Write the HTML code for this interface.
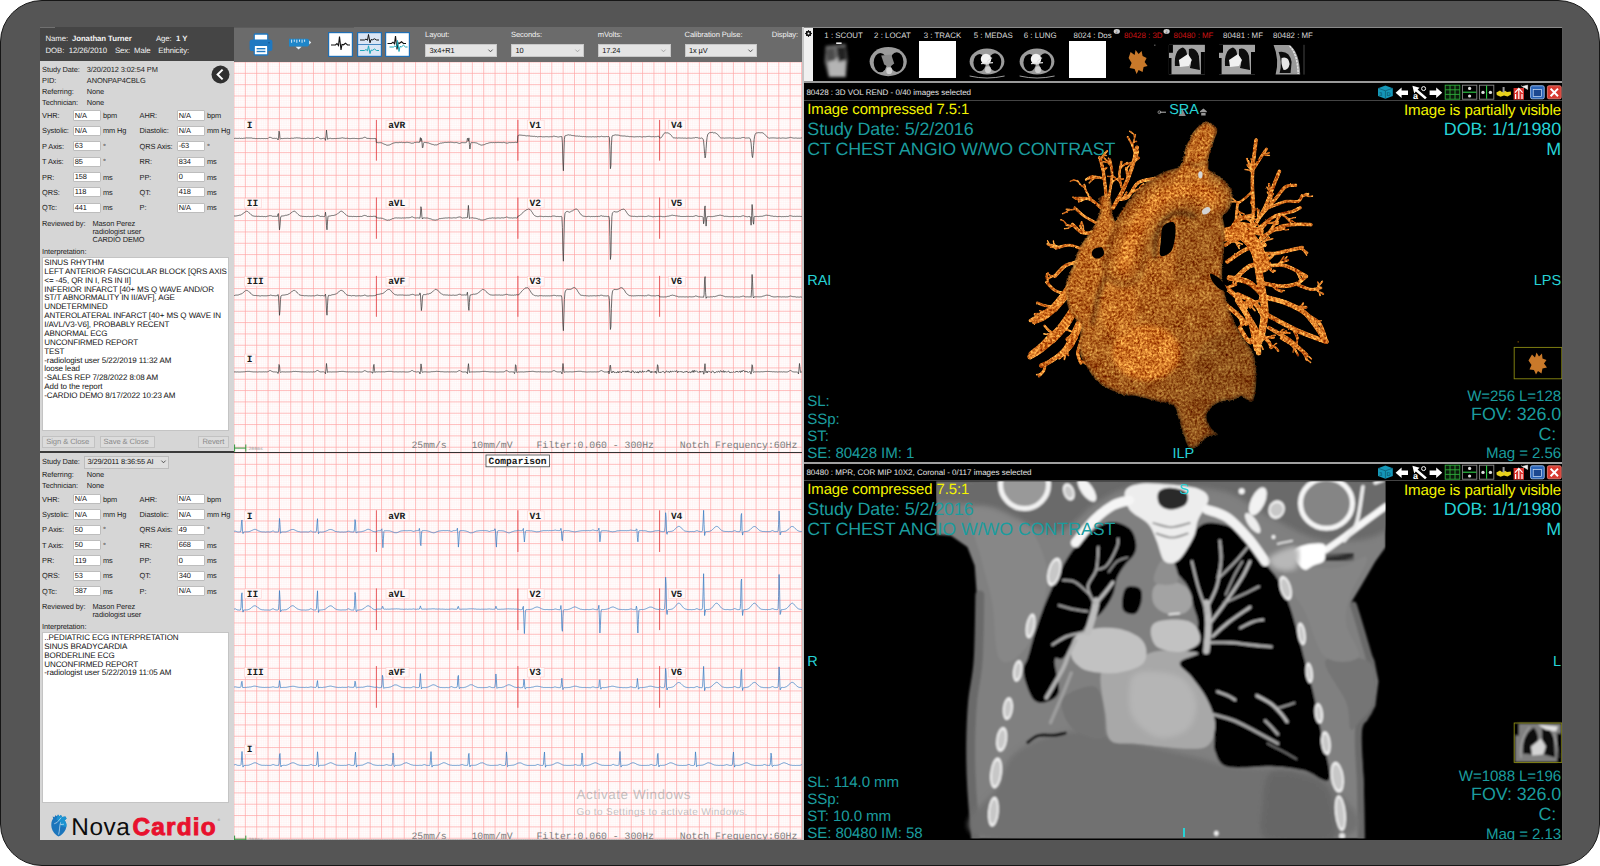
<!DOCTYPE html>
<html lang="en"><head><meta charset="utf-8"><title>NovaCardio ECG viewer</title><style>
html,body{margin:0;padding:0;background:#fff;text-rendering:geometricPrecision;}
body{width:1600px;height:866px;position:relative;overflow:hidden;font-family:"Liberation Sans",sans-serif;}
#frame{position:absolute;left:0;top:0;width:1600px;height:866px;box-sizing:border-box;background:#555;border:1px solid #161616;border-radius:42px;}
.a{position:absolute;}
.t{position:absolute;white-space:pre;line-height:1;font-family:"Liberation Sans",sans-serif;letter-spacing:-0.09px;}
.m{position:absolute;white-space:pre;line-height:1;font-family:"Liberation Mono",monospace;}
svg{display:block;overflow:visible}
svg.c{overflow:hidden}
</style></head><body>
<div id="frame"></div>
<!-- left -->
<div class="a" style="left:40.00px;top:27.00px;width:193.50px;height:34.30px;background:#454545"></div>
<div class="a" style="left:40.00px;top:26.60px;width:14.50px;height:1.00px;background:#707070"></div>
<span class="t" style="left:45.50px;top:35.20px;font-size:7.8px;color:#f4f4f4;">Name:</span>
<span class="t" style="left:72.00px;top:35.20px;font-size:7.8px;color:#f4f4f4;font-weight:bold;letter-spacing:-0.08px;">Jonathan Turner</span>
<span class="t" style="left:156.00px;top:35.20px;font-size:7.8px;color:#f4f4f4;">Age:</span>
<span class="t" style="left:176.00px;top:35.20px;font-size:7.8px;color:#f4f4f4;font-weight:bold;">1 Y</span>
<span class="t" style="left:45.50px;top:47.40px;font-size:7.8px;color:#f4f4f4;">DOB:</span>
<span class="t" style="left:68.80px;top:47.40px;font-size:7.8px;color:#f4f4f4;">12/26/2010</span>
<span class="t" style="left:114.90px;top:47.40px;font-size:7.8px;color:#f4f4f4;">Sex:</span>
<span class="t" style="left:134.00px;top:47.40px;font-size:7.8px;color:#f4f4f4;">Male</span>
<span class="t" style="left:158.30px;top:47.40px;font-size:7.8px;color:#f4f4f4;">Ethnicity:</span>
<div class="a" style="left:40.00px;top:61.30px;width:193.50px;height:778.70px;background:#d6d6d6"></div>
<span class="t" style="left:42.10px;top:65.74px;font-size:7.4px;color:#222;">Study Date:</span>
<span class="t" style="left:86.80px;top:65.74px;font-size:7.4px;color:#222;">3/20/2012 3:02:54 PM</span>
<span class="t" style="left:42.10px;top:76.64px;font-size:7.4px;color:#222;">PID:</span>
<span class="t" style="left:86.80px;top:76.64px;font-size:7.4px;color:#222;">ANONPAP4CBLG</span>
<span class="t" style="left:42.10px;top:87.74px;font-size:7.4px;color:#222;">Referring:</span>
<span class="t" style="left:86.80px;top:87.74px;font-size:7.4px;color:#222;">None</span>
<span class="t" style="left:42.10px;top:98.64px;font-size:7.4px;color:#222;">Technician:</span>
<span class="t" style="left:86.80px;top:98.64px;font-size:7.4px;color:#222;">None</span>
<svg class="a" style="left:211px;top:64.5px" width="19" height="19" viewBox="0 0 19 19"><circle cx="9.5" cy="9.5" r="9" fill="#303030"/><path d="M11.6 4.6 L6.6 9.5 L11.6 14.4" fill="none" stroke="#fff" stroke-width="2"/></svg>
<span class="t" style="left:42.10px;top:112.04px;font-size:7.4px;color:#222;">VHR:</span>
<div class="a" style="left:72.80px;top:110.40px;width:28.60px;height:10.20px;background:#fff;border:1px solid #bdbdbd;box-sizing:border-box;border-radius:1px"></div>
<span class="t" style="left:74.80px;top:111.54px;font-size:7.4px;color:#111;">N/A</span>
<span class="t" style="left:103.00px;top:112.04px;font-size:7.4px;color:#222;">bpm</span>
<span class="t" style="left:139.60px;top:112.04px;font-size:7.4px;color:#222;">AHR:</span>
<div class="a" style="left:176.70px;top:110.40px;width:28.40px;height:10.20px;background:#fff;border:1px solid #bdbdbd;box-sizing:border-box;border-radius:1px"></div>
<span class="t" style="left:178.70px;top:111.54px;font-size:7.4px;color:#111;">N/A</span>
<span class="t" style="left:207.00px;top:112.04px;font-size:7.4px;color:#222;">bpm</span>
<span class="t" style="left:42.10px;top:127.41px;font-size:7.4px;color:#222;">Systolic:</span>
<div class="a" style="left:72.80px;top:125.77px;width:28.60px;height:10.20px;background:#fff;border:1px solid #bdbdbd;box-sizing:border-box;border-radius:1px"></div>
<span class="t" style="left:74.80px;top:126.91px;font-size:7.4px;color:#111;">N/A</span>
<span class="t" style="left:103.00px;top:127.41px;font-size:7.4px;color:#222;">mm Hg</span>
<span class="t" style="left:139.60px;top:127.41px;font-size:7.4px;color:#222;">Diastolic:</span>
<div class="a" style="left:176.70px;top:125.77px;width:28.40px;height:10.20px;background:#fff;border:1px solid #bdbdbd;box-sizing:border-box;border-radius:1px"></div>
<span class="t" style="left:178.70px;top:126.91px;font-size:7.4px;color:#111;">N/A</span>
<span class="t" style="left:207.00px;top:127.41px;font-size:7.4px;color:#222;">mm Hg</span>
<span class="t" style="left:42.10px;top:142.78px;font-size:7.4px;color:#222;">P Axis:</span>
<div class="a" style="left:72.80px;top:141.14px;width:28.60px;height:10.20px;background:#fff;border:1px solid #bdbdbd;box-sizing:border-box;border-radius:1px"></div>
<span class="t" style="left:74.80px;top:142.28px;font-size:7.4px;color:#111;">63</span>
<span class="t" style="left:103.00px;top:142.78px;font-size:7.4px;color:#222;">°</span>
<span class="t" style="left:139.60px;top:142.78px;font-size:7.4px;color:#222;">QRS Axis:</span>
<div class="a" style="left:176.70px;top:141.14px;width:28.40px;height:10.20px;background:#fff;border:1px solid #bdbdbd;box-sizing:border-box;border-radius:1px"></div>
<span class="t" style="left:178.70px;top:142.28px;font-size:7.4px;color:#111;">-63</span>
<span class="t" style="left:207.00px;top:142.78px;font-size:7.4px;color:#222;">°</span>
<span class="t" style="left:42.10px;top:158.15px;font-size:7.4px;color:#222;">T Axis:</span>
<div class="a" style="left:72.80px;top:156.51px;width:28.60px;height:10.20px;background:#fff;border:1px solid #bdbdbd;box-sizing:border-box;border-radius:1px"></div>
<span class="t" style="left:74.80px;top:157.65px;font-size:7.4px;color:#111;">85</span>
<span class="t" style="left:103.00px;top:158.15px;font-size:7.4px;color:#222;">°</span>
<span class="t" style="left:139.60px;top:158.15px;font-size:7.4px;color:#222;">RR:</span>
<div class="a" style="left:176.70px;top:156.51px;width:28.40px;height:10.20px;background:#fff;border:1px solid #bdbdbd;box-sizing:border-box;border-radius:1px"></div>
<span class="t" style="left:178.70px;top:157.65px;font-size:7.4px;color:#111;">834</span>
<span class="t" style="left:207.00px;top:158.15px;font-size:7.4px;color:#222;">ms</span>
<span class="t" style="left:42.10px;top:173.52px;font-size:7.4px;color:#222;">PR:</span>
<div class="a" style="left:72.80px;top:171.88px;width:28.60px;height:10.20px;background:#fff;border:1px solid #bdbdbd;box-sizing:border-box;border-radius:1px"></div>
<span class="t" style="left:74.80px;top:173.02px;font-size:7.4px;color:#111;">158</span>
<span class="t" style="left:103.00px;top:173.52px;font-size:7.4px;color:#222;">ms</span>
<span class="t" style="left:139.60px;top:173.52px;font-size:7.4px;color:#222;">PP:</span>
<div class="a" style="left:176.70px;top:171.88px;width:28.40px;height:10.20px;background:#fff;border:1px solid #bdbdbd;box-sizing:border-box;border-radius:1px"></div>
<span class="t" style="left:178.70px;top:173.02px;font-size:7.4px;color:#111;">0</span>
<span class="t" style="left:207.00px;top:173.52px;font-size:7.4px;color:#222;">ms</span>
<span class="t" style="left:42.10px;top:188.89px;font-size:7.4px;color:#222;">QRS:</span>
<div class="a" style="left:72.80px;top:187.25px;width:28.60px;height:10.20px;background:#fff;border:1px solid #bdbdbd;box-sizing:border-box;border-radius:1px"></div>
<span class="t" style="left:74.80px;top:188.39px;font-size:7.4px;color:#111;">118</span>
<span class="t" style="left:103.00px;top:188.89px;font-size:7.4px;color:#222;">ms</span>
<span class="t" style="left:139.60px;top:188.89px;font-size:7.4px;color:#222;">QT:</span>
<div class="a" style="left:176.70px;top:187.25px;width:28.40px;height:10.20px;background:#fff;border:1px solid #bdbdbd;box-sizing:border-box;border-radius:1px"></div>
<span class="t" style="left:178.70px;top:188.39px;font-size:7.4px;color:#111;">418</span>
<span class="t" style="left:207.00px;top:188.89px;font-size:7.4px;color:#222;">ms</span>
<span class="t" style="left:42.10px;top:204.26px;font-size:7.4px;color:#222;">QTc:</span>
<div class="a" style="left:72.80px;top:202.62px;width:28.60px;height:10.20px;background:#fff;border:1px solid #bdbdbd;box-sizing:border-box;border-radius:1px"></div>
<span class="t" style="left:74.80px;top:203.76px;font-size:7.4px;color:#111;">441</span>
<span class="t" style="left:103.00px;top:204.26px;font-size:7.4px;color:#222;">ms</span>
<span class="t" style="left:139.60px;top:204.26px;font-size:7.4px;color:#222;">P:</span>
<div class="a" style="left:176.70px;top:202.62px;width:28.40px;height:10.20px;background:#fff;border:1px solid #bdbdbd;box-sizing:border-box;border-radius:1px"></div>
<span class="t" style="left:178.70px;top:203.76px;font-size:7.4px;color:#111;">N/A</span>
<span class="t" style="left:207.00px;top:204.26px;font-size:7.4px;color:#222;">ms</span>
<span class="t" style="left:42.10px;top:220.04px;font-size:7.4px;color:#222;">Reviewed by:</span>
<span class="t" style="left:92.50px;top:220.04px;font-size:7.4px;color:#222;">Mason Perez</span>
<span class="t" style="left:92.50px;top:227.94px;font-size:7.4px;color:#222;">radiologist user</span>
<span class="t" style="left:92.50px;top:235.84px;font-size:7.4px;color:#222;">CARDIO DEMO</span>
<span class="t" style="left:42.10px;top:247.74px;font-size:7.4px;color:#222;">Interpretation:</span>
<div class="a" style="left:42.40px;top:257.20px;width:186.80px;height:173.40px;background:#fff;border:1px solid #c4c4c4;box-sizing:border-box"></div>
<span class="t" style="left:44.30px;top:258.93px;font-size:8.0px;color:#111;">SINUS RHYTHM</span>
<span class="t" style="left:44.30px;top:267.81px;font-size:8.0px;color:#111;">LEFT ANTERIOR FASCICULAR BLOCK [QRS AXIS</span>
<span class="t" style="left:44.30px;top:276.69px;font-size:8.0px;color:#111;">&lt;= -45, QR IN I, RS IN II]</span>
<span class="t" style="left:44.30px;top:285.57px;font-size:8.0px;color:#111;">INFERIOR INFARCT [40+ MS Q WAVE AND/OR</span>
<span class="t" style="left:44.30px;top:294.45px;font-size:8.0px;color:#111;">ST/T ABNORMALITY IN II/AVF], AGE</span>
<span class="t" style="left:44.30px;top:303.33px;font-size:8.0px;color:#111;">UNDETERMINED</span>
<span class="t" style="left:44.30px;top:312.21px;font-size:8.0px;color:#111;">ANTEROLATERAL INFARCT [40+ MS Q WAVE IN</span>
<span class="t" style="left:44.30px;top:321.09px;font-size:8.0px;color:#111;">I/AVL/V3-V6], PROBABLY RECENT</span>
<span class="t" style="left:44.30px;top:329.97px;font-size:8.0px;color:#111;">ABNORMAL ECG</span>
<span class="t" style="left:44.30px;top:338.85px;font-size:8.0px;color:#111;">UNCONFIRMED REPORT</span>
<span class="t" style="left:44.30px;top:347.73px;font-size:8.0px;color:#111;">TEST</span>
<span class="t" style="left:44.30px;top:356.61px;font-size:8.0px;color:#111;">-radiologist user 5/22/2019 11:32 AM</span>
<span class="t" style="left:44.30px;top:365.49px;font-size:8.0px;color:#111;">loose lead</span>
<span class="t" style="left:44.30px;top:374.37px;font-size:8.0px;color:#111;">-SALES REP 7/28/2022 8:08 AM</span>
<span class="t" style="left:44.30px;top:383.25px;font-size:8.0px;color:#111;">Add to the report</span>
<span class="t" style="left:44.30px;top:392.13px;font-size:8.0px;color:#111;">-CARDIO DEMO 8/17/2022 10:23 AM</span>
<div class="a" style="left:42.40px;top:435.80px;width:52.80px;height:11.80px;background:#dcdcdc;border:1px solid #c2c2c2;box-sizing:border-box;"></div>
<span class="t" style="left:46.30px;top:437.87px;font-size:7.6px;color:#8a8a8a;">Sign &amp; Close</span>
<div class="a" style="left:99.50px;top:435.80px;width:55.60px;height:11.80px;background:#dcdcdc;border:1px solid #c2c2c2;box-sizing:border-box;"></div>
<span class="t" style="left:103.60px;top:437.87px;font-size:7.6px;color:#8a8a8a;">Save &amp; Close</span>
<div class="a" style="left:198.40px;top:435.80px;width:30.80px;height:11.80px;background:#dcdcdc;border:1px solid #c2c2c2;box-sizing:border-box;"></div>
<span class="t" style="left:202.40px;top:437.87px;font-size:7.6px;color:#8a8a8a;">Revert</span>
<div class="a" style="left:40.00px;top:451.30px;width:193.50px;height:1.80px;background:#3a3a3a"></div>
<span class="t" style="left:42.10px;top:457.74px;font-size:7.4px;color:#222;">Study Date:</span>
<div class="a" style="left:83.50px;top:455.80px;width:85.80px;height:12.90px;background:#dedede;border:1px solid #bcbcbc;box-sizing:border-box"></div>
<span class="t" style="left:87.60px;top:457.74px;font-size:7.4px;color:#111;">3/29/2011 8:36:55 AI</span>
<svg class="a" style="left:160.8px;top:460px" width="5" height="4" viewBox="0 0 5 4"><path d="M0.4 0.6 L2.5 2.8 L4.6 0.6" fill="none" stroke="#333" stroke-width="0.8"/></svg>
<span class="t" style="left:42.10px;top:470.94px;font-size:7.4px;color:#222;">Referring:</span>
<span class="t" style="left:86.80px;top:470.94px;font-size:7.4px;color:#222;">None</span>
<span class="t" style="left:42.10px;top:482.14px;font-size:7.4px;color:#222;">Technician:</span>
<span class="t" style="left:86.80px;top:482.14px;font-size:7.4px;color:#222;">None</span>
<span class="t" style="left:42.10px;top:495.64px;font-size:7.4px;color:#222;">VHR:</span>
<div class="a" style="left:72.80px;top:494.00px;width:28.60px;height:10.20px;background:#fff;border:1px solid #bdbdbd;box-sizing:border-box;border-radius:1px"></div>
<span class="t" style="left:74.80px;top:495.14px;font-size:7.4px;color:#111;">N/A</span>
<span class="t" style="left:103.00px;top:495.64px;font-size:7.4px;color:#222;">bpm</span>
<span class="t" style="left:139.60px;top:495.64px;font-size:7.4px;color:#222;">AHR:</span>
<div class="a" style="left:176.70px;top:494.00px;width:28.40px;height:10.20px;background:#fff;border:1px solid #bdbdbd;box-sizing:border-box;border-radius:1px"></div>
<span class="t" style="left:178.70px;top:495.14px;font-size:7.4px;color:#111;">N/A</span>
<span class="t" style="left:207.00px;top:495.64px;font-size:7.4px;color:#222;">bpm</span>
<span class="t" style="left:42.10px;top:511.01px;font-size:7.4px;color:#222;">Systolic:</span>
<div class="a" style="left:72.80px;top:509.37px;width:28.60px;height:10.20px;background:#fff;border:1px solid #bdbdbd;box-sizing:border-box;border-radius:1px"></div>
<span class="t" style="left:74.80px;top:510.51px;font-size:7.4px;color:#111;">N/A</span>
<span class="t" style="left:103.00px;top:511.01px;font-size:7.4px;color:#222;">mm Hg</span>
<span class="t" style="left:139.60px;top:511.01px;font-size:7.4px;color:#222;">Diastolic:</span>
<div class="a" style="left:176.70px;top:509.37px;width:28.40px;height:10.20px;background:#fff;border:1px solid #bdbdbd;box-sizing:border-box;border-radius:1px"></div>
<span class="t" style="left:178.70px;top:510.51px;font-size:7.4px;color:#111;">N/A</span>
<span class="t" style="left:207.00px;top:511.01px;font-size:7.4px;color:#222;">mm Hg</span>
<span class="t" style="left:42.10px;top:526.38px;font-size:7.4px;color:#222;">P Axis:</span>
<div class="a" style="left:72.80px;top:524.74px;width:28.60px;height:10.20px;background:#fff;border:1px solid #bdbdbd;box-sizing:border-box;border-radius:1px"></div>
<span class="t" style="left:74.80px;top:525.88px;font-size:7.4px;color:#111;">50</span>
<span class="t" style="left:103.00px;top:526.38px;font-size:7.4px;color:#222;">°</span>
<span class="t" style="left:139.60px;top:526.38px;font-size:7.4px;color:#222;">QRS Axis:</span>
<div class="a" style="left:176.70px;top:524.74px;width:28.40px;height:10.20px;background:#fff;border:1px solid #bdbdbd;box-sizing:border-box;border-radius:1px"></div>
<span class="t" style="left:178.70px;top:525.88px;font-size:7.4px;color:#111;">49</span>
<span class="t" style="left:207.00px;top:526.38px;font-size:7.4px;color:#222;">°</span>
<span class="t" style="left:42.10px;top:541.75px;font-size:7.4px;color:#222;">T Axis:</span>
<div class="a" style="left:72.80px;top:540.11px;width:28.60px;height:10.20px;background:#fff;border:1px solid #bdbdbd;box-sizing:border-box;border-radius:1px"></div>
<span class="t" style="left:74.80px;top:541.25px;font-size:7.4px;color:#111;">50</span>
<span class="t" style="left:103.00px;top:541.75px;font-size:7.4px;color:#222;">°</span>
<span class="t" style="left:139.60px;top:541.75px;font-size:7.4px;color:#222;">RR:</span>
<div class="a" style="left:176.70px;top:540.11px;width:28.40px;height:10.20px;background:#fff;border:1px solid #bdbdbd;box-sizing:border-box;border-radius:1px"></div>
<span class="t" style="left:178.70px;top:541.25px;font-size:7.4px;color:#111;">668</span>
<span class="t" style="left:207.00px;top:541.75px;font-size:7.4px;color:#222;">ms</span>
<span class="t" style="left:42.10px;top:557.12px;font-size:7.4px;color:#222;">PR:</span>
<div class="a" style="left:72.80px;top:555.48px;width:28.60px;height:10.20px;background:#fff;border:1px solid #bdbdbd;box-sizing:border-box;border-radius:1px"></div>
<span class="t" style="left:74.80px;top:556.62px;font-size:7.4px;color:#111;">119</span>
<span class="t" style="left:103.00px;top:557.12px;font-size:7.4px;color:#222;">ms</span>
<span class="t" style="left:139.60px;top:557.12px;font-size:7.4px;color:#222;">PP:</span>
<div class="a" style="left:176.70px;top:555.48px;width:28.40px;height:10.20px;background:#fff;border:1px solid #bdbdbd;box-sizing:border-box;border-radius:1px"></div>
<span class="t" style="left:178.70px;top:556.62px;font-size:7.4px;color:#111;">0</span>
<span class="t" style="left:207.00px;top:557.12px;font-size:7.4px;color:#222;">ms</span>
<span class="t" style="left:42.10px;top:572.49px;font-size:7.4px;color:#222;">QRS:</span>
<div class="a" style="left:72.80px;top:570.85px;width:28.60px;height:10.20px;background:#fff;border:1px solid #bdbdbd;box-sizing:border-box;border-radius:1px"></div>
<span class="t" style="left:74.80px;top:571.99px;font-size:7.4px;color:#111;">53</span>
<span class="t" style="left:103.00px;top:572.49px;font-size:7.4px;color:#222;">ms</span>
<span class="t" style="left:139.60px;top:572.49px;font-size:7.4px;color:#222;">QT:</span>
<div class="a" style="left:176.70px;top:570.85px;width:28.40px;height:10.20px;background:#fff;border:1px solid #bdbdbd;box-sizing:border-box;border-radius:1px"></div>
<span class="t" style="left:178.70px;top:571.99px;font-size:7.4px;color:#111;">340</span>
<span class="t" style="left:207.00px;top:572.49px;font-size:7.4px;color:#222;">ms</span>
<span class="t" style="left:42.10px;top:587.86px;font-size:7.4px;color:#222;">QTc:</span>
<div class="a" style="left:72.80px;top:586.22px;width:28.60px;height:10.20px;background:#fff;border:1px solid #bdbdbd;box-sizing:border-box;border-radius:1px"></div>
<span class="t" style="left:74.80px;top:587.36px;font-size:7.4px;color:#111;">387</span>
<span class="t" style="left:103.00px;top:587.86px;font-size:7.4px;color:#222;">ms</span>
<span class="t" style="left:139.60px;top:587.86px;font-size:7.4px;color:#222;">P:</span>
<div class="a" style="left:176.70px;top:586.22px;width:28.40px;height:10.20px;background:#fff;border:1px solid #bdbdbd;box-sizing:border-box;border-radius:1px"></div>
<span class="t" style="left:178.70px;top:587.36px;font-size:7.4px;color:#111;">N/A</span>
<span class="t" style="left:207.00px;top:587.86px;font-size:7.4px;color:#222;">ms</span>
<span class="t" style="left:42.10px;top:602.54px;font-size:7.4px;color:#222;">Reviewed by:</span>
<span class="t" style="left:92.50px;top:602.54px;font-size:7.4px;color:#222;">Mason Perez</span>
<span class="t" style="left:92.50px;top:610.84px;font-size:7.4px;color:#222;">radiologist user</span>
<span class="t" style="left:42.10px;top:622.54px;font-size:7.4px;color:#222;">Interpretation:</span>
<div class="a" style="left:42.40px;top:632.20px;width:186.80px;height:171.10px;background:#fff;border:1px solid #c4c4c4;box-sizing:border-box"></div>
<span class="t" style="left:44.30px;top:633.93px;font-size:8.0px;color:#111;">..PEDIATRIC ECG INTERPRETATION</span>
<span class="t" style="left:44.30px;top:642.81px;font-size:8.0px;color:#111;">SINUS BRADYCARDIA</span>
<span class="t" style="left:44.30px;top:651.69px;font-size:8.0px;color:#111;">BORDERLINE ECG</span>
<span class="t" style="left:44.30px;top:660.57px;font-size:8.0px;color:#111;">UNCONFIRMED REPORT</span>
<span class="t" style="left:44.30px;top:669.45px;font-size:8.0px;color:#111;">-radiologist user 5/22/2019 11:05 AM</span>
<svg class="a" style="left:50px;top:813px" width="18" height="25" viewBox="0 0 18 25"><path d="M5.2 2.2 L7 3.2 L8 1.6 L9.4 3.2 L11 2 L12 4 L15.4 3.6 L16.6 5.4 L14.6 7.6 C16.8 9.6 17 13.6 15.6 16.6 C14.2 19.8 11.4 22.6 8.4 23.6 C5.4 22 2.4 18.6 1.6 14.8 C0.8 11 1.6 7.4 3.2 5.6 L2.6 3.6 L4.6 4.2 Z" fill="#1b75bc"/><path d="M8 1.6 L9.4 3.2 L11 2 L12 4 L15.4 3.6 L16.6 5.4 L14.6 7.6 C16.6 9.6 16.8 12 16.2 14 L11.4 13 L9.6 8.4 L6.4 6.6 Z" fill="#1c93d1"/><path d="M11.2 4.6 L7.2 9.4 L4.2 10.8 M10.6 9.4 C9.4 13 9.8 17 8.6 21.6 M10.4 11.6 L14 11.2" stroke="#e9f3fa" stroke-width="0.6" fill="none"/></svg><span class="t" style="left:71.20px;top:816.05px;font-size:24.4px;color:#0c0c0c;letter-spacing:0.6px;">Nova</span><span class="t" style="left:132.40px;top:816.05px;font-size:24.4px;color:#e8112d;font-weight:bold;letter-spacing:1.2px;-webkit-text-stroke:0.9px #e8112d;">Cardio</span><span class="t" style="left:217.40px;top:819.04px;font-size:3.5px;color:#888;">®</span>
<!-- toolbar -->
<div class="a" style="left:233.50px;top:27.00px;width:568.00px;height:34.60px;background:#6b6b6b"></div>
<div class="a" style="left:233.50px;top:27.00px;width:120.00px;height:1.00px;background:#5c5c5c"></div>
<svg class="a" style="left:248.5px;top:32.5px" width="24" height="23" viewBox="0 0 24 23"><rect x="5.2" y="1" width="13.6" height="7" rx="1" fill="#fff" stroke="#1f78c1" stroke-width="1.3"/><rect x="0.6" y="6.6" width="22.8" height="11.4" rx="2.6" fill="#1f78c1"/><rect x="5.2" y="12.4" width="13.6" height="9.6" rx="1" fill="#fff" stroke="#1f78c1" stroke-width="1.3"/><rect x="7.6" y="15" width="8.8" height="1.4" fill="#1f78c1"/><rect x="7.6" y="17.8" width="8.8" height="1.4" fill="#1f78c1"/><circle cx="20" cy="9.8" r="0.7" fill="#0d4f86"/></svg>
<svg class="a" style="left:288px;top:38px" width="24" height="13" viewBox="0 0 24 13"><path d="M1 0.8 H19.6 L21.2 2 V7.2 L19.6 8.4 H1 Z" fill="#1f86c9"/><path d="M21.2 2.6 L23.2 4.6 L21.2 6.6 Z" fill="#e8f2fa"/><path d="M7.6 8.8 L10.6 11.6 L13.6 8.8 Z" fill="#e8f2fa"/><rect x="3.2" y="1.6" width="0.9" height="3.2" fill="#e8f2fa"/><rect x="5.8" y="1.6" width="0.9" height="2.2" fill="#e8f2fa"/><rect x="8.4" y="1.6" width="0.9" height="3.2" fill="#e8f2fa"/><rect x="11" y="1.6" width="0.9" height="2.2" fill="#e8f2fa"/><rect x="13.6" y="1.6" width="0.9" height="3.2" fill="#e8f2fa"/><rect x="16.2" y="1.6" width="0.9" height="2.2" fill="#e8f2fa"/></svg>
<svg class="a" style="left:327.6px;top:32px" width="25" height="25" viewBox="0 0 25 25"><rect x="0.6" y="0.6" width="23.8" height="23.8" fill="#fff" stroke="#1f6fb5" stroke-width="1.2"/><path d="M3 13 L7.5 13 L9 11.5 L10.5 13.5 L11.5 4.5 L13 18 L14 12.5 L15.5 12.8 L17.5 11.2 L19.5 13 L22 13" fill="none" stroke="#111" stroke-width="1.1"/></svg>
<svg class="a" style="left:356.8px;top:32px" width="25" height="25" viewBox="0 0 25 25"><rect x="0.6" y="0.6" width="23.8" height="23.8" fill="#dbe6f5" stroke="#1f6fb5" stroke-width="1.2"/><line x1="1" y1="12.5" x2="24" y2="12.5" stroke="#1f6fb5" stroke-width="0.8"/><path d="M3 8 L7.5 8 L9 7 L10.5 8.3 L11.5 2.5 L13 10.8 L14 7.6 L15.5 7.8 L17.5 6.8 L19.5 8 L22 8" fill="none" stroke="#111" stroke-width="1"/><path d="M3 18.5 L7.5 18.5 L9 17.5 L10.5 18.8 L11.5 13.8 L13 21.6 L14 18.1 L15.5 18.3 L17.5 17 L19.5 18.5 L22 18.5" fill="none" stroke="#1aa7b8" stroke-width="1"/></svg>
<svg class="a" style="left:385.4px;top:32px" width="25" height="25" viewBox="0 0 25 25"><rect x="0.6" y="0.6" width="23.8" height="23.8" fill="#fff" stroke="#1f6fb5" stroke-width="1.2"/><path d="M2.5 11.5 L6.5 11.5 L8 10.2 L9.5 11.8 L10.5 4 L12 17.5 L13 11 L14.5 11.3 L16.5 9.8 L18.5 11.5 L21 11.5" fill="none" stroke="#111" stroke-width="1.1"/><path d="M4.5 15 L8.5 15 L10 13.8 L11.5 15.3 L12.5 8.5 L14 19.5 L15 14.5 L16.5 14.8 L18.5 13.2 L20.5 15 L22.5 15" fill="none" stroke="#1aa7b8" stroke-width="1"/></svg>
<span class="t" style="left:425.00px;top:31.17px;font-size:7.6px;color:#f2f2f2;">Layout:</span>
<div class="a" style="left:425.00px;top:44.40px;width:72.00px;height:12.70px;background:#e4e4e4;border:1px solid #c8c8c8;box-sizing:border-box"></div>
<span class="t" style="left:429.50px;top:46.64px;font-size:7.4px;color:#111;">3x4+R1</span>
<svg class="a" style="left:487.5px;top:48.8px" width="5" height="4" viewBox="0 0 5 4"><path d="M0.4 0.6 L2.5 2.8 L4.6 0.6" fill="none" stroke="#333" stroke-width="0.8"/></svg>
<span class="t" style="left:511.00px;top:31.17px;font-size:7.6px;color:#f2f2f2;">Seconds:</span>
<div class="a" style="left:511.00px;top:44.40px;width:73.00px;height:12.70px;background:#e4e4e4;border:1px solid #c8c8c8;box-sizing:border-box"></div>
<span class="t" style="left:515.50px;top:46.64px;font-size:7.4px;color:#111;">10</span>
<svg class="a" style="left:574.5px;top:48.8px" width="5" height="4" viewBox="0 0 5 4"><path d="M0.4 0.6 L2.5 2.8 L4.6 0.6" fill="none" stroke="#999" stroke-width="0.8"/></svg>
<span class="t" style="left:597.70px;top:31.17px;font-size:7.6px;color:#f2f2f2;">mVolts:</span>
<div class="a" style="left:597.70px;top:44.40px;width:73.00px;height:12.70px;background:#e4e4e4;border:1px solid #c8c8c8;box-sizing:border-box"></div>
<span class="t" style="left:602.20px;top:46.64px;font-size:7.4px;color:#111;">17.24</span>
<svg class="a" style="left:661.2px;top:48.8px" width="5" height="4" viewBox="0 0 5 4"><path d="M0.4 0.6 L2.5 2.8 L4.6 0.6" fill="none" stroke="#999" stroke-width="0.8"/></svg>
<span class="t" style="left:684.50px;top:31.17px;font-size:7.6px;color:#f2f2f2;">Calibration Pulse:</span>
<div class="a" style="left:684.50px;top:44.40px;width:72.50px;height:12.70px;background:#e4e4e4;border:1px solid #c8c8c8;box-sizing:border-box"></div>
<span class="t" style="left:689.00px;top:46.64px;font-size:7.4px;color:#111;">1x µV</span>
<svg class="a" style="left:747.5px;top:48.8px" width="5" height="4" viewBox="0 0 5 4"><path d="M0.4 0.6 L2.5 2.8 L4.6 0.6" fill="none" stroke="#333" stroke-width="0.8"/></svg>
<span class="t" style="left:771.80px;top:31.17px;font-size:7.6px;color:#f2f2f2;">Display:</span>
<!-- ecg -->
<svg class="a c" style="left:233.6px;top:61.5px" width="568.6" height="390.3" viewBox="0 0 568.6 390.3"><rect x="0" y="0" width="568.6" height="390.3" fill="#fffdfd"/><line x1="2.27" y1="0" x2="2.27" y2="390.3" stroke="#ffeaea" stroke-width="0.3"/><line x1="4.54" y1="0" x2="4.54" y2="390.3" stroke="#ffeaea" stroke-width="0.3"/><line x1="6.81" y1="0" x2="6.81" y2="390.3" stroke="#ffeaea" stroke-width="0.3"/><line x1="9.08" y1="0" x2="9.08" y2="390.3" stroke="#ffeaea" stroke-width="0.3"/><line x1="13.62" y1="0" x2="13.62" y2="390.3" stroke="#ffeaea" stroke-width="0.3"/><line x1="15.89" y1="0" x2="15.89" y2="390.3" stroke="#ffeaea" stroke-width="0.3"/><line x1="18.16" y1="0" x2="18.16" y2="390.3" stroke="#ffeaea" stroke-width="0.3"/><line x1="20.43" y1="0" x2="20.43" y2="390.3" stroke="#ffeaea" stroke-width="0.3"/><line x1="24.97" y1="0" x2="24.97" y2="390.3" stroke="#ffeaea" stroke-width="0.3"/><line x1="27.24" y1="0" x2="27.24" y2="390.3" stroke="#ffeaea" stroke-width="0.3"/><line x1="29.51" y1="0" x2="29.51" y2="390.3" stroke="#ffeaea" stroke-width="0.3"/><line x1="31.78" y1="0" x2="31.78" y2="390.3" stroke="#ffeaea" stroke-width="0.3"/><line x1="36.32" y1="0" x2="36.32" y2="390.3" stroke="#ffeaea" stroke-width="0.3"/><line x1="38.59" y1="0" x2="38.59" y2="390.3" stroke="#ffeaea" stroke-width="0.3"/><line x1="40.86" y1="0" x2="40.86" y2="390.3" stroke="#ffeaea" stroke-width="0.3"/><line x1="43.13" y1="0" x2="43.13" y2="390.3" stroke="#ffeaea" stroke-width="0.3"/><line x1="47.67" y1="0" x2="47.67" y2="390.3" stroke="#ffeaea" stroke-width="0.3"/><line x1="49.94" y1="0" x2="49.94" y2="390.3" stroke="#ffeaea" stroke-width="0.3"/><line x1="52.21" y1="0" x2="52.21" y2="390.3" stroke="#ffeaea" stroke-width="0.3"/><line x1="54.48" y1="0" x2="54.48" y2="390.3" stroke="#ffeaea" stroke-width="0.3"/><line x1="59.02" y1="0" x2="59.02" y2="390.3" stroke="#ffeaea" stroke-width="0.3"/><line x1="61.29" y1="0" x2="61.29" y2="390.3" stroke="#ffeaea" stroke-width="0.3"/><line x1="63.56" y1="0" x2="63.56" y2="390.3" stroke="#ffeaea" stroke-width="0.3"/><line x1="65.83" y1="0" x2="65.83" y2="390.3" stroke="#ffeaea" stroke-width="0.3"/><line x1="70.37" y1="0" x2="70.37" y2="390.3" stroke="#ffeaea" stroke-width="0.3"/><line x1="72.64" y1="0" x2="72.64" y2="390.3" stroke="#ffeaea" stroke-width="0.3"/><line x1="74.91" y1="0" x2="74.91" y2="390.3" stroke="#ffeaea" stroke-width="0.3"/><line x1="77.18" y1="0" x2="77.18" y2="390.3" stroke="#ffeaea" stroke-width="0.3"/><line x1="81.72" y1="0" x2="81.72" y2="390.3" stroke="#ffeaea" stroke-width="0.3"/><line x1="83.99" y1="0" x2="83.99" y2="390.3" stroke="#ffeaea" stroke-width="0.3"/><line x1="86.26" y1="0" x2="86.26" y2="390.3" stroke="#ffeaea" stroke-width="0.3"/><line x1="88.53" y1="0" x2="88.53" y2="390.3" stroke="#ffeaea" stroke-width="0.3"/><line x1="93.07" y1="0" x2="93.07" y2="390.3" stroke="#ffeaea" stroke-width="0.3"/><line x1="95.34" y1="0" x2="95.34" y2="390.3" stroke="#ffeaea" stroke-width="0.3"/><line x1="97.61" y1="0" x2="97.61" y2="390.3" stroke="#ffeaea" stroke-width="0.3"/><line x1="99.88" y1="0" x2="99.88" y2="390.3" stroke="#ffeaea" stroke-width="0.3"/><line x1="104.42" y1="0" x2="104.42" y2="390.3" stroke="#ffeaea" stroke-width="0.3"/><line x1="106.69" y1="0" x2="106.69" y2="390.3" stroke="#ffeaea" stroke-width="0.3"/><line x1="108.96" y1="0" x2="108.96" y2="390.3" stroke="#ffeaea" stroke-width="0.3"/><line x1="111.23" y1="0" x2="111.23" y2="390.3" stroke="#ffeaea" stroke-width="0.3"/><line x1="115.77" y1="0" x2="115.77" y2="390.3" stroke="#ffeaea" stroke-width="0.3"/><line x1="118.04" y1="0" x2="118.04" y2="390.3" stroke="#ffeaea" stroke-width="0.3"/><line x1="120.31" y1="0" x2="120.31" y2="390.3" stroke="#ffeaea" stroke-width="0.3"/><line x1="122.58" y1="0" x2="122.58" y2="390.3" stroke="#ffeaea" stroke-width="0.3"/><line x1="127.12" y1="0" x2="127.12" y2="390.3" stroke="#ffeaea" stroke-width="0.3"/><line x1="129.39" y1="0" x2="129.39" y2="390.3" stroke="#ffeaea" stroke-width="0.3"/><line x1="131.66" y1="0" x2="131.66" y2="390.3" stroke="#ffeaea" stroke-width="0.3"/><line x1="133.93" y1="0" x2="133.93" y2="390.3" stroke="#ffeaea" stroke-width="0.3"/><line x1="138.47" y1="0" x2="138.47" y2="390.3" stroke="#ffeaea" stroke-width="0.3"/><line x1="140.74" y1="0" x2="140.74" y2="390.3" stroke="#ffeaea" stroke-width="0.3"/><line x1="143.01" y1="0" x2="143.01" y2="390.3" stroke="#ffeaea" stroke-width="0.3"/><line x1="145.28" y1="0" x2="145.28" y2="390.3" stroke="#ffeaea" stroke-width="0.3"/><line x1="149.82" y1="0" x2="149.82" y2="390.3" stroke="#ffeaea" stroke-width="0.3"/><line x1="152.09" y1="0" x2="152.09" y2="390.3" stroke="#ffeaea" stroke-width="0.3"/><line x1="154.36" y1="0" x2="154.36" y2="390.3" stroke="#ffeaea" stroke-width="0.3"/><line x1="156.63" y1="0" x2="156.63" y2="390.3" stroke="#ffeaea" stroke-width="0.3"/><line x1="161.17" y1="0" x2="161.17" y2="390.3" stroke="#ffeaea" stroke-width="0.3"/><line x1="163.44" y1="0" x2="163.44" y2="390.3" stroke="#ffeaea" stroke-width="0.3"/><line x1="165.71" y1="0" x2="165.71" y2="390.3" stroke="#ffeaea" stroke-width="0.3"/><line x1="167.98" y1="0" x2="167.98" y2="390.3" stroke="#ffeaea" stroke-width="0.3"/><line x1="172.52" y1="0" x2="172.52" y2="390.3" stroke="#ffeaea" stroke-width="0.3"/><line x1="174.79" y1="0" x2="174.79" y2="390.3" stroke="#ffeaea" stroke-width="0.3"/><line x1="177.06" y1="0" x2="177.06" y2="390.3" stroke="#ffeaea" stroke-width="0.3"/><line x1="179.33" y1="0" x2="179.33" y2="390.3" stroke="#ffeaea" stroke-width="0.3"/><line x1="183.87" y1="0" x2="183.87" y2="390.3" stroke="#ffeaea" stroke-width="0.3"/><line x1="186.14" y1="0" x2="186.14" y2="390.3" stroke="#ffeaea" stroke-width="0.3"/><line x1="188.41" y1="0" x2="188.41" y2="390.3" stroke="#ffeaea" stroke-width="0.3"/><line x1="190.68" y1="0" x2="190.68" y2="390.3" stroke="#ffeaea" stroke-width="0.3"/><line x1="195.22" y1="0" x2="195.22" y2="390.3" stroke="#ffeaea" stroke-width="0.3"/><line x1="197.49" y1="0" x2="197.49" y2="390.3" stroke="#ffeaea" stroke-width="0.3"/><line x1="199.76" y1="0" x2="199.76" y2="390.3" stroke="#ffeaea" stroke-width="0.3"/><line x1="202.03" y1="0" x2="202.03" y2="390.3" stroke="#ffeaea" stroke-width="0.3"/><line x1="206.57" y1="0" x2="206.57" y2="390.3" stroke="#ffeaea" stroke-width="0.3"/><line x1="208.84" y1="0" x2="208.84" y2="390.3" stroke="#ffeaea" stroke-width="0.3"/><line x1="211.11" y1="0" x2="211.11" y2="390.3" stroke="#ffeaea" stroke-width="0.3"/><line x1="213.38" y1="0" x2="213.38" y2="390.3" stroke="#ffeaea" stroke-width="0.3"/><line x1="217.92" y1="0" x2="217.92" y2="390.3" stroke="#ffeaea" stroke-width="0.3"/><line x1="220.19" y1="0" x2="220.19" y2="390.3" stroke="#ffeaea" stroke-width="0.3"/><line x1="222.46" y1="0" x2="222.46" y2="390.3" stroke="#ffeaea" stroke-width="0.3"/><line x1="224.73" y1="0" x2="224.73" y2="390.3" stroke="#ffeaea" stroke-width="0.3"/><line x1="229.27" y1="0" x2="229.27" y2="390.3" stroke="#ffeaea" stroke-width="0.3"/><line x1="231.54" y1="0" x2="231.54" y2="390.3" stroke="#ffeaea" stroke-width="0.3"/><line x1="233.81" y1="0" x2="233.81" y2="390.3" stroke="#ffeaea" stroke-width="0.3"/><line x1="236.08" y1="0" x2="236.08" y2="390.3" stroke="#ffeaea" stroke-width="0.3"/><line x1="240.62" y1="0" x2="240.62" y2="390.3" stroke="#ffeaea" stroke-width="0.3"/><line x1="242.89" y1="0" x2="242.89" y2="390.3" stroke="#ffeaea" stroke-width="0.3"/><line x1="245.16" y1="0" x2="245.16" y2="390.3" stroke="#ffeaea" stroke-width="0.3"/><line x1="247.43" y1="0" x2="247.43" y2="390.3" stroke="#ffeaea" stroke-width="0.3"/><line x1="251.97" y1="0" x2="251.97" y2="390.3" stroke="#ffeaea" stroke-width="0.3"/><line x1="254.24" y1="0" x2="254.24" y2="390.3" stroke="#ffeaea" stroke-width="0.3"/><line x1="256.51" y1="0" x2="256.51" y2="390.3" stroke="#ffeaea" stroke-width="0.3"/><line x1="258.78" y1="0" x2="258.78" y2="390.3" stroke="#ffeaea" stroke-width="0.3"/><line x1="263.32" y1="0" x2="263.32" y2="390.3" stroke="#ffeaea" stroke-width="0.3"/><line x1="265.59" y1="0" x2="265.59" y2="390.3" stroke="#ffeaea" stroke-width="0.3"/><line x1="267.86" y1="0" x2="267.86" y2="390.3" stroke="#ffeaea" stroke-width="0.3"/><line x1="270.13" y1="0" x2="270.13" y2="390.3" stroke="#ffeaea" stroke-width="0.3"/><line x1="274.67" y1="0" x2="274.67" y2="390.3" stroke="#ffeaea" stroke-width="0.3"/><line x1="276.94" y1="0" x2="276.94" y2="390.3" stroke="#ffeaea" stroke-width="0.3"/><line x1="279.21" y1="0" x2="279.21" y2="390.3" stroke="#ffeaea" stroke-width="0.3"/><line x1="281.48" y1="0" x2="281.48" y2="390.3" stroke="#ffeaea" stroke-width="0.3"/><line x1="286.02" y1="0" x2="286.02" y2="390.3" stroke="#ffeaea" stroke-width="0.3"/><line x1="288.29" y1="0" x2="288.29" y2="390.3" stroke="#ffeaea" stroke-width="0.3"/><line x1="290.56" y1="0" x2="290.56" y2="390.3" stroke="#ffeaea" stroke-width="0.3"/><line x1="292.83" y1="0" x2="292.83" y2="390.3" stroke="#ffeaea" stroke-width="0.3"/><line x1="297.37" y1="0" x2="297.37" y2="390.3" stroke="#ffeaea" stroke-width="0.3"/><line x1="299.64" y1="0" x2="299.64" y2="390.3" stroke="#ffeaea" stroke-width="0.3"/><line x1="301.91" y1="0" x2="301.91" y2="390.3" stroke="#ffeaea" stroke-width="0.3"/><line x1="304.18" y1="0" x2="304.18" y2="390.3" stroke="#ffeaea" stroke-width="0.3"/><line x1="308.72" y1="0" x2="308.72" y2="390.3" stroke="#ffeaea" stroke-width="0.3"/><line x1="310.99" y1="0" x2="310.99" y2="390.3" stroke="#ffeaea" stroke-width="0.3"/><line x1="313.26" y1="0" x2="313.26" y2="390.3" stroke="#ffeaea" stroke-width="0.3"/><line x1="315.53" y1="0" x2="315.53" y2="390.3" stroke="#ffeaea" stroke-width="0.3"/><line x1="320.07" y1="0" x2="320.07" y2="390.3" stroke="#ffeaea" stroke-width="0.3"/><line x1="322.34" y1="0" x2="322.34" y2="390.3" stroke="#ffeaea" stroke-width="0.3"/><line x1="324.61" y1="0" x2="324.61" y2="390.3" stroke="#ffeaea" stroke-width="0.3"/><line x1="326.88" y1="0" x2="326.88" y2="390.3" stroke="#ffeaea" stroke-width="0.3"/><line x1="331.42" y1="0" x2="331.42" y2="390.3" stroke="#ffeaea" stroke-width="0.3"/><line x1="333.69" y1="0" x2="333.69" y2="390.3" stroke="#ffeaea" stroke-width="0.3"/><line x1="335.96" y1="0" x2="335.96" y2="390.3" stroke="#ffeaea" stroke-width="0.3"/><line x1="338.23" y1="0" x2="338.23" y2="390.3" stroke="#ffeaea" stroke-width="0.3"/><line x1="342.77" y1="0" x2="342.77" y2="390.3" stroke="#ffeaea" stroke-width="0.3"/><line x1="345.04" y1="0" x2="345.04" y2="390.3" stroke="#ffeaea" stroke-width="0.3"/><line x1="347.31" y1="0" x2="347.31" y2="390.3" stroke="#ffeaea" stroke-width="0.3"/><line x1="349.58" y1="0" x2="349.58" y2="390.3" stroke="#ffeaea" stroke-width="0.3"/><line x1="354.12" y1="0" x2="354.12" y2="390.3" stroke="#ffeaea" stroke-width="0.3"/><line x1="356.39" y1="0" x2="356.39" y2="390.3" stroke="#ffeaea" stroke-width="0.3"/><line x1="358.66" y1="0" x2="358.66" y2="390.3" stroke="#ffeaea" stroke-width="0.3"/><line x1="360.93" y1="0" x2="360.93" y2="390.3" stroke="#ffeaea" stroke-width="0.3"/><line x1="365.47" y1="0" x2="365.47" y2="390.3" stroke="#ffeaea" stroke-width="0.3"/><line x1="367.74" y1="0" x2="367.74" y2="390.3" stroke="#ffeaea" stroke-width="0.3"/><line x1="370.01" y1="0" x2="370.01" y2="390.3" stroke="#ffeaea" stroke-width="0.3"/><line x1="372.28" y1="0" x2="372.28" y2="390.3" stroke="#ffeaea" stroke-width="0.3"/><line x1="376.82" y1="0" x2="376.82" y2="390.3" stroke="#ffeaea" stroke-width="0.3"/><line x1="379.09" y1="0" x2="379.09" y2="390.3" stroke="#ffeaea" stroke-width="0.3"/><line x1="381.36" y1="0" x2="381.36" y2="390.3" stroke="#ffeaea" stroke-width="0.3"/><line x1="383.63" y1="0" x2="383.63" y2="390.3" stroke="#ffeaea" stroke-width="0.3"/><line x1="388.17" y1="0" x2="388.17" y2="390.3" stroke="#ffeaea" stroke-width="0.3"/><line x1="390.44" y1="0" x2="390.44" y2="390.3" stroke="#ffeaea" stroke-width="0.3"/><line x1="392.71" y1="0" x2="392.71" y2="390.3" stroke="#ffeaea" stroke-width="0.3"/><line x1="394.98" y1="0" x2="394.98" y2="390.3" stroke="#ffeaea" stroke-width="0.3"/><line x1="399.52" y1="0" x2="399.52" y2="390.3" stroke="#ffeaea" stroke-width="0.3"/><line x1="401.79" y1="0" x2="401.79" y2="390.3" stroke="#ffeaea" stroke-width="0.3"/><line x1="404.06" y1="0" x2="404.06" y2="390.3" stroke="#ffeaea" stroke-width="0.3"/><line x1="406.33" y1="0" x2="406.33" y2="390.3" stroke="#ffeaea" stroke-width="0.3"/><line x1="410.87" y1="0" x2="410.87" y2="390.3" stroke="#ffeaea" stroke-width="0.3"/><line x1="413.14" y1="0" x2="413.14" y2="390.3" stroke="#ffeaea" stroke-width="0.3"/><line x1="415.41" y1="0" x2="415.41" y2="390.3" stroke="#ffeaea" stroke-width="0.3"/><line x1="417.68" y1="0" x2="417.68" y2="390.3" stroke="#ffeaea" stroke-width="0.3"/><line x1="422.22" y1="0" x2="422.22" y2="390.3" stroke="#ffeaea" stroke-width="0.3"/><line x1="424.49" y1="0" x2="424.49" y2="390.3" stroke="#ffeaea" stroke-width="0.3"/><line x1="426.76" y1="0" x2="426.76" y2="390.3" stroke="#ffeaea" stroke-width="0.3"/><line x1="429.03" y1="0" x2="429.03" y2="390.3" stroke="#ffeaea" stroke-width="0.3"/><line x1="433.57" y1="0" x2="433.57" y2="390.3" stroke="#ffeaea" stroke-width="0.3"/><line x1="435.84" y1="0" x2="435.84" y2="390.3" stroke="#ffeaea" stroke-width="0.3"/><line x1="438.11" y1="0" x2="438.11" y2="390.3" stroke="#ffeaea" stroke-width="0.3"/><line x1="440.38" y1="0" x2="440.38" y2="390.3" stroke="#ffeaea" stroke-width="0.3"/><line x1="444.92" y1="0" x2="444.92" y2="390.3" stroke="#ffeaea" stroke-width="0.3"/><line x1="447.19" y1="0" x2="447.19" y2="390.3" stroke="#ffeaea" stroke-width="0.3"/><line x1="449.46" y1="0" x2="449.46" y2="390.3" stroke="#ffeaea" stroke-width="0.3"/><line x1="451.73" y1="0" x2="451.73" y2="390.3" stroke="#ffeaea" stroke-width="0.3"/><line x1="456.27" y1="0" x2="456.27" y2="390.3" stroke="#ffeaea" stroke-width="0.3"/><line x1="458.54" y1="0" x2="458.54" y2="390.3" stroke="#ffeaea" stroke-width="0.3"/><line x1="460.81" y1="0" x2="460.81" y2="390.3" stroke="#ffeaea" stroke-width="0.3"/><line x1="463.08" y1="0" x2="463.08" y2="390.3" stroke="#ffeaea" stroke-width="0.3"/><line x1="467.62" y1="0" x2="467.62" y2="390.3" stroke="#ffeaea" stroke-width="0.3"/><line x1="469.89" y1="0" x2="469.89" y2="390.3" stroke="#ffeaea" stroke-width="0.3"/><line x1="472.16" y1="0" x2="472.16" y2="390.3" stroke="#ffeaea" stroke-width="0.3"/><line x1="474.43" y1="0" x2="474.43" y2="390.3" stroke="#ffeaea" stroke-width="0.3"/><line x1="478.97" y1="0" x2="478.97" y2="390.3" stroke="#ffeaea" stroke-width="0.3"/><line x1="481.24" y1="0" x2="481.24" y2="390.3" stroke="#ffeaea" stroke-width="0.3"/><line x1="483.51" y1="0" x2="483.51" y2="390.3" stroke="#ffeaea" stroke-width="0.3"/><line x1="485.78" y1="0" x2="485.78" y2="390.3" stroke="#ffeaea" stroke-width="0.3"/><line x1="490.32" y1="0" x2="490.32" y2="390.3" stroke="#ffeaea" stroke-width="0.3"/><line x1="492.59" y1="0" x2="492.59" y2="390.3" stroke="#ffeaea" stroke-width="0.3"/><line x1="494.86" y1="0" x2="494.86" y2="390.3" stroke="#ffeaea" stroke-width="0.3"/><line x1="497.13" y1="0" x2="497.13" y2="390.3" stroke="#ffeaea" stroke-width="0.3"/><line x1="501.67" y1="0" x2="501.67" y2="390.3" stroke="#ffeaea" stroke-width="0.3"/><line x1="503.94" y1="0" x2="503.94" y2="390.3" stroke="#ffeaea" stroke-width="0.3"/><line x1="506.21" y1="0" x2="506.21" y2="390.3" stroke="#ffeaea" stroke-width="0.3"/><line x1="508.48" y1="0" x2="508.48" y2="390.3" stroke="#ffeaea" stroke-width="0.3"/><line x1="513.02" y1="0" x2="513.02" y2="390.3" stroke="#ffeaea" stroke-width="0.3"/><line x1="515.29" y1="0" x2="515.29" y2="390.3" stroke="#ffeaea" stroke-width="0.3"/><line x1="517.56" y1="0" x2="517.56" y2="390.3" stroke="#ffeaea" stroke-width="0.3"/><line x1="519.83" y1="0" x2="519.83" y2="390.3" stroke="#ffeaea" stroke-width="0.3"/><line x1="524.37" y1="0" x2="524.37" y2="390.3" stroke="#ffeaea" stroke-width="0.3"/><line x1="526.64" y1="0" x2="526.64" y2="390.3" stroke="#ffeaea" stroke-width="0.3"/><line x1="528.91" y1="0" x2="528.91" y2="390.3" stroke="#ffeaea" stroke-width="0.3"/><line x1="531.18" y1="0" x2="531.18" y2="390.3" stroke="#ffeaea" stroke-width="0.3"/><line x1="535.72" y1="0" x2="535.72" y2="390.3" stroke="#ffeaea" stroke-width="0.3"/><line x1="537.99" y1="0" x2="537.99" y2="390.3" stroke="#ffeaea" stroke-width="0.3"/><line x1="540.26" y1="0" x2="540.26" y2="390.3" stroke="#ffeaea" stroke-width="0.3"/><line x1="542.53" y1="0" x2="542.53" y2="390.3" stroke="#ffeaea" stroke-width="0.3"/><line x1="547.07" y1="0" x2="547.07" y2="390.3" stroke="#ffeaea" stroke-width="0.3"/><line x1="549.34" y1="0" x2="549.34" y2="390.3" stroke="#ffeaea" stroke-width="0.3"/><line x1="551.61" y1="0" x2="551.61" y2="390.3" stroke="#ffeaea" stroke-width="0.3"/><line x1="553.88" y1="0" x2="553.88" y2="390.3" stroke="#ffeaea" stroke-width="0.3"/><line x1="558.42" y1="0" x2="558.42" y2="390.3" stroke="#ffeaea" stroke-width="0.3"/><line x1="560.69" y1="0" x2="560.69" y2="390.3" stroke="#ffeaea" stroke-width="0.3"/><line x1="562.96" y1="0" x2="562.96" y2="390.3" stroke="#ffeaea" stroke-width="0.3"/><line x1="565.23" y1="0" x2="565.23" y2="390.3" stroke="#ffeaea" stroke-width="0.3"/><line x1="0" y1="2.27" x2="568.6" y2="2.27" stroke="#ffeaea" stroke-width="0.3"/><line x1="0" y1="4.53" x2="568.6" y2="4.53" stroke="#ffeaea" stroke-width="0.3"/><line x1="0" y1="6.80" x2="568.6" y2="6.80" stroke="#ffeaea" stroke-width="0.3"/><line x1="0" y1="9.06" x2="568.6" y2="9.06" stroke="#ffeaea" stroke-width="0.3"/><line x1="0" y1="13.60" x2="568.6" y2="13.60" stroke="#ffeaea" stroke-width="0.3"/><line x1="0" y1="15.86" x2="568.6" y2="15.86" stroke="#ffeaea" stroke-width="0.3"/><line x1="0" y1="18.13" x2="568.6" y2="18.13" stroke="#ffeaea" stroke-width="0.3"/><line x1="0" y1="20.39" x2="568.6" y2="20.39" stroke="#ffeaea" stroke-width="0.3"/><line x1="0" y1="24.93" x2="568.6" y2="24.93" stroke="#ffeaea" stroke-width="0.3"/><line x1="0" y1="27.19" x2="568.6" y2="27.19" stroke="#ffeaea" stroke-width="0.3"/><line x1="0" y1="29.46" x2="568.6" y2="29.46" stroke="#ffeaea" stroke-width="0.3"/><line x1="0" y1="31.72" x2="568.6" y2="31.72" stroke="#ffeaea" stroke-width="0.3"/><line x1="0" y1="36.26" x2="568.6" y2="36.26" stroke="#ffeaea" stroke-width="0.3"/><line x1="0" y1="38.52" x2="568.6" y2="38.52" stroke="#ffeaea" stroke-width="0.3"/><line x1="0" y1="40.79" x2="568.6" y2="40.79" stroke="#ffeaea" stroke-width="0.3"/><line x1="0" y1="43.05" x2="568.6" y2="43.05" stroke="#ffeaea" stroke-width="0.3"/><line x1="0" y1="47.59" x2="568.6" y2="47.59" stroke="#ffeaea" stroke-width="0.3"/><line x1="0" y1="49.85" x2="568.6" y2="49.85" stroke="#ffeaea" stroke-width="0.3"/><line x1="0" y1="52.12" x2="568.6" y2="52.12" stroke="#ffeaea" stroke-width="0.3"/><line x1="0" y1="54.38" x2="568.6" y2="54.38" stroke="#ffeaea" stroke-width="0.3"/><line x1="0" y1="58.92" x2="568.6" y2="58.92" stroke="#ffeaea" stroke-width="0.3"/><line x1="0" y1="61.18" x2="568.6" y2="61.18" stroke="#ffeaea" stroke-width="0.3"/><line x1="0" y1="63.45" x2="568.6" y2="63.45" stroke="#ffeaea" stroke-width="0.3"/><line x1="0" y1="65.71" x2="568.6" y2="65.71" stroke="#ffeaea" stroke-width="0.3"/><line x1="0" y1="70.25" x2="568.6" y2="70.25" stroke="#ffeaea" stroke-width="0.3"/><line x1="0" y1="72.51" x2="568.6" y2="72.51" stroke="#ffeaea" stroke-width="0.3"/><line x1="0" y1="74.78" x2="568.6" y2="74.78" stroke="#ffeaea" stroke-width="0.3"/><line x1="0" y1="77.04" x2="568.6" y2="77.04" stroke="#ffeaea" stroke-width="0.3"/><line x1="0" y1="81.58" x2="568.6" y2="81.58" stroke="#ffeaea" stroke-width="0.3"/><line x1="0" y1="83.84" x2="568.6" y2="83.84" stroke="#ffeaea" stroke-width="0.3"/><line x1="0" y1="86.11" x2="568.6" y2="86.11" stroke="#ffeaea" stroke-width="0.3"/><line x1="0" y1="88.37" x2="568.6" y2="88.37" stroke="#ffeaea" stroke-width="0.3"/><line x1="0" y1="92.91" x2="568.6" y2="92.91" stroke="#ffeaea" stroke-width="0.3"/><line x1="0" y1="95.17" x2="568.6" y2="95.17" stroke="#ffeaea" stroke-width="0.3"/><line x1="0" y1="97.44" x2="568.6" y2="97.44" stroke="#ffeaea" stroke-width="0.3"/><line x1="0" y1="99.70" x2="568.6" y2="99.70" stroke="#ffeaea" stroke-width="0.3"/><line x1="0" y1="104.24" x2="568.6" y2="104.24" stroke="#ffeaea" stroke-width="0.3"/><line x1="0" y1="106.50" x2="568.6" y2="106.50" stroke="#ffeaea" stroke-width="0.3"/><line x1="0" y1="108.77" x2="568.6" y2="108.77" stroke="#ffeaea" stroke-width="0.3"/><line x1="0" y1="111.03" x2="568.6" y2="111.03" stroke="#ffeaea" stroke-width="0.3"/><line x1="0" y1="115.57" x2="568.6" y2="115.57" stroke="#ffeaea" stroke-width="0.3"/><line x1="0" y1="117.83" x2="568.6" y2="117.83" stroke="#ffeaea" stroke-width="0.3"/><line x1="0" y1="120.10" x2="568.6" y2="120.10" stroke="#ffeaea" stroke-width="0.3"/><line x1="0" y1="122.36" x2="568.6" y2="122.36" stroke="#ffeaea" stroke-width="0.3"/><line x1="0" y1="126.90" x2="568.6" y2="126.90" stroke="#ffeaea" stroke-width="0.3"/><line x1="0" y1="129.16" x2="568.6" y2="129.16" stroke="#ffeaea" stroke-width="0.3"/><line x1="0" y1="131.43" x2="568.6" y2="131.43" stroke="#ffeaea" stroke-width="0.3"/><line x1="0" y1="133.69" x2="568.6" y2="133.69" stroke="#ffeaea" stroke-width="0.3"/><line x1="0" y1="138.23" x2="568.6" y2="138.23" stroke="#ffeaea" stroke-width="0.3"/><line x1="0" y1="140.49" x2="568.6" y2="140.49" stroke="#ffeaea" stroke-width="0.3"/><line x1="0" y1="142.76" x2="568.6" y2="142.76" stroke="#ffeaea" stroke-width="0.3"/><line x1="0" y1="145.02" x2="568.6" y2="145.02" stroke="#ffeaea" stroke-width="0.3"/><line x1="0" y1="149.56" x2="568.6" y2="149.56" stroke="#ffeaea" stroke-width="0.3"/><line x1="0" y1="151.82" x2="568.6" y2="151.82" stroke="#ffeaea" stroke-width="0.3"/><line x1="0" y1="154.09" x2="568.6" y2="154.09" stroke="#ffeaea" stroke-width="0.3"/><line x1="0" y1="156.35" x2="568.6" y2="156.35" stroke="#ffeaea" stroke-width="0.3"/><line x1="0" y1="160.89" x2="568.6" y2="160.89" stroke="#ffeaea" stroke-width="0.3"/><line x1="0" y1="163.15" x2="568.6" y2="163.15" stroke="#ffeaea" stroke-width="0.3"/><line x1="0" y1="165.42" x2="568.6" y2="165.42" stroke="#ffeaea" stroke-width="0.3"/><line x1="0" y1="167.68" x2="568.6" y2="167.68" stroke="#ffeaea" stroke-width="0.3"/><line x1="0" y1="172.22" x2="568.6" y2="172.22" stroke="#ffeaea" stroke-width="0.3"/><line x1="0" y1="174.48" x2="568.6" y2="174.48" stroke="#ffeaea" stroke-width="0.3"/><line x1="0" y1="176.75" x2="568.6" y2="176.75" stroke="#ffeaea" stroke-width="0.3"/><line x1="0" y1="179.01" x2="568.6" y2="179.01" stroke="#ffeaea" stroke-width="0.3"/><line x1="0" y1="183.55" x2="568.6" y2="183.55" stroke="#ffeaea" stroke-width="0.3"/><line x1="0" y1="185.81" x2="568.6" y2="185.81" stroke="#ffeaea" stroke-width="0.3"/><line x1="0" y1="188.08" x2="568.6" y2="188.08" stroke="#ffeaea" stroke-width="0.3"/><line x1="0" y1="190.34" x2="568.6" y2="190.34" stroke="#ffeaea" stroke-width="0.3"/><line x1="0" y1="194.88" x2="568.6" y2="194.88" stroke="#ffeaea" stroke-width="0.3"/><line x1="0" y1="197.14" x2="568.6" y2="197.14" stroke="#ffeaea" stroke-width="0.3"/><line x1="0" y1="199.41" x2="568.6" y2="199.41" stroke="#ffeaea" stroke-width="0.3"/><line x1="0" y1="201.67" x2="568.6" y2="201.67" stroke="#ffeaea" stroke-width="0.3"/><line x1="0" y1="206.21" x2="568.6" y2="206.21" stroke="#ffeaea" stroke-width="0.3"/><line x1="0" y1="208.47" x2="568.6" y2="208.47" stroke="#ffeaea" stroke-width="0.3"/><line x1="0" y1="210.74" x2="568.6" y2="210.74" stroke="#ffeaea" stroke-width="0.3"/><line x1="0" y1="213.00" x2="568.6" y2="213.00" stroke="#ffeaea" stroke-width="0.3"/><line x1="0" y1="217.54" x2="568.6" y2="217.54" stroke="#ffeaea" stroke-width="0.3"/><line x1="0" y1="219.80" x2="568.6" y2="219.80" stroke="#ffeaea" stroke-width="0.3"/><line x1="0" y1="222.07" x2="568.6" y2="222.07" stroke="#ffeaea" stroke-width="0.3"/><line x1="0" y1="224.33" x2="568.6" y2="224.33" stroke="#ffeaea" stroke-width="0.3"/><line x1="0" y1="228.87" x2="568.6" y2="228.87" stroke="#ffeaea" stroke-width="0.3"/><line x1="0" y1="231.13" x2="568.6" y2="231.13" stroke="#ffeaea" stroke-width="0.3"/><line x1="0" y1="233.40" x2="568.6" y2="233.40" stroke="#ffeaea" stroke-width="0.3"/><line x1="0" y1="235.66" x2="568.6" y2="235.66" stroke="#ffeaea" stroke-width="0.3"/><line x1="0" y1="240.20" x2="568.6" y2="240.20" stroke="#ffeaea" stroke-width="0.3"/><line x1="0" y1="242.46" x2="568.6" y2="242.46" stroke="#ffeaea" stroke-width="0.3"/><line x1="0" y1="244.73" x2="568.6" y2="244.73" stroke="#ffeaea" stroke-width="0.3"/><line x1="0" y1="246.99" x2="568.6" y2="246.99" stroke="#ffeaea" stroke-width="0.3"/><line x1="0" y1="251.53" x2="568.6" y2="251.53" stroke="#ffeaea" stroke-width="0.3"/><line x1="0" y1="253.79" x2="568.6" y2="253.79" stroke="#ffeaea" stroke-width="0.3"/><line x1="0" y1="256.06" x2="568.6" y2="256.06" stroke="#ffeaea" stroke-width="0.3"/><line x1="0" y1="258.32" x2="568.6" y2="258.32" stroke="#ffeaea" stroke-width="0.3"/><line x1="0" y1="262.86" x2="568.6" y2="262.86" stroke="#ffeaea" stroke-width="0.3"/><line x1="0" y1="265.12" x2="568.6" y2="265.12" stroke="#ffeaea" stroke-width="0.3"/><line x1="0" y1="267.39" x2="568.6" y2="267.39" stroke="#ffeaea" stroke-width="0.3"/><line x1="0" y1="269.65" x2="568.6" y2="269.65" stroke="#ffeaea" stroke-width="0.3"/><line x1="0" y1="274.19" x2="568.6" y2="274.19" stroke="#ffeaea" stroke-width="0.3"/><line x1="0" y1="276.45" x2="568.6" y2="276.45" stroke="#ffeaea" stroke-width="0.3"/><line x1="0" y1="278.72" x2="568.6" y2="278.72" stroke="#ffeaea" stroke-width="0.3"/><line x1="0" y1="280.98" x2="568.6" y2="280.98" stroke="#ffeaea" stroke-width="0.3"/><line x1="0" y1="285.52" x2="568.6" y2="285.52" stroke="#ffeaea" stroke-width="0.3"/><line x1="0" y1="287.78" x2="568.6" y2="287.78" stroke="#ffeaea" stroke-width="0.3"/><line x1="0" y1="290.05" x2="568.6" y2="290.05" stroke="#ffeaea" stroke-width="0.3"/><line x1="0" y1="292.31" x2="568.6" y2="292.31" stroke="#ffeaea" stroke-width="0.3"/><line x1="0" y1="296.85" x2="568.6" y2="296.85" stroke="#ffeaea" stroke-width="0.3"/><line x1="0" y1="299.11" x2="568.6" y2="299.11" stroke="#ffeaea" stroke-width="0.3"/><line x1="0" y1="301.38" x2="568.6" y2="301.38" stroke="#ffeaea" stroke-width="0.3"/><line x1="0" y1="303.64" x2="568.6" y2="303.64" stroke="#ffeaea" stroke-width="0.3"/><line x1="0" y1="308.18" x2="568.6" y2="308.18" stroke="#ffeaea" stroke-width="0.3"/><line x1="0" y1="310.44" x2="568.6" y2="310.44" stroke="#ffeaea" stroke-width="0.3"/><line x1="0" y1="312.71" x2="568.6" y2="312.71" stroke="#ffeaea" stroke-width="0.3"/><line x1="0" y1="314.97" x2="568.6" y2="314.97" stroke="#ffeaea" stroke-width="0.3"/><line x1="0" y1="319.51" x2="568.6" y2="319.51" stroke="#ffeaea" stroke-width="0.3"/><line x1="0" y1="321.77" x2="568.6" y2="321.77" stroke="#ffeaea" stroke-width="0.3"/><line x1="0" y1="324.04" x2="568.6" y2="324.04" stroke="#ffeaea" stroke-width="0.3"/><line x1="0" y1="326.30" x2="568.6" y2="326.30" stroke="#ffeaea" stroke-width="0.3"/><line x1="0" y1="330.84" x2="568.6" y2="330.84" stroke="#ffeaea" stroke-width="0.3"/><line x1="0" y1="333.10" x2="568.6" y2="333.10" stroke="#ffeaea" stroke-width="0.3"/><line x1="0" y1="335.37" x2="568.6" y2="335.37" stroke="#ffeaea" stroke-width="0.3"/><line x1="0" y1="337.63" x2="568.6" y2="337.63" stroke="#ffeaea" stroke-width="0.3"/><line x1="0" y1="342.17" x2="568.6" y2="342.17" stroke="#ffeaea" stroke-width="0.3"/><line x1="0" y1="344.43" x2="568.6" y2="344.43" stroke="#ffeaea" stroke-width="0.3"/><line x1="0" y1="346.70" x2="568.6" y2="346.70" stroke="#ffeaea" stroke-width="0.3"/><line x1="0" y1="348.96" x2="568.6" y2="348.96" stroke="#ffeaea" stroke-width="0.3"/><line x1="0" y1="353.50" x2="568.6" y2="353.50" stroke="#ffeaea" stroke-width="0.3"/><line x1="0" y1="355.76" x2="568.6" y2="355.76" stroke="#ffeaea" stroke-width="0.3"/><line x1="0" y1="358.03" x2="568.6" y2="358.03" stroke="#ffeaea" stroke-width="0.3"/><line x1="0" y1="360.29" x2="568.6" y2="360.29" stroke="#ffeaea" stroke-width="0.3"/><line x1="0" y1="364.83" x2="568.6" y2="364.83" stroke="#ffeaea" stroke-width="0.3"/><line x1="0" y1="367.09" x2="568.6" y2="367.09" stroke="#ffeaea" stroke-width="0.3"/><line x1="0" y1="369.36" x2="568.6" y2="369.36" stroke="#ffeaea" stroke-width="0.3"/><line x1="0" y1="371.62" x2="568.6" y2="371.62" stroke="#ffeaea" stroke-width="0.3"/><line x1="0" y1="376.16" x2="568.6" y2="376.16" stroke="#ffeaea" stroke-width="0.3"/><line x1="0" y1="378.42" x2="568.6" y2="378.42" stroke="#ffeaea" stroke-width="0.3"/><line x1="0" y1="380.69" x2="568.6" y2="380.69" stroke="#ffeaea" stroke-width="0.3"/><line x1="0" y1="382.95" x2="568.6" y2="382.95" stroke="#ffeaea" stroke-width="0.3"/><line x1="0" y1="387.49" x2="568.6" y2="387.49" stroke="#ffeaea" stroke-width="0.3"/><line x1="0" y1="389.75" x2="568.6" y2="389.75" stroke="#ffeaea" stroke-width="0.3"/><line x1="0.00" y1="0" x2="0.00" y2="390.3" stroke="#ffa4a4" stroke-width="0.72"/><line x1="11.35" y1="0" x2="11.35" y2="390.3" stroke="#ffa4a4" stroke-width="0.72"/><line x1="22.70" y1="0" x2="22.70" y2="390.3" stroke="#ffa4a4" stroke-width="0.72"/><line x1="34.05" y1="0" x2="34.05" y2="390.3" stroke="#ffa4a4" stroke-width="0.72"/><line x1="45.40" y1="0" x2="45.40" y2="390.3" stroke="#ffa4a4" stroke-width="0.72"/><line x1="56.75" y1="0" x2="56.75" y2="390.3" stroke="#ffa4a4" stroke-width="0.72"/><line x1="68.10" y1="0" x2="68.10" y2="390.3" stroke="#ffa4a4" stroke-width="0.72"/><line x1="79.45" y1="0" x2="79.45" y2="390.3" stroke="#ffa4a4" stroke-width="0.72"/><line x1="90.80" y1="0" x2="90.80" y2="390.3" stroke="#ffa4a4" stroke-width="0.72"/><line x1="102.15" y1="0" x2="102.15" y2="390.3" stroke="#ffa4a4" stroke-width="0.72"/><line x1="113.50" y1="0" x2="113.50" y2="390.3" stroke="#ffa4a4" stroke-width="0.72"/><line x1="124.85" y1="0" x2="124.85" y2="390.3" stroke="#ffa4a4" stroke-width="0.72"/><line x1="136.20" y1="0" x2="136.20" y2="390.3" stroke="#ffa4a4" stroke-width="0.72"/><line x1="147.55" y1="0" x2="147.55" y2="390.3" stroke="#ffa4a4" stroke-width="0.72"/><line x1="158.90" y1="0" x2="158.90" y2="390.3" stroke="#ffa4a4" stroke-width="0.72"/><line x1="170.25" y1="0" x2="170.25" y2="390.3" stroke="#ffa4a4" stroke-width="0.72"/><line x1="181.60" y1="0" x2="181.60" y2="390.3" stroke="#ffa4a4" stroke-width="0.72"/><line x1="192.95" y1="0" x2="192.95" y2="390.3" stroke="#ffa4a4" stroke-width="0.72"/><line x1="204.30" y1="0" x2="204.30" y2="390.3" stroke="#ffa4a4" stroke-width="0.72"/><line x1="215.65" y1="0" x2="215.65" y2="390.3" stroke="#ffa4a4" stroke-width="0.72"/><line x1="227.00" y1="0" x2="227.00" y2="390.3" stroke="#ffa4a4" stroke-width="0.72"/><line x1="238.35" y1="0" x2="238.35" y2="390.3" stroke="#ffa4a4" stroke-width="0.72"/><line x1="249.70" y1="0" x2="249.70" y2="390.3" stroke="#ffa4a4" stroke-width="0.72"/><line x1="261.05" y1="0" x2="261.05" y2="390.3" stroke="#ffa4a4" stroke-width="0.72"/><line x1="272.40" y1="0" x2="272.40" y2="390.3" stroke="#ffa4a4" stroke-width="0.72"/><line x1="283.75" y1="0" x2="283.75" y2="390.3" stroke="#ffa4a4" stroke-width="0.72"/><line x1="295.10" y1="0" x2="295.10" y2="390.3" stroke="#ffa4a4" stroke-width="0.72"/><line x1="306.45" y1="0" x2="306.45" y2="390.3" stroke="#ffa4a4" stroke-width="0.72"/><line x1="317.80" y1="0" x2="317.80" y2="390.3" stroke="#ffa4a4" stroke-width="0.72"/><line x1="329.15" y1="0" x2="329.15" y2="390.3" stroke="#ffa4a4" stroke-width="0.72"/><line x1="340.50" y1="0" x2="340.50" y2="390.3" stroke="#ffa4a4" stroke-width="0.72"/><line x1="351.85" y1="0" x2="351.85" y2="390.3" stroke="#ffa4a4" stroke-width="0.72"/><line x1="363.20" y1="0" x2="363.20" y2="390.3" stroke="#ffa4a4" stroke-width="0.72"/><line x1="374.55" y1="0" x2="374.55" y2="390.3" stroke="#ffa4a4" stroke-width="0.72"/><line x1="385.90" y1="0" x2="385.90" y2="390.3" stroke="#ffa4a4" stroke-width="0.72"/><line x1="397.25" y1="0" x2="397.25" y2="390.3" stroke="#ffa4a4" stroke-width="0.72"/><line x1="408.60" y1="0" x2="408.60" y2="390.3" stroke="#ffa4a4" stroke-width="0.72"/><line x1="419.95" y1="0" x2="419.95" y2="390.3" stroke="#ffa4a4" stroke-width="0.72"/><line x1="431.30" y1="0" x2="431.30" y2="390.3" stroke="#ffa4a4" stroke-width="0.72"/><line x1="442.65" y1="0" x2="442.65" y2="390.3" stroke="#ffa4a4" stroke-width="0.72"/><line x1="454.00" y1="0" x2="454.00" y2="390.3" stroke="#ffa4a4" stroke-width="0.72"/><line x1="465.35" y1="0" x2="465.35" y2="390.3" stroke="#ffa4a4" stroke-width="0.72"/><line x1="476.70" y1="0" x2="476.70" y2="390.3" stroke="#ffa4a4" stroke-width="0.72"/><line x1="488.05" y1="0" x2="488.05" y2="390.3" stroke="#ffa4a4" stroke-width="0.72"/><line x1="499.40" y1="0" x2="499.40" y2="390.3" stroke="#ffa4a4" stroke-width="0.72"/><line x1="510.75" y1="0" x2="510.75" y2="390.3" stroke="#ffa4a4" stroke-width="0.72"/><line x1="522.10" y1="0" x2="522.10" y2="390.3" stroke="#ffa4a4" stroke-width="0.72"/><line x1="533.45" y1="0" x2="533.45" y2="390.3" stroke="#ffa4a4" stroke-width="0.72"/><line x1="544.80" y1="0" x2="544.80" y2="390.3" stroke="#ffa4a4" stroke-width="0.72"/><line x1="556.15" y1="0" x2="556.15" y2="390.3" stroke="#ffa4a4" stroke-width="0.72"/><line x1="567.50" y1="0" x2="567.50" y2="390.3" stroke="#ffa4a4" stroke-width="0.72"/><line x1="0" y1="0.00" x2="568.6" y2="0.00" stroke="#ffa4a4" stroke-width="0.72"/><line x1="0" y1="11.33" x2="568.6" y2="11.33" stroke="#ffa4a4" stroke-width="0.72"/><line x1="0" y1="22.66" x2="568.6" y2="22.66" stroke="#ffa4a4" stroke-width="0.72"/><line x1="0" y1="33.99" x2="568.6" y2="33.99" stroke="#ffa4a4" stroke-width="0.72"/><line x1="0" y1="45.32" x2="568.6" y2="45.32" stroke="#ffa4a4" stroke-width="0.72"/><line x1="0" y1="56.65" x2="568.6" y2="56.65" stroke="#ffa4a4" stroke-width="0.72"/><line x1="0" y1="67.98" x2="568.6" y2="67.98" stroke="#ffa4a4" stroke-width="0.72"/><line x1="0" y1="79.31" x2="568.6" y2="79.31" stroke="#ffa4a4" stroke-width="0.72"/><line x1="0" y1="90.64" x2="568.6" y2="90.64" stroke="#ffa4a4" stroke-width="0.72"/><line x1="0" y1="101.97" x2="568.6" y2="101.97" stroke="#ffa4a4" stroke-width="0.72"/><line x1="0" y1="113.30" x2="568.6" y2="113.30" stroke="#ffa4a4" stroke-width="0.72"/><line x1="0" y1="124.63" x2="568.6" y2="124.63" stroke="#ffa4a4" stroke-width="0.72"/><line x1="0" y1="135.96" x2="568.6" y2="135.96" stroke="#ffa4a4" stroke-width="0.72"/><line x1="0" y1="147.29" x2="568.6" y2="147.29" stroke="#ffa4a4" stroke-width="0.72"/><line x1="0" y1="158.62" x2="568.6" y2="158.62" stroke="#ffa4a4" stroke-width="0.72"/><line x1="0" y1="169.95" x2="568.6" y2="169.95" stroke="#ffa4a4" stroke-width="0.72"/><line x1="0" y1="181.28" x2="568.6" y2="181.28" stroke="#ffa4a4" stroke-width="0.72"/><line x1="0" y1="192.61" x2="568.6" y2="192.61" stroke="#ffa4a4" stroke-width="0.72"/><line x1="0" y1="203.94" x2="568.6" y2="203.94" stroke="#ffa4a4" stroke-width="0.72"/><line x1="0" y1="215.27" x2="568.6" y2="215.27" stroke="#ffa4a4" stroke-width="0.72"/><line x1="0" y1="226.60" x2="568.6" y2="226.60" stroke="#ffa4a4" stroke-width="0.72"/><line x1="0" y1="237.93" x2="568.6" y2="237.93" stroke="#ffa4a4" stroke-width="0.72"/><line x1="0" y1="249.26" x2="568.6" y2="249.26" stroke="#ffa4a4" stroke-width="0.72"/><line x1="0" y1="260.59" x2="568.6" y2="260.59" stroke="#ffa4a4" stroke-width="0.72"/><line x1="0" y1="271.92" x2="568.6" y2="271.92" stroke="#ffa4a4" stroke-width="0.72"/><line x1="0" y1="283.25" x2="568.6" y2="283.25" stroke="#ffa4a4" stroke-width="0.72"/><line x1="0" y1="294.58" x2="568.6" y2="294.58" stroke="#ffa4a4" stroke-width="0.72"/><line x1="0" y1="305.91" x2="568.6" y2="305.91" stroke="#ffa4a4" stroke-width="0.72"/><line x1="0" y1="317.24" x2="568.6" y2="317.24" stroke="#ffa4a4" stroke-width="0.72"/><line x1="0" y1="328.57" x2="568.6" y2="328.57" stroke="#ffa4a4" stroke-width="0.72"/><line x1="0" y1="339.90" x2="568.6" y2="339.90" stroke="#ffa4a4" stroke-width="0.72"/><line x1="0" y1="351.23" x2="568.6" y2="351.23" stroke="#ffa4a4" stroke-width="0.72"/><line x1="0" y1="362.56" x2="568.6" y2="362.56" stroke="#ffa4a4" stroke-width="0.72"/><line x1="0" y1="373.89" x2="568.6" y2="373.89" stroke="#ffa4a4" stroke-width="0.72"/><line x1="0" y1="385.22" x2="568.6" y2="385.22" stroke="#ffa4a4" stroke-width="0.72"/><line x1="142.4" y1="57.9" x2="142.4" y2="98.7" stroke="#e4464a" stroke-width="0.9"/><line x1="283.9" y1="57.9" x2="283.9" y2="98.7" stroke="#e4464a" stroke-width="0.9"/><line x1="425.6" y1="57.9" x2="425.6" y2="98.7" stroke="#e4464a" stroke-width="0.9"/><line x1="142.4" y1="135.5" x2="142.4" y2="176.8" stroke="#e4464a" stroke-width="0.9"/><line x1="283.9" y1="135.5" x2="283.9" y2="176.8" stroke="#e4464a" stroke-width="0.9"/><line x1="425.6" y1="135.5" x2="425.6" y2="176.8" stroke="#e4464a" stroke-width="0.9"/><line x1="142.4" y1="213.9" x2="142.4" y2="254.8" stroke="#e4464a" stroke-width="0.9"/><line x1="283.9" y1="213.9" x2="283.9" y2="254.8" stroke="#e4464a" stroke-width="0.9"/><line x1="425.6" y1="213.9" x2="425.6" y2="254.8" stroke="#e4464a" stroke-width="0.9"/><polyline points="0.0,76.4 0.5,76.4 1.0,76.5 1.5,76.3 2.0,76.4 2.5,76.4 3.0,76.3 3.5,76.4 4.0,76.3 4.5,76.4 5.0,76.3 5.5,76.2 6.0,76.3 6.5,76.5 7.0,76.3 7.5,76.3 8.0,76.4 8.5,76.5 9.0,76.5 9.5,76.3 10.0,76.4 10.5,76.2 11.0,76.3 11.5,76.1 12.0,76.0 12.5,75.9 13.0,75.9 13.5,76.0 14.0,75.9 14.5,76.0 15.0,76.1 15.5,76.0 16.0,76.1 16.5,76.0 17.0,76.0 17.5,76.0 18.0,76.2 18.5,76.3 19.0,76.3 19.5,76.4 20.0,76.4 20.5,76.4 21.0,76.5 21.5,76.6 22.0,76.5 22.5,76.5 23.0,76.5 23.5,76.6 24.0,76.6 24.5,76.5 25.0,76.7 25.5,76.5 26.0,76.5 26.5,76.6 27.0,76.4 27.5,76.5 28.0,76.3 28.5,76.5 29.0,76.6 29.5,76.6 30.0,76.6 30.5,76.5 31.0,76.6 31.5,76.6 32.0,76.6 32.5,76.5 33.0,76.6 33.5,76.6 34.0,76.4 34.5,76.1 35.0,75.6 35.5,75.4 36.0,75.3 36.5,75.4 37.0,75.7 37.5,75.8 38.0,76.1 38.5,76.3 39.0,76.3 39.5,76.4 40.0,76.3 40.5,76.3 41.0,76.2 41.5,76.4 42.0,76.3 42.5,76.3 43.0,76.4 43.5,76.7 44.0,78.0 44.5,76.5 45.0,69.2 45.5,70.3 46.0,76.2 46.5,77.2 47.0,76.6 47.5,76.5 48.0,76.5 48.5,76.6 49.0,76.7 49.5,76.5 50.0,76.4 50.5,76.4 51.0,76.3 51.5,76.4 52.0,76.5 52.5,76.4 53.0,76.3 53.5,76.3 54.0,76.3 54.5,76.4 55.0,76.5 55.5,76.5 56.0,76.5 56.5,76.4 57.0,76.4 57.5,76.2 58.0,76.3 58.5,76.3 59.0,76.3 59.5,76.3 60.0,76.1 60.5,76.0 61.0,75.9 61.5,76.0 62.0,75.9 62.5,75.8 63.0,75.9 63.5,75.9 64.0,76.0 64.5,76.0 65.0,76.0 65.5,76.0 66.0,76.1 66.5,76.2 67.0,76.1 67.5,76.4 68.0,76.5 68.5,76.4 69.0,76.3 69.5,76.4 70.0,76.4 70.5,76.3 71.0,76.5 71.5,76.6 72.0,76.6 72.5,76.5 73.0,76.4 73.5,76.3 74.0,76.3 74.5,76.3 75.0,76.5 75.5,76.4 76.0,76.3 76.5,76.5 77.0,76.5 77.5,76.4 78.0,76.5 78.5,76.3 79.0,76.4 79.5,76.6 80.0,76.6 80.5,76.6 81.0,76.4 81.5,76.1 82.0,75.8 82.5,75.6 83.0,75.3 83.5,75.3 84.0,75.3 84.5,75.5 85.0,76.0 85.5,76.4 86.0,76.6 86.5,76.7 87.0,76.7 87.5,76.7 88.0,76.5 88.5,76.5 89.0,76.5 89.5,76.3 90.0,76.3 90.5,76.3 91.0,76.9 91.5,78.4 92.0,73.7 92.5,68.1 93.0,73.0 93.5,77.2 94.0,77.1 94.5,76.7 95.0,76.5 95.5,76.4 96.0,76.4 96.5,76.3 97.0,76.4 97.5,76.6 98.0,76.7 98.5,76.6 99.0,76.6 99.5,76.6 100.0,76.5 100.5,76.5 101.0,76.6 101.5,76.6 102.0,76.6 102.5,76.5 103.0,76.4 103.5,76.4 104.0,76.3 104.5,76.4 105.0,76.4 105.5,76.3 106.0,76.2 106.5,76.2 107.0,76.2 107.5,76.0 108.0,75.9 108.5,75.8 109.0,76.0 109.5,76.1 110.0,76.0 110.5,76.2 111.0,76.3 111.5,76.4 112.0,76.3 112.5,76.3 113.0,76.3 113.5,76.2 114.0,76.4 114.5,76.5 115.0,76.5 115.5,76.6 116.0,76.6 116.5,76.6 117.0,76.7 117.5,76.5 118.0,76.4 118.5,76.4 119.0,76.4 119.5,76.4 120.0,76.4 120.5,76.4 121.0,76.3 121.5,76.5 122.0,76.5 122.5,76.5 123.0,76.5 123.5,76.6 124.0,76.6 124.5,76.7 125.0,76.6 125.5,76.6 126.0,76.5 126.5,76.4 127.0,76.4 127.5,76.3 128.0,76.2 128.5,76.2 129.0,75.9 129.5,75.7 130.0,75.5 130.5,75.3 131.0,75.2 131.5,75.4 132.0,75.7 132.5,76.1 133.0,76.2 133.5,76.4 134.0,76.4 134.5,76.4 135.0,76.5 135.5,76.5 136.0,76.5 136.5,76.6 137.0,76.7 137.5,76.6 138.0,76.6 138.5,76.6 139.0,76.5 139.5,76.6 140.0,76.5 140.5,76.5 141.0,76.5 141.5,76.6 142.0,76.6 142.4,80.6 142.9,80.7 143.4,80.6 143.9,80.6 144.4,80.7 144.9,80.8 145.4,80.7 145.9,80.6 146.4,80.7 146.9,80.7 147.4,80.8 147.9,80.9 148.4,81.2 148.9,81.5 149.4,81.8 149.9,81.9 150.4,82.2 150.9,82.4 151.4,82.5 151.9,82.8 152.4,83.1 152.9,83.0 153.4,83.2 153.9,83.2 154.4,83.1 154.9,83.1 155.4,83.0 155.9,82.7 156.4,82.5 156.9,82.3 157.4,82.0 157.9,81.7 158.4,81.5 158.9,81.4 159.4,81.1 159.9,81.0 160.4,80.9 160.9,80.6 161.4,80.6 161.9,80.6 162.4,80.6 162.9,80.4 163.4,80.6 163.9,80.7 164.4,80.7 164.9,80.5 165.4,80.4 165.9,80.3 166.4,80.5 166.9,80.4 167.4,80.3 167.9,80.4 168.4,80.6 168.9,80.6 169.4,80.5 169.9,80.4 170.4,80.6 170.9,80.6 171.4,80.6 171.9,80.4 172.4,80.3 172.9,80.5 173.4,80.4 173.9,80.3 174.4,80.5 174.9,80.6 175.4,80.7 175.9,80.6 176.4,80.9 176.9,80.9 177.4,81.2 177.9,81.3 178.4,81.2 178.9,81.1 179.4,81.1 179.9,80.8 180.4,80.5 180.9,80.5 181.4,80.4 181.9,80.3 182.4,80.3 182.9,80.2 183.4,80.2 183.9,80.3 184.4,80.3 184.9,80.5 185.4,80.4 185.9,78.4 186.4,75.6 186.9,79.4 187.4,76.4 187.9,78.9 188.4,85.9 188.9,85.4 189.4,81.5 189.9,80.5 190.4,80.4 190.9,80.6 191.4,80.5 191.9,80.6 192.4,80.6 192.9,80.7 193.4,80.8 193.9,80.8 194.4,80.9 194.9,81.1 195.4,81.4 195.9,81.4 196.4,81.7 196.9,81.9 197.4,82.1 197.9,82.3 198.4,82.4 198.9,82.5 199.4,82.6 199.9,82.7 200.4,83.0 200.9,83.0 201.4,82.9 201.9,82.8 202.4,82.9 202.9,82.9 203.4,82.7 203.9,82.4 204.4,82.1 204.9,81.8 205.4,81.6 205.9,81.4 206.4,81.2 206.9,81.0 207.4,81.1 207.9,81.1 208.4,80.9 208.9,80.7 209.4,80.8 209.9,80.6 210.4,80.5 210.9,80.4 211.4,80.4 211.9,80.4 212.4,80.5 212.9,80.4 213.4,80.4 213.9,80.3 214.4,80.3 214.9,80.3 215.4,80.3 215.9,80.3 216.4,80.2 216.9,80.3 217.4,80.3 217.9,80.4 218.4,80.4 218.9,80.5 219.4,80.6 219.9,80.6 220.4,80.7 220.9,80.6 221.4,80.5 221.9,80.7 222.4,80.5 222.9,80.6 223.4,80.8 223.9,80.8 224.4,81.1 224.9,81.4 225.4,81.4 225.9,81.4 226.4,81.2 226.9,80.9 227.4,80.7 227.9,80.6 228.4,80.6 228.9,80.7 229.4,80.7 229.9,80.6 230.4,80.7 230.9,80.7 231.4,80.7 231.9,80.5 232.4,80.4 232.9,80.0 233.4,76.3 233.9,77.2 234.4,79.1 234.9,75.9 235.4,82.5 235.9,87.0 236.4,83.8 236.9,80.9 237.4,80.4 237.9,80.5 238.4,80.6 238.9,80.6 239.4,80.6 239.9,80.7 240.4,80.6 240.9,80.8 241.4,80.8 241.9,80.8 242.4,80.9 242.9,81.2 243.4,81.3 243.9,81.6 244.4,82.0 244.9,82.2 245.4,82.3 245.9,82.5 246.4,82.8 246.9,83.0 247.4,83.1 247.9,83.2 248.4,83.0 248.9,82.9 249.4,82.8 249.9,82.8 250.4,82.6 250.9,82.5 251.4,82.1 251.9,81.8 252.4,81.6 252.9,81.6 253.4,81.5 253.9,81.3 254.4,81.1 254.9,81.0 255.4,80.8 255.9,80.7 256.4,80.6 256.9,80.7 257.4,80.5 257.9,80.7 258.4,80.7 258.9,80.5 259.4,80.5 259.9,80.6 260.4,80.7 260.9,80.6 261.4,80.5 261.9,80.4 262.4,80.6 262.9,80.5 263.4,80.5 263.9,80.4 264.4,80.4 264.9,80.6 265.4,80.5 265.9,80.6 266.4,80.5 266.9,80.6 267.4,80.6 267.9,80.5 268.4,80.6 268.9,80.6 269.4,80.4 269.9,80.3 270.4,80.5 270.9,80.7 271.4,80.8 271.9,81.0 272.4,81.1 272.9,81.1 273.4,81.2 273.9,80.8 274.4,80.8 274.9,80.7 275.4,80.5 275.9,80.6 276.4,80.6 276.9,80.7 277.4,80.6 277.9,80.5 278.4,80.5 278.9,80.6 279.4,80.6 279.9,80.5 280.4,80.5 280.9,80.4 281.4,80.3 281.9,80.3 282.4,80.5 282.9,80.4 283.4,80.6 283.9,73.6 284.4,73.4 284.9,73.3 285.4,73.1 285.9,73.0 286.4,73.1 286.9,73.1 287.4,73.2 287.9,73.2 288.4,73.3 288.9,73.4 289.4,73.4 289.9,73.5 290.4,73.4 290.9,73.6 291.4,73.7 291.9,73.8 292.4,73.9 292.9,73.8 293.4,73.7 293.9,74.0 294.4,73.9 294.9,73.9 295.4,73.9 295.9,73.9 296.4,74.1 296.9,74.3 297.4,74.2 297.9,74.3 298.4,74.3 298.9,74.3 299.4,74.4 299.9,74.3 300.4,74.3 300.9,74.3 301.4,74.6 301.9,74.6 302.4,74.5 302.9,74.7 303.4,74.9 303.9,74.8 304.4,74.7 304.9,74.6 305.4,74.6 305.9,74.6 306.4,74.5 306.9,74.6 307.4,74.6 307.9,74.7 308.4,74.8 308.9,74.9 309.4,74.8 309.9,74.8 310.4,74.8 310.9,74.8 311.4,74.7 311.9,74.6 312.4,74.6 312.9,74.8 313.4,74.7 313.9,74.7 314.4,74.8 314.9,74.9 315.4,74.8 315.9,74.7 316.4,74.7 316.9,74.7 317.4,74.7 317.9,74.8 318.4,74.7 318.9,74.6 319.4,74.3 319.9,74.0 320.4,74.2 320.9,74.4 321.4,74.5 321.9,74.7 322.4,74.6 322.9,74.7 323.4,74.9 323.9,74.9 324.4,75.0 324.9,75.0 325.4,74.8 325.9,74.7 326.4,74.6 326.9,74.6 327.4,74.6 327.9,74.5 328.4,80.9 328.9,99.9 329.4,108.8 329.9,91.3 330.4,77.2 330.9,73.9 331.4,73.7 331.9,73.4 332.4,73.4 332.9,73.3 333.4,73.1 333.9,72.9 334.4,72.8 334.9,72.9 335.4,73.1 335.9,73.0 336.4,73.0 336.9,73.2 337.4,73.4 337.9,73.4 338.4,73.5 338.9,73.6 339.4,73.6 339.9,73.6 340.4,73.7 340.9,74.0 341.4,74.0 341.9,74.1 342.4,74.1 342.9,74.0 343.4,74.0 343.9,74.2 344.4,74.3 344.9,74.2 345.4,74.1 345.9,74.2 346.4,74.4 346.9,74.4 347.4,74.4 347.9,74.5 348.4,74.7 348.9,74.6 349.4,74.5 349.9,74.5 350.4,74.6 350.9,74.7 351.4,74.6 351.9,74.8 352.4,74.8 352.9,74.8 353.4,74.7 353.9,74.9 354.4,74.8 354.9,74.9 355.4,74.8 355.9,74.7 356.4,74.8 356.9,74.7 357.4,74.9 357.9,74.9 358.4,74.7 358.9,74.7 359.4,74.7 359.9,74.8 360.4,74.9 360.9,74.8 361.4,74.8 361.9,74.7 362.4,74.9 362.9,74.7 363.4,74.6 363.9,74.6 364.4,74.6 364.9,74.7 365.4,74.8 365.9,74.6 366.4,74.6 366.9,74.5 367.4,74.3 367.9,74.2 368.4,74.5 368.9,74.7 369.4,74.6 369.9,74.8 370.4,74.7 370.9,74.7 371.4,74.7 371.9,74.6 372.4,74.5 372.9,74.6 373.4,74.6 373.9,74.8 374.4,74.6 374.9,74.5 375.4,75.3 375.9,87.2 376.4,106.7 376.9,103.6 377.4,83.9 377.9,75.0 378.4,73.7 378.9,73.5 379.4,73.5 379.9,73.2 380.4,73.1 380.9,73.1 381.4,72.9 381.9,72.9 382.4,73.0 382.9,73.2 383.4,73.1 383.9,73.0 384.4,73.1 384.9,73.4 385.4,73.4 385.9,73.6 386.4,73.8 386.9,73.8 387.4,73.8 387.9,74.0 388.4,74.0 388.9,73.9 389.4,74.0 389.9,74.0 390.4,74.0 390.9,73.9 391.4,74.1 391.9,74.3 392.4,74.3 392.9,74.5 393.4,74.3 393.9,74.3 394.4,74.4 394.9,74.6 395.4,74.7 395.9,74.6 396.4,74.6 396.9,74.6 397.4,74.6 397.9,74.8 398.4,74.7 398.9,74.8 399.4,74.8 399.9,74.9 400.4,74.9 400.9,74.9 401.4,74.8 401.9,74.7 402.4,74.7 402.9,74.8 403.4,74.7 403.9,74.6 404.4,74.8 404.9,74.7 405.4,74.6 405.9,74.5 406.4,74.7 406.9,74.7 407.4,74.9 407.9,75.0 408.4,75.0 408.9,74.9 409.4,74.7 409.9,74.6 410.4,74.7 410.9,74.8 411.4,74.8 411.9,74.7 412.4,74.6 412.9,74.6 413.4,74.5 413.9,74.4 414.4,74.4 414.9,74.4 415.4,74.3 415.9,74.6 416.4,74.6 416.9,74.7 417.4,74.7 417.9,74.8 418.4,74.7 418.9,74.7 419.4,74.6 419.9,74.6 420.4,74.8 420.9,74.8 421.4,74.7 421.9,74.6 422.4,74.7 422.9,74.6 423.4,74.4 423.9,74.4 424.4,74.3 424.9,74.2 425.6,75.9 426.1,75.9 426.6,75.9 427.1,75.7 427.6,75.3 428.1,74.5 428.6,73.7 429.1,72.8 429.6,71.9 430.1,71.4 430.6,71.0 431.1,70.9 431.6,70.8 432.1,70.9 432.6,70.9 433.1,70.8 433.6,70.9 434.1,71.2 434.6,71.2 435.1,71.5 435.6,71.9 436.1,72.1 436.6,72.6 437.1,73.1 437.6,73.8 438.1,74.5 438.6,75.2 439.1,75.7 439.6,75.9 440.1,75.8 440.6,75.9 441.1,76.0 441.6,76.0 442.1,76.0 442.6,75.9 443.1,76.1 443.6,76.1 444.1,76.0 444.6,75.9 445.1,75.9 445.6,76.0 446.1,76.1 446.6,76.0 447.1,75.9 447.6,76.1 448.1,76.0 448.6,76.0 449.1,76.0 449.6,76.2 450.1,76.1 450.6,76.1 451.1,76.1 451.6,76.1 452.1,76.2 452.6,76.3 453.1,76.2 453.6,76.1 454.1,76.1 454.6,76.0 455.1,75.9 455.6,76.1 456.1,76.1 456.6,76.2 457.1,76.1 457.6,76.2 458.1,76.2 458.6,76.0 459.1,75.9 459.6,75.9 460.1,75.9 460.6,75.9 461.1,75.6 461.6,75.5 462.1,75.5 462.6,75.6 463.1,75.6 463.6,75.7 464.1,75.9 464.6,76.1 465.1,76.0 465.6,76.1 466.1,76.2 466.6,76.3 467.1,76.1 467.6,76.0 468.1,76.2 468.6,76.5 469.1,77.1 469.6,79.4 470.1,84.8 470.6,91.6 471.1,95.9 471.6,93.6 472.1,86.7 472.6,79.6 473.1,75.4 473.6,73.0 474.1,71.9 474.6,71.3 475.1,71.0 475.6,70.7 476.1,70.6 476.6,70.6 477.1,70.6 477.6,70.5 478.1,70.4 478.6,70.4 479.1,70.7 479.6,70.9 480.1,70.7 480.6,70.8 481.1,71.0 481.6,71.0 482.1,71.4 482.6,71.6 483.1,72.0 483.6,72.3 484.1,72.9 484.6,73.5 485.1,74.2 485.6,75.0 486.1,75.5 486.6,75.9 487.1,76.0 487.6,76.0 488.1,75.9 488.6,76.0 489.1,76.1 489.6,76.0 490.1,76.1 490.6,76.2 491.1,76.1 491.6,76.0 492.1,76.0 492.6,76.0 493.1,75.9 493.6,76.0 494.1,75.9 494.6,76.0 495.1,76.0 495.6,75.9 496.1,76.0 496.6,75.9 497.1,76.1 497.6,76.2 498.1,76.1 498.6,76.0 499.1,76.0 499.6,76.0 500.1,76.2 500.6,76.0 501.1,76.2 501.6,76.3 502.1,76.3 502.6,76.3 503.1,76.1 503.6,76.3 504.1,76.2 504.6,76.3 505.1,76.3 505.6,76.1 506.1,76.2 506.6,76.2 507.1,76.0 507.6,75.8 508.1,75.8 508.6,75.5 509.1,75.6 509.6,75.5 510.1,75.7 510.6,75.7 511.1,75.9 511.6,76.1 512.1,76.0 512.6,76.0 513.1,76.0 513.6,76.0 514.1,75.9 514.6,75.9 515.1,75.9 515.6,76.2 516.1,76.5 516.6,77.9 517.1,81.2 517.6,87.5 518.1,93.8 518.6,95.6 519.1,91.1 519.6,83.5 520.1,77.7 520.6,74.3 521.1,72.6 521.6,71.7 522.1,71.0 522.6,70.9 523.1,70.8 523.6,70.8 524.1,70.8 524.6,70.6 525.1,70.7 525.6,70.7 526.1,70.7 526.6,70.8 527.1,70.8 527.6,70.7 528.1,70.9 528.6,70.8 529.1,71.2 529.6,71.4 530.1,71.8 530.6,72.3 531.1,72.6 531.6,73.2 532.1,73.8 532.6,74.4 533.1,75.0 533.6,75.4 534.1,75.8 534.6,75.9 535.1,76.0 535.6,76.2 536.1,76.0 536.6,76.0 537.1,76.1 537.6,75.9 538.1,75.9 538.6,75.9 539.1,75.9 539.6,75.9 540.1,75.9 540.6,76.0 541.1,76.1 541.6,76.0 542.1,76.1 542.6,76.1 543.1,76.0 543.6,76.2 544.1,76.1 544.6,76.0 545.1,75.9 545.6,76.0 546.1,76.2 546.6,76.2 547.1,76.1 547.6,76.1 548.1,75.9 548.6,76.0 549.1,76.1 549.6,76.0 550.1,76.1 550.6,76.1 551.1,76.2 551.6,76.2 552.1,76.1 552.6,76.2 553.1,76.0 553.6,76.0 554.1,76.0 554.6,75.8 555.1,75.6 555.6,75.6 556.1,75.4 556.6,75.4 557.1,75.7 557.6,75.6 558.1,75.7 558.6,75.9 559.1,76.0 559.6,76.1 560.1,76.2 560.6,76.1 561.1,76.0 561.6,76.0 562.1,75.9 562.6,76.1 563.1,76.2 563.6,76.2 564.1,76.0 564.6,76.2 565.1,76.2 565.6,76.2 566.1,76.2 566.6,76.1 567.1,76.0 567.6,75.9 568.1,75.8" fill="none" stroke="#3a3a3a" stroke-width="0.75" stroke-linejoin="round"/><polyline points="0.0,154.0 0.5,154.0 1.0,154.0 1.5,154.0 2.0,154.0 2.5,153.9 3.0,153.7 3.5,153.7 4.0,153.5 4.5,153.5 5.0,153.4 5.5,153.2 6.0,153.2 6.5,153.2 7.0,152.8 7.5,152.7 8.0,152.2 8.5,151.9 9.0,151.5 9.5,151.2 10.0,150.9 10.5,150.5 11.0,150.0 11.5,149.8 12.0,149.4 12.5,149.2 13.0,149.4 13.5,149.5 14.0,149.8 14.5,150.2 15.0,150.7 15.5,151.1 16.0,151.7 16.5,152.2 17.0,152.7 17.5,153.0 18.0,153.4 18.5,153.7 19.0,153.9 19.5,154.0 20.0,154.2 20.5,154.2 21.0,154.4 21.5,154.3 22.0,154.3 22.5,154.2 23.0,154.5 23.5,154.4 24.0,154.4 24.5,154.3 25.0,154.2 25.5,154.4 26.0,154.5 26.5,154.5 27.0,154.6 27.5,154.4 28.0,154.5 28.5,154.4 29.0,154.6 29.5,154.6 30.0,154.7 30.5,154.5 31.0,154.6 31.5,154.7 32.0,154.7 32.5,154.5 33.0,154.4 33.5,154.2 34.0,154.0 34.5,154.0 35.0,153.9 35.5,153.7 36.0,153.7 36.5,153.7 37.0,153.7 37.5,153.8 38.0,153.9 38.5,154.3 39.0,154.3 39.5,154.3 40.0,154.4 40.5,154.3 41.0,154.3 41.5,154.3 42.0,154.4 42.5,154.4 43.0,154.4 43.5,154.4 44.0,151.8 44.5,151.6 45.0,160.0 45.5,167.9 46.0,163.7 46.5,156.1 47.0,154.4 47.5,154.1 48.0,154.1 48.5,154.0 49.0,153.9 49.5,153.9 50.0,153.7 50.5,153.7 51.0,153.5 51.5,153.3 52.0,153.2 52.5,153.3 53.0,153.3 53.5,153.0 54.0,152.9 54.5,152.7 55.0,152.6 55.5,152.1 56.0,151.8 56.5,151.4 57.0,151.1 57.5,150.6 58.0,150.3 58.5,149.8 59.0,149.4 59.5,149.4 60.0,149.3 60.5,149.2 61.0,149.5 61.5,149.7 62.0,150.2 62.5,150.8 63.0,151.3 63.5,151.8 64.0,152.3 64.5,152.7 65.0,153.1 65.5,153.5 66.0,153.7 66.5,154.0 67.0,154.0 67.5,154.1 68.0,154.2 68.5,154.4 69.0,154.4 69.5,154.4 70.0,154.6 70.5,154.5 71.0,154.5 71.5,154.5 72.0,154.6 72.5,154.6 73.0,154.6 73.5,154.5 74.0,154.5 74.5,154.4 75.0,154.5 75.5,154.6 76.0,154.6 76.5,154.5 77.0,154.5 77.5,154.6 78.0,154.6 78.5,154.4 79.0,154.4 79.5,154.6 80.0,154.4 80.5,154.3 81.0,154.2 81.5,154.2 82.0,154.1 82.5,153.7 83.0,153.4 83.5,153.3 84.0,153.4 84.5,153.7 85.0,153.8 85.5,154.0 86.0,154.2 86.5,154.5 87.0,154.6 87.5,154.4 88.0,154.6 88.5,154.4 89.0,154.4 89.5,154.6 90.0,154.6 90.5,154.6 91.0,153.9 91.5,150.2 92.0,154.5 92.5,163.6 93.0,167.8 93.5,159.9 94.0,154.7 94.5,154.0 95.0,154.1 95.5,154.1 96.0,154.0 96.5,153.9 97.0,153.8 97.5,153.6 98.0,153.6 98.5,153.5 99.0,153.5 99.5,153.5 100.0,153.4 100.5,153.2 101.0,153.1 101.5,152.9 102.0,152.6 102.5,152.4 103.0,152.2 103.5,151.9 104.0,151.4 104.5,151.1 105.0,150.6 105.5,150.2 106.0,149.8 106.5,149.4 107.0,149.3 107.5,149.2 108.0,149.3 108.5,149.7 109.0,150.1 109.5,150.5 110.0,150.9 110.5,151.4 111.0,151.9 111.5,152.4 112.0,152.8 112.5,153.3 113.0,153.7 113.5,153.8 114.0,154.1 114.5,154.3 115.0,154.3 115.5,154.4 116.0,154.6 116.5,154.4 117.0,154.5 117.5,154.4 118.0,154.5 118.5,154.6 119.0,154.6 119.5,154.4 120.0,154.5 120.5,154.5 121.0,154.6 121.5,154.5 122.0,154.6 122.5,154.6 123.0,154.6 123.5,154.5 124.0,154.7 124.5,154.5 125.0,154.6 125.5,154.5 126.0,154.6 126.5,154.4 127.0,154.6 127.5,154.5 128.0,154.3 128.5,154.1 129.0,154.0 129.5,153.7 130.0,153.5 130.5,153.4 131.0,153.5 131.5,153.6 132.0,153.7 132.5,153.9 133.0,154.2 133.5,154.5 134.0,154.5 134.5,154.4 135.0,154.6 135.5,154.5 136.0,154.4 136.5,154.3 137.0,154.5 137.5,154.5 138.0,154.5 138.5,154.5 139.0,154.5 139.5,154.3 140.0,154.5 140.5,154.3 141.0,154.3 141.5,154.3 142.0,154.3 142.4,155.9 142.9,155.8 143.4,155.9 143.9,155.8 144.4,156.0 144.9,156.0 145.4,156.1 145.9,156.1 146.4,156.1 146.9,156.1 147.4,156.2 147.9,156.3 148.4,156.3 148.9,156.6 149.4,156.8 149.9,156.9 150.4,157.1 150.9,157.4 151.4,157.6 151.9,157.8 152.4,158.0 152.9,158.0 153.4,158.2 153.9,158.3 154.4,158.0 154.9,158.1 155.4,158.1 155.9,157.9 156.4,157.6 156.9,157.5 157.4,157.3 157.9,156.9 158.4,156.6 158.9,156.7 159.4,156.6 159.9,156.3 160.4,156.1 160.9,156.0 161.4,155.9 161.9,156.0 162.4,155.9 162.9,155.8 163.4,156.0 163.9,156.0 164.4,155.9 164.9,156.0 165.4,156.0 165.9,156.0 166.4,156.0 166.9,156.1 167.4,156.1 167.9,156.1 168.4,155.9 168.9,156.0 169.4,156.0 169.9,156.0 170.4,155.9 170.9,156.0 171.4,156.0 171.9,155.9 172.4,155.8 172.9,155.7 173.4,155.8 173.9,155.7 174.4,155.8 174.9,155.7 175.4,155.7 175.9,155.6 176.4,155.5 176.9,155.4 177.4,155.0 177.9,155.0 178.4,154.9 178.9,155.1 179.4,155.4 179.9,155.7 180.4,155.8 180.9,155.8 181.4,156.0 181.9,155.8 182.4,155.9 182.9,156.0 183.4,155.8 183.9,155.9 184.4,155.9 184.9,156.1 185.4,156.0 185.9,156.3 186.4,153.1 186.9,144.7 187.4,146.4 187.9,154.7 188.4,157.0 188.9,156.2 189.4,155.9 189.9,156.0 190.4,155.9 190.9,155.9 191.4,156.0 191.9,156.1 192.4,156.0 192.9,156.0 193.4,156.0 193.9,156.2 194.4,156.3 194.9,156.4 195.4,156.6 195.9,156.7 196.4,156.8 196.9,156.9 197.4,157.1 197.9,157.5 198.4,157.7 198.9,157.9 199.4,157.9 199.9,157.9 200.4,158.0 200.9,158.1 201.4,158.1 201.9,158.1 202.4,157.9 202.9,157.8 203.4,157.8 203.9,157.6 204.4,157.2 204.9,157.0 205.4,156.7 205.9,156.5 206.4,156.6 206.9,156.5 207.4,156.4 207.9,156.4 208.4,156.4 208.9,156.2 209.4,156.2 209.9,156.1 210.4,156.1 210.9,156.1 211.4,156.0 211.9,155.9 212.4,156.0 212.9,155.9 213.4,156.0 213.9,155.8 214.4,155.8 214.9,155.7 215.4,155.8 215.9,156.0 216.4,156.0 216.9,155.9 217.4,156.0 217.9,156.1 218.4,156.0 218.9,155.9 219.4,155.8 219.9,155.8 220.4,155.8 220.9,155.8 221.4,155.9 221.9,156.0 222.4,155.8 222.9,155.8 223.4,155.5 223.9,155.2 224.4,155.2 224.9,155.0 225.4,155.0 225.9,155.0 226.4,155.1 226.9,155.3 227.4,155.6 227.9,155.9 228.4,156.1 228.9,156.0 229.4,155.9 229.9,155.8 230.4,155.9 230.9,155.8 231.4,155.7 231.9,155.7 232.4,155.6 232.9,155.9 233.4,155.6 233.9,149.6 234.4,143.4 234.9,149.9 235.4,156.4 235.9,156.4 236.4,155.9 236.9,155.8 237.4,155.9 237.9,155.8 238.4,155.7 238.9,155.9 239.4,156.0 239.9,156.2 240.4,156.2 240.9,156.1 241.4,156.2 241.9,156.4 242.4,156.4 242.9,156.7 243.4,156.7 243.9,157.0 244.4,157.2 244.9,157.2 245.4,157.2 245.9,157.5 246.4,157.8 246.9,157.8 247.4,157.9 247.9,158.1 248.4,158.0 248.9,158.1 249.4,158.0 249.9,157.8 250.4,157.7 250.9,157.6 251.4,157.4 251.9,157.3 252.4,157.0 252.9,156.9 253.4,156.7 253.9,156.6 254.4,156.5 254.9,156.3 255.4,156.2 255.9,156.2 256.4,156.2 256.9,156.2 257.4,156.1 257.9,156.0 258.4,155.8 258.9,156.0 259.4,156.0 259.9,156.1 260.4,156.0 260.9,156.0 261.4,156.1 261.9,156.1 262.4,156.1 262.9,155.9 263.4,155.9 263.9,156.0 264.4,155.9 264.9,156.0 265.4,156.0 265.9,156.1 266.4,156.1 266.9,156.0 267.4,155.8 267.9,155.8 268.4,155.8 268.9,155.9 269.4,155.9 269.9,156.0 270.4,155.7 270.9,155.7 271.4,155.5 271.9,155.3 272.4,155.1 272.9,154.9 273.4,155.2 273.9,155.5 274.4,155.7 274.9,155.9 275.4,155.9 275.9,155.8 276.4,155.9 276.9,156.0 277.4,155.9 277.9,155.9 278.4,156.1 278.9,155.9 279.4,155.9 279.9,156.0 280.4,155.9 280.9,155.8 281.4,155.8 281.9,155.9 282.4,156.0 282.9,155.9 283.4,155.8 283.9,154.2 284.4,154.1 284.9,153.8 285.4,153.6 285.9,153.4 286.4,153.1 286.9,152.6 287.4,152.1 287.9,151.6 288.4,151.0 288.9,150.4 289.4,149.9 289.9,149.6 290.4,149.2 290.9,148.9 291.4,148.6 291.9,148.3 292.4,147.9 292.9,147.5 293.4,147.5 293.9,147.2 294.4,147.0 294.9,147.0 295.4,147.3 295.9,147.4 296.4,148.0 296.9,148.5 297.4,149.3 297.9,149.9 298.4,150.6 298.9,151.6 299.4,152.4 299.9,152.9 300.4,153.4 300.9,153.6 301.4,154.0 301.9,154.2 302.4,154.4 302.9,154.5 303.4,154.6 303.9,154.7 304.4,154.6 304.9,154.4 305.4,154.3 305.9,154.3 306.4,154.3 306.9,154.2 307.4,154.3 307.9,154.5 308.4,154.5 308.9,154.6 309.4,154.7 309.9,154.5 310.4,154.5 310.9,154.5 311.4,154.4 311.9,154.6 312.4,154.5 312.9,154.5 313.4,154.5 313.9,154.7 314.4,154.6 314.9,154.6 315.4,154.5 315.9,154.4 316.4,154.6 316.9,154.7 317.4,154.5 317.9,154.3 318.4,154.1 318.9,154.0 319.4,154.0 319.9,154.1 320.4,154.1 320.9,154.0 321.4,154.3 321.9,154.4 322.4,154.5 322.9,154.7 323.4,154.5 323.9,154.4 324.4,154.5 324.9,154.6 325.4,154.6 325.9,154.5 326.4,154.5 326.9,154.5 327.4,154.3 327.9,155.0 328.4,165.4 328.9,189.4 329.4,199.2 329.9,178.3 330.4,158.1 330.9,151.7 331.4,150.5 331.9,149.9 332.4,149.7 332.9,149.4 333.4,149.4 333.9,149.7 334.4,149.8 334.9,150.1 335.4,150.2 335.9,150.2 336.4,149.8 336.9,149.6 337.4,149.2 337.9,149.1 338.4,148.9 338.9,148.6 339.4,148.2 339.9,147.9 340.4,147.7 340.9,147.4 341.4,147.2 341.9,147.0 342.4,147.0 342.9,147.1 343.4,147.6 343.9,148.2 344.4,148.7 344.9,149.6 345.4,150.3 345.9,151.1 346.4,151.7 346.9,152.3 347.4,153.0 347.9,153.4 348.4,153.7 348.9,154.0 349.4,154.1 349.9,154.4 350.4,154.3 350.9,154.5 351.4,154.4 351.9,154.6 352.4,154.6 352.9,154.5 353.4,154.5 353.9,154.4 354.4,154.4 354.9,154.3 355.4,154.4 355.9,154.6 356.4,154.7 356.9,154.7 357.4,154.5 357.9,154.5 358.4,154.6 358.9,154.4 359.4,154.5 359.9,154.4 360.4,154.6 360.9,154.4 361.4,154.5 361.9,154.5 362.4,154.4 362.9,154.3 363.4,154.5 363.9,154.5 364.4,154.4 364.9,154.3 365.4,154.4 365.9,154.2 366.4,154.0 366.9,153.8 367.4,153.7 367.9,154.0 368.4,154.2 368.9,154.2 369.4,154.2 369.9,154.2 370.4,154.4 370.9,154.4 371.4,154.4 371.9,154.3 372.4,154.4 372.9,154.5 373.4,154.6 373.9,154.5 374.4,154.4 374.9,154.2 375.4,157.2 375.9,174.4 376.4,197.5 376.9,193.3 377.4,168.6 377.9,154.5 378.4,151.2 378.9,150.5 379.4,150.0 379.9,149.5 380.4,149.6 380.9,149.7 381.4,149.9 381.9,149.9 382.4,149.9 382.9,150.1 383.4,149.9 383.9,149.6 384.4,149.4 384.9,149.2 385.4,148.7 385.9,148.5 386.4,148.3 386.9,148.0 387.4,147.6 387.9,147.5 388.4,147.4 388.9,147.3 389.4,147.1 389.9,147.3 390.4,147.5 390.9,148.0 391.4,148.4 391.9,149.2 392.4,150.1 392.9,150.8 393.4,151.5 393.9,152.2 394.4,152.8 394.9,153.1 395.4,153.7 395.9,153.9 396.4,154.0 396.9,154.1 397.4,154.2 397.9,154.4 398.4,154.3 398.9,154.3 399.4,154.4 399.9,154.4 400.4,154.3 400.9,154.4 401.4,154.5 401.9,154.5 402.4,154.6 402.9,154.4 403.4,154.6 403.9,154.6 404.4,154.4 404.9,154.3 405.4,154.4 405.9,154.4 406.4,154.4 406.9,154.3 407.4,154.4 407.9,154.3 408.4,154.4 408.9,154.6 409.4,154.4 409.9,154.5 410.4,154.6 410.9,154.4 411.4,154.5 411.9,154.6 412.4,154.5 412.9,154.3 413.4,154.2 413.9,154.1 414.4,153.9 414.9,154.1 415.4,154.2 415.9,154.2 416.4,154.3 416.9,154.3 417.4,154.4 417.9,154.6 418.4,154.7 418.9,154.7 419.4,154.7 419.9,154.7 420.4,154.5 420.9,154.5 421.4,154.6 421.9,154.7 422.4,154.5 422.9,154.5 423.4,154.5 423.9,154.4 424.4,154.4 424.9,154.2 425.6,154.5 426.1,154.5 426.6,154.3 427.1,154.3 427.6,154.5 428.1,154.6 428.6,154.7 429.1,154.6 429.6,154.7 430.1,154.7 430.6,154.7 431.1,154.5 431.6,154.5 432.1,154.3 432.6,154.4 433.1,154.2 433.6,154.2 434.1,154.2 434.6,154.1 435.1,153.9 435.6,153.8 436.1,153.6 436.6,153.7 437.1,153.5 437.6,153.3 438.1,153.3 438.6,153.2 439.1,153.3 439.6,153.5 440.1,153.5 440.6,153.5 441.1,153.6 441.6,153.8 442.1,153.8 442.6,153.8 443.1,153.9 443.6,154.0 444.1,154.1 444.6,154.2 445.1,154.2 445.6,154.2 446.1,154.3 446.6,154.5 447.1,154.5 447.6,154.5 448.1,154.6 448.6,154.5 449.1,154.5 449.6,154.5 450.1,154.5 450.6,154.5 451.1,154.5 451.6,154.5 452.1,154.4 452.6,154.4 453.1,154.4 453.6,154.4 454.1,154.5 454.6,154.3 455.1,154.4 455.6,154.5 456.1,154.4 456.6,154.5 457.1,154.5 457.6,154.4 458.1,154.6 458.6,154.5 459.1,154.5 459.6,154.3 460.1,154.1 460.6,154.1 461.1,153.8 461.6,153.6 462.1,153.6 462.6,153.7 463.1,154.0 463.6,154.1 464.1,154.2 464.6,154.5 465.1,154.6 465.6,154.4 466.1,154.4 466.6,154.4 467.1,154.5 467.6,154.5 468.1,154.6 468.6,154.7 469.1,155.2 469.6,161.8 470.1,159.1 470.6,146.1 471.1,143.9 471.6,155.1 472.1,164.1 472.6,157.1 473.1,154.6 473.6,154.6 474.1,154.4 474.6,154.5 475.1,154.5 475.6,154.5 476.1,154.7 476.6,154.6 477.1,154.5 477.6,154.6 478.1,154.6 478.6,154.6 479.1,154.5 479.6,154.4 480.1,154.3 480.6,154.3 481.1,154.1 481.6,154.0 482.1,154.0 482.6,153.8 483.1,153.6 483.6,153.6 484.1,153.6 484.6,153.5 485.1,153.4 485.6,153.2 486.1,153.2 486.6,153.2 487.1,153.3 487.6,153.5 488.1,153.4 488.6,153.7 489.1,153.8 489.6,154.0 490.1,154.2 490.6,154.4 491.1,154.3 491.6,154.3 492.1,154.5 492.6,154.3 493.1,154.3 493.6,154.4 494.1,154.4 494.6,154.6 495.1,154.6 495.6,154.6 496.1,154.7 496.6,154.6 497.1,154.6 497.6,154.6 498.1,154.5 498.6,154.5 499.1,154.5 499.6,154.5 500.1,154.6 500.6,154.6 501.1,154.6 501.6,154.4 502.1,154.4 502.6,154.4 503.1,154.5 503.6,154.5 504.1,154.6 504.6,154.7 505.1,154.6 505.6,154.5 506.1,154.5 506.6,154.6 507.1,154.4 507.6,154.2 508.1,154.1 508.6,153.8 509.1,153.6 509.6,153.8 510.1,154.1 510.6,154.2 511.1,154.2 511.6,154.5 512.1,154.6 512.6,154.6 513.1,154.7 513.6,154.8 514.1,154.6 514.6,154.5 515.1,154.4 515.6,154.5 516.1,154.5 516.6,156.6 517.1,163.2 517.6,153.6 518.1,142.5 518.6,148.0 519.1,159.8 519.6,162.2 520.1,155.1 520.6,154.4 521.1,154.5 521.6,154.5 522.1,154.5 522.6,154.4 523.1,154.4 523.6,154.5 524.1,154.5 524.6,154.6 525.1,154.4 525.6,154.4 526.1,154.4 526.6,154.3 527.1,154.3 527.6,154.3 528.1,154.4 528.6,154.2 529.1,154.1 529.6,153.8 530.1,153.6 530.6,153.7 531.1,153.4 531.6,153.3 532.1,153.2 532.6,153.2 533.1,153.3 533.6,153.4 534.1,153.5 534.6,153.4 535.1,153.3 535.6,153.6 536.1,153.7 536.6,153.9 537.1,154.0 537.6,154.0 538.1,154.0 538.6,154.1 539.1,154.3 539.6,154.4 540.1,154.4 540.6,154.4 541.1,154.4 541.6,154.3 542.1,154.5 542.6,154.5 543.1,154.7 543.6,154.6 544.1,154.6 544.6,154.5 545.1,154.3 545.6,154.5 546.1,154.6 546.6,154.5 547.1,154.6 547.6,154.7 548.1,154.5 548.6,154.6 549.1,154.7 549.6,154.6 550.1,154.7 550.6,154.5 551.1,154.5 551.6,154.6 552.1,154.5 552.6,154.4 553.1,154.5 553.6,154.5 554.1,154.5 554.6,154.3 555.1,154.0 555.6,153.8 556.1,153.6 556.6,153.8 557.1,153.8 557.6,154.0 558.1,154.1 558.6,154.3 559.1,154.4 559.6,154.4 560.1,154.3 560.6,154.3 561.1,154.5 561.6,154.4 562.1,154.4 562.6,154.3 563.1,154.3 563.6,154.3 564.1,154.3 564.6,154.4 565.1,154.4 565.6,154.3 566.1,154.5 566.6,154.4 567.1,154.3 567.6,154.5 568.1,154.4" fill="none" stroke="#3a3a3a" stroke-width="0.75" stroke-linejoin="round"/><polyline points="0.0,233.4 0.5,233.5 1.0,233.5 1.5,233.2 2.0,233.1 2.5,233.1 3.0,233.0 3.5,233.1 4.0,232.8 4.5,232.9 5.0,232.7 5.5,232.5 6.0,232.4 6.5,232.1 7.0,232.1 7.5,231.8 8.0,231.6 8.5,231.3 9.0,230.8 9.5,230.3 10.0,229.9 10.5,229.4 11.0,229.2 11.5,228.7 12.0,228.5 12.5,228.4 13.0,228.3 13.5,228.6 14.0,228.8 14.5,229.2 15.0,229.7 15.5,230.1 16.0,230.7 16.5,231.1 17.0,231.5 17.5,232.2 18.0,232.5 18.5,232.9 19.0,233.0 19.5,233.3 20.0,233.4 20.5,233.5 21.0,233.6 21.5,233.5 22.0,233.6 22.5,233.6 23.0,233.6 23.5,233.7 24.0,233.7 24.5,233.7 25.0,233.9 25.5,233.9 26.0,234.0 26.5,234.0 27.0,233.8 27.5,233.7 28.0,233.6 28.5,233.7 29.0,233.8 29.5,233.8 30.0,233.8 30.5,233.8 31.0,233.9 31.5,233.8 32.0,233.9 32.5,233.8 33.0,233.8 33.5,233.7 34.0,233.5 34.5,233.6 35.0,233.6 35.5,233.5 36.0,233.2 36.5,233.1 37.0,233.2 37.5,233.3 38.0,233.4 38.5,233.6 39.0,233.5 39.5,233.6 40.0,233.7 40.5,233.7 41.0,233.8 41.5,233.8 42.0,233.9 42.5,233.7 43.0,233.7 43.5,233.7 44.0,232.5 44.5,233.6 45.0,243.3 45.5,253.3 46.0,248.1 46.5,237.4 47.0,233.9 47.5,233.5 48.0,233.3 48.5,233.2 49.0,233.0 49.5,233.1 50.0,232.9 50.5,233.0 51.0,233.0 51.5,232.8 52.0,232.7 52.5,232.6 53.0,232.6 53.5,232.5 54.0,232.2 54.5,231.9 55.0,231.8 55.5,231.4 56.0,231.2 56.5,230.8 57.0,230.4 57.5,230.0 58.0,229.5 58.5,229.0 59.0,228.6 59.5,228.5 60.0,228.4 60.5,228.4 61.0,228.8 61.5,228.9 62.0,229.4 62.5,229.8 63.0,230.4 63.5,231.0 64.0,231.4 64.5,231.9 65.0,232.5 65.5,232.8 66.0,233.1 66.5,233.2 67.0,233.3 67.5,233.4 68.0,233.5 68.5,233.5 69.0,233.6 69.5,233.6 70.0,233.7 70.5,233.8 71.0,233.7 71.5,233.7 72.0,233.7 72.5,233.7 73.0,233.9 73.5,233.8 74.0,233.7 74.5,233.9 75.0,233.7 75.5,233.8 76.0,233.7 76.5,233.9 77.0,233.9 77.5,233.9 78.0,233.8 78.5,233.8 79.0,233.8 79.5,233.8 80.0,233.9 80.5,233.9 81.0,233.7 81.5,233.6 82.0,233.5 82.5,233.3 83.0,233.1 83.5,233.1 84.0,233.1 84.5,233.4 85.0,233.5 85.5,233.5 86.0,233.6 86.5,233.7 87.0,233.7 87.5,233.6 88.0,233.6 88.5,233.5 89.0,233.8 89.5,233.8 90.0,233.7 90.5,233.8 91.0,233.6 91.5,232.1 92.0,236.7 92.5,248.1 93.0,253.2 93.5,243.2 94.0,235.3 94.5,233.4 95.0,233.4 95.5,233.4 96.0,233.3 96.5,233.4 97.0,233.3 97.5,233.0 98.0,232.9 98.5,232.7 99.0,232.5 99.5,232.6 100.0,232.6 100.5,232.4 101.0,232.2 101.5,232.1 102.0,232.0 102.5,231.8 103.0,231.3 103.5,231.0 104.0,230.6 104.5,230.2 105.0,229.6 105.5,229.1 106.0,228.9 106.5,228.5 107.0,228.4 107.5,228.4 108.0,228.5 108.5,228.8 109.0,229.1 109.5,229.4 110.0,230.0 110.5,230.6 111.0,231.2 111.5,231.8 112.0,232.3 112.5,232.7 113.0,233.0 113.5,233.2 114.0,233.2 114.5,233.4 115.0,233.5 115.5,233.5 116.0,233.7 116.5,233.6 117.0,233.7 117.5,233.9 118.0,233.7 118.5,233.6 119.0,233.7 119.5,233.6 120.0,233.8 120.5,233.6 121.0,233.8 121.5,233.9 122.0,234.0 122.5,233.9 123.0,233.8 123.5,233.8 124.0,233.8 124.5,233.8 125.0,233.7 125.5,233.7 126.0,233.8 126.5,233.9 127.0,234.0 127.5,233.8 128.0,233.7 128.5,233.7 129.0,233.6 129.5,233.5 130.0,233.3 130.5,233.1 131.0,233.1 131.5,233.3 132.0,233.6 132.5,233.8 133.0,233.9 133.5,234.0 134.0,234.1 134.5,234.0 135.0,234.0 135.5,233.8 136.0,233.8 136.5,233.8 137.0,233.8 137.5,233.8 138.0,233.9 138.5,233.8 139.0,233.8 139.5,233.7 140.0,233.6 140.5,233.7 141.0,233.5 141.5,233.4 142.0,233.4 142.4,232.7 142.9,232.5 143.4,232.5 143.9,232.4 144.4,232.4 144.9,232.3 145.4,232.2 145.9,232.2 146.4,232.0 146.9,231.8 147.4,231.7 147.9,231.7 148.4,231.6 148.9,231.3 149.4,231.2 149.9,230.8 150.4,230.3 150.9,230.0 151.4,229.5 151.9,229.0 152.4,228.6 152.9,228.1 153.4,227.8 153.9,227.5 154.4,227.4 154.9,227.5 155.4,227.5 155.9,227.8 156.4,228.1 156.9,228.7 157.4,229.4 157.9,229.9 158.4,230.5 158.9,231.1 159.4,231.4 159.9,231.9 160.4,232.3 160.9,232.4 161.4,232.7 161.9,232.8 162.4,232.8 162.9,233.0 163.4,233.1 163.9,233.2 164.4,233.0 164.9,233.1 165.4,233.0 165.9,233.0 166.4,233.0 166.9,232.9 167.4,233.0 167.9,233.0 168.4,232.9 168.9,233.1 169.4,233.1 169.9,233.2 170.4,233.2 170.9,233.3 171.4,233.2 171.9,233.3 172.4,233.3 172.9,233.1 173.4,233.2 173.9,233.1 174.4,233.2 174.9,233.2 175.4,233.2 175.9,232.9 176.4,232.8 176.9,232.7 177.4,232.6 177.9,232.5 178.4,232.3 178.9,232.5 179.4,232.5 179.9,232.8 180.4,233.0 180.9,233.0 181.4,233.2 181.9,233.2 182.4,233.1 182.9,233.0 183.4,233.0 183.9,233.1 184.4,233.1 184.9,233.0 185.4,232.8 185.9,230.9 186.4,231.8 186.9,240.4 187.4,248.6 187.9,244.4 188.4,236.0 188.9,233.1 189.4,232.6 189.9,232.7 190.4,232.6 190.9,232.6 191.4,232.6 191.9,232.6 192.4,232.3 192.9,232.1 193.4,232.0 193.9,231.9 194.4,232.0 194.9,231.9 195.4,231.6 195.9,231.3 196.4,231.3 196.9,231.1 197.4,230.7 197.9,230.3 198.4,229.8 198.9,229.4 199.4,228.9 199.9,228.6 200.4,228.2 200.9,227.7 201.4,227.5 201.9,227.3 202.4,227.6 202.9,227.8 203.4,228.0 203.9,228.3 204.4,228.9 204.9,229.5 205.4,230.1 205.9,230.6 206.4,231.1 206.9,231.4 207.4,231.9 207.9,232.2 208.4,232.3 208.9,232.5 209.4,232.9 209.9,232.8 210.4,232.8 210.9,233.0 211.4,233.0 211.9,232.9 212.4,233.0 212.9,233.0 213.4,233.0 213.9,233.1 214.4,233.2 214.9,233.3 215.4,233.1 215.9,233.1 216.4,233.2 216.9,233.3 217.4,233.3 217.9,233.3 218.4,233.2 218.9,233.1 219.4,233.1 219.9,233.2 220.4,233.3 220.9,233.3 221.4,233.3 221.9,233.1 222.4,233.2 222.9,233.1 223.4,233.0 223.9,232.8 224.4,232.5 224.9,232.4 225.4,232.3 225.9,232.2 226.4,232.4 226.9,232.6 227.4,233.0 227.9,233.0 228.4,233.0 228.9,233.0 229.4,233.0 229.9,233.0 230.4,232.9 230.9,232.8 231.4,233.0 231.9,233.0 232.4,233.0 232.9,232.6 233.4,230.2 233.9,234.7 234.4,244.3 234.9,248.4 235.4,240.5 235.9,234.2 236.4,232.9 236.9,232.8 237.4,232.7 237.9,232.7 238.4,232.6 238.9,232.3 239.4,232.2 239.9,232.2 240.4,232.3 240.9,232.1 241.4,232.1 241.9,231.9 242.4,231.9 242.9,231.5 243.4,231.4 243.9,231.3 244.4,230.9 244.9,230.4 245.4,229.9 245.9,229.5 246.4,229.0 246.9,228.7 247.4,228.2 247.9,227.8 248.4,227.5 248.9,227.4 249.4,227.6 249.9,227.7 250.4,227.8 250.9,228.3 251.4,228.9 251.9,229.4 252.4,229.7 252.9,230.4 253.4,231.0 253.9,231.4 254.4,231.7 254.9,231.9 255.4,232.3 255.9,232.6 256.4,232.8 256.9,233.0 257.4,233.0 257.9,233.0 258.4,233.1 258.9,233.1 259.4,233.1 259.9,233.2 260.4,233.1 260.9,233.0 261.4,233.0 261.9,232.9 262.4,233.0 262.9,233.0 263.4,233.0 263.9,233.1 264.4,233.0 264.9,233.0 265.4,232.9 265.9,233.1 266.4,233.1 266.9,233.3 267.4,233.1 267.9,233.1 268.4,233.2 268.9,233.1 269.4,233.0 269.9,232.9 270.4,232.8 270.9,232.8 271.4,232.5 271.9,232.5 272.4,232.3 272.9,232.3 273.4,232.5 273.9,232.6 274.4,232.9 274.9,233.0 275.4,233.0 275.9,233.1 276.4,233.1 276.9,233.1 277.4,233.2 277.9,233.2 278.4,233.1 278.9,233.2 279.4,233.3 279.9,233.2 280.4,233.0 280.9,233.0 281.4,233.1 281.9,232.9 282.4,232.7 282.9,232.8 283.4,232.8 283.9,233.1 284.4,232.8 284.9,232.6 285.4,232.0 285.9,231.6 286.4,230.9 286.9,230.3 287.4,229.7 287.9,229.0 288.4,228.6 288.9,228.1 289.4,227.6 289.9,227.3 290.4,226.9 290.9,226.4 291.4,226.0 291.9,225.9 292.4,225.9 292.9,225.6 293.4,225.6 293.9,225.9 294.4,226.3 294.9,227.0 295.4,227.6 295.9,228.4 296.4,229.2 296.9,230.1 297.4,230.8 297.9,231.5 298.4,232.2 298.9,232.5 299.4,233.0 299.9,233.1 300.4,233.4 300.9,233.5 301.4,233.8 301.9,233.6 302.4,233.7 302.9,233.7 303.4,233.9 303.9,234.0 304.4,234.0 304.9,233.8 305.4,233.7 305.9,233.7 306.4,233.7 306.9,233.7 307.4,233.6 307.9,233.8 308.4,233.8 308.9,233.8 309.4,233.9 309.9,233.8 310.4,233.8 310.9,233.7 311.4,233.9 311.9,233.9 312.4,233.8 312.9,233.9 313.4,233.9 313.9,233.8 314.4,233.8 314.9,233.8 315.4,233.9 315.9,233.8 316.4,233.8 316.9,233.8 317.4,233.8 317.9,233.7 318.4,233.7 318.9,233.4 319.4,233.4 319.9,233.2 320.4,233.3 320.9,233.5 321.4,233.5 321.9,233.7 322.4,233.9 322.9,233.8 323.4,233.7 323.9,233.6 324.4,233.8 324.9,233.7 325.4,233.8 325.9,233.7 326.4,233.8 326.9,233.6 327.4,233.7 327.9,235.8 328.4,245.0 328.9,262.2 329.4,268.7 329.9,254.0 330.4,237.7 330.9,231.1 331.4,229.0 331.9,228.2 332.4,227.8 332.9,227.5 333.4,227.3 333.9,227.3 334.4,227.4 334.9,227.5 335.4,227.4 335.9,227.3 336.4,227.4 336.9,227.1 337.4,227.0 337.9,226.6 338.4,226.3 338.9,225.9 339.4,225.7 339.9,225.5 340.4,225.6 340.9,225.7 341.4,226.1 341.9,226.5 342.4,227.0 342.9,227.8 343.4,228.6 343.9,229.6 344.4,230.3 344.9,231.0 345.4,231.8 345.9,232.5 346.4,232.9 346.9,233.1 347.4,233.3 347.9,233.4 348.4,233.4 348.9,233.4 349.4,233.6 349.9,233.6 350.4,233.7 350.9,233.7 351.4,233.6 351.9,233.7 352.4,233.8 352.9,233.8 353.4,233.8 353.9,233.9 354.4,234.0 354.9,234.0 355.4,234.0 355.9,233.9 356.4,233.8 356.9,233.8 357.4,233.9 357.9,233.8 358.4,233.8 358.9,233.8 359.4,233.7 359.9,233.9 360.4,233.7 360.9,233.8 361.4,233.9 361.9,233.8 362.4,233.8 362.9,233.8 363.4,233.7 363.9,233.6 364.4,233.6 364.9,233.7 365.4,233.7 365.9,233.7 366.4,233.3 366.9,233.3 367.4,233.2 367.9,233.3 368.4,233.4 368.9,233.5 369.4,233.8 369.9,233.7 370.4,233.8 370.9,233.9 371.4,233.9 371.9,233.9 372.4,234.0 372.9,233.8 373.4,233.8 373.9,233.8 374.4,233.7 374.9,234.3 375.4,238.3 375.9,251.7 376.4,267.5 376.9,264.6 377.4,246.3 377.9,233.9 378.4,229.9 378.9,228.6 379.4,228.0 379.9,227.5 380.4,227.5 380.9,227.4 381.4,227.5 381.9,227.6 382.4,227.6 382.9,227.5 383.4,227.4 383.9,227.4 384.4,227.1 384.9,226.8 385.4,226.5 385.9,226.3 386.4,225.9 386.9,225.7 387.4,225.7 387.9,225.7 388.4,226.0 388.9,226.4 389.4,227.0 389.9,227.7 390.4,228.2 390.9,229.0 391.4,229.9 391.9,230.8 392.4,231.3 392.9,231.9 393.4,232.3 393.9,232.7 394.4,233.0 394.9,233.4 395.4,233.6 395.9,233.6 396.4,233.6 396.9,233.6 397.4,233.9 397.9,233.9 398.4,233.8 398.9,233.8 399.4,233.9 399.9,233.9 400.4,233.8 400.9,233.8 401.4,233.8 401.9,233.8 402.4,233.7 402.9,233.7 403.4,233.7 403.9,233.7 404.4,233.6 404.9,233.6 405.4,233.7 405.9,233.6 406.4,233.6 406.9,233.7 407.4,233.7 407.9,233.7 408.4,233.7 408.9,233.8 409.4,233.7 409.9,233.8 410.4,233.9 410.9,233.8 411.4,233.7 411.9,233.8 412.4,233.8 412.9,233.6 413.4,233.3 413.9,233.2 414.4,233.1 414.9,233.2 415.4,233.3 415.9,233.4 416.4,233.6 416.9,233.8 417.4,233.8 417.9,233.8 418.4,233.8 418.9,233.9 419.4,233.8 419.9,233.9 420.4,233.9 420.9,233.8 421.4,233.9 421.9,233.8 422.4,233.6 422.9,233.7 423.4,233.6 423.9,233.6 424.4,233.5 424.9,233.5 425.6,235.0 426.1,234.8 426.6,234.9 427.1,234.9 427.6,234.9 428.1,235.0 428.6,234.9 429.1,234.9 429.6,235.0 430.1,234.9 430.6,234.9 431.1,234.9 431.6,234.9 432.1,234.9 432.6,234.8 433.1,234.7 433.6,234.4 434.1,234.4 434.6,234.3 435.1,234.2 435.6,234.1 436.1,233.7 436.6,233.5 437.1,233.3 437.6,233.4 438.1,233.2 438.6,233.1 439.1,233.3 439.6,233.4 440.1,233.3 440.6,233.6 441.1,233.8 441.6,234.0 442.1,234.0 442.6,234.2 443.1,234.3 443.6,234.5 444.1,234.8 444.6,234.9 445.1,235.0 445.6,234.8 446.1,234.8 446.6,234.8 447.1,234.7 447.6,234.9 448.1,234.9 448.6,234.8 449.1,234.8 449.6,234.8 450.1,234.9 450.6,234.9 451.1,234.9 451.6,234.9 452.1,234.8 452.6,234.8 453.1,234.9 453.6,235.0 454.1,235.1 454.6,234.9 455.1,234.8 455.6,234.7 456.1,234.8 456.6,234.8 457.1,234.8 457.6,234.9 458.1,234.9 458.6,234.8 459.1,234.9 459.6,234.7 460.1,234.7 460.6,234.5 461.1,234.2 461.6,234.0 462.1,234.1 462.6,234.2 463.1,234.4 463.6,234.5 464.1,234.6 464.6,234.9 465.1,234.8 465.6,234.9 466.1,235.0 466.6,235.0 467.1,234.9 467.6,235.1 468.1,235.0 468.6,235.1 469.1,234.9 469.6,235.3 470.1,232.6 470.6,217.2 471.1,214.6 471.6,230.6 472.1,236.3 472.6,235.1 473.1,235.0 473.6,235.0 474.1,235.0 474.6,235.0 475.1,235.0 475.6,235.0 476.1,234.9 476.6,234.8 477.1,234.9 477.6,234.8 478.1,234.9 478.6,234.8 479.1,234.6 479.6,234.5 480.1,234.6 480.6,234.7 481.1,234.5 481.6,234.4 482.1,234.2 482.6,234.1 483.1,234.0 483.6,233.7 484.1,233.4 484.6,233.4 485.1,233.2 485.6,233.3 486.1,233.2 486.6,233.2 487.1,233.4 487.6,233.5 488.1,233.6 488.6,233.7 489.1,234.0 489.6,234.1 490.1,234.4 490.6,234.4 491.1,234.6 491.6,234.8 492.1,234.8 492.6,234.7 493.1,234.7 493.6,234.8 494.1,234.8 494.6,234.8 495.1,234.7 495.6,234.8 496.1,234.9 496.6,234.9 497.1,234.9 497.6,234.8 498.1,234.9 498.6,234.8 499.1,235.0 499.6,235.1 500.1,235.2 500.6,235.1 501.1,234.9 501.6,234.9 502.1,235.0 502.6,234.9 503.1,235.1 503.6,234.9 504.1,234.9 504.6,235.0 505.1,235.0 505.6,235.0 506.1,234.8 506.6,234.7 507.1,234.6 507.6,234.6 508.1,234.5 508.6,234.2 509.1,234.2 509.6,234.1 510.1,234.3 510.6,234.6 511.1,234.7 511.6,234.9 512.1,235.0 512.6,234.8 513.1,234.8 513.6,234.8 514.1,234.8 514.6,234.9 515.1,234.8 515.6,234.9 516.1,234.9 516.6,234.8 517.1,235.3 517.6,227.4 518.1,212.5 518.6,220.8 519.1,234.7 519.6,236.0 520.1,234.8 520.6,234.8 521.1,234.7 521.6,234.8 522.1,234.8 522.6,234.8 523.1,234.8 523.6,234.8 524.1,234.9 524.6,234.8 525.1,234.7 525.6,234.9 526.1,234.8 526.6,234.8 527.1,234.9 527.6,234.7 528.1,234.5 528.6,234.3 529.1,234.3 529.6,234.0 530.1,233.9 530.6,233.8 531.1,233.5 531.6,233.4 532.1,233.2 532.6,233.2 533.1,233.3 533.6,233.2 534.1,233.2 534.6,233.4 535.1,233.4 535.6,233.5 536.1,233.7 536.6,234.0 537.1,234.2 537.6,234.5 538.1,234.4 538.6,234.7 539.1,234.7 539.6,234.9 540.1,234.9 540.6,234.9 541.1,234.8 541.6,234.9 542.1,234.8 542.6,234.8 543.1,234.7 543.6,234.7 544.1,234.8 544.6,234.8 545.1,234.9 545.6,234.8 546.1,234.9 546.6,234.8 547.1,234.9 547.6,235.0 548.1,235.0 548.6,234.8 549.1,234.8 549.6,234.9 550.1,235.0 550.6,234.8 551.1,234.9 551.6,235.0 552.1,235.0 552.6,234.9 553.1,235.0 553.6,234.9 554.1,235.0 554.6,234.6 555.1,234.6 555.6,234.3 556.1,234.1 556.6,234.0 557.1,234.0 557.6,234.4 558.1,234.6 558.6,234.6 559.1,234.7 559.6,234.7 560.1,234.7 560.6,234.7 561.1,234.7 561.6,234.9 562.1,235.1 562.6,235.1 563.1,235.0 563.6,235.0 564.1,235.0 564.6,235.1 565.1,235.1 565.6,235.1 566.1,234.9 566.6,234.9 567.1,235.0 567.6,235.1 568.1,234.9" fill="none" stroke="#3a3a3a" stroke-width="0.75" stroke-linejoin="round"/><polyline points="0.0,309.9 0.5,309.9 1.0,309.8 1.5,309.9 2.0,310.0 2.5,310.0 3.0,309.9 3.5,309.9 4.0,310.0 4.5,310.0 5.0,310.0 5.5,310.0 6.0,310.0 6.5,310.0 7.0,309.9 7.5,309.9 8.0,309.9 8.5,309.9 9.0,309.8 9.5,309.8 10.0,309.8 10.5,309.8 11.0,309.6 11.5,309.6 12.0,309.6 12.5,309.5 13.0,309.5 13.5,309.4 14.0,309.3 14.5,309.4 15.0,309.4 15.5,309.4 16.0,309.6 16.5,309.6 17.0,309.7 17.5,309.7 18.0,309.8 18.5,309.8 19.0,309.9 19.5,309.9 20.0,310.0 20.5,309.9 21.0,309.8 21.5,309.9 22.0,310.0 22.5,309.9 23.0,309.9 23.5,310.0 24.0,310.0 24.5,309.9 25.0,309.9 25.5,309.8 26.0,309.8 26.5,309.9 27.0,309.9 27.5,309.9 28.0,309.9 28.5,309.9 29.0,309.8 29.5,309.8 30.0,309.9 30.5,309.9 31.0,309.9 31.5,309.8 32.0,309.8 32.5,309.9 33.0,309.8 33.5,309.8 34.0,309.7 34.5,309.4 35.0,309.1 35.5,308.7 36.0,308.6 36.5,308.6 37.0,308.8 37.5,309.2 38.0,309.5 38.5,309.6 39.0,309.9 39.5,309.9 40.0,310.0 40.5,309.9 41.0,309.9 41.5,310.0 42.0,310.0 42.5,310.0 43.0,309.9 43.5,310.2 44.0,311.5 44.5,310.0 45.0,302.5 45.5,303.5 46.0,309.5 46.5,310.4 47.0,310.0 47.5,309.9 48.0,309.9 48.5,309.8 49.0,309.9 49.5,309.9 50.0,309.9 50.5,309.9 51.0,310.0 51.5,310.0 52.0,310.0 52.5,309.9 53.0,309.9 53.5,309.9 54.0,310.0 54.5,309.9 55.0,309.9 55.5,309.9 56.0,309.8 56.5,309.8 57.0,309.7 57.5,309.8 58.0,309.7 58.5,309.6 59.0,309.6 59.5,309.4 60.0,309.5 60.5,309.5 61.0,309.4 61.5,309.4 62.0,309.5 62.5,309.5 63.0,309.6 63.5,309.6 64.0,309.6 64.5,309.6 65.0,309.6 65.5,309.7 66.0,309.8 66.5,309.8 67.0,309.8 67.5,309.9 68.0,309.8 68.5,309.8 69.0,309.9 69.5,309.9 70.0,309.9 70.5,309.9 71.0,309.9 71.5,309.9 72.0,309.9 72.5,310.0 73.0,310.0 73.5,310.0 74.0,310.0 74.5,309.9 75.0,310.0 75.5,310.0 76.0,310.0 76.5,309.9 77.0,309.9 77.5,309.9 78.0,309.9 78.5,310.0 79.0,309.9 79.5,309.8 80.0,309.9 80.5,309.9 81.0,309.7 81.5,309.6 82.0,309.3 82.5,308.9 83.0,308.6 83.5,308.5 84.0,308.6 84.5,309.0 85.0,309.4 85.5,309.6 86.0,309.7 86.5,309.9 87.0,309.9 87.5,309.9 88.0,309.9 88.5,309.8 89.0,309.8 89.5,309.8 90.0,309.8 90.5,310.0 91.0,310.5 91.5,311.8 92.0,307.1 92.5,301.5 93.0,306.3 93.5,310.4 94.0,310.3 94.5,309.9 95.0,309.9 95.5,309.9 96.0,309.9 96.5,309.9 97.0,309.9 97.5,310.0 98.0,309.9 98.5,309.9 99.0,310.0 99.5,309.9 100.0,309.9 100.5,309.9 101.0,309.8 101.5,309.9 102.0,309.8 102.5,309.9 103.0,309.8 103.5,309.8 104.0,309.8 104.5,309.7 105.0,309.6 105.5,309.5 106.0,309.5 106.5,309.5 107.0,309.5 107.5,309.4 108.0,309.5 108.5,309.4 109.0,309.4 109.5,309.4 110.0,309.5 110.5,309.6 111.0,309.6 111.5,309.7 112.0,309.7 112.5,309.8 113.0,309.8 113.5,309.8 114.0,309.8 114.5,309.9 115.0,309.9 115.5,309.8 116.0,309.9 116.5,309.9 117.0,309.9 117.5,309.9 118.0,310.0 118.5,309.9 119.0,309.9 119.5,309.8 120.0,309.8 120.5,309.9 121.0,309.9 121.5,310.0 122.0,309.9 122.5,309.9 123.0,309.9 123.5,309.9 124.0,309.9 124.5,310.0 125.0,310.0 125.5,309.9 126.0,309.9 126.5,310.0 127.0,309.9 127.5,310.0 128.0,309.9 128.5,309.8 129.0,309.6 129.5,309.3 130.0,309.0 130.5,308.7 131.0,308.7 131.5,308.9 132.0,309.2 132.5,309.4 133.0,309.6 133.5,309.8 134.0,309.9 134.5,309.9 135.0,309.8 135.5,309.8 136.0,309.8 136.5,309.9 137.0,310.0 137.5,310.0 138.0,310.0 138.5,311.2 139.0,311.0 139.5,303.9 140.0,302.4 140.5,308.5 141.0,310.5 141.5,309.9 142.0,309.8 142.5,309.8 143.0,309.8 143.5,309.9 144.0,309.9 144.5,309.8 145.0,309.9 145.5,309.8 146.0,309.8 146.5,309.9 147.0,309.8 147.5,309.8 148.0,309.9 148.5,309.8 149.0,309.9 149.5,309.8 150.0,309.9 150.5,309.9 151.0,309.8 151.5,309.7 152.0,309.7 152.5,309.6 153.0,309.5 153.5,309.5 154.0,309.4 154.5,309.4 155.0,309.4 155.5,309.4 156.0,309.4 156.5,309.4 157.0,309.5 157.5,309.4 158.0,309.6 158.5,309.7 159.0,309.7 159.5,309.8 160.0,309.8 160.5,309.9 161.0,309.8 161.5,309.8 162.0,309.8 162.5,309.8 163.0,309.9 163.5,309.9 164.0,309.9 164.5,309.9 165.0,309.8 165.5,309.8 166.0,309.8 166.5,309.8 167.0,309.9 167.5,309.9 168.0,309.9 168.5,309.8 169.0,309.9 169.5,309.8 170.0,309.8 170.5,309.9 171.0,309.9 171.5,310.0 172.0,310.0 172.5,310.0 173.0,310.1 173.5,310.0 174.0,310.0 174.5,309.9 175.0,309.8 175.5,309.7 176.0,309.6 176.5,309.4 177.0,309.1 177.5,308.7 178.0,308.6 178.5,308.6 179.0,308.9 179.5,309.3 180.0,309.5 180.5,309.6 181.0,309.7 181.5,309.8 182.0,309.9 182.5,310.0 183.0,309.9 183.5,309.8 184.0,309.8 184.5,309.8 185.0,309.9 185.5,310.2 186.0,311.9 186.5,308.7 187.0,301.9 187.5,305.0 188.0,310.1 188.5,310.3 189.0,309.9 189.5,309.9 190.0,309.9 190.5,309.8 191.0,309.8 191.5,309.8 192.0,309.9 192.5,309.9 193.0,310.0 193.5,310.0 194.0,310.0 194.5,310.0 195.0,309.9 195.5,310.0 196.0,310.0 196.5,309.9 197.0,309.7 197.5,309.7 198.0,309.7 198.5,309.7 199.0,309.6 199.5,309.6 200.0,309.7 200.5,309.6 201.0,309.4 201.5,309.5 202.0,309.5 202.5,309.3 203.0,309.3 203.5,309.4 204.0,309.5 204.5,309.5 205.0,309.5 205.5,309.5 206.0,309.5 206.5,309.7 207.0,309.7 207.5,309.7 208.0,309.7 208.5,309.7 209.0,309.7 209.5,309.8 210.0,309.8 210.5,309.9 211.0,309.9 211.5,309.9 212.0,309.8 212.5,309.9 213.0,309.8 213.5,309.8 214.0,309.9 214.5,309.9 215.0,309.9 215.5,309.9 216.0,309.9 216.5,309.9 217.0,309.9 217.5,309.8 218.0,309.9 218.5,309.9 219.0,309.8 219.5,309.8 220.0,309.9 220.5,309.9 221.0,309.9 221.5,309.9 222.0,310.0 222.5,309.9 223.0,309.8 223.5,309.5 224.0,309.2 224.5,308.9 225.0,308.7 225.5,308.6 226.0,308.7 226.5,308.9 227.0,309.4 227.5,309.6 228.0,309.8 228.5,309.9 229.0,310.0 229.5,310.0 230.0,309.9 230.5,309.9 231.0,309.8 231.5,309.9 232.0,309.8 232.5,310.0 233.0,310.9 233.5,311.6 234.0,305.4 234.5,301.7 235.0,307.5 235.5,310.4 236.0,310.1 236.5,310.0 237.0,310.0 237.5,309.9 238.0,310.0 238.5,309.9 239.0,310.0 239.5,309.9 240.0,309.9 240.5,309.9 241.0,310.0 241.5,309.9 242.0,309.8 242.5,309.8 243.0,309.8 243.5,309.8 244.0,309.7 244.5,309.8 245.0,309.7 245.5,309.8 246.0,309.8 246.5,309.7 247.0,309.6 247.5,309.6 248.0,309.5 248.5,309.4 249.0,309.4 249.5,309.4 250.0,309.4 250.5,309.4 251.0,309.3 251.5,309.4 252.0,309.5 252.5,309.6 253.0,309.5 253.5,309.6 254.0,309.6 254.5,309.7 255.0,309.7 255.5,309.8 256.0,309.9 256.5,309.9 257.0,309.8 257.5,309.8 258.0,309.8 258.5,309.8 259.0,309.9 259.5,309.9 260.0,309.9 260.5,309.9 261.0,309.9 261.5,309.9 262.0,310.0 262.5,310.0 263.0,310.0 263.5,310.0 264.0,310.0 264.5,310.0 265.0,309.9 265.5,309.9 266.0,310.0 266.5,309.9 267.0,310.0 267.5,309.9 268.0,310.0 268.5,309.9 269.0,309.9 269.5,309.9 270.0,309.8 270.5,309.6 271.0,309.4 271.5,309.0 272.0,308.7 272.5,308.7 273.0,308.7 273.5,309.0 274.0,309.3 274.5,309.6 275.0,309.9 275.5,310.0 276.0,309.9 276.5,309.9 277.0,309.9 277.5,309.8 278.0,309.8 278.5,309.9 279.0,310.0 279.5,309.9 280.0,310.1 280.5,311.6 281.0,310.1 281.5,302.7 282.0,303.6 282.5,309.4 283.0,310.5 283.5,310.0 284.0,309.9 284.5,309.9 285.0,309.9 285.5,310.0 286.0,309.9 286.5,309.9 287.0,309.9 287.5,309.9 288.0,310.0 288.5,309.9 289.0,310.0 289.5,310.0 290.0,310.0 290.5,309.9 291.0,309.8 291.5,309.8 292.0,309.9 292.5,309.7 293.0,309.7 293.5,309.7 294.0,309.7 294.5,309.6 295.0,309.6 295.5,309.5 296.0,309.5 296.5,309.5 297.0,309.5 297.5,309.4 298.0,309.4 298.5,309.3 299.0,309.4 299.5,309.4 300.0,309.4 300.5,309.6 301.0,309.7 301.5,309.7 302.0,309.8 302.5,309.8 303.0,309.9 303.5,309.8 304.0,309.8 304.5,309.7 305.0,309.7 305.5,309.8 306.0,309.8 306.5,309.7 307.0,309.8 307.5,309.9 308.0,309.9 308.5,309.9 309.0,309.9 309.5,309.9 310.0,309.8 310.5,309.8 311.0,309.8 311.5,309.9 312.0,309.9 312.5,309.9 313.0,309.8 313.5,309.9 314.0,309.9 314.5,310.0 315.0,309.9 315.5,309.9 316.0,309.9 316.5,309.9 317.0,309.9 317.5,309.8 318.0,309.6 318.5,309.2 319.0,308.9 319.5,308.7 320.0,308.5 320.5,308.7 321.0,309.0 321.5,309.3 322.0,309.5 322.5,309.7 323.0,309.7 323.5,309.9 324.0,309.9 324.5,309.9 325.0,309.9 325.5,309.9 326.0,309.8 326.5,309.8 327.0,309.9 327.5,310.4 328.0,311.9 328.5,307.0 329.0,301.5 329.5,306.2 330.0,310.4 330.5,310.2 331.0,309.9 331.5,309.9 332.0,309.8 332.5,309.8 333.0,309.9 333.5,309.9 334.0,309.9 334.5,309.9 335.0,309.9 335.5,309.8 336.0,309.8 336.5,309.8 337.0,309.8 337.5,309.9 338.0,309.9 338.5,309.9 339.0,309.8 339.5,309.8 340.0,309.8 340.5,309.7 341.0,309.6 341.5,309.6 342.0,309.5 342.5,309.5 343.0,309.5 343.5,309.4 344.0,309.3 344.5,309.3 345.0,309.3 345.5,309.3 346.0,309.4 346.5,309.3 347.0,309.4 347.5,309.4 348.0,309.5 348.5,309.7 349.0,309.7 349.5,309.7 350.0,309.7 350.5,309.8 351.0,309.8 351.5,309.9 352.0,310.0 352.5,310.0 353.0,309.9 353.5,310.0 354.0,310.0 354.5,309.9 355.0,309.8 355.5,309.9 356.0,309.9 356.5,309.8 357.0,309.8 357.5,309.9 358.0,309.9 358.5,309.9 359.0,309.9 359.5,309.9 360.0,309.8 360.5,309.8 361.0,309.9 361.5,309.9 362.0,309.8 362.5,309.9 363.0,309.9 363.5,309.8 364.0,309.8 364.5,309.8 365.0,309.7 365.5,309.4 366.0,309.1 366.5,308.9 367.0,308.6 367.5,308.6 368.0,308.8 368.5,309.1 369.0,309.5 369.5,309.6 370.0,309.8 370.5,310.0 371.0,310.0 371.5,310.0 372.0,309.9 372.5,310.0 373.0,309.9 373.5,310.0 374.0,310.1 374.5,309.1 375.0,311.9 375.5,310.3 376.0,303.7 376.5,303.1 377.0,308.8 377.5,310.7 378.0,310.0 378.5,310.4 379.0,309.0 379.5,309.9 380.0,309.5 380.5,310.6 381.0,310.4 381.5,309.9 382.0,310.8 382.5,310.6 383.0,310.9 383.5,309.9 384.0,309.2 384.5,311.0 385.0,310.2 385.5,309.9 386.0,309.5 386.5,310.1 387.0,309.8 387.5,310.7 388.0,309.8 388.5,309.7 389.0,308.9 389.5,309.5 390.0,309.5 390.5,309.4 391.0,309.8 391.5,310.0 392.0,308.9 392.5,310.1 393.0,309.4 393.5,310.0 394.0,308.7 394.5,310.1 395.0,309.6 395.5,309.8 396.0,310.1 396.5,310.4 397.0,309.8 397.5,310.8 398.0,308.8 398.5,308.8 399.0,309.6 399.5,309.2 400.0,310.6 400.5,310.8 401.0,309.8 401.5,309.8 402.0,310.2 402.5,310.0 403.0,310.9 403.5,309.8 404.0,309.4 404.5,311.1 405.0,310.0 405.5,309.8 406.0,308.9 406.5,310.1 407.0,310.2 407.5,310.3 408.0,310.2 408.5,308.7 409.0,310.2 409.5,309.9 410.0,309.9 410.5,309.5 411.0,309.5 411.5,310.1 412.0,309.6 412.5,309.7 413.0,309.6 413.5,308.6 414.0,309.4 414.5,307.9 415.0,309.1 415.5,308.6 416.0,310.1 416.5,310.5 417.0,309.4 417.5,310.6 418.0,309.3 418.5,310.0 419.0,310.5 419.5,309.9 420.0,309.4 420.5,309.8 421.0,310.5 421.5,309.1 422.0,310.9 422.5,311.4 423.0,308.4 423.5,302.7 424.0,303.8 424.5,310.1 425.0,310.4 425.5,309.9 426.0,310.9 426.5,309.9 427.0,310.5 427.5,310.0 428.0,309.9 428.5,309.6 429.0,309.0 429.5,309.4 430.0,309.9 430.5,310.9 431.0,310.8 431.5,309.9 432.0,309.9 432.5,308.9 433.0,309.2 433.5,310.2 434.0,309.6 434.5,309.8 435.0,309.5 435.5,310.5 436.0,310.2 436.5,308.9 437.0,310.2 437.5,310.0 438.0,309.3 438.5,309.3 439.0,309.3 439.5,309.6 440.0,309.3 440.5,309.0 441.0,309.6 441.5,309.4 442.0,309.6 442.5,308.6 443.0,308.8 443.5,310.7 444.0,309.6 444.5,309.7 445.0,309.3 445.5,310.1 446.0,309.6 446.5,309.6 447.0,310.1 447.5,309.7 448.0,309.3 448.5,310.2 449.0,310.0 449.5,310.6 450.0,309.8 450.5,309.9 451.0,309.7 451.5,309.8 452.0,310.0 452.5,309.0 453.0,309.9 453.5,310.0 454.0,309.9 454.5,310.7 455.0,309.9 455.5,309.8 456.0,310.6 456.5,310.7 457.0,309.8 457.5,310.3 458.0,309.0 458.5,308.7 459.0,310.3 459.5,308.7 460.0,310.3 460.5,308.3 461.0,308.9 461.5,309.3 462.0,309.4 462.5,308.8 463.0,309.7 463.5,309.9 464.0,310.1 464.5,310.3 465.0,309.8 465.5,309.5 466.0,310.6 466.5,309.1 467.0,310.0 467.5,309.8 468.0,309.4 468.5,309.5 469.0,309.0 469.5,311.8 470.0,312.2 470.5,305.9 471.0,301.7 471.5,307.6 472.0,310.8 472.5,310.2 473.0,309.1 473.5,310.8 474.0,309.7 474.5,309.2 475.0,309.2 475.5,309.5 476.0,310.3 476.5,309.9 477.0,310.4 477.5,310.6 478.0,309.4 478.5,308.8 479.0,309.6 479.5,309.6 480.0,310.6 480.5,310.9 481.0,310.0 481.5,310.5 482.0,309.8 482.5,309.6 483.0,310.4 483.5,310.1 484.0,309.5 484.5,308.9 485.0,309.9 485.5,310.4 486.0,309.4 486.5,308.7 487.0,308.7 487.5,310.1 488.0,309.4 488.5,310.2 489.0,309.3 489.5,308.6 490.0,310.4 490.5,309.4 491.0,310.2 491.5,309.4 492.0,309.7 492.5,310.0 493.0,309.8 493.5,309.9 494.0,309.3 494.5,309.0 495.0,309.9 495.5,310.0 496.0,311.0 496.5,310.6 497.0,309.9 497.5,310.3 498.0,310.6 498.5,310.4 499.0,309.9 499.5,309.9 500.0,309.8 500.5,310.3 501.0,309.9 501.5,310.2 502.0,309.3 502.5,309.9 503.0,309.0 503.5,309.8 504.0,309.5 504.5,310.1 505.0,310.2 505.5,309.5 506.0,308.9 506.5,310.4 507.0,310.1 507.5,308.8 508.0,309.9 508.5,308.8 509.0,309.1 509.5,308.3 510.0,308.9 510.5,309.1 511.0,310.2 511.5,309.2 512.0,309.0 512.5,309.9 513.0,309.2 513.5,309.8 514.0,310.7 514.5,310.2 515.0,309.7 515.5,309.9 516.0,309.3 516.5,310.7 517.0,312.1 517.5,310.0 518.0,302.7 518.5,303.6 519.0,309.5 519.5,310.4 520.0,310.0 520.5,309.8 521.0,309.9 521.5,309.9 522.0,309.9 522.5,309.8 523.0,309.8 523.5,309.8 524.0,309.9 524.5,309.8 525.0,309.8 525.5,309.9 526.0,309.8 526.5,309.8 527.0,309.7 527.5,309.7 528.0,309.8 528.5,309.8 529.0,309.7 529.5,309.7 530.0,309.7 530.5,309.6 531.0,309.6 531.5,309.5 532.0,309.4 532.5,309.5 533.0,309.4 533.5,309.3 534.0,309.4 534.5,309.5 535.0,309.5 535.5,309.5 536.0,309.6 536.5,309.6 537.0,309.6 537.5,309.6 538.0,309.7 538.5,309.8 539.0,309.7 539.5,309.7 540.0,309.9 540.5,309.8 541.0,309.9 541.5,309.9 542.0,309.8 542.5,309.8 543.0,309.8 543.5,310.0 544.0,309.9 544.5,309.9 545.0,309.9 545.5,309.8 546.0,309.9 546.5,309.9 547.0,309.8 547.5,309.8 548.0,309.9 548.5,310.0 549.0,310.0 549.5,309.8 550.0,309.9 550.5,309.9 551.0,310.0 551.5,310.0 552.0,309.9 552.5,310.0 553.0,310.0 553.5,309.9 554.0,309.7 554.5,309.5 555.0,309.3 555.5,308.9 556.0,308.6 556.5,308.5 557.0,308.7 557.5,309.0 558.0,309.3 558.5,309.7 559.0,309.8 559.5,309.9 560.0,310.0 560.5,310.0 561.0,310.0 561.5,310.0 562.0,310.0 562.5,310.0 563.0,309.9 563.5,310.0 564.0,310.5 564.5,312.0 565.0,307.0 565.5,301.5 566.0,306.2 566.5,310.4 567.0,310.2 567.5,310.0 568.0,310.0 568.5,310.0" fill="none" stroke="#3a3a3a" stroke-width="0.75" stroke-linejoin="round"/><rect x="10.6" y="58.2" width="10.7" height="9.4" fill="#fff8f8" stroke="#ffd2d2" stroke-width="0.6"/><text x="12.8" y="65.8" font-family="Liberation Mono,monospace" font-weight="bold" font-size="9.6" fill="#1a1a1a" letter-spacing="-0.1">I</text><rect x="152.0" y="58.2" width="23.1" height="9.4" fill="#fff8f8" stroke="#ffd2d2" stroke-width="0.6"/><text x="154.2" y="65.8" font-family="Liberation Mono,monospace" font-weight="bold" font-size="9.6" fill="#1a1a1a" letter-spacing="-0.1">aVR</text><rect x="293.3" y="58.2" width="16.9" height="9.4" fill="#fff8f8" stroke="#ffd2d2" stroke-width="0.6"/><text x="295.5" y="65.8" font-family="Liberation Mono,monospace" font-weight="bold" font-size="9.6" fill="#1a1a1a" letter-spacing="-0.1">V1</text><rect x="434.7" y="58.2" width="16.9" height="9.4" fill="#fff8f8" stroke="#ffd2d2" stroke-width="0.6"/><text x="436.9" y="65.8" font-family="Liberation Mono,monospace" font-weight="bold" font-size="9.6" fill="#1a1a1a" letter-spacing="-0.1">V4</text><rect x="10.6" y="136.5" width="16.9" height="9.4" fill="#fff8f8" stroke="#ffd2d2" stroke-width="0.6"/><text x="12.8" y="144.1" font-family="Liberation Mono,monospace" font-weight="bold" font-size="9.6" fill="#1a1a1a" letter-spacing="-0.1">II</text><rect x="152.0" y="136.5" width="23.1" height="9.4" fill="#fff8f8" stroke="#ffd2d2" stroke-width="0.6"/><text x="154.2" y="144.1" font-family="Liberation Mono,monospace" font-weight="bold" font-size="9.6" fill="#1a1a1a" letter-spacing="-0.1">aVL</text><rect x="293.3" y="136.5" width="16.9" height="9.4" fill="#fff8f8" stroke="#ffd2d2" stroke-width="0.6"/><text x="295.5" y="144.1" font-family="Liberation Mono,monospace" font-weight="bold" font-size="9.6" fill="#1a1a1a" letter-spacing="-0.1">V2</text><rect x="434.7" y="136.5" width="16.9" height="9.4" fill="#fff8f8" stroke="#ffd2d2" stroke-width="0.6"/><text x="436.9" y="144.1" font-family="Liberation Mono,monospace" font-weight="bold" font-size="9.6" fill="#1a1a1a" letter-spacing="-0.1">V5</text><rect x="10.6" y="214.7" width="23.1" height="9.4" fill="#fff8f8" stroke="#ffd2d2" stroke-width="0.6"/><text x="12.8" y="222.3" font-family="Liberation Mono,monospace" font-weight="bold" font-size="9.6" fill="#1a1a1a" letter-spacing="-0.1">III</text><rect x="152.0" y="214.7" width="23.1" height="9.4" fill="#fff8f8" stroke="#ffd2d2" stroke-width="0.6"/><text x="154.2" y="222.3" font-family="Liberation Mono,monospace" font-weight="bold" font-size="9.6" fill="#1a1a1a" letter-spacing="-0.1">aVF</text><rect x="293.3" y="214.7" width="16.9" height="9.4" fill="#fff8f8" stroke="#ffd2d2" stroke-width="0.6"/><text x="295.5" y="222.3" font-family="Liberation Mono,monospace" font-weight="bold" font-size="9.6" fill="#1a1a1a" letter-spacing="-0.1">V3</text><rect x="434.7" y="214.7" width="16.9" height="9.4" fill="#fff8f8" stroke="#ffd2d2" stroke-width="0.6"/><text x="436.9" y="222.3" font-family="Liberation Mono,monospace" font-weight="bold" font-size="9.6" fill="#1a1a1a" letter-spacing="-0.1">V6</text><rect x="10.6" y="292.1" width="10.7" height="9.4" fill="#fff8f8" stroke="#ffd2d2" stroke-width="0.6"/><text x="12.8" y="299.7" font-family="Liberation Mono,monospace" font-weight="bold" font-size="9.6" fill="#1a1a1a" letter-spacing="-0.1">I</text><text x="177.4" y="386.5" font-family="Liberation Mono,monospace" font-size="9.8" fill="#7d7d7d">25mm/s</text><text x="237.4" y="386.5" font-family="Liberation Mono,monospace" font-size="9.8" fill="#7d7d7d">10mm/mV</text><text x="302.4" y="386.5" font-family="Liberation Mono,monospace" font-size="9.8" fill="#7d7d7d">Filter:0.060 - 300Hz</text><text x="445.8" y="386.5" font-family="Liberation Mono,monospace" font-size="9.8" fill="#7d7d7d">Notch Frequency:60Hz</text><path d="M0.6 382.5 V389.7 M0.6 386.1 H11.8 M11.8 382.5 V389.7" stroke="#2e9a3c" stroke-width="1" fill="none"/><text x="14.4" y="387.7" font-family="Liberation Mono,monospace" font-size="4.8" fill="#9a9a9a">200ms</text></svg>
<svg class="a c" style="left:233.6px;top:453.4px" width="568.6" height="386.6" viewBox="0 0 568.6 386.6"><rect x="0" y="0" width="568.6" height="386.6" fill="#fffdfd"/><line x1="2.27" y1="0" x2="2.27" y2="386.6" stroke="#ffeaea" stroke-width="0.3"/><line x1="4.54" y1="0" x2="4.54" y2="386.6" stroke="#ffeaea" stroke-width="0.3"/><line x1="6.81" y1="0" x2="6.81" y2="386.6" stroke="#ffeaea" stroke-width="0.3"/><line x1="9.08" y1="0" x2="9.08" y2="386.6" stroke="#ffeaea" stroke-width="0.3"/><line x1="13.62" y1="0" x2="13.62" y2="386.6" stroke="#ffeaea" stroke-width="0.3"/><line x1="15.89" y1="0" x2="15.89" y2="386.6" stroke="#ffeaea" stroke-width="0.3"/><line x1="18.16" y1="0" x2="18.16" y2="386.6" stroke="#ffeaea" stroke-width="0.3"/><line x1="20.43" y1="0" x2="20.43" y2="386.6" stroke="#ffeaea" stroke-width="0.3"/><line x1="24.97" y1="0" x2="24.97" y2="386.6" stroke="#ffeaea" stroke-width="0.3"/><line x1="27.24" y1="0" x2="27.24" y2="386.6" stroke="#ffeaea" stroke-width="0.3"/><line x1="29.51" y1="0" x2="29.51" y2="386.6" stroke="#ffeaea" stroke-width="0.3"/><line x1="31.78" y1="0" x2="31.78" y2="386.6" stroke="#ffeaea" stroke-width="0.3"/><line x1="36.32" y1="0" x2="36.32" y2="386.6" stroke="#ffeaea" stroke-width="0.3"/><line x1="38.59" y1="0" x2="38.59" y2="386.6" stroke="#ffeaea" stroke-width="0.3"/><line x1="40.86" y1="0" x2="40.86" y2="386.6" stroke="#ffeaea" stroke-width="0.3"/><line x1="43.13" y1="0" x2="43.13" y2="386.6" stroke="#ffeaea" stroke-width="0.3"/><line x1="47.67" y1="0" x2="47.67" y2="386.6" stroke="#ffeaea" stroke-width="0.3"/><line x1="49.94" y1="0" x2="49.94" y2="386.6" stroke="#ffeaea" stroke-width="0.3"/><line x1="52.21" y1="0" x2="52.21" y2="386.6" stroke="#ffeaea" stroke-width="0.3"/><line x1="54.48" y1="0" x2="54.48" y2="386.6" stroke="#ffeaea" stroke-width="0.3"/><line x1="59.02" y1="0" x2="59.02" y2="386.6" stroke="#ffeaea" stroke-width="0.3"/><line x1="61.29" y1="0" x2="61.29" y2="386.6" stroke="#ffeaea" stroke-width="0.3"/><line x1="63.56" y1="0" x2="63.56" y2="386.6" stroke="#ffeaea" stroke-width="0.3"/><line x1="65.83" y1="0" x2="65.83" y2="386.6" stroke="#ffeaea" stroke-width="0.3"/><line x1="70.37" y1="0" x2="70.37" y2="386.6" stroke="#ffeaea" stroke-width="0.3"/><line x1="72.64" y1="0" x2="72.64" y2="386.6" stroke="#ffeaea" stroke-width="0.3"/><line x1="74.91" y1="0" x2="74.91" y2="386.6" stroke="#ffeaea" stroke-width="0.3"/><line x1="77.18" y1="0" x2="77.18" y2="386.6" stroke="#ffeaea" stroke-width="0.3"/><line x1="81.72" y1="0" x2="81.72" y2="386.6" stroke="#ffeaea" stroke-width="0.3"/><line x1="83.99" y1="0" x2="83.99" y2="386.6" stroke="#ffeaea" stroke-width="0.3"/><line x1="86.26" y1="0" x2="86.26" y2="386.6" stroke="#ffeaea" stroke-width="0.3"/><line x1="88.53" y1="0" x2="88.53" y2="386.6" stroke="#ffeaea" stroke-width="0.3"/><line x1="93.07" y1="0" x2="93.07" y2="386.6" stroke="#ffeaea" stroke-width="0.3"/><line x1="95.34" y1="0" x2="95.34" y2="386.6" stroke="#ffeaea" stroke-width="0.3"/><line x1="97.61" y1="0" x2="97.61" y2="386.6" stroke="#ffeaea" stroke-width="0.3"/><line x1="99.88" y1="0" x2="99.88" y2="386.6" stroke="#ffeaea" stroke-width="0.3"/><line x1="104.42" y1="0" x2="104.42" y2="386.6" stroke="#ffeaea" stroke-width="0.3"/><line x1="106.69" y1="0" x2="106.69" y2="386.6" stroke="#ffeaea" stroke-width="0.3"/><line x1="108.96" y1="0" x2="108.96" y2="386.6" stroke="#ffeaea" stroke-width="0.3"/><line x1="111.23" y1="0" x2="111.23" y2="386.6" stroke="#ffeaea" stroke-width="0.3"/><line x1="115.77" y1="0" x2="115.77" y2="386.6" stroke="#ffeaea" stroke-width="0.3"/><line x1="118.04" y1="0" x2="118.04" y2="386.6" stroke="#ffeaea" stroke-width="0.3"/><line x1="120.31" y1="0" x2="120.31" y2="386.6" stroke="#ffeaea" stroke-width="0.3"/><line x1="122.58" y1="0" x2="122.58" y2="386.6" stroke="#ffeaea" stroke-width="0.3"/><line x1="127.12" y1="0" x2="127.12" y2="386.6" stroke="#ffeaea" stroke-width="0.3"/><line x1="129.39" y1="0" x2="129.39" y2="386.6" stroke="#ffeaea" stroke-width="0.3"/><line x1="131.66" y1="0" x2="131.66" y2="386.6" stroke="#ffeaea" stroke-width="0.3"/><line x1="133.93" y1="0" x2="133.93" y2="386.6" stroke="#ffeaea" stroke-width="0.3"/><line x1="138.47" y1="0" x2="138.47" y2="386.6" stroke="#ffeaea" stroke-width="0.3"/><line x1="140.74" y1="0" x2="140.74" y2="386.6" stroke="#ffeaea" stroke-width="0.3"/><line x1="143.01" y1="0" x2="143.01" y2="386.6" stroke="#ffeaea" stroke-width="0.3"/><line x1="145.28" y1="0" x2="145.28" y2="386.6" stroke="#ffeaea" stroke-width="0.3"/><line x1="149.82" y1="0" x2="149.82" y2="386.6" stroke="#ffeaea" stroke-width="0.3"/><line x1="152.09" y1="0" x2="152.09" y2="386.6" stroke="#ffeaea" stroke-width="0.3"/><line x1="154.36" y1="0" x2="154.36" y2="386.6" stroke="#ffeaea" stroke-width="0.3"/><line x1="156.63" y1="0" x2="156.63" y2="386.6" stroke="#ffeaea" stroke-width="0.3"/><line x1="161.17" y1="0" x2="161.17" y2="386.6" stroke="#ffeaea" stroke-width="0.3"/><line x1="163.44" y1="0" x2="163.44" y2="386.6" stroke="#ffeaea" stroke-width="0.3"/><line x1="165.71" y1="0" x2="165.71" y2="386.6" stroke="#ffeaea" stroke-width="0.3"/><line x1="167.98" y1="0" x2="167.98" y2="386.6" stroke="#ffeaea" stroke-width="0.3"/><line x1="172.52" y1="0" x2="172.52" y2="386.6" stroke="#ffeaea" stroke-width="0.3"/><line x1="174.79" y1="0" x2="174.79" y2="386.6" stroke="#ffeaea" stroke-width="0.3"/><line x1="177.06" y1="0" x2="177.06" y2="386.6" stroke="#ffeaea" stroke-width="0.3"/><line x1="179.33" y1="0" x2="179.33" y2="386.6" stroke="#ffeaea" stroke-width="0.3"/><line x1="183.87" y1="0" x2="183.87" y2="386.6" stroke="#ffeaea" stroke-width="0.3"/><line x1="186.14" y1="0" x2="186.14" y2="386.6" stroke="#ffeaea" stroke-width="0.3"/><line x1="188.41" y1="0" x2="188.41" y2="386.6" stroke="#ffeaea" stroke-width="0.3"/><line x1="190.68" y1="0" x2="190.68" y2="386.6" stroke="#ffeaea" stroke-width="0.3"/><line x1="195.22" y1="0" x2="195.22" y2="386.6" stroke="#ffeaea" stroke-width="0.3"/><line x1="197.49" y1="0" x2="197.49" y2="386.6" stroke="#ffeaea" stroke-width="0.3"/><line x1="199.76" y1="0" x2="199.76" y2="386.6" stroke="#ffeaea" stroke-width="0.3"/><line x1="202.03" y1="0" x2="202.03" y2="386.6" stroke="#ffeaea" stroke-width="0.3"/><line x1="206.57" y1="0" x2="206.57" y2="386.6" stroke="#ffeaea" stroke-width="0.3"/><line x1="208.84" y1="0" x2="208.84" y2="386.6" stroke="#ffeaea" stroke-width="0.3"/><line x1="211.11" y1="0" x2="211.11" y2="386.6" stroke="#ffeaea" stroke-width="0.3"/><line x1="213.38" y1="0" x2="213.38" y2="386.6" stroke="#ffeaea" stroke-width="0.3"/><line x1="217.92" y1="0" x2="217.92" y2="386.6" stroke="#ffeaea" stroke-width="0.3"/><line x1="220.19" y1="0" x2="220.19" y2="386.6" stroke="#ffeaea" stroke-width="0.3"/><line x1="222.46" y1="0" x2="222.46" y2="386.6" stroke="#ffeaea" stroke-width="0.3"/><line x1="224.73" y1="0" x2="224.73" y2="386.6" stroke="#ffeaea" stroke-width="0.3"/><line x1="229.27" y1="0" x2="229.27" y2="386.6" stroke="#ffeaea" stroke-width="0.3"/><line x1="231.54" y1="0" x2="231.54" y2="386.6" stroke="#ffeaea" stroke-width="0.3"/><line x1="233.81" y1="0" x2="233.81" y2="386.6" stroke="#ffeaea" stroke-width="0.3"/><line x1="236.08" y1="0" x2="236.08" y2="386.6" stroke="#ffeaea" stroke-width="0.3"/><line x1="240.62" y1="0" x2="240.62" y2="386.6" stroke="#ffeaea" stroke-width="0.3"/><line x1="242.89" y1="0" x2="242.89" y2="386.6" stroke="#ffeaea" stroke-width="0.3"/><line x1="245.16" y1="0" x2="245.16" y2="386.6" stroke="#ffeaea" stroke-width="0.3"/><line x1="247.43" y1="0" x2="247.43" y2="386.6" stroke="#ffeaea" stroke-width="0.3"/><line x1="251.97" y1="0" x2="251.97" y2="386.6" stroke="#ffeaea" stroke-width="0.3"/><line x1="254.24" y1="0" x2="254.24" y2="386.6" stroke="#ffeaea" stroke-width="0.3"/><line x1="256.51" y1="0" x2="256.51" y2="386.6" stroke="#ffeaea" stroke-width="0.3"/><line x1="258.78" y1="0" x2="258.78" y2="386.6" stroke="#ffeaea" stroke-width="0.3"/><line x1="263.32" y1="0" x2="263.32" y2="386.6" stroke="#ffeaea" stroke-width="0.3"/><line x1="265.59" y1="0" x2="265.59" y2="386.6" stroke="#ffeaea" stroke-width="0.3"/><line x1="267.86" y1="0" x2="267.86" y2="386.6" stroke="#ffeaea" stroke-width="0.3"/><line x1="270.13" y1="0" x2="270.13" y2="386.6" stroke="#ffeaea" stroke-width="0.3"/><line x1="274.67" y1="0" x2="274.67" y2="386.6" stroke="#ffeaea" stroke-width="0.3"/><line x1="276.94" y1="0" x2="276.94" y2="386.6" stroke="#ffeaea" stroke-width="0.3"/><line x1="279.21" y1="0" x2="279.21" y2="386.6" stroke="#ffeaea" stroke-width="0.3"/><line x1="281.48" y1="0" x2="281.48" y2="386.6" stroke="#ffeaea" stroke-width="0.3"/><line x1="286.02" y1="0" x2="286.02" y2="386.6" stroke="#ffeaea" stroke-width="0.3"/><line x1="288.29" y1="0" x2="288.29" y2="386.6" stroke="#ffeaea" stroke-width="0.3"/><line x1="290.56" y1="0" x2="290.56" y2="386.6" stroke="#ffeaea" stroke-width="0.3"/><line x1="292.83" y1="0" x2="292.83" y2="386.6" stroke="#ffeaea" stroke-width="0.3"/><line x1="297.37" y1="0" x2="297.37" y2="386.6" stroke="#ffeaea" stroke-width="0.3"/><line x1="299.64" y1="0" x2="299.64" y2="386.6" stroke="#ffeaea" stroke-width="0.3"/><line x1="301.91" y1="0" x2="301.91" y2="386.6" stroke="#ffeaea" stroke-width="0.3"/><line x1="304.18" y1="0" x2="304.18" y2="386.6" stroke="#ffeaea" stroke-width="0.3"/><line x1="308.72" y1="0" x2="308.72" y2="386.6" stroke="#ffeaea" stroke-width="0.3"/><line x1="310.99" y1="0" x2="310.99" y2="386.6" stroke="#ffeaea" stroke-width="0.3"/><line x1="313.26" y1="0" x2="313.26" y2="386.6" stroke="#ffeaea" stroke-width="0.3"/><line x1="315.53" y1="0" x2="315.53" y2="386.6" stroke="#ffeaea" stroke-width="0.3"/><line x1="320.07" y1="0" x2="320.07" y2="386.6" stroke="#ffeaea" stroke-width="0.3"/><line x1="322.34" y1="0" x2="322.34" y2="386.6" stroke="#ffeaea" stroke-width="0.3"/><line x1="324.61" y1="0" x2="324.61" y2="386.6" stroke="#ffeaea" stroke-width="0.3"/><line x1="326.88" y1="0" x2="326.88" y2="386.6" stroke="#ffeaea" stroke-width="0.3"/><line x1="331.42" y1="0" x2="331.42" y2="386.6" stroke="#ffeaea" stroke-width="0.3"/><line x1="333.69" y1="0" x2="333.69" y2="386.6" stroke="#ffeaea" stroke-width="0.3"/><line x1="335.96" y1="0" x2="335.96" y2="386.6" stroke="#ffeaea" stroke-width="0.3"/><line x1="338.23" y1="0" x2="338.23" y2="386.6" stroke="#ffeaea" stroke-width="0.3"/><line x1="342.77" y1="0" x2="342.77" y2="386.6" stroke="#ffeaea" stroke-width="0.3"/><line x1="345.04" y1="0" x2="345.04" y2="386.6" stroke="#ffeaea" stroke-width="0.3"/><line x1="347.31" y1="0" x2="347.31" y2="386.6" stroke="#ffeaea" stroke-width="0.3"/><line x1="349.58" y1="0" x2="349.58" y2="386.6" stroke="#ffeaea" stroke-width="0.3"/><line x1="354.12" y1="0" x2="354.12" y2="386.6" stroke="#ffeaea" stroke-width="0.3"/><line x1="356.39" y1="0" x2="356.39" y2="386.6" stroke="#ffeaea" stroke-width="0.3"/><line x1="358.66" y1="0" x2="358.66" y2="386.6" stroke="#ffeaea" stroke-width="0.3"/><line x1="360.93" y1="0" x2="360.93" y2="386.6" stroke="#ffeaea" stroke-width="0.3"/><line x1="365.47" y1="0" x2="365.47" y2="386.6" stroke="#ffeaea" stroke-width="0.3"/><line x1="367.74" y1="0" x2="367.74" y2="386.6" stroke="#ffeaea" stroke-width="0.3"/><line x1="370.01" y1="0" x2="370.01" y2="386.6" stroke="#ffeaea" stroke-width="0.3"/><line x1="372.28" y1="0" x2="372.28" y2="386.6" stroke="#ffeaea" stroke-width="0.3"/><line x1="376.82" y1="0" x2="376.82" y2="386.6" stroke="#ffeaea" stroke-width="0.3"/><line x1="379.09" y1="0" x2="379.09" y2="386.6" stroke="#ffeaea" stroke-width="0.3"/><line x1="381.36" y1="0" x2="381.36" y2="386.6" stroke="#ffeaea" stroke-width="0.3"/><line x1="383.63" y1="0" x2="383.63" y2="386.6" stroke="#ffeaea" stroke-width="0.3"/><line x1="388.17" y1="0" x2="388.17" y2="386.6" stroke="#ffeaea" stroke-width="0.3"/><line x1="390.44" y1="0" x2="390.44" y2="386.6" stroke="#ffeaea" stroke-width="0.3"/><line x1="392.71" y1="0" x2="392.71" y2="386.6" stroke="#ffeaea" stroke-width="0.3"/><line x1="394.98" y1="0" x2="394.98" y2="386.6" stroke="#ffeaea" stroke-width="0.3"/><line x1="399.52" y1="0" x2="399.52" y2="386.6" stroke="#ffeaea" stroke-width="0.3"/><line x1="401.79" y1="0" x2="401.79" y2="386.6" stroke="#ffeaea" stroke-width="0.3"/><line x1="404.06" y1="0" x2="404.06" y2="386.6" stroke="#ffeaea" stroke-width="0.3"/><line x1="406.33" y1="0" x2="406.33" y2="386.6" stroke="#ffeaea" stroke-width="0.3"/><line x1="410.87" y1="0" x2="410.87" y2="386.6" stroke="#ffeaea" stroke-width="0.3"/><line x1="413.14" y1="0" x2="413.14" y2="386.6" stroke="#ffeaea" stroke-width="0.3"/><line x1="415.41" y1="0" x2="415.41" y2="386.6" stroke="#ffeaea" stroke-width="0.3"/><line x1="417.68" y1="0" x2="417.68" y2="386.6" stroke="#ffeaea" stroke-width="0.3"/><line x1="422.22" y1="0" x2="422.22" y2="386.6" stroke="#ffeaea" stroke-width="0.3"/><line x1="424.49" y1="0" x2="424.49" y2="386.6" stroke="#ffeaea" stroke-width="0.3"/><line x1="426.76" y1="0" x2="426.76" y2="386.6" stroke="#ffeaea" stroke-width="0.3"/><line x1="429.03" y1="0" x2="429.03" y2="386.6" stroke="#ffeaea" stroke-width="0.3"/><line x1="433.57" y1="0" x2="433.57" y2="386.6" stroke="#ffeaea" stroke-width="0.3"/><line x1="435.84" y1="0" x2="435.84" y2="386.6" stroke="#ffeaea" stroke-width="0.3"/><line x1="438.11" y1="0" x2="438.11" y2="386.6" stroke="#ffeaea" stroke-width="0.3"/><line x1="440.38" y1="0" x2="440.38" y2="386.6" stroke="#ffeaea" stroke-width="0.3"/><line x1="444.92" y1="0" x2="444.92" y2="386.6" stroke="#ffeaea" stroke-width="0.3"/><line x1="447.19" y1="0" x2="447.19" y2="386.6" stroke="#ffeaea" stroke-width="0.3"/><line x1="449.46" y1="0" x2="449.46" y2="386.6" stroke="#ffeaea" stroke-width="0.3"/><line x1="451.73" y1="0" x2="451.73" y2="386.6" stroke="#ffeaea" stroke-width="0.3"/><line x1="456.27" y1="0" x2="456.27" y2="386.6" stroke="#ffeaea" stroke-width="0.3"/><line x1="458.54" y1="0" x2="458.54" y2="386.6" stroke="#ffeaea" stroke-width="0.3"/><line x1="460.81" y1="0" x2="460.81" y2="386.6" stroke="#ffeaea" stroke-width="0.3"/><line x1="463.08" y1="0" x2="463.08" y2="386.6" stroke="#ffeaea" stroke-width="0.3"/><line x1="467.62" y1="0" x2="467.62" y2="386.6" stroke="#ffeaea" stroke-width="0.3"/><line x1="469.89" y1="0" x2="469.89" y2="386.6" stroke="#ffeaea" stroke-width="0.3"/><line x1="472.16" y1="0" x2="472.16" y2="386.6" stroke="#ffeaea" stroke-width="0.3"/><line x1="474.43" y1="0" x2="474.43" y2="386.6" stroke="#ffeaea" stroke-width="0.3"/><line x1="478.97" y1="0" x2="478.97" y2="386.6" stroke="#ffeaea" stroke-width="0.3"/><line x1="481.24" y1="0" x2="481.24" y2="386.6" stroke="#ffeaea" stroke-width="0.3"/><line x1="483.51" y1="0" x2="483.51" y2="386.6" stroke="#ffeaea" stroke-width="0.3"/><line x1="485.78" y1="0" x2="485.78" y2="386.6" stroke="#ffeaea" stroke-width="0.3"/><line x1="490.32" y1="0" x2="490.32" y2="386.6" stroke="#ffeaea" stroke-width="0.3"/><line x1="492.59" y1="0" x2="492.59" y2="386.6" stroke="#ffeaea" stroke-width="0.3"/><line x1="494.86" y1="0" x2="494.86" y2="386.6" stroke="#ffeaea" stroke-width="0.3"/><line x1="497.13" y1="0" x2="497.13" y2="386.6" stroke="#ffeaea" stroke-width="0.3"/><line x1="501.67" y1="0" x2="501.67" y2="386.6" stroke="#ffeaea" stroke-width="0.3"/><line x1="503.94" y1="0" x2="503.94" y2="386.6" stroke="#ffeaea" stroke-width="0.3"/><line x1="506.21" y1="0" x2="506.21" y2="386.6" stroke="#ffeaea" stroke-width="0.3"/><line x1="508.48" y1="0" x2="508.48" y2="386.6" stroke="#ffeaea" stroke-width="0.3"/><line x1="513.02" y1="0" x2="513.02" y2="386.6" stroke="#ffeaea" stroke-width="0.3"/><line x1="515.29" y1="0" x2="515.29" y2="386.6" stroke="#ffeaea" stroke-width="0.3"/><line x1="517.56" y1="0" x2="517.56" y2="386.6" stroke="#ffeaea" stroke-width="0.3"/><line x1="519.83" y1="0" x2="519.83" y2="386.6" stroke="#ffeaea" stroke-width="0.3"/><line x1="524.37" y1="0" x2="524.37" y2="386.6" stroke="#ffeaea" stroke-width="0.3"/><line x1="526.64" y1="0" x2="526.64" y2="386.6" stroke="#ffeaea" stroke-width="0.3"/><line x1="528.91" y1="0" x2="528.91" y2="386.6" stroke="#ffeaea" stroke-width="0.3"/><line x1="531.18" y1="0" x2="531.18" y2="386.6" stroke="#ffeaea" stroke-width="0.3"/><line x1="535.72" y1="0" x2="535.72" y2="386.6" stroke="#ffeaea" stroke-width="0.3"/><line x1="537.99" y1="0" x2="537.99" y2="386.6" stroke="#ffeaea" stroke-width="0.3"/><line x1="540.26" y1="0" x2="540.26" y2="386.6" stroke="#ffeaea" stroke-width="0.3"/><line x1="542.53" y1="0" x2="542.53" y2="386.6" stroke="#ffeaea" stroke-width="0.3"/><line x1="547.07" y1="0" x2="547.07" y2="386.6" stroke="#ffeaea" stroke-width="0.3"/><line x1="549.34" y1="0" x2="549.34" y2="386.6" stroke="#ffeaea" stroke-width="0.3"/><line x1="551.61" y1="0" x2="551.61" y2="386.6" stroke="#ffeaea" stroke-width="0.3"/><line x1="553.88" y1="0" x2="553.88" y2="386.6" stroke="#ffeaea" stroke-width="0.3"/><line x1="558.42" y1="0" x2="558.42" y2="386.6" stroke="#ffeaea" stroke-width="0.3"/><line x1="560.69" y1="0" x2="560.69" y2="386.6" stroke="#ffeaea" stroke-width="0.3"/><line x1="562.96" y1="0" x2="562.96" y2="386.6" stroke="#ffeaea" stroke-width="0.3"/><line x1="565.23" y1="0" x2="565.23" y2="386.6" stroke="#ffeaea" stroke-width="0.3"/><line x1="0" y1="2.27" x2="568.6" y2="2.27" stroke="#ffeaea" stroke-width="0.3"/><line x1="0" y1="4.53" x2="568.6" y2="4.53" stroke="#ffeaea" stroke-width="0.3"/><line x1="0" y1="6.80" x2="568.6" y2="6.80" stroke="#ffeaea" stroke-width="0.3"/><line x1="0" y1="9.06" x2="568.6" y2="9.06" stroke="#ffeaea" stroke-width="0.3"/><line x1="0" y1="13.60" x2="568.6" y2="13.60" stroke="#ffeaea" stroke-width="0.3"/><line x1="0" y1="15.86" x2="568.6" y2="15.86" stroke="#ffeaea" stroke-width="0.3"/><line x1="0" y1="18.13" x2="568.6" y2="18.13" stroke="#ffeaea" stroke-width="0.3"/><line x1="0" y1="20.39" x2="568.6" y2="20.39" stroke="#ffeaea" stroke-width="0.3"/><line x1="0" y1="24.93" x2="568.6" y2="24.93" stroke="#ffeaea" stroke-width="0.3"/><line x1="0" y1="27.19" x2="568.6" y2="27.19" stroke="#ffeaea" stroke-width="0.3"/><line x1="0" y1="29.46" x2="568.6" y2="29.46" stroke="#ffeaea" stroke-width="0.3"/><line x1="0" y1="31.72" x2="568.6" y2="31.72" stroke="#ffeaea" stroke-width="0.3"/><line x1="0" y1="36.26" x2="568.6" y2="36.26" stroke="#ffeaea" stroke-width="0.3"/><line x1="0" y1="38.52" x2="568.6" y2="38.52" stroke="#ffeaea" stroke-width="0.3"/><line x1="0" y1="40.79" x2="568.6" y2="40.79" stroke="#ffeaea" stroke-width="0.3"/><line x1="0" y1="43.05" x2="568.6" y2="43.05" stroke="#ffeaea" stroke-width="0.3"/><line x1="0" y1="47.59" x2="568.6" y2="47.59" stroke="#ffeaea" stroke-width="0.3"/><line x1="0" y1="49.85" x2="568.6" y2="49.85" stroke="#ffeaea" stroke-width="0.3"/><line x1="0" y1="52.12" x2="568.6" y2="52.12" stroke="#ffeaea" stroke-width="0.3"/><line x1="0" y1="54.38" x2="568.6" y2="54.38" stroke="#ffeaea" stroke-width="0.3"/><line x1="0" y1="58.92" x2="568.6" y2="58.92" stroke="#ffeaea" stroke-width="0.3"/><line x1="0" y1="61.18" x2="568.6" y2="61.18" stroke="#ffeaea" stroke-width="0.3"/><line x1="0" y1="63.45" x2="568.6" y2="63.45" stroke="#ffeaea" stroke-width="0.3"/><line x1="0" y1="65.71" x2="568.6" y2="65.71" stroke="#ffeaea" stroke-width="0.3"/><line x1="0" y1="70.25" x2="568.6" y2="70.25" stroke="#ffeaea" stroke-width="0.3"/><line x1="0" y1="72.51" x2="568.6" y2="72.51" stroke="#ffeaea" stroke-width="0.3"/><line x1="0" y1="74.78" x2="568.6" y2="74.78" stroke="#ffeaea" stroke-width="0.3"/><line x1="0" y1="77.04" x2="568.6" y2="77.04" stroke="#ffeaea" stroke-width="0.3"/><line x1="0" y1="81.58" x2="568.6" y2="81.58" stroke="#ffeaea" stroke-width="0.3"/><line x1="0" y1="83.84" x2="568.6" y2="83.84" stroke="#ffeaea" stroke-width="0.3"/><line x1="0" y1="86.11" x2="568.6" y2="86.11" stroke="#ffeaea" stroke-width="0.3"/><line x1="0" y1="88.37" x2="568.6" y2="88.37" stroke="#ffeaea" stroke-width="0.3"/><line x1="0" y1="92.91" x2="568.6" y2="92.91" stroke="#ffeaea" stroke-width="0.3"/><line x1="0" y1="95.17" x2="568.6" y2="95.17" stroke="#ffeaea" stroke-width="0.3"/><line x1="0" y1="97.44" x2="568.6" y2="97.44" stroke="#ffeaea" stroke-width="0.3"/><line x1="0" y1="99.70" x2="568.6" y2="99.70" stroke="#ffeaea" stroke-width="0.3"/><line x1="0" y1="104.24" x2="568.6" y2="104.24" stroke="#ffeaea" stroke-width="0.3"/><line x1="0" y1="106.50" x2="568.6" y2="106.50" stroke="#ffeaea" stroke-width="0.3"/><line x1="0" y1="108.77" x2="568.6" y2="108.77" stroke="#ffeaea" stroke-width="0.3"/><line x1="0" y1="111.03" x2="568.6" y2="111.03" stroke="#ffeaea" stroke-width="0.3"/><line x1="0" y1="115.57" x2="568.6" y2="115.57" stroke="#ffeaea" stroke-width="0.3"/><line x1="0" y1="117.83" x2="568.6" y2="117.83" stroke="#ffeaea" stroke-width="0.3"/><line x1="0" y1="120.10" x2="568.6" y2="120.10" stroke="#ffeaea" stroke-width="0.3"/><line x1="0" y1="122.36" x2="568.6" y2="122.36" stroke="#ffeaea" stroke-width="0.3"/><line x1="0" y1="126.90" x2="568.6" y2="126.90" stroke="#ffeaea" stroke-width="0.3"/><line x1="0" y1="129.16" x2="568.6" y2="129.16" stroke="#ffeaea" stroke-width="0.3"/><line x1="0" y1="131.43" x2="568.6" y2="131.43" stroke="#ffeaea" stroke-width="0.3"/><line x1="0" y1="133.69" x2="568.6" y2="133.69" stroke="#ffeaea" stroke-width="0.3"/><line x1="0" y1="138.23" x2="568.6" y2="138.23" stroke="#ffeaea" stroke-width="0.3"/><line x1="0" y1="140.49" x2="568.6" y2="140.49" stroke="#ffeaea" stroke-width="0.3"/><line x1="0" y1="142.76" x2="568.6" y2="142.76" stroke="#ffeaea" stroke-width="0.3"/><line x1="0" y1="145.02" x2="568.6" y2="145.02" stroke="#ffeaea" stroke-width="0.3"/><line x1="0" y1="149.56" x2="568.6" y2="149.56" stroke="#ffeaea" stroke-width="0.3"/><line x1="0" y1="151.82" x2="568.6" y2="151.82" stroke="#ffeaea" stroke-width="0.3"/><line x1="0" y1="154.09" x2="568.6" y2="154.09" stroke="#ffeaea" stroke-width="0.3"/><line x1="0" y1="156.35" x2="568.6" y2="156.35" stroke="#ffeaea" stroke-width="0.3"/><line x1="0" y1="160.89" x2="568.6" y2="160.89" stroke="#ffeaea" stroke-width="0.3"/><line x1="0" y1="163.15" x2="568.6" y2="163.15" stroke="#ffeaea" stroke-width="0.3"/><line x1="0" y1="165.42" x2="568.6" y2="165.42" stroke="#ffeaea" stroke-width="0.3"/><line x1="0" y1="167.68" x2="568.6" y2="167.68" stroke="#ffeaea" stroke-width="0.3"/><line x1="0" y1="172.22" x2="568.6" y2="172.22" stroke="#ffeaea" stroke-width="0.3"/><line x1="0" y1="174.48" x2="568.6" y2="174.48" stroke="#ffeaea" stroke-width="0.3"/><line x1="0" y1="176.75" x2="568.6" y2="176.75" stroke="#ffeaea" stroke-width="0.3"/><line x1="0" y1="179.01" x2="568.6" y2="179.01" stroke="#ffeaea" stroke-width="0.3"/><line x1="0" y1="183.55" x2="568.6" y2="183.55" stroke="#ffeaea" stroke-width="0.3"/><line x1="0" y1="185.81" x2="568.6" y2="185.81" stroke="#ffeaea" stroke-width="0.3"/><line x1="0" y1="188.08" x2="568.6" y2="188.08" stroke="#ffeaea" stroke-width="0.3"/><line x1="0" y1="190.34" x2="568.6" y2="190.34" stroke="#ffeaea" stroke-width="0.3"/><line x1="0" y1="194.88" x2="568.6" y2="194.88" stroke="#ffeaea" stroke-width="0.3"/><line x1="0" y1="197.14" x2="568.6" y2="197.14" stroke="#ffeaea" stroke-width="0.3"/><line x1="0" y1="199.41" x2="568.6" y2="199.41" stroke="#ffeaea" stroke-width="0.3"/><line x1="0" y1="201.67" x2="568.6" y2="201.67" stroke="#ffeaea" stroke-width="0.3"/><line x1="0" y1="206.21" x2="568.6" y2="206.21" stroke="#ffeaea" stroke-width="0.3"/><line x1="0" y1="208.47" x2="568.6" y2="208.47" stroke="#ffeaea" stroke-width="0.3"/><line x1="0" y1="210.74" x2="568.6" y2="210.74" stroke="#ffeaea" stroke-width="0.3"/><line x1="0" y1="213.00" x2="568.6" y2="213.00" stroke="#ffeaea" stroke-width="0.3"/><line x1="0" y1="217.54" x2="568.6" y2="217.54" stroke="#ffeaea" stroke-width="0.3"/><line x1="0" y1="219.80" x2="568.6" y2="219.80" stroke="#ffeaea" stroke-width="0.3"/><line x1="0" y1="222.07" x2="568.6" y2="222.07" stroke="#ffeaea" stroke-width="0.3"/><line x1="0" y1="224.33" x2="568.6" y2="224.33" stroke="#ffeaea" stroke-width="0.3"/><line x1="0" y1="228.87" x2="568.6" y2="228.87" stroke="#ffeaea" stroke-width="0.3"/><line x1="0" y1="231.13" x2="568.6" y2="231.13" stroke="#ffeaea" stroke-width="0.3"/><line x1="0" y1="233.40" x2="568.6" y2="233.40" stroke="#ffeaea" stroke-width="0.3"/><line x1="0" y1="235.66" x2="568.6" y2="235.66" stroke="#ffeaea" stroke-width="0.3"/><line x1="0" y1="240.20" x2="568.6" y2="240.20" stroke="#ffeaea" stroke-width="0.3"/><line x1="0" y1="242.46" x2="568.6" y2="242.46" stroke="#ffeaea" stroke-width="0.3"/><line x1="0" y1="244.73" x2="568.6" y2="244.73" stroke="#ffeaea" stroke-width="0.3"/><line x1="0" y1="246.99" x2="568.6" y2="246.99" stroke="#ffeaea" stroke-width="0.3"/><line x1="0" y1="251.53" x2="568.6" y2="251.53" stroke="#ffeaea" stroke-width="0.3"/><line x1="0" y1="253.79" x2="568.6" y2="253.79" stroke="#ffeaea" stroke-width="0.3"/><line x1="0" y1="256.06" x2="568.6" y2="256.06" stroke="#ffeaea" stroke-width="0.3"/><line x1="0" y1="258.32" x2="568.6" y2="258.32" stroke="#ffeaea" stroke-width="0.3"/><line x1="0" y1="262.86" x2="568.6" y2="262.86" stroke="#ffeaea" stroke-width="0.3"/><line x1="0" y1="265.12" x2="568.6" y2="265.12" stroke="#ffeaea" stroke-width="0.3"/><line x1="0" y1="267.39" x2="568.6" y2="267.39" stroke="#ffeaea" stroke-width="0.3"/><line x1="0" y1="269.65" x2="568.6" y2="269.65" stroke="#ffeaea" stroke-width="0.3"/><line x1="0" y1="274.19" x2="568.6" y2="274.19" stroke="#ffeaea" stroke-width="0.3"/><line x1="0" y1="276.45" x2="568.6" y2="276.45" stroke="#ffeaea" stroke-width="0.3"/><line x1="0" y1="278.72" x2="568.6" y2="278.72" stroke="#ffeaea" stroke-width="0.3"/><line x1="0" y1="280.98" x2="568.6" y2="280.98" stroke="#ffeaea" stroke-width="0.3"/><line x1="0" y1="285.52" x2="568.6" y2="285.52" stroke="#ffeaea" stroke-width="0.3"/><line x1="0" y1="287.78" x2="568.6" y2="287.78" stroke="#ffeaea" stroke-width="0.3"/><line x1="0" y1="290.05" x2="568.6" y2="290.05" stroke="#ffeaea" stroke-width="0.3"/><line x1="0" y1="292.31" x2="568.6" y2="292.31" stroke="#ffeaea" stroke-width="0.3"/><line x1="0" y1="296.85" x2="568.6" y2="296.85" stroke="#ffeaea" stroke-width="0.3"/><line x1="0" y1="299.11" x2="568.6" y2="299.11" stroke="#ffeaea" stroke-width="0.3"/><line x1="0" y1="301.38" x2="568.6" y2="301.38" stroke="#ffeaea" stroke-width="0.3"/><line x1="0" y1="303.64" x2="568.6" y2="303.64" stroke="#ffeaea" stroke-width="0.3"/><line x1="0" y1="308.18" x2="568.6" y2="308.18" stroke="#ffeaea" stroke-width="0.3"/><line x1="0" y1="310.44" x2="568.6" y2="310.44" stroke="#ffeaea" stroke-width="0.3"/><line x1="0" y1="312.71" x2="568.6" y2="312.71" stroke="#ffeaea" stroke-width="0.3"/><line x1="0" y1="314.97" x2="568.6" y2="314.97" stroke="#ffeaea" stroke-width="0.3"/><line x1="0" y1="319.51" x2="568.6" y2="319.51" stroke="#ffeaea" stroke-width="0.3"/><line x1="0" y1="321.77" x2="568.6" y2="321.77" stroke="#ffeaea" stroke-width="0.3"/><line x1="0" y1="324.04" x2="568.6" y2="324.04" stroke="#ffeaea" stroke-width="0.3"/><line x1="0" y1="326.30" x2="568.6" y2="326.30" stroke="#ffeaea" stroke-width="0.3"/><line x1="0" y1="330.84" x2="568.6" y2="330.84" stroke="#ffeaea" stroke-width="0.3"/><line x1="0" y1="333.10" x2="568.6" y2="333.10" stroke="#ffeaea" stroke-width="0.3"/><line x1="0" y1="335.37" x2="568.6" y2="335.37" stroke="#ffeaea" stroke-width="0.3"/><line x1="0" y1="337.63" x2="568.6" y2="337.63" stroke="#ffeaea" stroke-width="0.3"/><line x1="0" y1="342.17" x2="568.6" y2="342.17" stroke="#ffeaea" stroke-width="0.3"/><line x1="0" y1="344.43" x2="568.6" y2="344.43" stroke="#ffeaea" stroke-width="0.3"/><line x1="0" y1="346.70" x2="568.6" y2="346.70" stroke="#ffeaea" stroke-width="0.3"/><line x1="0" y1="348.96" x2="568.6" y2="348.96" stroke="#ffeaea" stroke-width="0.3"/><line x1="0" y1="353.50" x2="568.6" y2="353.50" stroke="#ffeaea" stroke-width="0.3"/><line x1="0" y1="355.76" x2="568.6" y2="355.76" stroke="#ffeaea" stroke-width="0.3"/><line x1="0" y1="358.03" x2="568.6" y2="358.03" stroke="#ffeaea" stroke-width="0.3"/><line x1="0" y1="360.29" x2="568.6" y2="360.29" stroke="#ffeaea" stroke-width="0.3"/><line x1="0" y1="364.83" x2="568.6" y2="364.83" stroke="#ffeaea" stroke-width="0.3"/><line x1="0" y1="367.09" x2="568.6" y2="367.09" stroke="#ffeaea" stroke-width="0.3"/><line x1="0" y1="369.36" x2="568.6" y2="369.36" stroke="#ffeaea" stroke-width="0.3"/><line x1="0" y1="371.62" x2="568.6" y2="371.62" stroke="#ffeaea" stroke-width="0.3"/><line x1="0" y1="376.16" x2="568.6" y2="376.16" stroke="#ffeaea" stroke-width="0.3"/><line x1="0" y1="378.42" x2="568.6" y2="378.42" stroke="#ffeaea" stroke-width="0.3"/><line x1="0" y1="380.69" x2="568.6" y2="380.69" stroke="#ffeaea" stroke-width="0.3"/><line x1="0" y1="382.95" x2="568.6" y2="382.95" stroke="#ffeaea" stroke-width="0.3"/><line x1="0.00" y1="0" x2="0.00" y2="386.6" stroke="#ffa4a4" stroke-width="0.72"/><line x1="11.35" y1="0" x2="11.35" y2="386.6" stroke="#ffa4a4" stroke-width="0.72"/><line x1="22.70" y1="0" x2="22.70" y2="386.6" stroke="#ffa4a4" stroke-width="0.72"/><line x1="34.05" y1="0" x2="34.05" y2="386.6" stroke="#ffa4a4" stroke-width="0.72"/><line x1="45.40" y1="0" x2="45.40" y2="386.6" stroke="#ffa4a4" stroke-width="0.72"/><line x1="56.75" y1="0" x2="56.75" y2="386.6" stroke="#ffa4a4" stroke-width="0.72"/><line x1="68.10" y1="0" x2="68.10" y2="386.6" stroke="#ffa4a4" stroke-width="0.72"/><line x1="79.45" y1="0" x2="79.45" y2="386.6" stroke="#ffa4a4" stroke-width="0.72"/><line x1="90.80" y1="0" x2="90.80" y2="386.6" stroke="#ffa4a4" stroke-width="0.72"/><line x1="102.15" y1="0" x2="102.15" y2="386.6" stroke="#ffa4a4" stroke-width="0.72"/><line x1="113.50" y1="0" x2="113.50" y2="386.6" stroke="#ffa4a4" stroke-width="0.72"/><line x1="124.85" y1="0" x2="124.85" y2="386.6" stroke="#ffa4a4" stroke-width="0.72"/><line x1="136.20" y1="0" x2="136.20" y2="386.6" stroke="#ffa4a4" stroke-width="0.72"/><line x1="147.55" y1="0" x2="147.55" y2="386.6" stroke="#ffa4a4" stroke-width="0.72"/><line x1="158.90" y1="0" x2="158.90" y2="386.6" stroke="#ffa4a4" stroke-width="0.72"/><line x1="170.25" y1="0" x2="170.25" y2="386.6" stroke="#ffa4a4" stroke-width="0.72"/><line x1="181.60" y1="0" x2="181.60" y2="386.6" stroke="#ffa4a4" stroke-width="0.72"/><line x1="192.95" y1="0" x2="192.95" y2="386.6" stroke="#ffa4a4" stroke-width="0.72"/><line x1="204.30" y1="0" x2="204.30" y2="386.6" stroke="#ffa4a4" stroke-width="0.72"/><line x1="215.65" y1="0" x2="215.65" y2="386.6" stroke="#ffa4a4" stroke-width="0.72"/><line x1="227.00" y1="0" x2="227.00" y2="386.6" stroke="#ffa4a4" stroke-width="0.72"/><line x1="238.35" y1="0" x2="238.35" y2="386.6" stroke="#ffa4a4" stroke-width="0.72"/><line x1="249.70" y1="0" x2="249.70" y2="386.6" stroke="#ffa4a4" stroke-width="0.72"/><line x1="261.05" y1="0" x2="261.05" y2="386.6" stroke="#ffa4a4" stroke-width="0.72"/><line x1="272.40" y1="0" x2="272.40" y2="386.6" stroke="#ffa4a4" stroke-width="0.72"/><line x1="283.75" y1="0" x2="283.75" y2="386.6" stroke="#ffa4a4" stroke-width="0.72"/><line x1="295.10" y1="0" x2="295.10" y2="386.6" stroke="#ffa4a4" stroke-width="0.72"/><line x1="306.45" y1="0" x2="306.45" y2="386.6" stroke="#ffa4a4" stroke-width="0.72"/><line x1="317.80" y1="0" x2="317.80" y2="386.6" stroke="#ffa4a4" stroke-width="0.72"/><line x1="329.15" y1="0" x2="329.15" y2="386.6" stroke="#ffa4a4" stroke-width="0.72"/><line x1="340.50" y1="0" x2="340.50" y2="386.6" stroke="#ffa4a4" stroke-width="0.72"/><line x1="351.85" y1="0" x2="351.85" y2="386.6" stroke="#ffa4a4" stroke-width="0.72"/><line x1="363.20" y1="0" x2="363.20" y2="386.6" stroke="#ffa4a4" stroke-width="0.72"/><line x1="374.55" y1="0" x2="374.55" y2="386.6" stroke="#ffa4a4" stroke-width="0.72"/><line x1="385.90" y1="0" x2="385.90" y2="386.6" stroke="#ffa4a4" stroke-width="0.72"/><line x1="397.25" y1="0" x2="397.25" y2="386.6" stroke="#ffa4a4" stroke-width="0.72"/><line x1="408.60" y1="0" x2="408.60" y2="386.6" stroke="#ffa4a4" stroke-width="0.72"/><line x1="419.95" y1="0" x2="419.95" y2="386.6" stroke="#ffa4a4" stroke-width="0.72"/><line x1="431.30" y1="0" x2="431.30" y2="386.6" stroke="#ffa4a4" stroke-width="0.72"/><line x1="442.65" y1="0" x2="442.65" y2="386.6" stroke="#ffa4a4" stroke-width="0.72"/><line x1="454.00" y1="0" x2="454.00" y2="386.6" stroke="#ffa4a4" stroke-width="0.72"/><line x1="465.35" y1="0" x2="465.35" y2="386.6" stroke="#ffa4a4" stroke-width="0.72"/><line x1="476.70" y1="0" x2="476.70" y2="386.6" stroke="#ffa4a4" stroke-width="0.72"/><line x1="488.05" y1="0" x2="488.05" y2="386.6" stroke="#ffa4a4" stroke-width="0.72"/><line x1="499.40" y1="0" x2="499.40" y2="386.6" stroke="#ffa4a4" stroke-width="0.72"/><line x1="510.75" y1="0" x2="510.75" y2="386.6" stroke="#ffa4a4" stroke-width="0.72"/><line x1="522.10" y1="0" x2="522.10" y2="386.6" stroke="#ffa4a4" stroke-width="0.72"/><line x1="533.45" y1="0" x2="533.45" y2="386.6" stroke="#ffa4a4" stroke-width="0.72"/><line x1="544.80" y1="0" x2="544.80" y2="386.6" stroke="#ffa4a4" stroke-width="0.72"/><line x1="556.15" y1="0" x2="556.15" y2="386.6" stroke="#ffa4a4" stroke-width="0.72"/><line x1="567.50" y1="0" x2="567.50" y2="386.6" stroke="#ffa4a4" stroke-width="0.72"/><line x1="0" y1="0.00" x2="568.6" y2="0.00" stroke="#ffa4a4" stroke-width="0.72"/><line x1="0" y1="11.33" x2="568.6" y2="11.33" stroke="#ffa4a4" stroke-width="0.72"/><line x1="0" y1="22.66" x2="568.6" y2="22.66" stroke="#ffa4a4" stroke-width="0.72"/><line x1="0" y1="33.99" x2="568.6" y2="33.99" stroke="#ffa4a4" stroke-width="0.72"/><line x1="0" y1="45.32" x2="568.6" y2="45.32" stroke="#ffa4a4" stroke-width="0.72"/><line x1="0" y1="56.65" x2="568.6" y2="56.65" stroke="#ffa4a4" stroke-width="0.72"/><line x1="0" y1="67.98" x2="568.6" y2="67.98" stroke="#ffa4a4" stroke-width="0.72"/><line x1="0" y1="79.31" x2="568.6" y2="79.31" stroke="#ffa4a4" stroke-width="0.72"/><line x1="0" y1="90.64" x2="568.6" y2="90.64" stroke="#ffa4a4" stroke-width="0.72"/><line x1="0" y1="101.97" x2="568.6" y2="101.97" stroke="#ffa4a4" stroke-width="0.72"/><line x1="0" y1="113.30" x2="568.6" y2="113.30" stroke="#ffa4a4" stroke-width="0.72"/><line x1="0" y1="124.63" x2="568.6" y2="124.63" stroke="#ffa4a4" stroke-width="0.72"/><line x1="0" y1="135.96" x2="568.6" y2="135.96" stroke="#ffa4a4" stroke-width="0.72"/><line x1="0" y1="147.29" x2="568.6" y2="147.29" stroke="#ffa4a4" stroke-width="0.72"/><line x1="0" y1="158.62" x2="568.6" y2="158.62" stroke="#ffa4a4" stroke-width="0.72"/><line x1="0" y1="169.95" x2="568.6" y2="169.95" stroke="#ffa4a4" stroke-width="0.72"/><line x1="0" y1="181.28" x2="568.6" y2="181.28" stroke="#ffa4a4" stroke-width="0.72"/><line x1="0" y1="192.61" x2="568.6" y2="192.61" stroke="#ffa4a4" stroke-width="0.72"/><line x1="0" y1="203.94" x2="568.6" y2="203.94" stroke="#ffa4a4" stroke-width="0.72"/><line x1="0" y1="215.27" x2="568.6" y2="215.27" stroke="#ffa4a4" stroke-width="0.72"/><line x1="0" y1="226.60" x2="568.6" y2="226.60" stroke="#ffa4a4" stroke-width="0.72"/><line x1="0" y1="237.93" x2="568.6" y2="237.93" stroke="#ffa4a4" stroke-width="0.72"/><line x1="0" y1="249.26" x2="568.6" y2="249.26" stroke="#ffa4a4" stroke-width="0.72"/><line x1="0" y1="260.59" x2="568.6" y2="260.59" stroke="#ffa4a4" stroke-width="0.72"/><line x1="0" y1="271.92" x2="568.6" y2="271.92" stroke="#ffa4a4" stroke-width="0.72"/><line x1="0" y1="283.25" x2="568.6" y2="283.25" stroke="#ffa4a4" stroke-width="0.72"/><line x1="0" y1="294.58" x2="568.6" y2="294.58" stroke="#ffa4a4" stroke-width="0.72"/><line x1="0" y1="305.91" x2="568.6" y2="305.91" stroke="#ffa4a4" stroke-width="0.72"/><line x1="0" y1="317.24" x2="568.6" y2="317.24" stroke="#ffa4a4" stroke-width="0.72"/><line x1="0" y1="328.57" x2="568.6" y2="328.57" stroke="#ffa4a4" stroke-width="0.72"/><line x1="0" y1="339.90" x2="568.6" y2="339.90" stroke="#ffa4a4" stroke-width="0.72"/><line x1="0" y1="351.23" x2="568.6" y2="351.23" stroke="#ffa4a4" stroke-width="0.72"/><line x1="0" y1="362.56" x2="568.6" y2="362.56" stroke="#ffa4a4" stroke-width="0.72"/><line x1="0" y1="373.89" x2="568.6" y2="373.89" stroke="#ffa4a4" stroke-width="0.72"/><line x1="0" y1="385.22" x2="568.6" y2="385.22" stroke="#ffa4a4" stroke-width="0.72"/><line x1="142.4" y1="57.3" x2="142.4" y2="99.0" stroke="#e4464a" stroke-width="0.9"/><line x1="283.9" y1="57.3" x2="283.9" y2="99.0" stroke="#e4464a" stroke-width="0.9"/><line x1="425.6" y1="57.3" x2="425.6" y2="99.0" stroke="#e4464a" stroke-width="0.9"/><line x1="142.4" y1="135.4" x2="142.4" y2="177.1" stroke="#e4464a" stroke-width="0.9"/><line x1="283.9" y1="135.4" x2="283.9" y2="177.1" stroke="#e4464a" stroke-width="0.9"/><line x1="425.6" y1="135.4" x2="425.6" y2="177.1" stroke="#e4464a" stroke-width="0.9"/><line x1="142.4" y1="213.1" x2="142.4" y2="254.8" stroke="#e4464a" stroke-width="0.9"/><line x1="283.9" y1="213.1" x2="283.9" y2="254.8" stroke="#e4464a" stroke-width="0.9"/><line x1="425.6" y1="213.1" x2="425.6" y2="254.8" stroke="#e4464a" stroke-width="0.9"/><polyline points="0.0,78.4 0.5,78.2 1.0,78.2 1.5,78.2 2.0,78.4 2.5,78.6 3.0,78.8 3.5,78.9 4.0,79.0 4.5,79.0 5.0,79.0 5.5,78.9 6.0,78.9 6.5,78.9 7.0,77.1 7.5,68.4 8.0,67.0 8.5,78.1 9.0,80.6 9.5,79.2 10.0,79.0 10.5,78.9 11.0,78.9 11.5,78.9 12.0,78.9 12.5,78.8 13.0,78.8 13.5,78.8 14.0,78.7 14.5,78.7 15.0,78.6 15.5,78.5 16.0,78.3 16.5,78.1 17.0,77.8 17.5,77.6 18.0,77.4 18.5,77.2 19.0,77.0 19.5,76.7 20.0,76.5 20.5,76.4 21.0,76.4 21.5,76.4 22.0,76.6 22.5,76.8 23.0,77.1 23.5,77.3 24.0,77.6 24.5,77.9 25.0,78.0 25.5,78.2 26.0,78.5 26.5,78.6 27.0,78.8 27.5,78.8 28.0,78.8 28.5,78.9 29.0,79.0 29.5,78.9 30.0,78.9 30.5,78.9 31.0,79.0 31.5,79.1 32.0,79.0 32.5,78.9 33.0,78.9 33.5,78.9 34.0,79.0 34.5,78.9 35.0,79.0 35.5,79.0 36.0,78.9 36.5,78.9 37.0,78.7 37.5,78.6 38.0,78.3 38.5,78.1 39.0,78.0 39.5,78.1 40.0,78.5 40.5,78.8 41.0,78.9 41.5,79.0 42.0,79.0 42.5,79.0 43.0,79.0 43.5,79.0 44.0,79.0 44.5,78.7 45.0,74.4 45.5,65.4 46.0,71.4 46.5,80.3 47.0,79.8 47.5,78.9 48.0,78.9 48.5,78.9 49.0,78.9 49.5,78.9 50.0,78.9 50.5,78.9 51.0,79.0 51.5,78.9 52.0,78.8 52.5,78.7 53.0,78.5 53.5,78.3 54.0,78.2 54.5,78.0 55.0,77.7 55.5,77.4 56.0,77.2 56.5,77.0 57.0,76.7 57.5,76.6 58.0,76.6 58.5,76.5 59.0,76.5 59.5,76.5 60.0,76.6 60.5,76.9 61.0,77.1 61.5,77.4 62.0,77.6 62.5,77.9 63.0,78.1 63.5,78.3 64.0,78.4 64.5,78.6 65.0,78.7 65.5,78.7 66.0,78.8 66.5,79.0 67.0,79.0 67.5,79.0 68.0,79.0 68.5,79.0 69.0,78.9 69.5,78.9 70.0,78.9 70.5,78.9 71.0,78.9 71.5,78.9 72.0,79.0 72.5,78.9 73.0,78.9 73.5,79.0 74.0,79.0 74.5,79.0 75.0,78.8 75.5,78.6 76.0,78.2 76.5,78.0 77.0,78.0 77.5,78.3 78.0,78.6 78.5,78.9 79.0,78.9 79.5,79.0 80.0,79.0 80.5,79.0 81.0,79.0 81.5,79.1 82.0,78.9 82.5,77.9 83.0,70.5 83.5,65.7 84.0,76.2 84.5,80.8 85.0,79.4 85.5,79.1 86.0,79.0 86.5,79.0 87.0,79.1 87.5,79.1 88.0,79.0 88.5,79.0 89.0,79.0 89.5,78.9 90.0,78.8 90.5,78.6 91.0,78.5 91.5,78.3 92.0,78.1 92.5,77.9 93.0,77.7 93.5,77.5 94.0,77.2 94.5,76.9 95.0,76.7 95.5,76.6 96.0,76.4 96.5,76.5 97.0,76.4 97.5,76.6 98.0,76.7 98.5,76.9 99.0,77.2 99.5,77.4 100.0,77.7 100.5,78.0 101.0,78.2 101.5,78.5 102.0,78.6 102.5,78.6 103.0,78.7 103.5,78.8 104.0,78.8 104.5,78.8 105.0,79.0 105.5,79.0 106.0,79.0 106.5,79.1 107.0,79.0 107.5,79.0 108.0,79.0 108.5,79.0 109.0,79.0 109.5,79.1 110.0,79.1 110.5,79.0 111.0,79.0 111.5,79.0 112.0,78.9 112.5,78.8 113.0,78.7 113.5,78.5 114.0,78.3 114.5,78.2 115.0,78.2 115.5,78.4 116.0,78.6 116.5,78.8 117.0,78.9 117.5,78.9 118.0,79.0 118.5,79.0 119.0,79.0 119.5,79.0 120.0,78.9 120.5,76.0 121.0,66.6 121.5,68.9 122.0,79.4 122.5,80.1 123.0,79.1 123.5,79.0 124.0,79.0 124.5,79.0 125.0,78.9 125.5,78.9 126.0,78.9 126.5,78.8 127.0,78.8 127.5,78.7 128.0,78.6 128.5,78.4 129.0,78.4 129.5,78.2 130.0,78.0 130.5,77.8 131.0,77.6 131.5,77.4 132.0,77.1 132.5,76.8 133.0,76.6 133.5,76.4 134.0,76.3 134.5,76.3 135.0,76.5 135.5,76.6 136.0,76.8 136.5,77.0 137.0,77.3 137.5,77.6 138.0,77.9 138.5,78.1 139.0,78.3 139.5,78.5 140.0,78.7 140.5,78.7 141.0,78.9 141.5,78.9 142.0,78.9 142.4,78.3 142.9,78.1 143.4,78.0 143.9,77.8 144.4,77.7 144.9,77.7 145.4,77.7 145.9,77.7 146.4,77.7 146.9,77.6 147.4,76.4 147.9,75.8 148.4,85.6 148.9,94.7 149.4,86.0 149.9,78.6 150.4,77.7 150.9,77.7 151.4,77.8 151.9,77.7 152.4,77.7 152.9,77.7 153.4,77.7 153.9,77.8 154.4,77.8 154.9,77.7 155.4,77.8 155.9,77.9 156.4,78.1 156.9,78.3 157.4,78.4 157.9,78.6 158.4,78.8 158.9,79.1 159.4,79.2 159.9,79.4 160.4,79.6 160.9,79.7 161.4,79.7 161.9,79.7 162.4,79.7 162.9,79.7 163.4,79.5 163.9,79.4 164.4,79.1 164.9,78.9 165.4,78.6 165.9,78.3 166.4,78.2 166.9,78.0 167.4,77.9 167.9,77.9 168.4,77.8 168.9,77.8 169.4,77.7 169.9,77.6 170.4,77.6 170.9,77.7 171.4,77.7 171.9,77.6 172.4,77.7 172.9,77.7 173.4,77.7 173.9,77.7 174.4,77.6 174.9,77.6 175.4,77.6 175.9,77.6 176.4,77.5 176.9,77.7 177.4,77.7 177.9,77.8 178.4,78.0 178.9,78.3 179.4,78.4 179.9,78.4 180.4,78.2 180.9,78.0 181.4,77.8 181.9,77.8 182.4,77.7 182.9,77.6 183.4,77.6 183.9,77.5 184.4,77.6 184.9,77.4 185.4,75.4 185.9,78.6 186.4,90.7 186.9,92.7 187.4,81.8 187.9,77.9 188.4,77.6 188.9,77.6 189.4,77.6 189.9,77.5 190.4,77.5 190.9,77.6 191.4,77.6 191.9,77.6 192.4,77.7 192.9,77.7 193.4,77.9 193.9,77.9 194.4,78.1 194.9,78.3 195.4,78.4 195.9,78.7 196.4,78.9 196.9,79.1 197.4,79.3 197.9,79.5 198.4,79.6 198.9,79.7 199.4,79.8 199.9,79.8 200.4,79.7 200.9,79.6 201.4,79.4 201.9,79.2 202.4,78.9 202.9,78.8 203.4,78.6 203.9,78.4 204.4,78.2 204.9,78.0 205.4,78.0 205.9,77.8 206.4,77.8 206.9,77.8 207.4,77.7 207.9,77.6 208.4,77.6 208.9,77.6 209.4,77.5 209.9,77.6 210.4,77.6 210.9,77.6 211.4,77.6 211.9,77.6 212.4,77.6 212.9,77.5 213.4,77.5 213.9,77.6 214.4,77.7 214.9,77.8 215.4,77.7 215.9,77.9 216.4,78.1 216.9,78.3 217.4,78.4 217.9,78.3 218.4,78.1 218.9,77.8 219.4,77.6 219.9,77.6 220.4,77.6 220.9,77.6 221.4,77.5 221.9,77.5 222.4,77.5 222.9,76.9 223.4,75.2 223.9,83.1 224.4,94.1 224.9,88.3 225.4,79.3 225.9,77.7 226.4,77.7 226.9,77.6 227.4,77.6 227.9,77.6 228.4,77.6 228.9,77.7 229.4,77.6 229.9,77.7 230.4,77.8 230.9,77.8 231.4,77.9 231.9,78.1 232.4,78.2 232.9,78.3 233.4,78.5 233.9,78.8 234.4,78.9 234.9,79.2 235.4,79.5 235.9,79.7 236.4,79.8 236.9,79.9 237.4,79.8 237.9,79.8 238.4,79.7 238.9,79.6 239.4,79.4 239.9,79.1 240.4,78.9 240.9,78.7 241.4,78.5 241.9,78.4 242.4,78.1 242.9,78.1 243.4,78.0 243.9,77.9 244.4,77.8 244.9,77.8 245.4,77.7 245.9,77.7 246.4,77.6 246.9,77.6 247.4,77.6 247.9,77.5 248.4,77.5 248.9,77.6 249.4,77.6 249.9,77.6 250.4,77.6 250.9,77.7 251.4,77.6 251.9,77.6 252.4,77.7 252.9,77.7 253.4,77.8 253.9,78.0 254.4,78.2 254.9,78.4 255.4,78.5 255.9,78.4 256.4,78.1 256.9,77.9 257.4,77.8 257.9,77.6 258.4,77.6 258.9,77.5 259.4,77.5 259.9,77.5 260.4,77.4 260.9,75.7 261.4,76.9 261.9,88.2 262.4,94.1 262.9,83.8 263.4,78.2 263.9,77.7 264.4,77.7 264.9,77.7 265.4,77.6 265.9,77.6 266.4,77.7 266.9,77.6 267.4,77.7 267.9,77.7 268.4,77.8 268.9,77.8 269.4,77.9 269.9,78.1 270.4,78.2 270.9,78.5 271.4,78.7 271.9,78.9 272.4,79.1 272.9,79.3 273.4,79.5 273.9,79.7 274.4,79.8 274.9,79.8 275.4,79.8 275.9,79.7 276.4,79.5 276.9,79.3 277.4,79.1 277.9,78.8 278.4,78.7 278.9,78.5 279.4,78.4 279.9,78.2 280.4,78.0 280.9,78.0 281.4,77.9 281.9,77.8 282.4,77.8 282.9,77.7 283.4,77.7 283.9,77.2 284.4,77.3 284.9,77.4 285.4,77.6 285.9,77.6 286.4,77.6 286.9,77.7 287.4,77.7 287.9,77.7 288.4,77.6 288.9,76.4 289.4,75.4 289.9,82.8 290.4,89.0 290.9,83.2 291.4,78.2 291.9,77.6 292.4,77.6 292.9,77.6 293.4,77.6 293.9,77.6 294.4,77.6 294.9,77.7 295.4,77.7 295.9,77.8 296.4,77.8 296.9,77.9 297.4,77.8 297.9,77.8 298.4,78.0 298.9,78.1 299.4,78.2 299.9,78.3 300.4,78.4 300.9,78.5 301.4,78.6 301.9,78.7 302.4,78.8 302.9,78.9 303.4,78.8 303.9,78.7 304.4,78.7 304.9,78.7 305.4,78.6 305.9,78.4 306.4,78.2 306.9,78.1 307.4,78.0 307.9,77.9 308.4,77.8 308.9,77.7 309.4,77.6 309.9,77.6 310.4,77.6 310.9,77.6 311.4,77.6 311.9,77.6 312.4,77.6 312.9,77.6 313.4,77.5 313.9,77.6 314.4,77.7 314.9,77.6 315.4,77.5 315.9,77.6 316.4,77.6 316.9,77.7 317.4,77.6 317.9,77.6 318.4,77.5 318.9,77.6 319.4,77.5 319.9,77.4 320.4,77.3 320.9,77.1 321.4,77.1 321.9,77.2 322.4,77.4 322.9,77.5 323.4,77.5 323.9,77.5 324.4,77.6 324.9,77.5 325.4,77.5 325.9,77.6 326.4,77.4 326.9,75.3 327.4,77.6 327.9,86.5 328.4,87.8 328.9,80.4 329.4,77.8 329.9,77.5 330.4,77.5 330.9,77.6 331.4,77.6 331.9,77.6 332.4,77.6 332.9,77.6 333.4,77.7 333.9,77.7 334.4,77.6 334.9,77.8 335.4,77.8 335.9,78.0 336.4,78.1 336.9,78.2 337.4,78.3 337.9,78.4 338.4,78.5 338.9,78.5 339.4,78.6 339.9,78.8 340.4,78.9 340.9,78.8 341.4,78.8 341.9,78.7 342.4,78.6 342.9,78.5 343.4,78.4 343.9,78.3 344.4,78.2 344.9,78.1 345.4,78.0 345.9,78.0 346.4,77.9 346.9,77.7 347.4,77.7 347.9,77.8 348.4,77.7 348.9,77.6 349.4,77.6 349.9,77.6 350.4,77.6 350.9,77.7 351.4,77.7 351.9,77.7 352.4,77.6 352.9,77.6 353.4,77.6 353.9,77.6 354.4,77.5 354.9,77.6 355.4,77.7 355.9,77.6 356.4,77.6 356.9,77.5 357.4,77.4 357.9,77.3 358.4,77.1 358.9,77.0 359.4,77.1 359.9,77.2 360.4,77.4 360.9,77.5 361.4,77.5 361.9,77.6 362.4,77.7 362.9,77.6 363.4,77.6 363.9,77.6 364.4,76.9 364.9,75.1 365.4,81.0 365.9,88.8 366.4,85.0 366.9,78.9 367.4,77.8 367.9,77.7 368.4,77.7 368.9,77.8 369.4,77.7 369.9,77.7 370.4,77.7 370.9,77.7 371.4,77.7 371.9,77.7 372.4,77.7 372.9,77.8 373.4,77.9 373.9,78.0 374.4,78.0 374.9,78.1 375.4,78.2 375.9,78.3 376.4,78.5 376.9,78.6 377.4,78.6 377.9,78.7 378.4,78.8 378.9,78.8 379.4,78.7 379.9,78.6 380.4,78.6 380.9,78.5 381.4,78.5 381.9,78.2 382.4,78.1 382.9,77.9 383.4,77.8 383.9,77.8 384.4,77.8 384.9,77.7 385.4,77.7 385.9,77.6 386.4,77.6 386.9,77.5 387.4,77.6 387.9,77.6 388.4,77.6 388.9,77.6 389.4,77.6 389.9,77.6 390.4,77.6 390.9,77.7 391.4,77.6 391.9,77.6 392.4,77.7 392.9,77.6 393.4,77.6 393.9,77.5 394.4,77.6 394.9,77.5 395.4,77.4 395.9,77.3 396.4,77.1 396.9,77.1 397.4,77.2 397.9,77.4 398.4,77.4 398.9,77.4 399.4,77.5 399.9,77.5 400.4,77.6 400.9,77.6 401.4,77.6 401.9,77.5 402.4,75.8 402.9,76.3 403.4,84.6 403.9,88.8 404.4,81.8 404.9,78.0 405.4,77.7 405.9,77.6 406.4,77.6 406.9,77.6 407.4,77.6 407.9,77.5 408.4,77.6 408.9,77.7 409.4,77.8 409.9,77.7 410.4,77.7 410.9,77.8 411.4,77.8 411.9,77.9 412.4,78.0 412.9,78.2 413.4,78.4 413.9,78.5 414.4,78.6 414.9,78.7 415.4,78.7 415.9,78.9 416.4,78.8 416.9,78.8 417.4,78.7 417.9,78.7 418.4,78.6 418.9,78.4 419.4,78.4 419.9,78.2 420.4,78.1 420.9,77.9 421.4,77.8 421.9,77.8 422.4,77.8 422.9,77.7 423.4,77.7 423.9,77.6 424.4,77.6 424.9,77.6 425.6,77.8 426.1,78.0 426.6,78.3 427.1,78.4 427.6,78.5 428.1,78.6 428.6,78.6 429.1,78.6 429.6,78.6 430.1,78.5 430.6,78.4 431.1,74.0 431.6,59.7 432.1,63.8 432.6,80.5 433.1,81.3 433.6,78.9 434.1,78.6 434.6,78.5 435.1,78.5 435.6,78.6 436.1,78.5 436.6,78.4 437.1,78.4 437.6,78.3 438.1,78.2 438.6,78.0 439.1,77.8 439.6,77.5 440.1,77.1 440.6,76.6 441.1,76.1 441.6,75.5 442.1,75.1 442.6,74.6 443.1,74.1 443.6,73.8 444.1,73.6 444.6,73.4 445.1,73.4 445.6,73.5 446.1,73.8 446.6,74.1 447.1,74.6 447.6,75.1 448.1,75.8 448.6,76.3 449.1,76.7 449.6,77.2 450.1,77.6 450.6,77.9 451.1,78.1 451.6,78.2 452.1,78.3 452.6,78.3 453.1,78.4 453.6,78.5 454.1,78.6 454.6,78.7 455.1,78.7 455.6,78.7 456.1,78.6 456.6,78.5 457.1,78.5 457.6,78.6 458.1,78.5 458.6,78.5 459.1,78.6 459.6,78.6 460.1,78.6 460.6,78.5 461.1,78.3 461.6,78.1 462.1,77.9 462.6,77.7 463.1,77.6 463.6,77.8 464.1,78.0 464.6,78.3 465.1,78.5 465.6,78.6 466.1,78.6 466.6,78.7 467.1,78.6 467.6,78.7 468.1,78.6 468.6,77.6 469.1,68.7 469.6,57.3 470.1,71.6 470.6,82.5 471.1,80.0 471.6,78.7 472.1,78.6 472.6,78.6 473.1,78.5 473.6,78.6 474.1,78.5 474.6,78.5 475.1,78.4 475.6,78.3 476.1,78.1 476.6,77.9 477.1,77.7 477.6,77.4 478.1,77.0 478.6,76.5 479.1,76.0 479.6,75.5 480.1,74.9 480.6,74.5 481.1,74.0 481.6,73.7 482.1,73.5 482.6,73.4 483.1,73.5 483.6,73.6 484.1,73.9 484.6,74.3 485.1,74.9 485.6,75.5 486.1,76.0 486.6,76.5 487.1,76.9 487.6,77.4 488.1,77.6 488.6,77.9 489.1,78.2 489.6,78.2 490.1,78.3 490.6,78.4 491.1,78.4 491.6,78.5 492.1,78.5 492.6,78.5 493.1,78.5 493.6,78.5 494.1,78.6 494.6,78.6 495.1,78.6 495.6,78.5 496.1,78.6 496.6,78.5 497.1,78.6 497.6,78.6 498.1,78.6 498.6,78.4 499.1,78.3 499.6,78.0 500.1,77.8 500.6,77.7 501.1,77.7 501.6,78.0 502.1,78.3 502.6,78.5 503.1,78.6 503.6,78.6 504.1,78.6 504.6,78.7 505.1,78.7 505.6,78.6 506.1,78.5 506.6,75.8 507.1,62.4 507.6,60.5 508.1,78.3 508.6,82.1 509.1,79.2 509.6,78.7 510.1,78.7 510.6,78.6 511.1,78.6 511.6,78.5 512.1,78.4 512.6,78.4 513.1,78.3 513.6,78.2 514.1,77.9 514.6,77.8 515.1,77.5 515.6,77.1 516.1,76.7 516.6,76.2 517.1,75.7 517.6,75.1 518.1,74.7 518.6,74.3 519.1,73.9 519.6,73.7 520.1,73.5 520.6,73.5 521.1,73.5 521.6,73.8 522.1,74.2 522.6,74.7 523.1,75.1 523.6,75.7 524.1,76.1 524.6,76.6 525.1,77.1 525.6,77.4 526.1,77.7 526.6,77.9 527.1,78.1 527.6,78.2 528.1,78.4 528.6,78.5 529.1,78.5 529.6,78.5 530.1,78.6 530.6,78.5 531.1,78.5 531.6,78.6 532.1,78.6 532.6,78.6 533.1,78.7 533.6,78.7 534.1,78.7 534.6,78.6 535.1,78.6 535.6,78.6 536.1,78.6 536.6,78.4 537.1,78.2 537.6,77.9 538.1,77.7 538.6,77.6 539.1,77.8 539.6,78.1 540.1,78.3 540.6,78.5 541.1,78.5 541.6,78.6 542.1,78.5 542.6,78.5 543.1,78.6 543.6,78.6 544.1,78.1 544.6,71.7 545.1,58.0 545.6,67.7 546.1,81.9 546.6,80.7 547.1,78.8 547.6,78.6 548.1,78.5 548.6,78.5 549.1,78.5 549.6,78.5 550.1,78.4 550.6,78.3 551.1,78.3 551.6,78.2 552.1,77.9 552.6,77.7 553.1,77.5 553.6,77.1 554.1,76.5 554.6,76.0 555.1,75.6 555.6,75.1 556.1,74.5 556.6,74.1 557.1,73.7 557.6,73.5 558.1,73.4 558.6,73.5 559.1,73.6 559.6,73.9 560.1,74.3 560.6,74.8 561.1,75.3 561.6,75.9 562.1,76.3 562.6,76.8 563.1,77.2 563.6,77.5 564.1,77.8 564.6,78.0 565.1,78.2 565.6,78.4 566.1,78.5 566.6,78.5 567.1,78.5 567.6,78.6 568.1,78.6" fill="none" stroke="#3a7dc2" stroke-width="0.75" stroke-linejoin="round"/><polyline points="0.0,156.3 0.5,156.0 1.0,155.8 1.5,155.9 2.0,156.2 2.5,156.5 3.0,156.7 3.5,156.9 4.0,157.0 4.5,157.0 5.0,157.1 5.5,157.1 6.0,157.0 6.5,157.0 7.0,154.3 7.5,142.0 8.0,139.8 8.5,155.6 9.0,159.1 9.5,157.2 10.0,157.0 10.5,157.0 11.0,157.1 11.5,157.0 12.0,156.9 12.5,156.9 13.0,156.8 13.5,156.8 14.0,156.6 14.5,156.5 15.0,156.4 15.5,156.1 16.0,155.9 16.5,155.5 17.0,155.1 17.5,154.6 18.0,154.2 18.5,153.8 19.0,153.5 19.5,153.1 20.0,153.0 20.5,152.8 21.0,152.8 21.5,152.9 22.0,153.1 22.5,153.5 23.0,153.8 23.5,154.1 24.0,154.6 24.5,154.9 25.0,155.3 25.5,155.7 26.0,156.0 26.5,156.3 27.0,156.5 27.5,156.6 28.0,156.8 28.5,156.8 29.0,156.8 29.5,156.8 30.0,156.9 30.5,157.0 31.0,157.1 31.5,157.0 32.0,157.0 32.5,157.0 33.0,156.9 33.5,157.0 34.0,156.9 34.5,157.0 35.0,157.0 35.5,157.1 36.0,157.0 36.5,156.9 37.0,156.8 37.5,156.4 38.0,156.1 38.5,155.9 39.0,155.8 39.5,155.9 40.0,156.2 40.5,156.5 41.0,156.7 41.5,156.8 42.0,157.0 42.5,157.0 43.0,157.1 43.5,157.0 44.0,157.0 44.5,156.5 45.0,150.5 45.5,137.6 46.0,146.1 46.5,158.8 47.0,158.2 47.5,157.1 48.0,157.0 48.5,156.9 49.0,156.9 49.5,157.0 50.0,156.9 50.5,156.8 51.0,156.8 51.5,156.8 52.0,156.7 52.5,156.6 53.0,156.3 53.5,156.0 54.0,155.8 54.5,155.4 55.0,155.0 55.5,154.5 56.0,154.1 56.5,153.6 57.0,153.3 57.5,153.0 58.0,152.8 58.5,152.7 59.0,152.8 59.5,152.9 60.0,153.2 60.5,153.6 61.0,154.0 61.5,154.5 62.0,154.8 62.5,155.2 63.0,155.5 63.5,155.9 64.0,156.1 64.5,156.3 65.0,156.5 65.5,156.6 66.0,156.7 66.5,156.8 67.0,156.9 67.5,157.0 68.0,157.0 68.5,157.0 69.0,156.9 69.5,157.0 70.0,157.0 70.5,157.0 71.0,157.1 71.5,157.1 72.0,157.0 72.5,157.0 73.0,157.0 73.5,156.9 74.0,156.9 74.5,156.8 75.0,156.7 75.5,156.4 76.0,156.0 76.5,155.8 77.0,155.8 77.5,156.0 78.0,156.3 78.5,156.6 79.0,156.8 79.5,156.9 80.0,156.9 80.5,157.0 81.0,156.9 81.5,157.0 82.0,156.9 82.5,155.4 83.0,144.9 83.5,137.8 84.0,152.8 84.5,159.4 85.0,157.4 85.5,157.0 86.0,157.0 86.5,157.0 87.0,156.9 87.5,156.9 88.0,156.9 88.5,156.8 89.0,156.7 89.5,156.6 90.0,156.5 90.5,156.4 91.0,156.2 91.5,156.0 92.0,155.6 92.5,155.2 93.0,154.9 93.5,154.4 94.0,154.0 94.5,153.6 95.0,153.3 95.5,153.1 96.0,152.9 96.5,152.8 97.0,152.8 97.5,153.0 98.0,153.3 98.5,153.6 99.0,154.0 99.5,154.5 100.0,154.9 100.5,155.3 101.0,155.6 101.5,155.9 102.0,156.2 102.5,156.4 103.0,156.6 103.5,156.7 104.0,156.7 104.5,156.8 105.0,156.9 105.5,156.9 106.0,156.9 106.5,157.0 107.0,157.0 107.5,157.0 108.0,156.9 108.5,156.9 109.0,156.9 109.5,156.9 110.0,156.9 110.5,156.9 111.0,156.9 111.5,156.9 112.0,156.9 112.5,156.7 113.0,156.5 113.5,156.1 114.0,155.8 114.5,155.8 115.0,155.9 115.5,156.2 116.0,156.5 116.5,156.7 117.0,156.9 117.5,157.0 118.0,157.1 118.5,157.0 119.0,157.0 119.5,157.1 120.0,156.9 120.5,152.8 121.0,139.4 121.5,142.7 122.0,157.6 122.5,158.6 123.0,157.2 123.5,157.1 124.0,157.0 124.5,157.1 125.0,156.9 125.5,156.9 126.0,156.9 126.5,156.8 127.0,156.7 127.5,156.7 128.0,156.5 128.5,156.2 129.0,156.0 129.5,155.7 130.0,155.4 130.5,154.9 131.0,154.6 131.5,154.1 132.0,153.7 132.5,153.4 133.0,153.1 133.5,152.9 134.0,152.8 134.5,152.8 135.0,153.0 135.5,153.3 136.0,153.5 136.5,153.9 137.0,154.3 137.5,154.7 138.0,155.2 138.5,155.6 139.0,155.9 139.5,156.2 140.0,156.5 140.5,156.6 141.0,156.7 141.5,156.8 142.0,156.9 142.4,155.9 142.9,156.0 143.4,156.1 143.9,156.2 144.4,156.1 144.9,156.1 145.4,156.1 145.9,156.1 146.4,156.1 146.9,156.1 147.4,156.0 147.9,155.4 148.4,153.2 148.9,153.7 149.4,155.7 149.9,156.1 150.4,156.2 150.9,156.2 151.4,156.1 151.9,156.2 152.4,156.3 152.9,156.2 153.4,156.1 153.9,156.2 154.4,156.2 154.9,156.2 155.4,156.2 155.9,156.1 156.4,156.1 156.9,156.1 157.4,156.0 157.9,156.0 158.4,156.0 158.9,156.0 159.4,156.0 159.9,155.9 160.4,155.9 160.9,155.9 161.4,155.9 161.9,155.9 162.4,155.8 162.9,155.8 163.4,155.9 163.9,155.9 164.4,155.9 164.9,155.9 165.4,156.0 165.9,156.1 166.4,156.2 166.9,156.1 167.4,156.2 167.9,156.2 168.4,156.2 168.9,156.2 169.4,156.3 169.9,156.3 170.4,156.2 170.9,156.2 171.4,156.2 171.9,156.1 172.4,156.1 172.9,156.2 173.4,156.3 173.9,156.2 174.4,156.2 174.9,156.1 175.4,156.1 175.9,156.2 176.4,156.2 176.9,156.1 177.4,156.2 177.9,156.2 178.4,156.1 178.9,156.0 179.4,155.9 179.9,156.0 180.4,156.1 180.9,156.1 181.4,156.2 181.9,156.2 182.4,156.3 182.9,156.2 183.4,156.1 183.9,156.1 184.4,156.2 184.9,156.2 185.4,156.0 185.9,154.7 186.4,152.9 186.9,154.6 187.4,156.0 187.9,156.1 188.4,156.2 188.9,156.1 189.4,156.1 189.9,156.1 190.4,156.1 190.9,156.1 191.4,156.1 191.9,156.0 192.4,156.2 192.9,156.1 193.4,156.1 193.9,156.0 194.4,156.0 194.9,156.1 195.4,156.0 195.9,156.0 196.4,156.0 196.9,155.9 197.4,155.9 197.9,155.9 198.4,155.8 198.9,155.8 199.4,155.8 199.9,155.8 200.4,155.8 200.9,155.9 201.4,156.0 201.9,156.1 202.4,156.0 202.9,156.1 203.4,156.1 203.9,156.1 204.4,156.0 204.9,156.0 205.4,156.0 205.9,156.0 206.4,156.1 206.9,156.2 207.4,156.1 207.9,156.2 208.4,156.1 208.9,156.1 209.4,156.2 209.9,156.1 210.4,156.2 210.9,156.2 211.4,156.3 211.9,156.3 212.4,156.2 212.9,156.3 213.4,156.3 213.9,156.3 214.4,156.3 214.9,156.2 215.4,156.2 215.9,156.1 216.4,156.1 216.9,155.9 217.4,156.0 217.9,155.9 218.4,156.0 218.9,156.0 219.4,156.1 219.9,156.1 220.4,156.2 220.9,156.2 221.4,156.2 221.9,156.2 222.4,156.2 222.9,156.1 223.4,155.8 223.9,153.8 224.4,153.3 224.9,155.4 225.4,156.2 225.9,156.2 226.4,156.2 226.9,156.2 227.4,156.2 227.9,156.2 228.4,156.1 228.9,156.1 229.4,156.1 229.9,156.1 230.4,156.1 230.9,156.1 231.4,156.1 231.9,156.1 232.4,156.1 232.9,156.1 233.4,156.0 233.9,156.0 234.4,155.9 234.9,155.9 235.4,155.8 235.9,155.9 236.4,155.8 236.9,155.9 237.4,155.8 237.9,155.8 238.4,155.9 238.9,155.8 239.4,155.8 239.9,155.9 240.4,156.0 240.9,156.0 241.4,156.0 241.9,156.0 242.4,156.2 242.9,156.1 243.4,156.2 243.9,156.2 244.4,156.2 244.9,156.1 245.4,156.2 245.9,156.3 246.4,156.3 246.9,156.3 247.4,156.2 247.9,156.2 248.4,156.2 248.9,156.2 249.4,156.2 249.9,156.2 250.4,156.2 250.9,156.2 251.4,156.2 251.9,156.1 252.4,156.2 252.9,156.2 253.4,156.1 253.9,156.0 254.4,156.0 254.9,155.9 255.4,155.9 255.9,156.0 256.4,156.1 256.9,156.1 257.4,156.1 257.9,156.3 258.4,156.3 258.9,156.2 259.4,156.2 259.9,156.3 260.4,156.2 260.9,156.2 261.4,155.2 261.9,153.2 262.4,154.3 262.9,155.9 263.4,156.2 263.9,156.3 264.4,156.3 264.9,156.3 265.4,156.3 265.9,156.3 266.4,156.3 266.9,156.2 267.4,156.2 267.9,156.2 268.4,156.2 268.9,156.2 269.4,156.2 269.9,156.1 270.4,156.1 270.9,156.0 271.4,156.0 271.9,156.0 272.4,155.9 272.9,155.9 273.4,155.9 273.9,155.8 274.4,155.8 274.9,155.8 275.4,155.9 275.9,155.9 276.4,155.9 276.9,156.0 277.4,156.0 277.9,156.0 278.4,156.0 278.9,156.0 279.4,155.9 279.9,156.0 280.4,156.1 280.9,156.2 281.4,156.1 281.9,156.1 282.4,156.1 282.9,156.2 283.4,156.2 283.9,156.1 284.4,156.2 284.9,156.4 285.4,156.5 285.9,156.6 286.4,156.7 286.9,156.7 287.4,156.6 287.9,156.6 288.4,156.5 288.9,154.1 289.4,153.3 289.9,168.5 290.4,180.6 290.9,169.5 291.4,158.6 291.9,156.7 292.4,156.6 292.9,156.5 293.4,156.6 293.9,156.6 294.4,156.5 294.9,156.4 295.4,156.5 295.9,156.5 296.4,156.4 296.9,156.2 297.4,156.2 297.9,156.1 298.4,155.9 298.9,155.6 299.4,155.4 299.9,155.1 300.4,154.8 300.9,154.6 301.4,154.4 301.9,154.2 302.4,154.1 302.9,154.0 303.4,154.0 303.9,154.2 304.4,154.3 304.9,154.5 305.4,154.6 305.9,154.9 306.4,155.1 306.9,155.5 307.4,155.7 307.9,155.9 308.4,156.1 308.9,156.2 309.4,156.4 309.9,156.4 310.4,156.5 310.9,156.6 311.4,156.6 311.9,156.5 312.4,156.5 312.9,156.5 313.4,156.5 313.9,156.6 314.4,156.6 314.9,156.6 315.4,156.6 315.9,156.6 316.4,156.6 316.9,156.5 317.4,156.6 317.9,156.6 318.4,156.5 318.9,156.5 319.4,156.5 319.9,156.4 320.4,156.2 320.9,156.1 321.4,156.0 321.9,156.1 322.4,156.2 322.9,156.4 323.4,156.5 323.9,156.6 324.4,156.6 324.9,156.6 325.4,156.7 325.9,156.7 326.4,156.1 326.9,152.5 327.4,158.0 327.9,175.6 328.4,178.3 328.9,163.7 329.4,157.3 329.9,156.6 330.4,156.7 330.9,156.7 331.4,156.7 331.9,156.6 332.4,156.7 332.9,156.6 333.4,156.6 333.9,156.6 334.4,156.4 334.9,156.2 335.4,156.1 335.9,156.0 336.4,155.7 336.9,155.6 337.4,155.3 337.9,155.0 338.4,154.7 338.9,154.5 339.4,154.3 339.9,154.1 340.4,153.9 340.9,154.0 341.4,154.0 341.9,154.2 342.4,154.3 342.9,154.6 343.4,154.8 343.9,155.1 344.4,155.3 344.9,155.5 345.4,155.7 345.9,156.0 346.4,156.2 346.9,156.4 347.4,156.3 347.9,156.4 348.4,156.5 348.9,156.5 349.4,156.5 349.9,156.6 350.4,156.6 350.9,156.6 351.4,156.5 351.9,156.6 352.4,156.5 352.9,156.5 353.4,156.5 353.9,156.5 354.4,156.6 354.9,156.6 355.4,156.6 355.9,156.5 356.4,156.5 356.9,156.4 357.4,156.4 357.9,156.2 358.4,156.1 358.9,156.0 359.4,156.1 359.9,156.1 360.4,156.4 360.9,156.5 361.4,156.6 361.9,156.6 362.4,156.7 362.9,156.7 363.4,156.7 363.9,156.5 364.4,154.9 364.9,152.3 365.4,164.9 365.9,180.0 366.4,172.7 366.9,159.8 367.4,156.7 367.9,156.5 368.4,156.5 368.9,156.6 369.4,156.6 369.9,156.6 370.4,156.5 370.9,156.5 371.4,156.4 371.9,156.3 372.4,156.2 372.9,156.2 373.4,156.0 373.9,155.9 374.4,155.7 374.9,155.5 375.4,155.3 375.9,155.0 376.4,154.7 376.9,154.5 377.4,154.3 377.9,154.1 378.4,154.0 378.9,154.0 379.4,154.0 379.9,154.2 380.4,154.4 380.9,154.6 381.4,154.8 381.9,155.1 382.4,155.3 382.9,155.6 383.4,155.8 383.9,156.0 384.4,156.2 384.9,156.3 385.4,156.3 385.9,156.4 386.4,156.4 386.9,156.5 387.4,156.5 387.9,156.5 388.4,156.6 388.9,156.6 389.4,156.5 389.9,156.5 390.4,156.6 390.9,156.5 391.4,156.6 391.9,156.7 392.4,156.6 392.9,156.6 393.4,156.6 393.9,156.5 394.4,156.5 394.9,156.5 395.4,156.3 395.9,156.2 396.4,156.0 396.9,156.0 397.4,156.0 397.9,156.1 398.4,156.3 398.9,156.4 399.4,156.6 399.9,156.6 400.4,156.6 400.9,156.6 401.4,156.6 401.9,156.4 402.4,153.2 402.9,155.4 403.4,172.3 403.9,180.0 404.4,166.4 404.9,157.8 405.4,156.7 405.9,156.7 406.4,156.6 406.9,156.6 407.4,156.5 407.9,156.5 408.4,156.5 408.9,156.6 409.4,156.5 409.9,156.3 410.4,156.3 410.9,156.2 411.4,156.0 411.9,155.8 412.4,155.6 412.9,155.3 413.4,155.1 413.9,154.9 414.4,154.7 414.9,154.3 415.4,154.2 415.9,154.1 416.4,154.1 416.9,154.0 417.4,154.1 417.9,154.3 418.4,154.4 418.9,154.6 419.4,155.0 419.9,155.2 420.4,155.4 420.9,155.7 421.4,155.9 421.9,156.1 422.4,156.2 422.9,156.2 423.4,156.3 423.9,156.5 424.4,156.5 424.9,156.6 425.6,155.7 426.1,155.9 426.6,156.2 427.1,156.5 427.6,156.5 428.1,156.6 428.6,156.6 429.1,156.5 429.6,156.6 430.1,156.5 430.6,156.0 431.1,147.6 431.6,124.2 432.1,131.1 432.6,158.9 433.1,161.5 433.6,157.2 434.1,156.6 434.6,156.5 435.1,156.6 435.6,156.5 436.1,156.4 436.6,156.4 437.1,156.3 437.6,156.2 438.1,156.1 438.6,155.8 439.1,155.5 439.6,155.2 440.1,154.7 440.6,154.2 441.1,153.6 441.6,153.1 442.1,152.4 442.6,151.8 443.1,151.1 443.6,150.6 444.1,150.4 444.6,150.2 445.1,150.2 445.6,150.3 446.1,150.8 446.6,151.2 447.1,151.9 447.6,152.5 448.1,153.1 448.6,153.8 449.1,154.4 449.6,154.9 450.1,155.3 450.6,155.6 451.1,155.9 451.6,156.1 452.1,156.2 452.6,156.3 453.1,156.5 453.6,156.5 454.1,156.5 454.6,156.6 455.1,156.6 455.6,156.6 456.1,156.5 456.6,156.6 457.1,156.7 457.6,156.7 458.1,156.6 458.6,156.6 459.1,156.6 459.6,156.5 460.1,156.5 460.6,156.5 461.1,156.3 461.6,156.1 462.1,155.8 462.6,155.7 463.1,155.7 463.6,155.9 464.1,156.1 464.6,156.4 465.1,156.6 465.6,156.6 466.1,156.7 466.6,156.7 467.1,156.6 467.6,156.6 468.1,156.4 468.6,154.4 469.1,138.6 469.6,120.7 470.1,143.7 470.6,162.6 471.1,159.2 471.6,156.7 472.1,156.5 472.6,156.5 473.1,156.5 473.6,156.6 474.1,156.4 474.6,156.5 475.1,156.4 475.6,156.2 476.1,156.0 476.6,155.8 477.1,155.5 477.6,155.1 478.1,154.6 478.6,154.1 479.1,153.4 479.6,152.7 480.1,152.1 480.6,151.5 481.1,151.0 481.6,150.5 482.1,150.3 482.6,150.2 483.1,150.3 483.6,150.6 484.1,151.0 484.6,151.5 485.1,152.1 485.6,152.7 486.1,153.4 486.6,153.9 487.1,154.6 487.6,155.1 488.1,155.4 488.6,155.8 489.1,156.0 489.6,156.2 490.1,156.3 490.6,156.5 491.1,156.5 491.6,156.6 492.1,156.5 492.6,156.6 493.1,156.5 493.6,156.5 494.1,156.5 494.6,156.6 495.1,156.7 495.6,156.7 496.1,156.7 496.6,156.7 497.1,156.6 497.6,156.6 498.1,156.5 498.6,156.4 499.1,156.2 499.6,156.0 500.1,155.7 500.6,155.6 501.1,155.6 501.6,155.9 502.1,156.1 502.6,156.3 503.1,156.5 503.6,156.6 504.1,156.6 504.6,156.6 505.1,156.6 505.6,156.5 506.1,156.3 506.6,150.7 507.1,128.5 507.6,126.0 508.1,155.2 508.6,162.5 509.1,157.9 509.6,156.7 510.1,156.6 510.6,156.6 511.1,156.6 511.6,156.6 512.1,156.5 512.6,156.5 513.1,156.3 513.6,156.1 514.1,156.0 514.6,155.6 515.1,155.2 515.6,154.8 516.1,154.4 516.6,153.7 517.1,153.0 517.6,152.5 518.1,151.9 518.6,151.3 519.1,150.8 519.6,150.5 520.1,150.3 520.6,150.2 521.1,150.3 521.6,150.7 522.1,151.2 522.6,151.8 523.1,152.4 523.6,153.0 524.1,153.6 524.6,154.1 525.1,154.7 525.6,155.1 526.1,155.5 526.6,155.8 527.1,156.0 527.6,156.3 528.1,156.4 528.6,156.4 529.1,156.5 529.6,156.5 530.1,156.5 530.6,156.5 531.1,156.5 531.6,156.6 532.1,156.6 532.6,156.5 533.1,156.6 533.6,156.6 534.1,156.6 534.6,156.5 535.1,156.6 535.6,156.5 536.1,156.4 536.6,156.3 537.1,156.1 537.6,155.9 538.1,155.7 538.6,155.7 539.1,155.8 539.6,156.0 540.1,156.3 540.6,156.4 541.1,156.5 541.6,156.5 542.1,156.6 542.6,156.6 543.1,156.6 543.6,156.6 544.1,155.5 544.6,143.5 545.1,121.5 545.6,137.3 546.1,161.5 546.6,160.4 547.1,157.0 547.6,156.6 548.1,156.6 548.6,156.6 549.1,156.6 549.6,156.5 550.1,156.5 550.6,156.3 551.1,156.2 551.6,156.0 552.1,155.7 552.6,155.5 553.1,155.0 553.6,154.5 554.1,154.1 554.6,153.6 555.1,153.0 555.6,152.2 556.1,151.7 556.6,151.0 557.1,150.7 557.6,150.4 558.1,150.2 558.6,150.2 559.1,150.5 559.6,150.9 560.1,151.4 560.6,152.1 561.1,152.7 561.6,153.2 562.1,153.8 562.6,154.4 563.1,154.9 563.6,155.3 564.1,155.6 564.6,155.9 565.1,156.0 565.6,156.2 566.1,156.3 566.6,156.3 567.1,156.4 567.6,156.5 568.1,156.6" fill="none" stroke="#3a7dc2" stroke-width="0.75" stroke-linejoin="round"/><polyline points="0.0,234.1 0.5,234.0 1.0,234.0 1.5,233.9 2.0,234.0 2.5,234.1 3.0,234.2 3.5,234.3 4.0,234.4 4.5,234.4 5.0,234.4 5.5,234.4 6.0,234.4 6.5,234.3 7.0,233.5 7.5,229.2 8.0,228.3 8.5,233.7 9.0,235.0 9.5,234.5 10.0,234.4 10.5,234.5 11.0,234.5 11.5,234.4 12.0,234.4 12.5,234.4 13.0,234.3 13.5,234.2 14.0,234.2 14.5,234.2 15.0,234.2 15.5,234.0 16.0,234.0 16.5,234.0 17.0,233.8 17.5,233.8 18.0,233.6 18.5,233.5 19.0,233.3 19.5,233.2 20.0,233.1 20.5,233.1 21.0,233.2 21.5,233.2 22.0,233.3 22.5,233.4 23.0,233.5 23.5,233.6 24.0,233.8 24.5,233.9 25.0,234.0 25.5,234.1 26.0,234.1 26.5,234.2 27.0,234.3 27.5,234.3 28.0,234.4 28.5,234.4 29.0,234.5 29.5,234.4 30.0,234.4 30.5,234.5 31.0,234.4 31.5,234.4 32.0,234.4 32.5,234.4 33.0,234.4 33.5,234.3 34.0,234.4 34.5,234.4 35.0,234.3 35.5,234.4 36.0,234.4 36.5,234.3 37.0,234.3 37.5,234.2 38.0,234.1 38.5,233.9 39.0,233.8 39.5,233.9 40.0,234.0 40.5,234.2 41.0,234.3 41.5,234.4 42.0,234.3 42.5,234.4 43.0,234.4 43.5,234.4 44.0,234.5 44.5,234.3 45.0,232.1 45.5,227.6 46.0,230.4 46.5,234.8 47.0,234.7 47.5,234.5 48.0,234.4 48.5,234.5 49.0,234.4 49.5,234.4 50.0,234.4 50.5,234.4 51.0,234.4 51.5,234.4 52.0,234.3 52.5,234.3 53.0,234.2 53.5,234.1 54.0,234.0 54.5,233.9 55.0,233.8 55.5,233.7 56.0,233.7 56.5,233.6 57.0,233.5 57.5,233.4 58.0,233.3 58.5,233.3 59.0,233.3 59.5,233.3 60.0,233.4 60.5,233.4 61.0,233.5 61.5,233.7 62.0,233.7 62.5,233.9 63.0,233.9 63.5,234.1 64.0,234.2 64.5,234.3 65.0,234.4 65.5,234.4 66.0,234.3 66.5,234.4 67.0,234.3 67.5,234.4 68.0,234.5 68.5,234.4 69.0,234.4 69.5,234.4 70.0,234.4 70.5,234.5 71.0,234.5 71.5,234.4 72.0,234.4 72.5,234.3 73.0,234.4 73.5,234.5 74.0,234.5 74.5,234.4 75.0,234.3 75.5,234.2 76.0,234.1 76.5,234.0 77.0,233.9 77.5,234.0 78.0,234.1 78.5,234.2 79.0,234.3 79.5,234.3 80.0,234.4 80.5,234.4 81.0,234.5 81.5,234.4 82.0,234.4 82.5,233.8 83.0,230.1 83.5,227.6 84.0,232.8 84.5,235.1 85.0,234.5 85.5,234.5 86.0,234.5 86.5,234.4 87.0,234.5 87.5,234.5 88.0,234.5 88.5,234.5 89.0,234.4 89.5,234.3 90.0,234.3 90.5,234.2 91.0,234.1 91.5,234.1 92.0,234.0 92.5,233.9 93.0,233.8 93.5,233.6 94.0,233.5 94.5,233.4 95.0,233.3 95.5,233.2 96.0,233.1 96.5,233.1 97.0,233.1 97.5,233.2 98.0,233.4 98.5,233.5 99.0,233.6 99.5,233.7 100.0,233.8 100.5,233.9 101.0,234.1 101.5,234.1 102.0,234.2 102.5,234.3 103.0,234.3 103.5,234.4 104.0,234.4 104.5,234.5 105.0,234.5 105.5,234.4 106.0,234.4 106.5,234.5 107.0,234.5 107.5,234.4 108.0,234.4 108.5,234.3 109.0,234.3 109.5,234.4 110.0,234.3 110.5,234.4 111.0,234.4 111.5,234.4 112.0,234.4 112.5,234.4 113.0,234.3 113.5,234.1 114.0,234.0 114.5,233.8 115.0,233.9 115.5,234.1 116.0,234.3 116.5,234.3 117.0,234.3 117.5,234.3 118.0,234.4 118.5,234.4 119.0,234.3 119.5,234.3 120.0,234.3 120.5,232.9 121.0,228.2 121.5,229.3 122.0,234.4 122.5,234.8 123.0,234.4 123.5,234.4 124.0,234.3 124.5,234.3 125.0,234.3 125.5,234.3 126.0,234.2 126.5,234.3 127.0,234.3 127.5,234.2 128.0,234.3 128.5,234.3 129.0,234.2 129.5,234.1 130.0,233.9 130.5,233.9 131.0,233.7 131.5,233.6 132.0,233.4 132.5,233.4 133.0,233.3 133.5,233.2 134.0,233.2 134.5,233.3 135.0,233.2 135.5,233.3 136.0,233.5 136.5,233.5 137.0,233.6 137.5,233.7 138.0,233.8 138.5,233.9 139.0,234.1 139.5,234.1 140.0,234.2 140.5,234.3 141.0,234.3 141.5,234.3 142.0,234.4 142.4,233.8 142.9,234.0 143.4,234.3 143.9,234.5 144.4,234.6 144.9,234.6 145.4,234.7 145.9,234.7 146.4,234.6 146.9,234.6 147.4,234.5 147.9,231.7 148.4,222.3 148.9,224.4 149.4,234.7 149.9,235.4 150.4,234.7 150.9,234.6 151.4,234.7 151.9,234.6 152.4,234.6 152.9,234.5 153.4,234.5 153.9,234.5 154.4,234.4 154.9,234.4 155.4,234.2 155.9,234.1 156.4,234.0 156.9,233.8 157.4,233.6 157.9,233.3 158.4,233.0 158.9,232.8 159.4,232.5 159.9,232.2 160.4,232.0 160.9,231.9 161.4,231.9 161.9,231.9 162.4,232.0 162.9,232.0 163.4,232.3 163.9,232.5 164.4,232.8 164.9,233.2 165.4,233.3 165.9,233.6 166.4,233.8 166.9,234.0 167.4,234.3 167.9,234.3 168.4,234.4 168.9,234.5 169.4,234.5 169.9,234.5 170.4,234.6 170.9,234.6 171.4,234.6 171.9,234.6 172.4,234.6 172.9,234.6 173.4,234.6 173.9,234.6 174.4,234.6 174.9,234.6 175.4,234.7 175.9,234.7 176.4,234.7 176.9,234.6 177.4,234.6 177.9,234.3 178.4,234.1 178.9,233.9 179.4,233.8 179.9,233.8 180.4,233.9 180.9,234.1 181.4,234.3 181.9,234.5 182.4,234.5 182.9,234.5 183.4,234.6 183.9,234.5 184.4,234.5 184.9,234.6 185.4,234.1 185.9,228.2 186.4,220.6 186.9,229.0 187.4,235.8 187.9,234.9 188.4,234.6 188.9,234.6 189.4,234.6 189.9,234.6 190.4,234.5 190.9,234.6 191.4,234.6 191.9,234.5 192.4,234.4 192.9,234.4 193.4,234.2 193.9,234.1 194.4,233.9 194.9,233.7 195.4,233.4 195.9,233.2 196.4,232.9 196.9,232.7 197.4,232.4 197.9,232.2 198.4,232.0 198.9,231.8 199.4,231.8 199.9,231.8 200.4,232.0 200.9,232.1 201.4,232.3 201.9,232.6 202.4,232.9 202.9,233.3 203.4,233.5 203.9,233.7 204.4,233.9 204.9,234.1 205.4,234.2 205.9,234.4 206.4,234.5 206.9,234.5 207.4,234.5 207.9,234.5 208.4,234.6 208.9,234.5 209.4,234.6 209.9,234.5 210.4,234.6 210.9,234.6 211.4,234.6 211.9,234.5 212.4,234.5 212.9,234.5 213.4,234.6 213.9,234.6 214.4,234.7 214.9,234.5 215.4,234.4 215.9,234.2 216.4,234.0 216.9,233.7 217.4,233.6 217.9,233.7 218.4,234.0 218.9,234.2 219.4,234.4 219.9,234.5 220.4,234.6 220.9,234.6 221.4,234.6 221.9,234.5 222.4,234.5 222.9,234.4 223.4,232.6 223.9,223.9 224.4,222.4 224.9,233.2 225.4,235.6 225.9,234.7 226.4,234.6 226.9,234.6 227.4,234.6 227.9,234.6 228.4,234.6 228.9,234.6 229.4,234.6 229.9,234.5 230.4,234.4 230.9,234.3 231.4,234.2 231.9,234.0 232.4,233.8 232.9,233.6 233.4,233.3 233.9,233.1 234.4,232.9 234.9,232.5 235.4,232.2 235.9,232.0 236.4,231.8 236.9,231.8 237.4,231.8 237.9,231.8 238.4,231.9 238.9,232.2 239.4,232.5 239.9,232.8 240.4,233.1 240.9,233.4 241.4,233.6 241.9,233.8 242.4,234.0 242.9,234.2 243.4,234.4 243.9,234.5 244.4,234.6 244.9,234.5 245.4,234.5 245.9,234.6 246.4,234.6 246.9,234.6 247.4,234.6 247.9,234.6 248.4,234.6 248.9,234.7 249.4,234.6 249.9,234.7 250.4,234.6 250.9,234.5 251.4,234.5 251.9,234.6 252.4,234.5 252.9,234.5 253.4,234.4 253.9,234.2 254.4,234.0 254.9,233.8 255.4,233.7 255.9,233.8 256.4,234.0 256.9,234.3 257.4,234.5 257.9,234.5 258.4,234.6 258.9,234.6 259.4,234.6 259.9,234.6 260.4,234.6 260.9,234.2 261.4,230.0 261.9,221.0 262.4,226.6 262.9,235.4 263.4,235.1 263.9,234.6 264.4,234.6 264.9,234.6 265.4,234.5 265.9,234.6 266.4,234.5 266.9,234.6 267.4,234.5 267.9,234.5 268.4,234.3 268.9,234.2 269.4,234.1 269.9,233.9 270.4,233.7 270.9,233.4 271.4,233.1 271.9,232.9 272.4,232.7 272.9,232.4 273.4,232.1 273.9,232.0 274.4,231.8 274.9,231.8 275.4,231.8 275.9,232.0 276.4,232.1 276.9,232.3 277.4,232.5 277.9,232.9 278.4,233.1 278.9,233.4 279.4,233.6 279.9,233.8 280.4,234.1 280.9,234.2 281.4,234.3 281.9,234.4 282.4,234.5 282.9,234.5 283.4,234.5 283.9,234.0 284.4,234.1 284.9,234.4 285.4,234.5 285.9,234.7 286.4,234.7 286.9,234.7 287.4,234.6 287.9,234.7 288.4,234.6 288.9,234.4 289.4,232.5 289.9,226.2 290.4,228.1 290.9,235.5 291.4,235.8 291.9,234.7 292.4,234.6 292.9,234.6 293.4,234.5 293.9,234.6 294.4,234.6 294.9,234.5 295.4,234.5 295.9,234.5 296.4,234.5 296.9,234.5 297.4,234.3 297.9,234.2 298.4,234.2 298.9,234.0 299.4,234.0 299.9,233.7 300.4,233.6 300.9,233.5 301.4,233.4 301.9,233.3 302.4,233.3 302.9,233.3 303.4,233.3 303.9,233.2 304.4,233.4 304.9,233.4 305.4,233.5 305.9,233.6 306.4,233.7 306.9,233.9 307.4,234.1 307.9,234.1 308.4,234.2 308.9,234.4 309.4,234.5 309.9,234.6 310.4,234.5 310.9,234.5 311.4,234.5 311.9,234.5 312.4,234.5 312.9,234.5 313.4,234.5 313.9,234.5 314.4,234.5 314.9,234.5 315.4,234.5 315.9,234.5 316.4,234.6 316.9,234.6 317.4,234.6 317.9,234.6 318.4,234.5 318.9,234.5 319.4,234.4 319.9,234.2 320.4,234.0 320.9,234.0 321.4,234.0 321.9,234.1 322.4,234.3 322.9,234.5 323.4,234.5 323.9,234.5 324.4,234.6 324.9,234.6 325.4,234.6 325.9,234.7 326.4,234.6 326.9,234.1 327.4,230.2 327.9,225.2 328.4,231.7 328.9,236.6 329.4,235.4 329.9,234.6 330.4,234.6 330.9,234.6 331.4,234.7 331.9,234.6 332.4,234.6 332.9,234.6 333.4,234.6 333.9,234.5 334.4,234.5 334.9,234.5 335.4,234.5 335.9,234.3 336.4,234.3 336.9,234.2 337.4,234.0 337.9,233.9 338.4,233.8 338.9,233.5 339.4,233.4 339.9,233.3 340.4,233.2 340.9,233.2 341.4,233.2 341.9,233.3 342.4,233.3 342.9,233.4 343.4,233.6 343.9,233.7 344.4,233.8 344.9,234.1 345.4,234.2 345.9,234.3 346.4,234.3 346.9,234.4 347.4,234.4 347.9,234.5 348.4,234.5 348.9,234.6 349.4,234.5 349.9,234.5 350.4,234.5 350.9,234.4 351.4,234.5 351.9,234.5 352.4,234.6 352.9,234.6 353.4,234.5 353.9,234.6 354.4,234.6 354.9,234.6 355.4,234.6 355.9,234.7 356.4,234.7 356.9,234.6 357.4,234.4 357.9,234.2 358.4,234.0 358.9,234.0 359.4,234.0 359.9,234.2 360.4,234.3 360.9,234.5 361.4,234.6 361.9,234.6 362.4,234.6 362.9,234.6 363.4,234.5 363.9,234.5 364.4,234.5 364.9,233.3 365.4,227.4 365.9,226.7 366.4,234.7 366.9,236.2 367.4,234.8 367.9,234.5 368.4,234.5 368.9,234.6 369.4,234.6 369.9,234.6 370.4,234.6 370.9,234.6 371.4,234.5 371.9,234.5 372.4,234.4 372.9,234.3 373.4,234.2 373.9,234.1 374.4,233.9 374.9,233.9 375.4,233.7 375.9,233.6 376.4,233.6 376.9,233.4 377.4,233.3 377.9,233.2 378.4,233.2 378.9,233.3 379.4,233.3 379.9,233.4 380.4,233.5 380.9,233.6 381.4,233.8 381.9,233.8 382.4,234.0 382.9,234.1 383.4,234.2 383.9,234.2 384.4,234.3 384.9,234.4 385.4,234.5 385.9,234.5 386.4,234.5 386.9,234.5 387.4,234.5 387.9,234.5 388.4,234.6 388.9,234.7 389.4,234.7 389.9,234.6 390.4,234.6 390.9,234.6 391.4,234.7 391.9,234.6 392.4,234.7 392.9,234.6 393.4,234.6 393.9,234.6 394.4,234.5 394.9,234.5 395.4,234.3 395.9,234.1 396.4,233.9 396.9,234.0 397.4,234.0 397.9,234.1 398.4,234.3 398.9,234.5 399.4,234.6 399.9,234.6 400.4,234.6 400.9,234.6 401.4,234.6 401.9,234.6 402.4,234.3 402.9,231.5 403.4,225.5 403.9,229.8 404.4,236.2 404.9,235.6 405.4,234.7 405.9,234.6 406.4,234.6 406.9,234.5 407.4,234.6 407.9,234.6 408.4,234.5 408.9,234.6 409.4,234.5 409.9,234.4 410.4,234.4 410.9,234.3 411.4,234.2 411.9,234.1 412.4,234.0 412.9,234.0 413.4,233.9 413.9,233.6 414.4,233.4 414.9,233.4 415.4,233.3 415.9,233.2 416.4,233.2 416.9,233.2 417.4,233.3 417.9,233.3 418.4,233.5 418.9,233.7 419.4,233.8 419.9,233.9 420.4,234.0 420.9,234.2 421.4,234.3 421.9,234.3 422.4,234.4 422.9,234.4 423.4,234.5 423.9,234.6 424.4,234.6 424.9,234.6 425.6,233.7 426.1,233.9 426.6,234.1 427.1,234.4 427.6,234.6 428.1,234.6 428.6,234.6 429.1,234.6 429.6,234.7 430.1,234.6 430.6,234.2 431.1,229.1 431.6,215.4 432.1,219.2 432.6,235.4 433.1,237.0 433.6,234.9 434.1,234.6 434.6,234.5 435.1,234.6 435.6,234.6 436.1,234.5 436.6,234.5 437.1,234.4 437.6,234.3 438.1,234.2 438.6,234.0 439.1,233.8 439.6,233.6 440.1,233.1 440.6,232.7 441.1,232.2 441.6,231.7 442.1,231.1 442.6,230.6 443.1,230.2 443.6,229.8 444.1,229.6 444.6,229.5 445.1,229.5 445.6,229.7 446.1,229.9 446.6,230.3 447.1,230.7 447.6,231.2 448.1,231.7 448.6,232.3 449.1,232.8 449.6,233.2 450.1,233.5 450.6,233.7 451.1,233.9 451.6,234.2 452.1,234.4 452.6,234.4 453.1,234.4 453.6,234.5 454.1,234.5 454.6,234.6 455.1,234.6 455.6,234.6 456.1,234.5 456.6,234.5 457.1,234.5 457.6,234.5 458.1,234.6 458.6,234.5 459.1,234.6 459.6,234.6 460.1,234.6 460.6,234.4 461.1,234.2 461.6,234.0 462.1,233.8 462.6,233.6 463.1,233.5 463.6,233.7 464.1,234.0 464.6,234.3 465.1,234.4 465.6,234.5 466.1,234.5 466.6,234.6 467.1,234.6 467.6,234.7 468.1,234.7 468.6,233.4 469.1,224.0 469.6,213.4 470.1,226.6 470.6,237.7 471.1,235.8 471.6,234.6 472.1,234.5 472.6,234.5 473.1,234.6 473.6,234.6 474.1,234.6 474.6,234.6 475.1,234.5 475.6,234.3 476.1,234.2 476.6,234.0 477.1,233.7 477.6,233.3 478.1,232.9 478.6,232.4 479.1,232.0 479.6,231.5 480.1,231.0 480.6,230.5 481.1,230.1 481.6,229.8 482.1,229.5 482.6,229.3 483.1,229.4 483.6,229.6 484.1,230.0 484.6,230.4 485.1,230.9 485.6,231.4 486.1,232.0 486.6,232.4 487.1,232.9 487.6,233.3 488.1,233.7 488.6,234.0 489.1,234.1 489.6,234.2 490.1,234.3 490.6,234.5 491.1,234.4 491.6,234.5 492.1,234.6 492.6,234.6 493.1,234.6 493.6,234.6 494.1,234.6 494.6,234.6 495.1,234.6 495.6,234.5 496.1,234.6 496.6,234.5 497.1,234.5 497.6,234.5 498.1,234.5 498.6,234.4 499.1,234.2 499.6,234.0 500.1,233.8 500.6,233.6 501.1,233.6 501.6,233.9 502.1,234.2 502.6,234.4 503.1,234.6 503.6,234.6 504.1,234.7 504.6,234.6 505.1,234.6 505.6,234.5 506.1,234.3 506.6,231.1 507.1,218.0 507.6,216.3 508.1,233.1 508.6,237.5 509.1,235.0 509.6,234.6 510.1,234.6 510.6,234.6 511.1,234.6 511.6,234.5 512.1,234.5 512.6,234.4 513.1,234.3 513.6,234.2 514.1,234.1 514.6,233.8 515.1,233.5 515.6,233.1 516.1,232.6 516.6,232.2 517.1,231.7 517.6,231.1 518.1,230.6 518.6,230.2 519.1,229.9 519.6,229.6 520.1,229.4 520.6,229.4 521.1,229.5 521.6,229.7 522.1,230.1 522.6,230.6 523.1,231.2 523.6,231.7 524.1,232.1 524.6,232.6 525.1,232.9 525.6,233.4 526.1,233.7 526.6,234.0 527.1,234.2 527.6,234.3 528.1,234.3 528.6,234.4 529.1,234.5 529.6,234.6 530.1,234.6 530.6,234.6 531.1,234.6 531.6,234.6 532.1,234.6 532.6,234.6 533.1,234.6 533.6,234.7 534.1,234.7 534.6,234.7 535.1,234.7 535.6,234.6 536.1,234.6 536.6,234.4 537.1,234.2 537.6,233.9 538.1,233.6 538.6,233.6 539.1,233.8 539.6,234.0 540.1,234.2 540.6,234.5 541.1,234.6 541.6,234.6 542.1,234.6 542.6,234.5 543.1,234.5 543.6,234.5 544.1,233.9 544.6,226.9 545.1,213.9 545.6,222.8 546.1,236.9 546.6,236.4 547.1,234.7 547.6,234.5 548.1,234.5 548.6,234.4 549.1,234.5 549.6,234.5 550.1,234.4 550.6,234.4 551.1,234.2 551.6,234.0 552.1,233.9 552.6,233.6 553.1,233.3 553.6,233.0 554.1,232.5 554.6,232.0 555.1,231.5 555.6,230.9 556.1,230.4 556.6,229.9 557.1,229.6 557.6,229.4 558.1,229.4 558.6,229.4 559.1,229.6 559.6,229.9 560.1,230.3 560.6,230.7 561.1,231.3 561.6,231.9 562.1,232.4 562.6,232.8 563.1,233.3 563.6,233.6 564.1,233.9 564.6,234.2 565.1,234.3 565.6,234.5 566.1,234.5 566.6,234.5 567.1,234.6 567.6,234.6 568.1,234.6" fill="none" stroke="#3a7dc2" stroke-width="0.75" stroke-linejoin="round"/><polyline points="0.0,312.0 0.5,311.8 1.0,311.5 1.5,311.5 2.0,311.7 2.5,311.9 3.0,312.2 3.5,312.3 4.0,312.3 4.5,312.4 5.0,312.4 5.5,312.4 6.0,312.4 6.5,312.3 7.0,311.8 7.5,306.0 8.0,298.5 8.5,307.2 9.0,314.1 9.5,312.9 10.0,312.4 10.5,312.4 11.0,312.4 11.5,312.4 12.0,312.4 12.5,312.3 13.0,312.3 13.5,312.3 14.0,312.2 14.5,312.2 15.0,312.1 15.5,311.9 16.0,311.7 16.5,311.5 17.0,311.3 17.5,311.1 18.0,310.9 18.5,310.6 19.0,310.3 19.5,310.1 20.0,309.9 20.5,309.8 21.0,309.8 21.5,309.8 22.0,309.9 22.5,310.1 23.0,310.3 23.5,310.6 24.0,310.9 24.5,311.2 25.0,311.4 25.5,311.6 26.0,311.7 26.5,311.9 27.0,312.1 27.5,312.2 28.0,312.2 28.5,312.3 29.0,312.3 29.5,312.3 30.0,312.3 30.5,312.3 31.0,312.4 31.5,312.4 32.0,312.4 32.5,312.3 33.0,312.3 33.5,312.4 34.0,312.4 34.5,312.4 35.0,312.4 35.5,312.4 36.0,312.5 36.5,312.4 37.0,312.3 37.5,312.1 38.0,311.9 38.5,311.7 39.0,311.5 39.5,311.6 40.0,311.8 40.5,312.0 41.0,312.2 41.5,312.3 42.0,312.4 42.5,312.4 43.0,312.4 43.5,312.4 44.0,312.5 44.5,312.4 45.0,310.6 45.5,301.9 46.0,300.5 46.5,311.5 47.0,313.9 47.5,312.6 48.0,312.5 48.5,312.5 49.0,312.4 49.5,312.3 50.0,312.4 50.5,312.3 51.0,312.4 51.5,312.4 52.0,312.2 52.5,312.2 53.0,312.0 53.5,311.9 54.0,311.7 54.5,311.5 55.0,311.2 55.5,311.0 56.0,310.8 56.5,310.5 57.0,310.3 57.5,310.0 58.0,309.9 58.5,309.8 59.0,309.8 59.5,309.8 60.0,309.9 60.5,310.1 61.0,310.3 61.5,310.6 62.0,310.9 62.5,311.1 63.0,311.4 63.5,311.7 64.0,311.9 64.5,311.9 65.0,312.1 65.5,312.2 66.0,312.3 66.5,312.3 67.0,312.3 67.5,312.3 68.0,312.3 68.5,312.4 69.0,312.3 69.5,312.4 70.0,312.4 70.5,312.4 71.0,312.4 71.5,312.5 72.0,312.5 72.5,312.5 73.0,312.5 73.5,312.5 74.0,312.4 74.5,312.3 75.0,312.2 75.5,312.1 76.0,311.8 76.5,311.6 77.0,311.5 77.5,311.6 78.0,311.9 78.5,312.2 79.0,312.3 79.5,312.4 80.0,312.5 80.5,312.5 81.0,312.5 81.5,312.5 82.0,312.4 82.5,312.0 83.0,307.8 83.5,298.8 84.0,304.8 84.5,313.7 85.0,313.2 85.5,312.4 86.0,312.4 86.5,312.3 87.0,312.3 87.5,312.3 88.0,312.3 88.5,312.3 89.0,312.3 89.5,312.2 90.0,312.2 90.5,312.1 91.0,311.9 91.5,311.8 92.0,311.5 92.5,311.3 93.0,311.1 93.5,310.9 94.0,310.6 94.5,310.4 95.0,310.1 95.5,310.0 96.0,309.8 96.5,309.7 97.0,309.8 97.5,309.9 98.0,310.1 98.5,310.3 99.0,310.6 99.5,310.8 100.0,311.1 100.5,311.3 101.0,311.5 101.5,311.7 102.0,311.9 102.5,312.1 103.0,312.2 103.5,312.2 104.0,312.3 104.5,312.3 105.0,312.4 105.5,312.3 106.0,312.4 106.5,312.4 107.0,312.4 107.5,312.4 108.0,312.4 108.5,312.4 109.0,312.4 109.5,312.4 110.0,312.3 110.5,312.3 111.0,312.4 111.5,312.4 112.0,312.4 112.5,312.3 113.0,312.2 113.5,312.0 114.0,311.8 114.5,311.6 115.0,311.6 115.5,311.7 116.0,312.0 116.5,312.1 117.0,312.2 117.5,312.4 118.0,312.3 118.5,312.4 119.0,312.4 119.5,312.3 120.0,312.4 120.5,311.2 121.0,303.9 121.5,299.1 122.0,309.5 122.5,314.1 123.0,312.7 123.5,312.4 124.0,312.3 124.5,312.4 125.0,312.4 125.5,312.4 126.0,312.3 126.5,312.3 127.0,312.3 127.5,312.2 128.0,312.2 128.5,312.1 129.0,311.9 129.5,311.7 130.0,311.5 130.5,311.2 131.0,311.1 131.5,310.8 132.0,310.5 132.5,310.3 133.0,310.0 133.5,309.8 134.0,309.8 134.5,309.8 135.0,309.9 135.5,310.0 136.0,310.1 136.5,310.3 137.0,310.5 137.5,310.8 138.0,311.1 138.5,311.4 139.0,311.6 139.5,311.8 140.0,311.9 140.5,312.0 141.0,312.1 141.5,312.2 142.0,312.2 142.5,312.3 143.0,312.4 143.5,312.4 144.0,312.4 144.5,312.4 145.0,312.4 145.5,312.3 146.0,312.4 146.5,312.4 147.0,312.4 147.5,312.4 148.0,312.4 148.5,312.4 149.0,312.4 149.5,312.4 150.0,312.3 150.5,312.2 151.0,312.1 151.5,311.9 152.0,311.7 152.5,311.6 153.0,311.6 153.5,311.8 154.0,312.1 154.5,312.2 155.0,312.3 155.5,312.3 156.0,312.4 156.5,312.4 157.0,312.3 157.5,312.3 158.0,312.2 158.5,309.3 159.0,300.0 159.5,302.4 160.0,312.8 160.5,313.6 161.0,312.4 161.5,312.3 162.0,312.4 162.5,312.4 163.0,312.4 163.5,312.3 164.0,312.3 164.5,312.3 165.0,312.2 165.5,312.2 166.0,312.1 166.5,312.0 167.0,311.9 167.5,311.7 168.0,311.4 168.5,311.2 169.0,310.9 169.5,310.6 170.0,310.4 170.5,310.1 171.0,310.0 171.5,309.9 172.0,309.7 172.5,309.7 173.0,309.9 173.5,310.1 174.0,310.3 174.5,310.5 175.0,310.8 175.5,311.0 176.0,311.3 176.5,311.5 177.0,311.7 177.5,311.8 178.0,311.9 178.5,312.0 179.0,312.2 179.5,312.3 180.0,312.3 180.5,312.3 181.0,312.4 181.5,312.3 182.0,312.3 182.5,312.4 183.0,312.4 183.5,312.4 184.0,312.5 184.5,312.4 185.0,312.4 185.5,312.3 186.0,312.4 186.5,312.3 187.0,312.4 187.5,312.4 188.0,312.3 188.5,312.2 189.0,312.0 189.5,311.8 190.0,311.6 190.5,311.6 191.0,311.7 191.5,311.9 192.0,312.1 192.5,312.3 193.0,312.4 193.5,312.4 194.0,312.4 194.5,312.4 195.0,312.4 195.5,312.5 196.0,311.9 196.5,306.1 197.0,298.6 197.5,307.3 198.0,314.1 198.5,312.9 199.0,312.4 199.5,312.5 200.0,312.4 200.5,312.4 201.0,312.4 201.5,312.3 202.0,312.3 202.5,312.2 203.0,312.2 203.5,312.2 204.0,312.1 204.5,312.0 205.0,311.8 205.5,311.6 206.0,311.3 206.5,311.1 207.0,310.8 207.5,310.6 208.0,310.3 208.5,310.1 209.0,309.9 209.5,309.7 210.0,309.7 210.5,309.8 211.0,309.9 211.5,310.1 212.0,310.3 212.5,310.6 213.0,310.9 213.5,311.1 214.0,311.3 214.5,311.6 215.0,311.8 215.5,311.9 216.0,312.1 216.5,312.1 217.0,312.2 217.5,312.2 218.0,312.3 218.5,312.4 219.0,312.4 219.5,312.4 220.0,312.3 220.5,312.4 221.0,312.4 221.5,312.4 222.0,312.4 222.5,312.4 223.0,312.3 223.5,312.3 224.0,312.4 224.5,312.4 225.0,312.4 225.5,312.3 226.0,312.2 226.5,312.0 227.0,311.8 227.5,311.7 228.0,311.6 228.5,311.6 229.0,311.8 229.5,312.0 230.0,312.2 230.5,312.3 231.0,312.4 231.5,312.4 232.0,312.5 232.5,312.4 233.0,312.5 233.5,312.4 234.0,310.5 234.5,301.9 235.0,300.4 235.5,311.4 236.0,313.8 236.5,312.5 237.0,312.3 237.5,312.3 238.0,312.4 238.5,312.3 239.0,312.4 239.5,312.3 240.0,312.3 240.5,312.3 241.0,312.3 241.5,312.2 242.0,312.1 242.5,311.9 243.0,311.8 243.5,311.5 244.0,311.3 244.5,311.0 245.0,310.7 245.5,310.5 246.0,310.2 246.5,310.0 247.0,309.9 247.5,309.9 248.0,309.8 248.5,309.8 249.0,309.9 249.5,310.1 250.0,310.4 250.5,310.7 251.0,310.9 251.5,311.2 252.0,311.4 252.5,311.7 253.0,311.8 253.5,312.0 254.0,312.1 254.5,312.1 255.0,312.2 255.5,312.3 256.0,312.4 256.5,312.4 257.0,312.4 257.5,312.4 258.0,312.4 258.5,312.4 259.0,312.4 259.5,312.4 260.0,312.3 260.5,312.3 261.0,312.3 261.5,312.3 262.0,312.3 262.5,312.3 263.0,312.3 263.5,312.3 264.0,312.2 264.5,312.0 265.0,311.8 265.5,311.6 266.0,311.5 266.5,311.6 267.0,311.9 267.5,312.1 268.0,312.3 268.5,312.4 269.0,312.5 269.5,312.5 270.0,312.4 270.5,312.5 271.0,312.4 271.5,312.1 272.0,307.8 272.5,298.9 273.0,304.8 273.5,313.7 274.0,313.3 274.5,312.5 275.0,312.4 275.5,312.5 276.0,312.5 276.5,312.4 277.0,312.3 277.5,312.3 278.0,312.3 278.5,312.2 279.0,312.2 279.5,312.1 280.0,312.0 280.5,311.8 281.0,311.6 281.5,311.4 282.0,311.2 282.5,310.9 283.0,310.6 283.5,310.3 284.0,310.1 284.5,310.0 285.0,309.9 285.5,309.9 286.0,309.9 286.5,309.9 287.0,310.1 287.5,310.2 288.0,310.5 288.5,310.8 289.0,311.0 289.5,311.3 290.0,311.5 290.5,311.7 291.0,311.9 291.5,312.0 292.0,312.2 292.5,312.2 293.0,312.3 293.5,312.4 294.0,312.4 294.5,312.4 295.0,312.4 295.5,312.4 296.0,312.4 296.5,312.4 297.0,312.4 297.5,312.4 298.0,312.4 298.5,312.4 299.0,312.4 299.5,312.4 300.0,312.4 300.5,312.4 301.0,312.4 301.5,312.3 302.0,312.1 302.5,311.9 303.0,311.7 303.5,311.5 304.0,311.5 304.5,311.7 305.0,311.9 305.5,312.1 306.0,312.2 306.5,312.3 307.0,312.4 307.5,312.4 308.0,312.4 308.5,312.4 309.0,312.4 309.5,311.3 310.0,304.0 310.5,299.0 311.0,309.6 311.5,314.2 312.0,312.7 312.5,312.4 313.0,312.4 313.5,312.4 314.0,312.4 314.5,312.4 315.0,312.4 315.5,312.3 316.0,312.3 316.5,312.2 317.0,312.1 317.5,312.0 318.0,311.9 318.5,311.7 319.0,311.5 319.5,311.3 320.0,311.1 320.5,310.8 321.0,310.6 321.5,310.2 322.0,310.0 322.5,309.9 323.0,309.8 323.5,309.7 324.0,309.8 324.5,309.9 325.0,310.2 325.5,310.3 326.0,310.5 326.5,310.8 327.0,311.0 327.5,311.3 328.0,311.5 328.5,311.8 329.0,312.0 329.5,312.1 330.0,312.2 330.5,312.3 331.0,312.4 331.5,312.3 332.0,312.3 332.5,312.4 333.0,312.3 333.5,312.4 334.0,312.4 334.5,312.4 335.0,312.4 335.5,312.4 336.0,312.4 336.5,312.4 337.0,312.4 337.5,312.3 338.0,312.3 338.5,312.3 339.0,312.3 339.5,312.2 340.0,312.0 340.5,311.8 341.0,311.6 341.5,311.6 342.0,311.6 342.5,311.9 343.0,312.1 343.5,312.3 344.0,312.3 344.5,312.3 345.0,312.4 345.5,312.3 346.0,312.3 346.5,312.3 347.0,312.2 347.5,309.3 348.0,300.0 348.5,302.4 349.0,312.8 349.5,313.5 350.0,312.5 350.5,312.5 351.0,312.4 351.5,312.4 352.0,312.4 352.5,312.4 353.0,312.4 353.5,312.4 354.0,312.3 354.5,312.2 355.0,312.1 355.5,311.9 356.0,311.8 356.5,311.6 357.0,311.4 357.5,311.1 358.0,311.0 358.5,310.7 359.0,310.5 359.5,310.3 360.0,310.0 360.5,309.9 361.0,309.8 361.5,309.8 362.0,309.9 362.5,310.0 363.0,310.3 363.5,310.5 364.0,310.7 364.5,311.0 365.0,311.2 365.5,311.4 366.0,311.7 366.5,311.8 367.0,312.0 367.5,312.1 368.0,312.1 368.5,312.3 369.0,312.3 369.5,312.3 370.0,312.3 370.5,312.4 371.0,312.4 371.5,312.4 372.0,312.4 372.5,312.4 373.0,312.4 373.5,312.4 374.0,312.4 374.5,312.4 375.0,312.4 375.5,312.4 376.0,312.4 376.5,312.4 377.0,312.3 377.5,312.2 378.0,311.9 378.5,311.6 379.0,311.5 379.5,311.4 380.0,311.7 380.5,312.0 381.0,312.1 381.5,312.2 382.0,312.4 382.5,312.4 383.0,312.4 383.5,312.4 384.0,312.4 384.5,312.3 385.0,311.8 385.5,306.0 386.0,298.5 386.5,307.2 387.0,314.1 387.5,313.0 388.0,312.4 388.5,312.4 389.0,312.3 389.5,312.3 390.0,312.3 390.5,312.3 391.0,312.3 391.5,312.3 392.0,312.2 392.5,312.2 393.0,312.1 393.5,312.0 394.0,311.8 394.5,311.6 395.0,311.4 395.5,311.2 396.0,310.9 396.5,310.6 397.0,310.4 397.5,310.1 398.0,309.9 398.5,309.8 399.0,309.8 399.5,309.8 400.0,309.9 400.5,310.1 401.0,310.3 401.5,310.5 402.0,310.8 402.5,311.1 403.0,311.4 403.5,311.6 404.0,311.7 404.5,311.9 405.0,312.0 405.5,312.2 406.0,312.3 406.5,312.3 407.0,312.4 407.5,312.4 408.0,312.5 408.5,312.4 409.0,312.4 409.5,312.4 410.0,312.4 410.5,312.4 411.0,312.4 411.5,312.4 412.0,312.4 412.5,312.4 413.0,312.3 413.5,312.3 414.0,312.3 414.5,312.4 415.0,312.2 415.5,312.1 416.0,311.9 416.5,311.7 417.0,311.5 417.5,311.5 418.0,311.8 418.5,312.0 419.0,312.1 419.5,312.3 420.0,312.4 420.5,312.5 421.0,312.5 421.5,312.4 422.0,312.4 422.5,312.3 423.0,310.5 423.5,301.8 424.0,300.4 424.5,311.4 425.0,313.9 425.5,312.5 426.0,312.3 426.5,312.3 427.0,312.3 427.5,312.4 428.0,312.4 428.5,312.3 429.0,312.4 429.5,312.3 430.0,312.2 430.5,312.2 431.0,312.0 431.5,311.8 432.0,311.7 432.5,311.5 433.0,311.3 433.5,311.0 434.0,310.7 434.5,310.5 435.0,310.2 435.5,310.0 436.0,309.9 436.5,309.8 437.0,309.9 437.5,309.9 438.0,310.0 438.5,310.2 439.0,310.4 439.5,310.6 440.0,310.9 440.5,311.1 441.0,311.4 441.5,311.6 442.0,311.7 442.5,311.9 443.0,312.1 443.5,312.2 444.0,312.3 444.5,312.3 445.0,312.4 445.5,312.4 446.0,312.4 446.5,312.4 447.0,312.4 447.5,312.4 448.0,312.5 448.5,312.5 449.0,312.4 449.5,312.4 450.0,312.4 450.5,312.4 451.0,312.4 451.5,312.4 452.0,312.3 452.5,312.3 453.0,312.1 453.5,311.9 454.0,311.7 454.5,311.5 455.0,311.5 455.5,311.6 456.0,311.9 456.5,312.2 457.0,312.3 457.5,312.4 458.0,312.5 458.5,312.5 459.0,312.5 459.5,312.4 460.0,312.4 460.5,312.0 461.0,307.8 461.5,298.9 462.0,304.7 462.5,313.7 463.0,313.2 463.5,312.4 464.0,312.4 464.5,312.4 465.0,312.4 465.5,312.3 466.0,312.4 466.5,312.3 467.0,312.3 467.5,312.2 468.0,312.2 468.5,312.1 469.0,311.9 469.5,311.8 470.0,311.6 470.5,311.4 471.0,311.1 471.5,310.9 472.0,310.6 472.5,310.4 473.0,310.1 473.5,309.9 474.0,309.9 474.5,309.8 475.0,309.8 475.5,310.0 476.0,310.0 476.5,310.2 477.0,310.4 477.5,310.7 478.0,311.0 478.5,311.2 479.0,311.4 479.5,311.6 480.0,311.8 480.5,312.0 481.0,312.1 481.5,312.1 482.0,312.3 482.5,312.3 483.0,312.3 483.5,312.3 484.0,312.3 484.5,312.4 485.0,312.4 485.5,312.4 486.0,312.4 486.5,312.3 487.0,312.4 487.5,312.4 488.0,312.4 488.5,312.4 489.0,312.4 489.5,312.4 490.0,312.3 490.5,312.2 491.0,312.1 491.5,312.0 492.0,311.8 492.5,311.6 493.0,311.6 493.5,311.8 494.0,312.0 494.5,312.1 495.0,312.3 495.5,312.4 496.0,312.4 496.5,312.4 497.0,312.3 497.5,312.3 498.0,312.4 498.5,311.3 499.0,303.9 499.5,299.0 500.0,309.5 500.5,314.1 501.0,312.7 501.5,312.3 502.0,312.3 502.5,312.3 503.0,312.4 503.5,312.4 504.0,312.4 504.5,312.4 505.0,312.3 505.5,312.3 506.0,312.1 506.5,312.0 507.0,311.9 507.5,311.7 508.0,311.5 508.5,311.3 509.0,311.0 509.5,310.7 510.0,310.5 510.5,310.3 511.0,310.1 511.5,309.9 512.0,309.8 512.5,309.8 513.0,309.8 513.5,309.9 514.0,310.2 514.5,310.4 515.0,310.7 515.5,310.9 516.0,311.2 516.5,311.4 517.0,311.6 517.5,311.8 518.0,311.9 518.5,312.0 519.0,312.1 519.5,312.2 520.0,312.3 520.5,312.4 521.0,312.4 521.5,312.4 522.0,312.4 522.5,312.4 523.0,312.4 523.5,312.4 524.0,312.4 524.5,312.4 525.0,312.4 525.5,312.4 526.0,312.3 526.5,312.4 527.0,312.4 527.5,312.3 528.0,312.3 528.5,312.3 529.0,312.1 529.5,311.8 530.0,311.6 530.5,311.5 531.0,311.6 531.5,311.8 532.0,312.0 532.5,312.2 533.0,312.3 533.5,312.3 534.0,312.3 534.5,312.4 535.0,312.4 535.5,312.4 536.0,312.3 536.5,309.4 537.0,300.1 537.5,302.4 538.0,312.9 538.5,313.6 539.0,312.5 539.5,312.5 540.0,312.4 540.5,312.3 541.0,312.4 541.5,312.4 542.0,312.4 542.5,312.3 543.0,312.3 543.5,312.2 544.0,312.1 544.5,312.0 545.0,311.9 545.5,311.6 546.0,311.4 546.5,311.2 547.0,310.9 547.5,310.6 548.0,310.4 548.5,310.2 549.0,310.0 549.5,309.8 550.0,309.7 550.5,309.8 551.0,309.9 551.5,310.1 552.0,310.2 552.5,310.5 553.0,310.7 553.5,310.9 554.0,311.2 554.5,311.5 555.0,311.6 555.5,311.8 556.0,312.0 556.5,312.1 557.0,312.2 557.5,312.2 558.0,312.3 558.5,312.4 559.0,312.5 559.5,312.4 560.0,312.4 560.5,312.4 561.0,312.4 561.5,312.5 562.0,312.5 562.5,312.4 563.0,312.5 563.5,312.4 564.0,312.4 564.5,312.4 565.0,312.4 565.5,312.4 566.0,312.4 566.5,312.2 567.0,312.0 567.5,311.8 568.0,311.6 568.5,311.5" fill="none" stroke="#3a7dc2" stroke-width="0.75" stroke-linejoin="round"/><rect x="10.6" y="58.0" width="10.7" height="9.4" fill="#fff8f8" stroke="#ffd2d2" stroke-width="0.6"/><text x="12.8" y="65.6" font-family="Liberation Mono,monospace" font-weight="bold" font-size="9.6" fill="#1a1a1a" letter-spacing="-0.1">I</text><rect x="152.0" y="58.0" width="23.1" height="9.4" fill="#fff8f8" stroke="#ffd2d2" stroke-width="0.6"/><text x="154.2" y="65.6" font-family="Liberation Mono,monospace" font-weight="bold" font-size="9.6" fill="#1a1a1a" letter-spacing="-0.1">aVR</text><rect x="293.3" y="58.0" width="16.9" height="9.4" fill="#fff8f8" stroke="#ffd2d2" stroke-width="0.6"/><text x="295.5" y="65.6" font-family="Liberation Mono,monospace" font-weight="bold" font-size="9.6" fill="#1a1a1a" letter-spacing="-0.1">V1</text><rect x="434.7" y="58.0" width="16.9" height="9.4" fill="#fff8f8" stroke="#ffd2d2" stroke-width="0.6"/><text x="436.9" y="65.6" font-family="Liberation Mono,monospace" font-weight="bold" font-size="9.6" fill="#1a1a1a" letter-spacing="-0.1">V4</text><rect x="10.6" y="136.0" width="16.9" height="9.4" fill="#fff8f8" stroke="#ffd2d2" stroke-width="0.6"/><text x="12.8" y="143.6" font-family="Liberation Mono,monospace" font-weight="bold" font-size="9.6" fill="#1a1a1a" letter-spacing="-0.1">II</text><rect x="152.0" y="136.0" width="23.1" height="9.4" fill="#fff8f8" stroke="#ffd2d2" stroke-width="0.6"/><text x="154.2" y="143.6" font-family="Liberation Mono,monospace" font-weight="bold" font-size="9.6" fill="#1a1a1a" letter-spacing="-0.1">aVL</text><rect x="293.3" y="136.0" width="16.9" height="9.4" fill="#fff8f8" stroke="#ffd2d2" stroke-width="0.6"/><text x="295.5" y="143.6" font-family="Liberation Mono,monospace" font-weight="bold" font-size="9.6" fill="#1a1a1a" letter-spacing="-0.1">V2</text><rect x="434.7" y="136.0" width="16.9" height="9.4" fill="#fff8f8" stroke="#ffd2d2" stroke-width="0.6"/><text x="436.9" y="143.6" font-family="Liberation Mono,monospace" font-weight="bold" font-size="9.6" fill="#1a1a1a" letter-spacing="-0.1">V5</text><rect x="10.6" y="214.6" width="23.1" height="9.4" fill="#fff8f8" stroke="#ffd2d2" stroke-width="0.6"/><text x="12.8" y="222.2" font-family="Liberation Mono,monospace" font-weight="bold" font-size="9.6" fill="#1a1a1a" letter-spacing="-0.1">III</text><rect x="152.0" y="214.6" width="23.1" height="9.4" fill="#fff8f8" stroke="#ffd2d2" stroke-width="0.6"/><text x="154.2" y="222.2" font-family="Liberation Mono,monospace" font-weight="bold" font-size="9.6" fill="#1a1a1a" letter-spacing="-0.1">aVF</text><rect x="293.3" y="214.6" width="16.9" height="9.4" fill="#fff8f8" stroke="#ffd2d2" stroke-width="0.6"/><text x="295.5" y="222.2" font-family="Liberation Mono,monospace" font-weight="bold" font-size="9.6" fill="#1a1a1a" letter-spacing="-0.1">V3</text><rect x="434.7" y="214.6" width="16.9" height="9.4" fill="#fff8f8" stroke="#ffd2d2" stroke-width="0.6"/><text x="436.9" y="222.2" font-family="Liberation Mono,monospace" font-weight="bold" font-size="9.6" fill="#1a1a1a" letter-spacing="-0.1">V6</text><rect x="10.6" y="291.9" width="10.7" height="9.4" fill="#fff8f8" stroke="#ffd2d2" stroke-width="0.6"/><text x="12.8" y="299.5" font-family="Liberation Mono,monospace" font-weight="bold" font-size="9.6" fill="#1a1a1a" letter-spacing="-0.1">I</text><text x="177.4" y="385.8" font-family="Liberation Mono,monospace" font-size="9.8" fill="#7d7d7d">25mm/s</text><text x="237.4" y="385.8" font-family="Liberation Mono,monospace" font-size="9.8" fill="#7d7d7d">10mm/mV</text><text x="302.4" y="385.8" font-family="Liberation Mono,monospace" font-size="9.8" fill="#7d7d7d">Filter:0.060 - 300Hz</text><text x="445.8" y="385.8" font-family="Liberation Mono,monospace" font-size="9.8" fill="#7d7d7d">Notch Frequency:60Hz</text><path d="M0.6 382.6 V389.8 M0.6 386.2 H11.8 M11.8 382.6 V389.8" stroke="#2e9a3c" stroke-width="1" fill="none"/><text x="14.4" y="387.8" font-family="Liberation Mono,monospace" font-size="4.8" fill="#9a9a9a">200ms</text><rect x="252.0" y="2.0" width="63.6" height="11.8" fill="#fff" stroke="#444" stroke-width="0.8"/><text x="254.6" y="10.9" font-family="Liberation Mono,monospace" font-weight="bold" font-size="9.6" fill="#1a1a1a" letter-spacing="0.05">Comparison</text><text x="342.6" y="346.4" font-family="Liberation Sans,sans-serif" font-size="13.4" letter-spacing="0.55" fill="#9a9a9a" fill-opacity="0.6">Activate Windows</text><text x="342.6" y="361.6" font-family="Liberation Sans,sans-serif" font-size="10" letter-spacing="0.38" fill="#9a9a9a" fill-opacity="0.6">Go to Settings to activate Windows.</text></svg>
<div class="a" style="left:233.50px;top:451.60px;width:569.00px;height:1.90px;background:#333"></div>
<div class="a" style="left:802.20px;top:27.00px;width:1.60px;height:813.00px;background:#c6c6c6"></div>
<!-- right -->
<div class="a" style="left:803.80px;top:27.60px;width:758.80px;height:812.40px;background:#000"></div>
<div class="a" style="left:803.80px;top:27.60px;width:9.60px;height:54.00px;background:#f0f0f0"></div>
<svg class="a" style="left:805.2px;top:30px" width="7" height="7" viewBox="0 0 7 7"><circle cx="3.5" cy="3.5" r="2" fill="none" stroke="#111" stroke-width="1.5"/><path d="M3.5 0 V7 M0 3.5 H7 M1 1 L6 6 M6 1 L1 6" stroke="#111" stroke-width="0.9"/><circle cx="3.5" cy="3.5" r="1" fill="#f0f0f0"/></svg>
<div class="a" style="left:803.80px;top:27.00px;width:758.80px;height:0.80px;background:#8a8a8a"></div>
<div class="a" style="left:803.80px;top:81.40px;width:758.80px;height:1.90px;background:#9a9a9a"></div>
<div class="a" style="left:803.80px;top:99.60px;width:758.80px;height:0.80px;background:#444"></div>
<div class="a" style="left:803.80px;top:461.90px;width:758.80px;height:1.90px;background:#a0a0a0"></div>
<div class="a" style="left:803.80px;top:479.80px;width:758.80px;height:0.80px;background:#444"></div>
<span class="t" style="left:824.30px;top:31.71px;font-size:7.9px;color:#dcdcdc;letter-spacing:0;">1 : SCOUT</span>
<span class="t" style="left:874.10px;top:31.71px;font-size:7.9px;color:#dcdcdc;letter-spacing:0;">2 : LOCAT</span>
<span class="t" style="left:923.70px;top:31.71px;font-size:7.9px;color:#dcdcdc;letter-spacing:0;">3 : TRACK</span>
<span class="t" style="left:973.70px;top:31.71px;font-size:7.9px;color:#dcdcdc;letter-spacing:0;">5 : MEDAS</span>
<span class="t" style="left:1023.70px;top:31.71px;font-size:7.9px;color:#dcdcdc;letter-spacing:0;">6 : LUNG</span>
<span class="t" style="left:1073.50px;top:31.71px;font-size:7.9px;color:#dcdcdc;letter-spacing:0;">8024 : Dos</span>
<span class="t" style="left:1123.90px;top:31.71px;font-size:7.9px;color:#d41414;letter-spacing:0;">80428 : 3D</span>
<span class="t" style="left:1173.50px;top:31.71px;font-size:7.9px;color:#d41414;letter-spacing:0;">80480 : MF</span>
<span class="t" style="left:1223.10px;top:31.71px;font-size:7.9px;color:#dcdcdc;letter-spacing:0;">80481 : MF</span>
<span class="t" style="left:1273.00px;top:31.71px;font-size:7.9px;color:#dcdcdc;letter-spacing:0;">80482 : MF</span>
<div class="a" style="left:919.40px;top:41.40px;width:37.00px;height:36.40px;background:#fff"></div>
<div class="a" style="left:1069.00px;top:41.40px;width:36.90px;height:36.40px;background:#fff"></div>
<svg class="a" style="left:813.4px;top:28px" width="749" height="53" viewBox="813.4 28 749 53"><defs><filter id="tb" x="-20%" y="-20%" width="140%" height="140%"><feGaussianBlur stdDeviation="0.7"/></filter><filter id="tb2" x="-20%" y="-20%" width="140%" height="140%"><feGaussianBlur stdDeviation="1.6"/></filter></defs><ellipse cx="1117.2" cy="31.4" rx="3.1" ry="2.3" fill="#cfcfcf"/><text x="1116.0" y="33" font-size="3.6" font-family="Liberation Sans,sans-serif" fill="#333">2</text><ellipse cx="1167" cy="31.4" rx="3.1" ry="2.3" fill="#cfcfcf"/><text x="1165.8" y="33" font-size="3.6" font-family="Liberation Sans,sans-serif" fill="#333">2</text><g filter="url(#tb2)"><path d="M826 46 L846 44 L848 60 L846 77 L829 77 L825 62 Z" fill="#6a6a6a"/><path d="M828 60 L846 56 L846 77 L830 77 Z" fill="#b4b4b4"/><path d="M837 47 L846 47 L847 60 L839 62 Z" fill="#202020"/><path d="M826 50 L834 48 L836 60 L828 62 Z" fill="#4c4c4c"/></g><rect x="836.6" y="42.4" width="5.4" height="1.6" fill="#eee"/><g filter="url(#tb)"><ellipse cx="888.6" cy="61.6" rx="18.6" ry="14.6" fill="#9c9c9c"/><ellipse cx="880.788" cy="62.6" rx="6.696000000000001" ry="9.636000000000001" fill="#000"/><ellipse cx="897.1560000000001" cy="62.1" rx="6.696000000000001" ry="9.928" fill="#000"/><path d="M881.6 55.6 L891.6 54.6 L894.6 63.6 L889.6 67.6 L884.6 64.6 Z" fill="#8a8a8a"/><ellipse cx="889.6" cy="70.652" rx="3" ry="3.4" fill="#d0d0d0"/></g><g filter="url(#tb)"><ellipse cx="987.4" cy="61.6" rx="17.4" ry="13" fill="#9c9c9c"/><ellipse cx="980.092" cy="62.6" rx="6.263999999999999" ry="8.58" fill="#000"/><ellipse cx="995.404" cy="62.1" rx="6.263999999999999" ry="8.84" fill="#000"/><ellipse cx="986.4" cy="59.1" rx="5.22" ry="5.46" fill="#f4f4f4"/><path d="M981.4 63.6 L993.4 62.6 M987.4 61.6 L992.4 57.6" stroke="#ddd" stroke-width="1.1"/><ellipse cx="988.4" cy="69.66" rx="3" ry="3.4" fill="#d0d0d0"/></g><path d="M970 76 Q987.4 80 1005 76" stroke="#999" stroke-width="1" fill="none"/><g filter="url(#tb)"><ellipse cx="1037.4" cy="61.6" rx="17.4" ry="13" fill="#9c9c9c"/><ellipse cx="1030.092" cy="62.6" rx="6.263999999999999" ry="8.58" fill="#000"/><ellipse cx="1045.404" cy="62.1" rx="6.263999999999999" ry="8.84" fill="#000"/><ellipse cx="1036.4" cy="59.1" rx="5.22" ry="5.46" fill="#f4f4f4"/><path d="M1031.4 63.6 L1043.4 62.6 M1037.4 61.6 L1042.4 57.6" stroke="#ddd" stroke-width="1.1"/><ellipse cx="1038.4" cy="69.66" rx="3" ry="3.4" fill="#d0d0d0"/></g><path d="M1020 76 Q1037.4 80 1055 76" stroke="#999" stroke-width="1" fill="none"/><g filter="url(#tb)"><path d="M1131 52 L1135 55 L1136 50 L1139 54 L1142 51 L1143 56 L1147 58 L1145 62 L1148 66 L1144 67 L1143 72 L1139 70 L1137 74 L1135 69 L1130 68 L1132 63 L1129 58 Z" fill="#c9792a"/></g><rect x="1154.6" y="44.6" width="1.2" height="1.2" fill="#777"/><g filter="url(#tb)"><rect x="1169.3" y="44.8" width="36" height="29.6" fill="#a4a4a4"/><path d="M1175.3 66 Q1174.3 50 1183.3 47.6 Q1188.3 50 1187.3 58 L1181.3 66 Z" fill="#080808"/><path d="M1189.3 49 Q1196.3 46.5 1199.3 56 L1200.3 70 L1190.3 68 Q1193.3 60 1189.3 56 Z" fill="#080808"/><path d="M1179.3 60 L1188.3 54 L1192.3 60 L1189.3 66 L1180.3 67 Z" fill="#f0f0f0"/><rect x="1169.3" y="44.8" width="4" height="8" fill="#000"/><rect x="1201.3" y="52" width="4" height="22.4" fill="#000"/><rect x="1169.3" y="58" width="2.6" height="16.4" fill="#000"/></g><g filter="url(#tb)"><rect x="1219.4" y="44.8" width="36" height="29.6" fill="#a4a4a4"/><path d="M1225.4 66 Q1224.4 50 1233.4 47.6 Q1238.4 50 1237.4 58 L1231.4 66 Z" fill="#080808"/><path d="M1239.4 49 Q1246.4 46.5 1249.4 56 L1250.4 70 L1240.4 68 Q1243.4 60 1239.4 56 Z" fill="#080808"/><path d="M1229.4 60 L1238.4 54 L1242.4 60 L1239.4 66 L1230.4 67 Z" fill="#f0f0f0"/><rect x="1219.4" y="44.8" width="4" height="8" fill="#000"/><rect x="1251.4" y="52" width="4" height="22.4" fill="#000"/><rect x="1219.4" y="58" width="2.6" height="16.4" fill="#000"/></g><g filter="url(#tb)"><path d="M1274 45 L1290 45 Q1300 52 1300.6 74.6 L1276 74.6 Q1280 60 1274 45 Z" fill="#9a9a9a"/><path d="M1279 52 Q1290 50 1292 62 L1291 73 L1280 73 Q1283 62 1279 52 Z" fill="#111"/><path d="M1282 58 Q1289 56 1290 64 Q1289 70 1284 70 Q1281 64 1282 58 Z" fill="#e8e8e8"/><path d="M1290 46 Q1298 54 1298.6 74" stroke="#e4e4e4" stroke-width="1.6" fill="none" stroke-dasharray="2.4 0.8"/></g><rect x="1304" y="44.8" width="0.8" height="29.8" fill="#555"/></svg>
<span class="t" style="left:806.40px;top:88.93px;font-size:8.0px;color:#e6e6e6;letter-spacing:0;">80428 : 3D VOL REND - 0/40 images selected</span>
<span class="t" style="left:806.40px;top:469.13px;font-size:8.0px;color:#e6e6e6;letter-spacing:0;">80480 : MPR, COR MIP 10X2, Coronal - 0/117 images selected</span>
<svg class="a" style="left:1376px;top:83.8px" width="187" height="16" viewBox="1376 0 187 16"><path d="M1378 4.2 L1385.4 1.6 L1392.8 4.2 L1392.8 12 L1385.4 14.8 L1378 12 Z" fill="#1597b8"/><path d="M1378 4.2 L1385.4 6.8 L1392.8 4.2 M1385.4 6.8 V14.8" stroke="#0b5f78" stroke-width="0.8" fill="none"/><text x="1379.2" y="12" font-family="Liberation Sans,sans-serif" font-size="5.6" font-weight="bold" fill="#0b5f78">3</text><text x="1386.8" y="12" font-family="Liberation Sans,sans-serif" font-size="5.6" font-weight="bold" fill="#0b5f78">D</text><path d="M1395.6 8.8 L1401.6 3.6 V6.6 H1408 V11 H1401.6 V14 Z" fill="#fff"/><path d="M1412.4 1.8 L1419.6 3.8 L1417.6 5.6 L1426.8 13.4 L1425 15.2 L1415.8 7.4 L1414.2 9.4 Z" fill="#fff"/><circle cx="1423.6" cy="4.6" r="2" fill="none" stroke="#fff" stroke-width="1"/><text x="1413" y="15.4" font-family="Liberation Sans,sans-serif" font-size="9" font-weight="bold" fill="#fff">a</text><path d="M1442.2 8.8 L1436.2 3.6 V6.6 H1429.6 V11 H1436.2 V14 Z" fill="#fff"/><rect x="1445.2" y="1.2" width="14.6" height="14" fill="#0a1a0a" stroke="#2fae3c" stroke-width="0.9"/><path d="M1450 1.2 V15.2 M1455 1.2 V15.2 M1445.2 5.8 H1459.8 M1445.2 10.4 H1459.8" stroke="#2fae3c" stroke-width="0.9"/><rect x="1462.4" y="1.2" width="14.4" height="14" fill="#000" stroke="#8a8a8a" stroke-width="0.9"/><path d="M1463 8.2 H1476.4" stroke="#2fd048" stroke-width="1.1"/><circle cx="1469.6" cy="4.4" r="1.6" fill="#ddd"/><circle cx="1469.6" cy="12" r="1.6" fill="#ddd"/><rect x="1479.4" y="1.2" width="14.4" height="14" fill="#000" stroke="#8a8a8a" stroke-width="0.9"/><path d="M1486.6 1.6 V14.8" stroke="#2fd048" stroke-width="1.1"/><circle cx="1483" cy="8.4" r="1.7" fill="#ddd"/><circle cx="1490.4" cy="8.4" r="1.7" fill="#ddd"/><path d="M1496.4 8.6 L1500 6.6 L1502 8 L1505 6.8 L1507 8 L1510.8 7.4 L1511 10.4 L1507.6 12.6 L1504 11.4 L1500.6 12.8 L1496.8 11 Z" fill="#e8d21c"/><rect x="1502.6" y="3" width="2" height="5.4" fill="#9a9a9a"/><rect x="1513.6" y="4" width="10.4" height="11.6" fill="#d8322c"/><path d="M1518.8 15 V5.2 M1515 8.6 L1518.8 4.4 L1522.6 8.6 M1515.6 15 V10 M1522 15 V10" stroke="#fff" stroke-width="1.2" fill="none"/><path d="M1522.6 2.4 L1527.6 5.4 L1527.6 1.2 Z M1521 1.6 L1524 3.6" fill="#eee" stroke="#eee" stroke-width="0.6"/><rect x="1530.6" y="1.8" width="13.6" height="13" rx="1.5" fill="#2a64b8" stroke="#8fb2e4" stroke-width="1"/><rect x="1533.2" y="5.4" width="8.4" height="7" fill="#1c4890" stroke="#cfe0f8" stroke-width="0.7"/><rect x="1547.4" y="1.8" width="13.8" height="13" rx="1.5" fill="#d63a30" stroke="#ec8a80" stroke-width="0.8"/><path d="M1550.6 4.6 L1558 12.2 M1558 4.6 L1550.6 12.2" stroke="#fff" stroke-width="2"/></svg>
<svg class="a" style="left:1376px;top:464.2px" width="187" height="16" viewBox="1376 0 187 16"><path d="M1378 4.2 L1385.4 1.6 L1392.8 4.2 L1392.8 12 L1385.4 14.8 L1378 12 Z" fill="#1597b8"/><path d="M1378 4.2 L1385.4 6.8 L1392.8 4.2 M1385.4 6.8 V14.8" stroke="#0b5f78" stroke-width="0.8" fill="none"/><text x="1379.2" y="12" font-family="Liberation Sans,sans-serif" font-size="5.6" font-weight="bold" fill="#0b5f78">3</text><text x="1386.8" y="12" font-family="Liberation Sans,sans-serif" font-size="5.6" font-weight="bold" fill="#0b5f78">D</text><path d="M1395.6 8.8 L1401.6 3.6 V6.6 H1408 V11 H1401.6 V14 Z" fill="#fff"/><path d="M1412.4 1.8 L1419.6 3.8 L1417.6 5.6 L1426.8 13.4 L1425 15.2 L1415.8 7.4 L1414.2 9.4 Z" fill="#fff"/><circle cx="1423.6" cy="4.6" r="2" fill="none" stroke="#fff" stroke-width="1"/><text x="1413" y="15.4" font-family="Liberation Sans,sans-serif" font-size="9" font-weight="bold" fill="#fff">a</text><path d="M1442.2 8.8 L1436.2 3.6 V6.6 H1429.6 V11 H1436.2 V14 Z" fill="#fff"/><rect x="1445.2" y="1.2" width="14.6" height="14" fill="#0a1a0a" stroke="#2fae3c" stroke-width="0.9"/><path d="M1450 1.2 V15.2 M1455 1.2 V15.2 M1445.2 5.8 H1459.8 M1445.2 10.4 H1459.8" stroke="#2fae3c" stroke-width="0.9"/><rect x="1462.4" y="1.2" width="14.4" height="14" fill="#000" stroke="#8a8a8a" stroke-width="0.9"/><path d="M1463 8.2 H1476.4" stroke="#2fd048" stroke-width="1.1"/><circle cx="1469.6" cy="4.4" r="1.6" fill="#ddd"/><circle cx="1469.6" cy="12" r="1.6" fill="#ddd"/><rect x="1479.4" y="1.2" width="14.4" height="14" fill="#000" stroke="#8a8a8a" stroke-width="0.9"/><path d="M1486.6 1.6 V14.8" stroke="#2fd048" stroke-width="1.1"/><circle cx="1483" cy="8.4" r="1.7" fill="#ddd"/><circle cx="1490.4" cy="8.4" r="1.7" fill="#ddd"/><path d="M1496.4 8.6 L1500 6.6 L1502 8 L1505 6.8 L1507 8 L1510.8 7.4 L1511 10.4 L1507.6 12.6 L1504 11.4 L1500.6 12.8 L1496.8 11 Z" fill="#e8d21c"/><rect x="1502.6" y="3" width="2" height="5.4" fill="#9a9a9a"/><rect x="1513.6" y="4" width="10.4" height="11.6" fill="#d8322c"/><path d="M1518.8 15 V5.2 M1515 8.6 L1518.8 4.4 L1522.6 8.6 M1515.6 15 V10 M1522 15 V10" stroke="#fff" stroke-width="1.2" fill="none"/><path d="M1522.6 2.4 L1527.6 5.4 L1527.6 1.2 Z M1521 1.6 L1524 3.6" fill="#eee" stroke="#eee" stroke-width="0.6"/><rect x="1530.6" y="1.8" width="13.6" height="13" rx="1.5" fill="#2a64b8" stroke="#8fb2e4" stroke-width="1"/><rect x="1533.2" y="5.4" width="8.4" height="7" fill="#1c4890" stroke="#cfe0f8" stroke-width="0.7"/><rect x="1547.4" y="1.8" width="13.8" height="13" rx="1.5" fill="#d63a30" stroke="#ec8a80" stroke-width="0.8"/><path d="M1550.6 4.6 L1558 12.2 M1558 4.6 L1550.6 12.2" stroke="#fff" stroke-width="2"/></svg>
<svg class="a c" style="left:804px;top:100.4px" width="758.6" height="361.4" viewBox="804 100.4 758.6 361.4"><defs><filter id="hbody" x="0" y="0" width="100%" height="100%" color-interpolation-filters="sRGB">
<feTurbulence type="fractalNoise" baseFrequency="0.42" numOctaves="2" seed="5" result="n1"/>
<feTurbulence type="fractalNoise" baseFrequency="0.075" numOctaves="2" seed="9" result="n2"/>
<feComposite in="n1" in2="n2" operator="arithmetic" k1="0" k2="0.78" k3="0.3" k4="-0.04" result="n"/>
<feColorMatrix in="n" type="matrix" values="0.92 0 0 0 0.34  1.1 0 0 0 -0.07  0.7 0 0 0 -0.18  0 0 0 0 1" result="tex"/>
<feDisplacementMap in="SourceGraphic" in2="n1" scale="3" xChannelSelector="R" yChannelSelector="G" result="rough"/>
<feGaussianBlur in="rough" stdDeviation="2.2" result="shade"/>
<feComposite in="tex" in2="shade" operator="arithmetic" k1="1.1" k2="0" k3="0" k4="0" result="m"/>
<feComposite in="m" in2="rough" operator="in"/>
</filter><filter id="hbr" x="0" y="0" width="100%" height="100%" color-interpolation-filters="sRGB">
<feTurbulence type="fractalNoise" baseFrequency="0.42" numOctaves="2" seed="5" result="n1"/>
<feTurbulence type="fractalNoise" baseFrequency="0.075" numOctaves="2" seed="9" result="n2"/>
<feComposite in="n1" in2="n2" operator="arithmetic" k1="0" k2="0.78" k3="0.3" k4="-0.04" result="n"/>
<feColorMatrix in="n" type="matrix" values="0.92 0 0 0 0.34  1.1 0 0 0 -0.07  0.7 0 0 0 -0.18  0 0 0 0 1" result="tex"/>
<feDisplacementMap in="SourceGraphic" in2="n1" scale="1.6" xChannelSelector="R" yChannelSelector="G" result="rough"/>
<feGaussianBlur in="rough" stdDeviation="0.5" result="shade"/>
<feComposite in="tex" in2="shade" operator="arithmetic" k1="1.18" k2="0" k3="0" k4="0" result="m"/>
<feComposite in="m" in2="rough" operator="in"/>
</filter><filter id="mb"><feGaussianBlur stdDeviation="0.6"/></filter><linearGradient id="hg" gradientUnits="userSpaceOnUse" x1="1085" y1="170" x2="1265" y2="400"><stop offset="0" stop-color="#f4f4f4"/><stop offset="0.45" stop-color="#d6d6d6"/><stop offset="1" stop-color="#9c9c9c"/></linearGradient></defs><g filter="url(#hbr)"><rect x="804" y="100.4" width="758.6" height="361.4" fill="none"/><path d="M1106.9 203.9 C1106.5 200.4 1105.5 189.0 1104.8 183.1 C1104.1 177.2 1103.6 172.7 1102.7 168.6 C1101.9 164.4 1100.1 159.9 1099.6 158.2" fill="none" stroke="#f2f2f2" stroke-width="3.7" stroke-linecap="round" stroke-linejoin="round"/><path d="M1103.4 173.5 C1103.6 173.0 1103.8 171.2 1104.3 170.3 C1104.8 169.4 1106.1 168.4 1106.5 168.1" fill="none" stroke="#f2f2f2" stroke-width="2.5" stroke-linecap="round" stroke-linejoin="round"/><path d="M1104.0 171.4 C1103.7 170.9 1102.6 169.2 1102.1 168.4 C1101.6 167.7 1101.2 167.1 1101.0 166.9" fill="none" stroke="#f2f2f2" stroke-width="1.9" stroke-linecap="round" stroke-linejoin="round"/><path d="M1100.6 161.5 C1100.9 160.7 1101.3 158.6 1102.4 156.9 C1103.4 155.2 1106.3 152.3 1107.1 151.4" fill="none" stroke="#f2f2f2" stroke-width="2.5" stroke-linecap="round" stroke-linejoin="round"/><path d="M1102.2 157.4 C1102.5 157.2 1103.6 156.2 1104.3 155.9 C1105.0 155.7 1106.1 155.9 1106.4 155.9" fill="none" stroke="#f2f2f2" stroke-width="1.9" stroke-linecap="round" stroke-linejoin="round"/><path d="M1103.8 179.0 C1101.9 178.6 1095.3 176.7 1092.3 176.9 C1089.4 177.1 1087.1 179.5 1086.1 180.0" fill="none" stroke="#f2f2f2" stroke-width="2.8" stroke-linecap="round" stroke-linejoin="round"/><path d="M1097.0 177.7 C1096.4 178.0 1094.4 178.6 1093.1 179.6 C1091.8 180.5 1089.8 182.6 1089.2 183.3" fill="none" stroke="#f2f2f2" stroke-width="1.9" stroke-linecap="round" stroke-linejoin="round"/><path d="M1093.6 179.4 C1093.1 179.3 1091.9 179.2 1090.9 179.2 C1089.9 179.1 1088.2 179.2 1087.6 179.2" fill="none" stroke="#f2f2f2" stroke-width="1.9" stroke-linecap="round" stroke-linejoin="round"/><path d="M1109.0 197.7 C1109.5 193.9 1111.9 181.0 1112.1 174.8 C1112.3 168.6 1110.3 162.7 1110.0 160.3" fill="none" stroke="#f2f2f2" stroke-width="3.1" stroke-linecap="round" stroke-linejoin="round"/><path d="M1110.9 166.7 C1110.3 165.9 1108.8 163.5 1107.5 161.9 C1106.1 160.3 1103.7 158.0 1103.0 157.3" fill="none" stroke="#f2f2f2" stroke-width="2.0" stroke-linecap="round" stroke-linejoin="round"/><path d="M1108.4 163.1 C1107.8 163.0 1106.0 162.4 1105.1 162.2 C1104.2 162.1 1103.5 162.1 1103.2 162.1" fill="none" stroke="#f2f2f2" stroke-width="1.9" stroke-linecap="round" stroke-linejoin="round"/><path d="M1109.0 164.0 C1108.9 163.7 1108.8 162.9 1108.7 162.0 C1108.6 161.0 1108.5 159.0 1108.4 158.5" fill="none" stroke="#f2f2f2" stroke-width="1.9" stroke-linecap="round" stroke-linejoin="round"/><path d="M1110.6 185.7 C1111.1 184.9 1112.2 182.6 1113.6 181.3 C1115.1 180.1 1118.4 178.8 1119.4 178.3" fill="none" stroke="#f2f2f2" stroke-width="2.0" stroke-linecap="round" stroke-linejoin="round"/><path d="M1111.7 184.1 C1111.6 183.6 1111.0 182.0 1111.0 181.1 C1111.0 180.3 1111.5 179.2 1111.6 178.8" fill="none" stroke="#f2f2f2" stroke-width="1.9" stroke-linecap="round" stroke-linejoin="round"/><path d="M1118.3 178.8 C1118.8 178.9 1120.1 179.3 1121.0 179.4 C1121.8 179.5 1123.0 179.4 1123.4 179.4" fill="none" stroke="#f2f2f2" stroke-width="1.9" stroke-linecap="round" stroke-linejoin="round"/><path d="M1113.1 208.1 C1114.8 204.9 1120.4 195.9 1123.5 189.4 C1126.6 182.8 1129.6 175.5 1131.8 168.6 C1134.1 161.6 1136.1 151.3 1137.0 147.8" fill="none" stroke="#f2f2f2" stroke-width="4.3" stroke-linecap="round" stroke-linejoin="round"/><path d="M1133.4 162.1 C1133.8 161.8 1134.8 161.4 1135.7 160.8 C1136.6 160.1 1138.3 158.6 1138.8 158.2" fill="none" stroke="#f2f2f2" stroke-width="2.9" stroke-linecap="round" stroke-linejoin="round"/><path d="M1137.5 159.3 C1137.5 158.8 1137.3 157.4 1137.4 156.2 C1137.6 154.9 1138.2 152.5 1138.3 151.7" fill="none" stroke="#f2f2f2" stroke-width="1.9" stroke-linecap="round" stroke-linejoin="round"/><path d="M1127.9 178.3 C1127.8 177.6 1127.4 175.7 1127.1 174.1 C1126.8 172.5 1126.4 169.5 1126.2 168.5" fill="none" stroke="#f2f2f2" stroke-width="2.9" stroke-linecap="round" stroke-linejoin="round"/><path d="M1126.4 169.9 C1126.8 169.4 1127.7 167.6 1128.6 166.5 C1129.4 165.5 1131.1 164.0 1131.6 163.5" fill="none" stroke="#f2f2f2" stroke-width="1.9" stroke-linecap="round" stroke-linejoin="round"/><path d="M1134.9 154.0 C1134.4 152.5 1133.0 147.4 1131.8 144.7 C1130.6 141.9 1128.4 138.6 1127.7 137.4" fill="none" stroke="#f2f2f2" stroke-width="2.5" stroke-linecap="round" stroke-linejoin="round"/><path d="M1132.4 146.3 C1132.6 145.3 1133.6 142.1 1134.1 140.2 C1134.6 138.3 1135.2 136.0 1135.4 135.1" fill="none" stroke="#f2f2f2" stroke-width="1.9" stroke-linecap="round" stroke-linejoin="round"/><path d="M1133.0 144.2 C1133.2 143.8 1134.0 142.6 1134.6 142.2 C1135.2 141.8 1136.2 142.0 1136.5 141.9" fill="none" stroke="#f2f2f2" stroke-width="1.9" stroke-linecap="round" stroke-linejoin="round"/><path d="M1134.6 138.1 C1134.5 137.5 1134.4 135.7 1133.6 134.6 C1132.7 133.5 1130.3 132.1 1129.7 131.6" fill="none" stroke="#f2f2f2" stroke-width="1.9" stroke-linecap="round" stroke-linejoin="round"/><path d="M1117.3 199.7 C1119.0 199.4 1124.2 200.4 1127.7 197.7 C1131.1 194.9 1133.5 186.2 1138.1 183.1 C1142.6 180.0 1151.9 179.7 1154.7 179.0" fill="none" stroke="#f2f2f2" stroke-width="3.7" stroke-linecap="round" stroke-linejoin="round"/><path d="M1131.0 192.9 C1131.9 192.5 1134.2 191.3 1136.2 190.6 C1138.2 189.8 1142.0 188.7 1143.2 188.4" fill="none" stroke="#f2f2f2" stroke-width="2.5" stroke-linecap="round" stroke-linejoin="round"/><path d="M1139.0 189.7 C1139.3 189.1 1139.9 187.4 1140.7 186.5 C1141.5 185.6 1143.2 184.6 1143.7 184.3" fill="none" stroke="#f2f2f2" stroke-width="1.9" stroke-linecap="round" stroke-linejoin="round"/><path d="M1122.7 198.7 C1123.1 198.2 1124.2 196.9 1124.9 195.9 C1125.5 194.9 1126.3 193.3 1126.6 192.7" fill="none" stroke="#f2f2f2" stroke-width="2.5" stroke-linecap="round" stroke-linejoin="round"/><path d="M1124.0 197.0 C1124.5 196.9 1126.2 196.4 1127.4 195.9 C1128.6 195.4 1130.6 194.3 1131.2 194.0" fill="none" stroke="#f2f2f2" stroke-width="1.9" stroke-linecap="round" stroke-linejoin="round"/><path d="M1100.6 208.1 C1098.9 206.7 1094.4 201.3 1090.3 199.7 C1086.1 198.2 1078.1 198.9 1075.7 198.7" fill="none" stroke="#f2f2f2" stroke-width="3.4" stroke-linecap="round" stroke-linejoin="round"/><path d="M1085.1 199.4 C1084.7 199.6 1083.8 200.0 1082.7 200.5 C1081.7 200.9 1079.6 201.8 1078.9 202.0" fill="none" stroke="#f2f2f2" stroke-width="2.3" stroke-linecap="round" stroke-linejoin="round"/><path d="M1081.6 200.9 C1081.0 200.8 1079.1 200.6 1077.8 200.1 C1076.5 199.6 1074.3 198.2 1073.6 197.8" fill="none" stroke="#f2f2f2" stroke-width="1.9" stroke-linecap="round" stroke-linejoin="round"/><path d="M1081.1 201.1 C1080.5 200.9 1078.7 200.1 1077.3 199.5 C1076.0 198.9 1073.7 197.8 1073.0 197.5" fill="none" stroke="#f2f2f2" stroke-width="1.9" stroke-linecap="round" stroke-linejoin="round"/><path d="M1092.3 201.8 C1091.3 200.1 1087.4 194.2 1086.1 191.4 C1084.8 188.7 1084.7 186.2 1084.4 185.2" fill="none" stroke="#f2f2f2" stroke-width="2.5" stroke-linecap="round" stroke-linejoin="round"/><path d="M1085.2 187.9 C1084.5 187.5 1082.2 186.8 1080.9 185.7 C1079.7 184.5 1078.0 181.7 1077.4 180.9" fill="none" stroke="#f2f2f2" stroke-width="1.9" stroke-linecap="round" stroke-linejoin="round"/><path d="M1078.2 182.0 C1077.5 181.7 1075.5 180.5 1074.2 180.4 C1072.8 180.4 1070.9 181.5 1070.3 181.7" fill="none" stroke="#f2f2f2" stroke-width="1.9" stroke-linecap="round" stroke-linejoin="round"/><path d="M1098.6 224.7 C1096.1 223.3 1088.0 219.1 1084.0 216.4 C1080.0 213.6 1076.2 209.4 1074.7 208.1" fill="none" stroke="#f2f2f2" stroke-width="3.1" stroke-linecap="round" stroke-linejoin="round"/><path d="M1076.1 209.3 C1075.1 209.4 1072.0 210.1 1070.4 210.1 C1068.8 210.2 1067.0 209.7 1066.3 209.6" fill="none" stroke="#f2f2f2" stroke-width="2.0" stroke-linecap="round" stroke-linejoin="round"/><path d="M1069.3 210.0 C1068.8 210.4 1067.1 211.8 1066.0 212.5 C1064.8 213.2 1063.2 213.8 1062.6 214.1" fill="none" stroke="#f2f2f2" stroke-width="1.9" stroke-linecap="round" stroke-linejoin="round"/><path d="M1092.3 233.0 C1090.6 233.0 1085.2 234.4 1081.9 233.0 C1078.7 231.6 1074.2 226.1 1072.6 224.7" fill="none" stroke="#f2f2f2" stroke-width="3.7" stroke-linecap="round" stroke-linejoin="round"/><path d="M1074.2 226.1 C1073.7 226.1 1072.2 226.3 1070.9 226.2 C1069.6 226.0 1067.2 225.6 1066.4 225.4" fill="none" stroke="#f2f2f2" stroke-width="2.5" stroke-linecap="round" stroke-linejoin="round"/><path d="M1067.0 225.5 C1066.4 224.9 1064.9 222.5 1063.8 221.6 C1062.8 220.7 1061.2 220.4 1060.7 220.2" fill="none" stroke="#f2f2f2" stroke-width="1.9" stroke-linecap="round" stroke-linejoin="round"/><path d="M1071.6 226.1 C1071.1 226.5 1069.6 228.1 1068.4 228.5 C1067.2 229.0 1065.2 229.0 1064.6 229.1" fill="none" stroke="#f2f2f2" stroke-width="1.9" stroke-linecap="round" stroke-linejoin="round"/><path d="M1085.9 233.0 C1085.3 232.5 1083.2 231.4 1082.2 230.2 C1081.2 229.1 1080.3 226.7 1080.0 226.0" fill="none" stroke="#f2f2f2" stroke-width="2.5" stroke-linecap="round" stroke-linejoin="round"/><path d="M1083.5 231.2 C1083.4 230.5 1083.6 228.9 1083.4 227.4 C1083.1 225.9 1082.1 223.2 1081.8 222.4" fill="none" stroke="#f2f2f2" stroke-width="1.9" stroke-linecap="round" stroke-linejoin="round"/><path d="M1080.8 227.6 C1080.8 227.3 1080.6 226.2 1080.7 225.4 C1080.8 224.5 1081.4 222.9 1081.5 222.4" fill="none" stroke="#f2f2f2" stroke-width="1.9" stroke-linecap="round" stroke-linejoin="round"/><path d="M1081.9 249.6 C1079.9 248.9 1073.8 245.6 1069.5 245.5 C1065.2 245.3 1058.2 248.1 1056.0 248.6" fill="none" stroke="#f2f2f2" stroke-width="3.4" stroke-linecap="round" stroke-linejoin="round"/><path d="M1059.5 247.7 C1058.6 247.4 1056.1 246.3 1054.0 245.8 C1052.0 245.2 1048.5 244.6 1047.4 244.4" fill="none" stroke="#f2f2f2" stroke-width="2.3" stroke-linecap="round" stroke-linejoin="round"/><path d="M1055.2 246.2 C1055.0 245.7 1054.1 244.0 1053.8 243.2 C1053.5 242.3 1053.4 241.5 1053.3 241.2" fill="none" stroke="#f2f2f2" stroke-width="1.9" stroke-linecap="round" stroke-linejoin="round"/><path d="M1057.0 246.9 C1056.5 247.0 1054.6 247.6 1053.5 247.7 C1052.5 247.9 1051.1 247.6 1050.6 247.5" fill="none" stroke="#f2f2f2" stroke-width="1.9" stroke-linecap="round" stroke-linejoin="round"/><path d="M1057.9 248.1 C1057.1 248.0 1055.1 248.1 1053.5 247.5 C1051.8 247.0 1048.9 245.4 1048.0 245.0" fill="none" stroke="#f2f2f2" stroke-width="2.3" stroke-linecap="round" stroke-linejoin="round"/><path d="M1051.1 246.4 C1050.8 246.1 1049.9 245.5 1049.3 244.7 C1048.8 243.8 1047.9 241.8 1047.6 241.3" fill="none" stroke="#f2f2f2" stroke-width="1.9" stroke-linecap="round" stroke-linejoin="round"/><path d="M1077.8 262.1 C1075.7 262.8 1069.1 263.8 1065.3 266.2 C1061.5 268.7 1056.7 274.9 1054.9 276.6" fill="none" stroke="#f2f2f2" stroke-width="4.0" stroke-linecap="round" stroke-linejoin="round"/><path d="M1056.1 275.5 C1055.3 275.8 1052.7 276.6 1051.3 277.2 C1049.9 277.9 1048.3 278.9 1047.7 279.2" fill="none" stroke="#f2f2f2" stroke-width="2.7" stroke-linecap="round" stroke-linejoin="round"/><path d="M1053.2 276.6 C1052.6 276.4 1050.8 275.8 1049.9 275.5 C1049.0 275.1 1048.2 274.8 1047.8 274.7" fill="none" stroke="#f2f2f2" stroke-width="1.9" stroke-linecap="round" stroke-linejoin="round"/><path d="M1117.3 224.7 C1119.0 221.9 1123.5 212.6 1127.7 208.1 C1131.8 203.5 1139.8 199.4 1142.2 197.7" fill="none" stroke="#f2f2f2" stroke-width="5.3" stroke-linecap="round" stroke-linejoin="round"/><path d="M1121.1 218.6 C1122.0 218.3 1124.6 217.8 1126.3 217.0 C1127.9 216.2 1130.0 214.4 1130.7 213.9" fill="none" stroke="#f2f2f2" stroke-width="3.5" stroke-linecap="round" stroke-linejoin="round"/><path d="M1125.3 217.3 C1126.2 217.4 1128.9 217.7 1130.2 218.1 C1131.5 218.5 1132.7 219.5 1133.2 219.7" fill="none" stroke="#f2f2f2" stroke-width="2.3" stroke-linecap="round" stroke-linejoin="round"/><path d="M1132.4 204.7 C1132.8 204.6 1133.8 204.2 1134.9 204.0 C1135.9 203.9 1138.1 203.6 1138.7 203.6" fill="none" stroke="#f2f2f2" stroke-width="3.5" stroke-linecap="round" stroke-linejoin="round"/><path d="M1137.0 203.8 C1137.5 204.1 1139.1 204.7 1140.2 205.7 C1141.2 206.7 1142.9 209.2 1143.5 209.9" fill="none" stroke="#f2f2f2" stroke-width="2.3" stroke-linecap="round" stroke-linejoin="round"/><path d="M1121.4 187.3 C1121.1 185.2 1119.4 179.0 1119.4 174.8 C1119.4 170.6 1121.1 164.4 1121.4 162.3" fill="none" stroke="#f2f2f2" stroke-width="2.8" stroke-linecap="round" stroke-linejoin="round"/><path d="M1120.8 183.7 C1120.3 183.1 1118.7 181.6 1117.4 180.3 C1116.1 179.1 1113.8 176.9 1113.1 176.3" fill="none" stroke="#f2f2f2" stroke-width="1.9" stroke-linecap="round" stroke-linejoin="round"/><path d="M1114.7 177.7 C1114.2 177.7 1112.9 177.5 1111.7 177.3 C1110.6 177.1 1108.4 176.7 1107.8 176.6" fill="none" stroke="#f2f2f2" stroke-width="1.9" stroke-linecap="round" stroke-linejoin="round"/><path d="M1120.3 169.2 C1120.9 168.5 1122.7 166.2 1123.9 165.2 C1125.1 164.2 1126.7 163.3 1127.3 163.0" fill="none" stroke="#f2f2f2" stroke-width="1.9" stroke-linecap="round" stroke-linejoin="round"/><path d="M1123.2 166.0 C1123.5 165.8 1124.5 165.1 1125.3 164.8 C1126.1 164.5 1127.6 164.5 1128.0 164.4" fill="none" stroke="#f2f2f2" stroke-width="1.9" stroke-linecap="round" stroke-linejoin="round"/><path d="M1125.1 164.4 C1125.6 164.3 1127.2 163.9 1128.3 163.7 C1129.4 163.4 1131.2 162.9 1131.8 162.7" fill="none" stroke="#f2f2f2" stroke-width="1.9" stroke-linecap="round" stroke-linejoin="round"/><path d="M1071.6 282.5 C1069.8 284.9 1065.0 292.2 1061.2 297.0 C1057.4 301.9 1052.3 307.9 1048.7 311.6 C1045.1 315.2 1040.9 317.6 1039.4 318.8" fill="none" stroke="#f2f2f2" stroke-width="5.0" stroke-linecap="round" stroke-linejoin="round"/><path d="M1040.5 317.9 C1039.7 317.9 1037.5 317.2 1035.8 317.7 C1034.0 318.2 1031.0 320.4 1030.0 320.9" fill="none" stroke="#f2f2f2" stroke-width="3.3" stroke-linecap="round" stroke-linejoin="round"/><path d="M1037.0 317.7 C1036.4 318.2 1035.0 319.7 1033.9 320.4 C1032.7 321.1 1030.8 321.6 1030.2 321.8" fill="none" stroke="#f2f2f2" stroke-width="2.2" stroke-linecap="round" stroke-linejoin="round"/><path d="M1045.9 313.7 C1045.0 313.8 1042.6 314.0 1040.8 314.2 C1039.0 314.3 1036.0 314.6 1035.1 314.7" fill="none" stroke="#f2f2f2" stroke-width="3.3" stroke-linecap="round" stroke-linejoin="round"/><path d="M1044.3 313.9 C1043.9 314.3 1042.7 315.6 1042.1 316.4 C1041.6 317.2 1041.1 318.4 1040.9 318.8" fill="none" stroke="#f2f2f2" stroke-width="2.2" stroke-linecap="round" stroke-linejoin="round"/><path d="M1042.9 314.0 C1042.3 314.5 1040.1 316.3 1039.2 317.3 C1038.3 318.2 1037.7 319.3 1037.4 319.7" fill="none" stroke="#f2f2f2" stroke-width="2.2" stroke-linecap="round" stroke-linejoin="round"/><path d="M1052.9 307.4 C1051.1 307.1 1045.1 306.0 1042.5 305.3 C1039.9 304.6 1038.1 303.6 1037.3 303.2" fill="none" stroke="#f2f2f2" stroke-width="3.1" stroke-linecap="round" stroke-linejoin="round"/><path d="M1050.1 306.9 C1049.5 307.4 1047.6 309.2 1046.0 310.3 C1044.4 311.4 1041.6 312.8 1040.8 313.3" fill="none" stroke="#f2f2f2" stroke-width="2.0" stroke-linecap="round" stroke-linejoin="round"/><path d="M1044.2 311.4 C1043.9 311.4 1043.4 311.9 1042.7 311.8 C1041.9 311.8 1040.2 311.3 1039.7 311.1" fill="none" stroke="#f2f2f2" stroke-width="1.9" stroke-linecap="round" stroke-linejoin="round"/><path d="M1073.6 307.4 C1071.2 310.9 1063.9 322.3 1059.1 328.2 C1054.2 334.1 1049.2 338.4 1044.5 342.7 C1039.9 347.1 1033.3 352.3 1031.0 354.2" fill="none" stroke="#f2f2f2" stroke-width="5.3" stroke-linecap="round" stroke-linejoin="round"/><path d="M1064.4 320.6 C1064.6 321.3 1065.0 323.2 1065.4 324.8 C1065.8 326.3 1066.6 329.1 1066.8 330.0" fill="none" stroke="#f2f2f2" stroke-width="3.5" stroke-linecap="round" stroke-linejoin="round"/><path d="M1066.6 329.4 C1067.0 329.7 1067.9 330.4 1068.6 330.8 C1069.4 331.2 1070.7 331.6 1071.2 331.7" fill="none" stroke="#f2f2f2" stroke-width="2.3" stroke-linecap="round" stroke-linejoin="round"/><path d="M1065.9 326.6 C1065.8 327.1 1065.9 328.6 1065.4 329.5 C1065.0 330.4 1063.7 331.5 1063.4 331.9" fill="none" stroke="#f2f2f2" stroke-width="2.3" stroke-linecap="round" stroke-linejoin="round"/><path d="M1077.8 324.0 C1075.7 328.2 1069.8 342.7 1065.3 349.0 C1060.8 355.2 1054.8 358.6 1050.8 361.4 C1046.8 364.3 1043.0 365.2 1041.4 366.0" fill="none" stroke="#f2f2f2" stroke-width="5.0" stroke-linecap="round" stroke-linejoin="round"/><path d="M1073.8 332.0 C1074.0 332.4 1074.4 333.7 1074.7 334.8 C1075.1 336.0 1075.9 338.2 1076.1 338.8" fill="none" stroke="#f2f2f2" stroke-width="3.3" stroke-linecap="round" stroke-linejoin="round"/><path d="M1074.2 333.0 C1074.1 333.5 1074.1 335.2 1073.8 335.8 C1073.5 336.4 1072.5 336.6 1072.2 336.8" fill="none" stroke="#f2f2f2" stroke-width="2.2" stroke-linecap="round" stroke-linejoin="round"/><path d="M1045.3 364.1 C1045.0 365.3 1044.9 369.0 1043.9 371.0 C1042.9 373.0 1040.0 375.4 1039.2 376.3" fill="none" stroke="#f2f2f2" stroke-width="3.3" stroke-linecap="round" stroke-linejoin="round"/><path d="M1042.1 373.0 C1041.8 373.3 1041.1 374.2 1040.2 374.5 C1039.4 374.9 1037.4 374.9 1036.8 375.0" fill="none" stroke="#f2f2f2" stroke-width="2.2" stroke-linecap="round" stroke-linejoin="round"/><path d="M1081.9 338.6 C1081.3 341.0 1078.0 349.0 1077.8 353.1 C1077.6 357.3 1080.4 361.8 1080.9 363.5" fill="none" stroke="#f2f2f2" stroke-width="3.7" stroke-linecap="round" stroke-linejoin="round"/><path d="M1080.2 361.2 C1081.1 361.6 1083.9 362.7 1085.4 363.6 C1086.9 364.4 1088.6 366.0 1089.2 366.5" fill="none" stroke="#f2f2f2" stroke-width="2.5" stroke-linecap="round" stroke-linejoin="round"/><path d="M1081.7 361.9 C1082.2 361.8 1083.3 361.5 1084.4 361.5 C1085.6 361.5 1087.9 361.7 1088.6 361.8" fill="none" stroke="#f2f2f2" stroke-width="1.9" stroke-linecap="round" stroke-linejoin="round"/><path d="M1061.2 332.3 C1059.4 332.3 1053.5 333.4 1050.8 332.3 C1048.0 331.3 1045.6 327.1 1044.5 326.1" fill="none" stroke="#f2f2f2" stroke-width="2.8" stroke-linecap="round" stroke-linejoin="round"/><path d="M1053.3 332.3 C1052.5 333.0 1049.9 334.7 1048.1 336.4 C1046.3 338.1 1043.6 341.4 1042.7 342.4" fill="none" stroke="#f2f2f2" stroke-width="1.9" stroke-linecap="round" stroke-linejoin="round"/><path d="M1051.3 333.9 C1050.6 334.0 1048.1 334.5 1046.8 334.6 C1045.6 334.6 1044.3 334.4 1043.8 334.3" fill="none" stroke="#f2f2f2" stroke-width="1.9" stroke-linecap="round" stroke-linejoin="round"/><path d="M1067.4 294.9 C1065.3 294.2 1058.4 292.9 1054.9 290.8 C1051.5 288.7 1048.0 283.9 1046.6 282.5" fill="none" stroke="#f2f2f2" stroke-width="3.4" stroke-linecap="round" stroke-linejoin="round"/><path d="M1048.5 284.3 C1048.3 283.6 1047.9 281.0 1047.5 279.8 C1047.2 278.5 1046.5 277.3 1046.3 276.8" fill="none" stroke="#f2f2f2" stroke-width="2.3" stroke-linecap="round" stroke-linejoin="round"/><path d="M1046.6 277.5 C1046.6 277.1 1046.4 275.3 1046.5 274.7 C1046.6 274.1 1047.1 274.0 1047.2 273.8" fill="none" stroke="#f2f2f2" stroke-width="1.9" stroke-linecap="round" stroke-linejoin="round"/><path d="M1046.5 277.3 C1046.8 276.9 1047.7 275.3 1048.0 274.6 C1048.2 273.9 1048.0 273.4 1048.0 273.1" fill="none" stroke="#f2f2f2" stroke-width="1.9" stroke-linecap="round" stroke-linejoin="round"/><path d="M1250.3 233.0 C1250.8 229.5 1253.0 220.5 1253.4 212.2 C1253.7 203.9 1252.3 191.4 1252.3 183.1 C1252.3 174.8 1252.8 169.4 1253.4 162.3 C1254.0 155.2 1255.6 144.2 1256.1 140.5" fill="none" stroke="#f2f2f2" stroke-width="4.0" stroke-linecap="round" stroke-linejoin="round"/><path d="M1252.9 170.9 C1252.5 170.0 1251.2 167.2 1250.2 165.2 C1249.2 163.3 1247.5 160.4 1247.0 159.4" fill="none" stroke="#f2f2f2" stroke-width="2.7" stroke-linecap="round" stroke-linejoin="round"/><path d="M1250.8 166.6 C1251.0 165.9 1251.8 163.4 1251.8 162.2 C1251.9 161.0 1251.2 159.8 1251.1 159.3" fill="none" stroke="#f2f2f2" stroke-width="1.9" stroke-linecap="round" stroke-linejoin="round"/><path d="M1252.8 174.0 C1252.4 173.3 1251.4 170.7 1250.5 169.3 C1249.6 167.8 1248.0 166.0 1247.5 165.3" fill="none" stroke="#f2f2f2" stroke-width="2.7" stroke-linecap="round" stroke-linejoin="round"/><path d="M1251.9 172.1 C1251.3 171.9 1249.7 170.9 1248.6 170.5 C1247.4 170.2 1245.6 170.0 1245.0 169.9" fill="none" stroke="#f2f2f2" stroke-width="1.9" stroke-linecap="round" stroke-linejoin="round"/><path d="M1254.0 168.6 C1255.1 166.8 1258.6 161.4 1260.6 158.2 C1262.7 155.0 1265.5 150.9 1266.5 149.5" fill="none" stroke="#f2f2f2" stroke-width="3.4" stroke-linecap="round" stroke-linejoin="round"/><path d="M1262.7 155.2 C1263.1 155.1 1264.1 154.9 1265.2 154.6 C1266.2 154.3 1268.3 153.5 1268.9 153.2" fill="none" stroke="#f2f2f2" stroke-width="2.3" stroke-linecap="round" stroke-linejoin="round"/><path d="M1264.4 154.8 C1264.7 154.9 1265.4 155.6 1266.2 155.7 C1267.1 155.9 1268.9 155.8 1269.4 155.8" fill="none" stroke="#f2f2f2" stroke-width="1.9" stroke-linecap="round" stroke-linejoin="round"/><path d="M1252.8 191.4 C1251.6 192.5 1248.6 195.6 1246.1 197.7 C1243.6 199.7 1239.2 202.9 1237.8 203.9" fill="none" stroke="#f2f2f2" stroke-width="2.8" stroke-linecap="round" stroke-linejoin="round"/><path d="M1251.2 192.9 C1251.3 193.7 1251.6 196.0 1251.6 197.8 C1251.5 199.6 1251.1 202.8 1251.0 203.8" fill="none" stroke="#f2f2f2" stroke-width="1.9" stroke-linecap="round" stroke-linejoin="round"/><path d="M1251.1 202.6 C1251.3 203.3 1251.9 205.6 1252.6 206.8 C1253.3 208.1 1255.0 209.5 1255.5 210.1" fill="none" stroke="#f2f2f2" stroke-width="1.9" stroke-linecap="round" stroke-linejoin="round"/><path d="M1239.9 202.3 C1239.2 202.3 1237.4 202.2 1235.8 202.1 C1234.2 202.1 1231.4 202.1 1230.6 202.1" fill="none" stroke="#f2f2f2" stroke-width="1.9" stroke-linecap="round" stroke-linejoin="round"/><path d="M1236.4 202.1 C1235.8 201.7 1234.3 200.4 1233.1 199.4 C1231.9 198.4 1229.7 196.9 1229.0 196.4" fill="none" stroke="#f2f2f2" stroke-width="1.9" stroke-linecap="round" stroke-linejoin="round"/><path d="M1237.8 203.9 C1237.6 204.9 1237.1 206.7 1236.8 210.1 C1236.4 213.6 1235.9 222.3 1235.7 224.7" fill="none" stroke="#f2f2f2" stroke-width="3.1" stroke-linecap="round" stroke-linejoin="round"/><path d="M1237.0 208.7 C1237.4 209.5 1238.5 211.7 1239.3 213.3 C1240.1 214.9 1241.3 217.4 1241.7 218.2" fill="none" stroke="#f2f2f2" stroke-width="2.0" stroke-linecap="round" stroke-linejoin="round"/><path d="M1240.1 214.8 C1239.8 215.3 1238.9 216.4 1238.5 217.5 C1238.1 218.6 1237.9 220.9 1237.8 221.6" fill="none" stroke="#f2f2f2" stroke-width="1.9" stroke-linecap="round" stroke-linejoin="round"/><path d="M1238.9 212.4 C1239.4 212.6 1240.9 213.1 1241.8 213.4 C1242.7 213.8 1243.7 214.3 1244.1 214.5" fill="none" stroke="#f2f2f2" stroke-width="1.9" stroke-linecap="round" stroke-linejoin="round"/><path d="M1255.5 224.7 C1257.0 221.9 1261.9 214.3 1264.8 208.1 C1267.7 201.8 1270.7 193.3 1273.1 187.3 C1275.5 181.2 1278.3 174.3 1279.4 171.7" fill="none" stroke="#f2f2f2" stroke-width="4.0" stroke-linecap="round" stroke-linejoin="round"/><path d="M1270.3 194.3 C1270.2 193.4 1269.9 190.1 1269.7 188.4 C1269.5 186.8 1269.1 185.0 1269.0 184.4" fill="none" stroke="#f2f2f2" stroke-width="2.7" stroke-linecap="round" stroke-linejoin="round"/><path d="M1270.2 193.0 C1269.9 192.7 1269.3 191.8 1268.8 190.9 C1268.2 189.9 1267.2 188.1 1266.8 187.5" fill="none" stroke="#f2f2f2" stroke-width="1.9" stroke-linecap="round" stroke-linejoin="round"/><path d="M1258.5 219.3 C1258.4 218.7 1258.0 217.1 1258.0 215.6 C1258.0 214.1 1258.5 211.4 1258.5 210.5" fill="none" stroke="#f2f2f2" stroke-width="2.7" stroke-linecap="round" stroke-linejoin="round"/><path d="M1258.2 213.8 C1258.1 213.5 1257.8 212.5 1257.6 211.7 C1257.5 210.9 1257.3 209.4 1257.2 208.9" fill="none" stroke="#f2f2f2" stroke-width="1.9" stroke-linecap="round" stroke-linejoin="round"/><path d="M1260.6 216.4 C1263.1 213.6 1271.0 204.6 1275.2 199.7 C1279.4 194.9 1282.2 189.6 1285.6 187.3 C1289.0 184.9 1293.9 185.9 1295.6 185.6" fill="none" stroke="#f2f2f2" stroke-width="3.7" stroke-linecap="round" stroke-linejoin="round"/><path d="M1269.9 205.8 C1270.1 205.0 1270.7 203.0 1271.0 201.3 C1271.3 199.6 1271.5 196.7 1271.6 195.7" fill="none" stroke="#f2f2f2" stroke-width="2.5" stroke-linecap="round" stroke-linejoin="round"/><path d="M1271.4 197.8 C1271.6 197.4 1272.1 196.2 1272.5 195.6 C1272.8 195.0 1273.3 194.4 1273.4 194.2" fill="none" stroke="#f2f2f2" stroke-width="1.9" stroke-linecap="round" stroke-linejoin="round"/><path d="M1271.2 199.1 C1271.0 198.6 1270.7 197.6 1270.0 196.5 C1269.4 195.5 1267.7 193.2 1267.3 192.5" fill="none" stroke="#f2f2f2" stroke-width="1.9" stroke-linecap="round" stroke-linejoin="round"/><path d="M1269.0 208.1 C1271.7 207.0 1280.7 202.9 1285.6 201.8 C1290.4 200.8 1295.3 202.8 1298.1 201.8 C1300.8 200.8 1301.5 197.0 1302.2 196.0" fill="none" stroke="#f2f2f2" stroke-width="3.4" stroke-linecap="round" stroke-linejoin="round"/><path d="M1301.6 196.9 C1302.0 196.8 1302.9 196.8 1304.1 196.3 C1305.2 195.8 1307.8 194.5 1308.5 194.1" fill="none" stroke="#f2f2f2" stroke-width="2.3" stroke-linecap="round" stroke-linejoin="round"/><path d="M1303.3 196.5 C1303.4 196.3 1303.7 195.7 1304.2 195.3 C1304.7 194.8 1306.1 194.0 1306.5 193.8" fill="none" stroke="#f2f2f2" stroke-width="1.9" stroke-linecap="round" stroke-linejoin="round"/><path d="M1305.5 195.6 C1306.2 195.8 1308.3 196.7 1309.5 196.8 C1310.6 197.0 1312.0 196.4 1312.5 196.4" fill="none" stroke="#f2f2f2" stroke-width="1.9" stroke-linecap="round" stroke-linejoin="round"/><path d="M1258.6 228.8 C1261.3 226.8 1269.7 219.1 1275.2 216.4 C1280.7 213.6 1287.7 213.6 1291.8 212.2 C1296.0 210.8 1298.7 208.7 1300.1 208.1" fill="none" stroke="#f2f2f2" stroke-width="3.7" stroke-linecap="round" stroke-linejoin="round"/><path d="M1281.1 214.9 C1281.8 215.3 1283.9 216.0 1285.5 217.3 C1287.1 218.6 1289.7 221.6 1290.5 222.5" fill="none" stroke="#f2f2f2" stroke-width="2.5" stroke-linecap="round" stroke-linejoin="round"/><path d="M1288.7 220.6 C1289.2 220.7 1290.5 220.7 1291.8 221.3 C1293.1 222.0 1295.7 223.9 1296.5 224.4" fill="none" stroke="#f2f2f2" stroke-width="1.9" stroke-linecap="round" stroke-linejoin="round"/><path d="M1286.9 218.8 C1287.5 218.8 1289.0 219.1 1290.4 219.0 C1291.8 218.8 1294.4 218.0 1295.2 217.9" fill="none" stroke="#f2f2f2" stroke-width="1.9" stroke-linecap="round" stroke-linejoin="round"/><path d="M1265.7 223.5 C1266.7 223.4 1269.8 223.3 1271.8 223.1 C1273.9 222.9 1276.9 222.5 1277.9 222.4" fill="none" stroke="#f2f2f2" stroke-width="2.5" stroke-linecap="round" stroke-linejoin="round"/><path d="M1274.3 222.8 C1274.6 223.1 1275.3 224.2 1276.0 224.4 C1276.6 224.6 1277.9 224.2 1278.3 224.1" fill="none" stroke="#f2f2f2" stroke-width="1.9" stroke-linecap="round" stroke-linejoin="round"/><path d="M1262.7 237.1 C1265.8 235.4 1275.5 228.8 1281.4 226.8 C1287.3 224.7 1293.1 225.0 1298.1 224.7 C1303.0 224.4 1308.8 225.0 1310.9 225.1" fill="none" stroke="#f2f2f2" stroke-width="4.0" stroke-linecap="round" stroke-linejoin="round"/><path d="M1274.4 230.7 C1275.3 230.6 1278.1 230.8 1279.8 230.4 C1281.5 230.0 1283.7 228.6 1284.4 228.2" fill="none" stroke="#f2f2f2" stroke-width="2.7" stroke-linecap="round" stroke-linejoin="round"/><path d="M1276.9 230.5 C1277.5 230.1 1279.6 228.9 1280.8 228.0 C1281.9 227.2 1283.5 225.9 1284.1 225.5" fill="none" stroke="#f2f2f2" stroke-width="1.9" stroke-linecap="round" stroke-linejoin="round"/><path d="M1281.8 229.5 C1282.5 229.6 1284.6 230.2 1285.7 230.3 C1286.8 230.4 1287.9 229.9 1288.4 229.9" fill="none" stroke="#f2f2f2" stroke-width="1.9" stroke-linecap="round" stroke-linejoin="round"/><path d="M1258.6 253.8 C1261.3 253.8 1270.0 254.3 1275.2 253.8 C1280.4 253.2 1285.2 251.6 1289.7 250.6 C1294.2 249.7 1300.1 248.4 1302.2 247.9" fill="none" stroke="#f2f2f2" stroke-width="4.0" stroke-linecap="round" stroke-linejoin="round"/><path d="M1297.9 248.9 C1298.7 249.1 1301.4 249.2 1303.0 249.9 C1304.5 250.7 1306.5 252.8 1307.3 253.3" fill="none" stroke="#f2f2f2" stroke-width="2.7" stroke-linecap="round" stroke-linejoin="round"/><path d="M1302.3 249.8 C1302.6 250.2 1303.4 251.1 1304.1 252.0 C1304.8 252.9 1306.2 254.9 1306.7 255.5" fill="none" stroke="#f2f2f2" stroke-width="1.9" stroke-linecap="round" stroke-linejoin="round"/><path d="M1256.5 243.4 C1258.6 241.6 1265.2 237.5 1269.0 233.0 C1272.8 228.5 1277.6 219.1 1279.4 216.4" fill="none" stroke="#f2f2f2" stroke-width="3.4" stroke-linecap="round" stroke-linejoin="round"/><path d="M1259.7 240.7 C1259.9 239.7 1260.7 236.9 1260.9 235.0 C1261.1 233.0 1260.9 229.9 1260.9 228.9" fill="none" stroke="#f2f2f2" stroke-width="2.3" stroke-linecap="round" stroke-linejoin="round"/><path d="M1260.9 231.7 C1261.3 231.2 1262.2 229.8 1263.1 228.7 C1264.0 227.6 1265.7 225.7 1266.2 225.0" fill="none" stroke="#f2f2f2" stroke-width="1.9" stroke-linecap="round" stroke-linejoin="round"/><path d="M1260.4 240.1 C1260.7 239.2 1261.8 236.4 1262.2 234.8 C1262.6 233.2 1262.7 231.3 1262.8 230.6" fill="none" stroke="#f2f2f2" stroke-width="2.3" stroke-linecap="round" stroke-linejoin="round"/><path d="M1261.9 235.9 C1261.7 235.5 1261.3 234.6 1260.9 233.6 C1260.6 232.6 1259.8 230.4 1259.6 229.7" fill="none" stroke="#f2f2f2" stroke-width="1.9" stroke-linecap="round" stroke-linejoin="round"/><path d="M1262.6 232.3 C1262.2 231.7 1261.2 230.2 1260.4 229.0 C1259.6 227.9 1258.3 225.9 1257.9 225.3" fill="none" stroke="#f2f2f2" stroke-width="1.9" stroke-linecap="round" stroke-linejoin="round"/><path d="M1224.3 233.0 C1223.1 230.2 1219.3 221.2 1217.0 216.4 C1214.8 211.5 1211.8 206.0 1210.8 203.9" fill="none" stroke="#f2f2f2" stroke-width="3.4" stroke-linecap="round" stroke-linejoin="round"/><path d="M1222.8 229.6 C1221.9 229.0 1218.9 226.7 1217.4 225.9 C1216.0 225.1 1214.7 224.8 1214.2 224.6" fill="none" stroke="#f2f2f2" stroke-width="2.3" stroke-linecap="round" stroke-linejoin="round"/><path d="M1218.3 226.5 C1218.0 226.0 1217.2 224.7 1216.6 223.4 C1216.0 222.2 1214.9 219.6 1214.5 218.9" fill="none" stroke="#f2f2f2" stroke-width="1.9" stroke-linecap="round" stroke-linejoin="round"/><path d="M1219.8 227.5 C1219.5 226.9 1218.1 225.3 1218.0 223.8 C1218.0 222.4 1219.4 219.8 1219.7 219.0" fill="none" stroke="#f2f2f2" stroke-width="1.9" stroke-linecap="round" stroke-linejoin="round"/><path d="M1269.0 266.2 C1271.7 266.2 1279.4 264.5 1285.6 266.2 C1291.8 268.0 1302.9 274.9 1306.4 276.6" fill="none" stroke="#f2f2f2" stroke-width="4.0" stroke-linecap="round" stroke-linejoin="round"/><path d="M1296.9 271.9 C1297.2 272.6 1298.0 274.5 1298.7 275.9 C1299.3 277.2 1300.4 279.2 1300.7 279.9" fill="none" stroke="#f2f2f2" stroke-width="2.7" stroke-linecap="round" stroke-linejoin="round"/><path d="M1300.2 278.9 C1300.2 279.3 1300.3 280.4 1300.0 281.4 C1299.6 282.4 1298.4 284.4 1298.1 285.0" fill="none" stroke="#f2f2f2" stroke-width="1.9" stroke-linecap="round" stroke-linejoin="round"/><path d="M1297.9 274.2 C1298.3 274.4 1299.0 274.9 1299.8 275.3 C1300.6 275.7 1302.4 276.3 1302.9 276.5" fill="none" stroke="#f2f2f2" stroke-width="1.9" stroke-linecap="round" stroke-linejoin="round"/><path d="M1276.1 266.2 C1276.9 265.7 1279.0 263.9 1281.0 263.0 C1283.0 262.0 1286.8 260.9 1288.0 260.5" fill="none" stroke="#f2f2f2" stroke-width="2.7" stroke-linecap="round" stroke-linejoin="round"/><path d="M1279.9 263.7 C1280.1 263.2 1280.7 261.7 1281.3 260.7 C1282.0 259.6 1283.4 257.8 1283.8 257.2" fill="none" stroke="#f2f2f2" stroke-width="1.9" stroke-linecap="round" stroke-linejoin="round"/><path d="M1284.2 261.8 C1284.2 261.5 1284.1 260.4 1284.6 259.6 C1285.1 258.8 1286.7 257.5 1287.1 257.1" fill="none" stroke="#f2f2f2" stroke-width="1.9" stroke-linecap="round" stroke-linejoin="round"/><path d="M1229.5 233.0 C1230.9 230.9 1234.3 223.3 1237.8 220.5 C1241.3 217.7 1248.2 217.1 1250.3 216.4" fill="none" stroke="#f2f2f2" stroke-width="4.7" stroke-linecap="round" stroke-linejoin="round"/><path d="M1244.9 218.1 C1245.4 218.4 1246.9 219.0 1247.9 219.5 C1248.8 220.0 1250.3 221.0 1250.7 221.3" fill="none" stroke="#f2f2f2" stroke-width="3.1" stroke-linecap="round" stroke-linejoin="round"/><path d="M1250.2 221.0 C1250.7 220.8 1251.8 220.2 1252.8 219.9 C1253.8 219.7 1255.6 219.6 1256.1 219.6" fill="none" stroke="#f2f2f2" stroke-width="2.0" stroke-linecap="round" stroke-linejoin="round"/><path d="M1225.3 245.5 C1228.1 243.7 1236.4 237.1 1241.9 235.1 C1247.5 233.0 1255.8 233.3 1258.6 233.0" fill="none" stroke="#f2f2f2" stroke-width="4.0" stroke-linecap="round" stroke-linejoin="round"/><path d="M1231.6 241.5 C1232.4 241.5 1234.5 241.7 1236.3 241.1 C1238.1 240.6 1241.5 238.8 1242.5 238.3" fill="none" stroke="#f2f2f2" stroke-width="2.6" stroke-linecap="round" stroke-linejoin="round"/><path d="M1235.7 241.2 C1236.1 241.5 1237.3 242.8 1238.0 243.2 C1238.6 243.7 1239.3 244.0 1239.5 244.1" fill="none" stroke="#f2f2f2" stroke-width="1.9" stroke-linecap="round" stroke-linejoin="round"/><path d="M1234.0 241.3 C1234.7 241.6 1236.7 242.5 1238.1 243.1 C1239.4 243.6 1241.5 244.3 1242.2 244.6" fill="none" stroke="#f2f2f2" stroke-width="1.9" stroke-linecap="round" stroke-linejoin="round"/><path d="M1231.4 241.7 C1231.8 241.7 1233.2 241.8 1234.2 242.0 C1235.3 242.2 1237.1 242.7 1237.7 242.9" fill="none" stroke="#f2f2f2" stroke-width="2.6" stroke-linecap="round" stroke-linejoin="round"/><path d="M1235.8 242.4 C1236.1 243.0 1236.9 244.6 1237.4 245.7 C1238.0 246.8 1239.0 248.4 1239.3 249.0" fill="none" stroke="#f2f2f2" stroke-width="1.9" stroke-linecap="round" stroke-linejoin="round"/><path d="M1236.2 242.5 C1236.3 243.0 1236.5 244.6 1237.1 245.2 C1237.6 245.8 1239.1 246.0 1239.5 246.2" fill="none" stroke="#f2f2f2" stroke-width="1.9" stroke-linecap="round" stroke-linejoin="round"/><path d="M1227.4 262.1 C1230.5 260.0 1239.9 252.4 1246.1 249.6 C1252.3 246.8 1261.7 246.1 1264.8 245.5" fill="none" stroke="#f2f2f2" stroke-width="4.5" stroke-linecap="round" stroke-linejoin="round"/><path d="M1259.2 246.7 C1259.9 246.1 1261.7 244.3 1263.2 242.9 C1264.8 241.4 1267.7 238.8 1268.6 238.0" fill="none" stroke="#f2f2f2" stroke-width="3.0" stroke-linecap="round" stroke-linejoin="round"/><path d="M1266.2 240.2 C1266.8 240.2 1269.0 240.1 1270.1 239.9 C1271.2 239.8 1272.3 239.2 1272.8 239.1" fill="none" stroke="#f2f2f2" stroke-width="2.0" stroke-linecap="round" stroke-linejoin="round"/><path d="M1262.6 243.5 C1262.6 242.9 1262.6 240.8 1262.4 239.8 C1262.2 238.8 1261.8 238.1 1261.6 237.7" fill="none" stroke="#f2f2f2" stroke-width="2.0" stroke-linecap="round" stroke-linejoin="round"/><path d="M1235.7 278.7 C1238.1 276.6 1244.7 268.7 1250.3 266.2 C1255.8 263.8 1265.8 264.5 1269.0 264.2" fill="none" stroke="#f2f2f2" stroke-width="5.0" stroke-linecap="round" stroke-linejoin="round"/><path d="M1265.3 264.6 C1265.9 265.2 1267.9 267.2 1269.2 268.5 C1270.5 269.7 1272.5 271.4 1273.1 272.0" fill="none" stroke="#f2f2f2" stroke-width="3.3" stroke-linecap="round" stroke-linejoin="round"/><path d="M1270.8 269.9 C1271.3 270.1 1272.9 270.6 1273.6 270.8 C1274.4 271.0 1275.1 271.1 1275.3 271.2" fill="none" stroke="#f2f2f2" stroke-width="2.2" stroke-linecap="round" stroke-linejoin="round"/><path d="M1263.0 264.8 C1263.8 264.1 1266.0 261.9 1267.6 260.5 C1269.2 259.0 1271.8 256.8 1272.7 256.0" fill="none" stroke="#f2f2f2" stroke-width="3.3" stroke-linecap="round" stroke-linejoin="round"/><path d="M1264.6 263.3 C1264.5 262.9 1263.7 261.6 1263.9 260.6 C1264.1 259.5 1265.4 257.6 1265.7 257.1" fill="none" stroke="#f2f2f2" stroke-width="2.2" stroke-linecap="round" stroke-linejoin="round"/><path d="M1267.0 261.1 C1267.2 260.5 1268.2 258.9 1268.1 257.9 C1268.0 256.8 1266.7 255.2 1266.5 254.7" fill="none" stroke="#f2f2f2" stroke-width="2.2" stroke-linecap="round" stroke-linejoin="round"/><path d="M1258.6 282.5 C1262.0 283.2 1273.1 286.3 1279.4 286.6 C1285.6 287.0 1291.6 286.1 1296.0 284.5 C1300.3 283.0 1303.8 278.5 1305.3 277.3" fill="none" stroke="#f2f2f2" stroke-width="4.3" stroke-linecap="round" stroke-linejoin="round"/><path d="M1272.0 285.1 C1272.6 285.9 1274.5 288.3 1276.1 289.4 C1277.7 290.5 1280.7 291.5 1281.6 291.9" fill="none" stroke="#f2f2f2" stroke-width="2.9" stroke-linecap="round" stroke-linejoin="round"/><path d="M1279.8 291.0 C1280.1 291.0 1281.0 290.8 1281.8 290.8 C1282.5 290.8 1284.0 291.0 1284.4 291.0" fill="none" stroke="#f2f2f2" stroke-width="1.9" stroke-linecap="round" stroke-linejoin="round"/><path d="M1296.0 284.5 C1298.4 285.4 1306.4 289.1 1310.5 289.7 C1314.7 290.4 1319.2 288.5 1320.9 288.3" fill="none" stroke="#f2f2f2" stroke-width="3.4" stroke-linecap="round" stroke-linejoin="round"/><path d="M1314.9 289.1 C1315.4 289.5 1316.9 290.7 1318.3 291.5 C1319.7 292.4 1322.4 293.8 1323.3 294.3" fill="none" stroke="#f2f2f2" stroke-width="2.3" stroke-linecap="round" stroke-linejoin="round"/><path d="M1317.9 291.2 C1318.1 291.5 1318.8 291.9 1319.2 292.7 C1319.6 293.5 1319.9 295.4 1320.1 296.0" fill="none" stroke="#f2f2f2" stroke-width="1.9" stroke-linecap="round" stroke-linejoin="round"/><path d="M1317.0 288.8 C1317.3 288.4 1318.1 287.3 1318.9 286.1 C1319.8 285.0 1321.6 282.5 1322.2 281.8" fill="none" stroke="#f2f2f2" stroke-width="2.3" stroke-linecap="round" stroke-linejoin="round"/><path d="M1318.0 287.4 C1318.1 286.9 1318.5 285.5 1318.5 284.6 C1318.5 283.8 1317.9 282.7 1317.8 282.4" fill="none" stroke="#f2f2f2" stroke-width="1.9" stroke-linecap="round" stroke-linejoin="round"/><path d="M1262.7 297.0 C1266.5 298.1 1278.3 300.3 1285.6 303.2 C1292.9 306.2 1299.6 308.3 1306.4 314.7 C1313.1 321.1 1322.8 337.2 1326.1 341.7" fill="none" stroke="#f2f2f2" stroke-width="5.3" stroke-linecap="round" stroke-linejoin="round"/><path d="M1294.6 308.2 C1295.5 308.1 1298.0 307.8 1299.9 307.7 C1301.8 307.6 1305.0 307.6 1306.0 307.6" fill="none" stroke="#f2f2f2" stroke-width="3.5" stroke-linecap="round" stroke-linejoin="round"/><path d="M1298.5 307.8 C1299.0 307.6 1300.7 306.9 1301.5 306.2 C1302.2 305.5 1302.9 304.1 1303.2 303.7" fill="none" stroke="#f2f2f2" stroke-width="2.3" stroke-linecap="round" stroke-linejoin="round"/><path d="M1306.4 314.7 C1308.6 316.2 1316.4 319.4 1319.9 324.0 C1323.3 328.7 1325.9 339.6 1327.1 342.7" fill="none" stroke="#f2f2f2" stroke-width="3.4" stroke-linecap="round" stroke-linejoin="round"/><path d="M1312.1 318.7 C1312.5 319.4 1314.0 321.4 1314.5 322.9 C1315.0 324.4 1315.1 326.8 1315.2 327.6" fill="none" stroke="#f2f2f2" stroke-width="2.3" stroke-linecap="round" stroke-linejoin="round"/><path d="M1313.1 320.4 C1313.8 320.6 1315.9 321.3 1317.2 321.4 C1318.6 321.6 1320.4 321.2 1321.0 321.2" fill="none" stroke="#f2f2f2" stroke-width="1.9" stroke-linecap="round" stroke-linejoin="round"/><path d="M1314.0 322.0 C1314.5 322.0 1316.0 321.7 1316.9 322.2 C1317.9 322.7 1319.2 324.7 1319.7 325.2" fill="none" stroke="#f2f2f2" stroke-width="1.9" stroke-linecap="round" stroke-linejoin="round"/><path d="M1260.6 311.6 C1263.8 313.3 1272.8 318.5 1279.4 321.9 C1285.9 325.4 1292.5 329.0 1300.1 332.3 C1307.7 335.6 1320.9 340.1 1325.1 341.7" fill="none" stroke="#f2f2f2" stroke-width="5.0" stroke-linecap="round" stroke-linejoin="round"/><path d="M1292.7 328.6 C1293.2 329.6 1295.2 332.9 1296.0 334.6 C1296.8 336.2 1297.3 337.8 1297.6 338.5" fill="none" stroke="#f2f2f2" stroke-width="3.3" stroke-linecap="round" stroke-linejoin="round"/><path d="M1297.0 337.2 C1297.1 338.0 1297.4 340.5 1297.2 342.0 C1297.0 343.4 1296.3 345.3 1296.1 346.0" fill="none" stroke="#f2f2f2" stroke-width="2.2" stroke-linecap="round" stroke-linejoin="round"/><path d="M1269.0 328.2 C1272.4 330.3 1283.5 336.1 1289.7 340.6 C1296.0 345.2 1303.6 352.8 1306.4 355.2" fill="none" stroke="#f2f2f2" stroke-width="4.3" stroke-linecap="round" stroke-linejoin="round"/><path d="M1303.3 352.5 C1303.6 353.2 1304.9 355.2 1305.5 356.5 C1306.0 357.8 1306.5 359.6 1306.7 360.2" fill="none" stroke="#f2f2f2" stroke-width="2.9" stroke-linecap="round" stroke-linejoin="round"/><path d="M1305.8 357.7 C1306.2 358.2 1307.2 359.9 1308.0 360.8 C1308.9 361.7 1310.3 362.6 1310.7 362.9" fill="none" stroke="#f2f2f2" stroke-width="1.9" stroke-linecap="round" stroke-linejoin="round"/><path d="M1304.6 354.9 C1305.3 355.3 1307.7 356.3 1308.8 357.1 C1310.0 357.8 1311.0 359.0 1311.4 359.4" fill="none" stroke="#f2f2f2" stroke-width="1.9" stroke-linecap="round" stroke-linejoin="round"/><path d="M1278.2 333.7 C1278.8 333.7 1280.3 333.6 1281.6 333.3 C1282.9 333.0 1285.4 332.1 1286.1 331.9" fill="none" stroke="#f2f2f2" stroke-width="2.9" stroke-linecap="round" stroke-linejoin="round"/><path d="M1279.5 333.6 C1279.9 333.1 1281.2 331.4 1281.9 330.7 C1282.6 330.1 1283.5 329.8 1283.8 329.6" fill="none" stroke="#f2f2f2" stroke-width="1.9" stroke-linecap="round" stroke-linejoin="round"/><path d="M1282.5 333.0 C1283.0 333.1 1284.2 333.3 1285.4 333.4 C1286.7 333.4 1289.2 333.4 1290.0 333.4" fill="none" stroke="#f2f2f2" stroke-width="1.9" stroke-linecap="round" stroke-linejoin="round"/><path d="M1248.2 317.8 C1249.6 320.2 1254.8 326.5 1256.5 332.3 C1258.2 338.2 1258.2 349.7 1258.6 353.1" fill="none" stroke="#f2f2f2" stroke-width="5.9" stroke-linecap="round" stroke-linejoin="round"/><path d="M1239.9 328.2 C1240.9 329.9 1244.4 336.1 1246.1 338.6 C1247.8 341.0 1249.6 342.0 1250.3 342.7" fill="none" stroke="#f2f2f2" stroke-width="4.7" stroke-linecap="round" stroke-linejoin="round"/><path d="M1249.3 341.8 C1250.3 342.1 1253.3 343.3 1255.3 343.5 C1257.3 343.8 1260.1 343.3 1261.1 343.3" fill="none" stroke="#f2f2f2" stroke-width="3.1" stroke-linecap="round" stroke-linejoin="round"/><path d="M1257.5 343.4 C1258.1 343.8 1260.0 344.4 1260.9 345.5 C1261.9 346.5 1262.7 349.0 1263.0 349.7" fill="none" stroke="#f2f2f2" stroke-width="2.0" stroke-linecap="round" stroke-linejoin="round"/><path d="M1253.6 343.0 C1253.9 343.4 1254.5 344.4 1255.3 345.3 C1256.0 346.2 1257.7 348.0 1258.1 348.5" fill="none" stroke="#f2f2f2" stroke-width="2.0" stroke-linecap="round" stroke-linejoin="round"/><path d="M1248.5 340.9 C1249.1 341.0 1251.2 341.2 1252.4 341.3 C1253.7 341.3 1255.4 341.2 1256.0 341.2" fill="none" stroke="#f2f2f2" stroke-width="3.1" stroke-linecap="round" stroke-linejoin="round"/><path d="M1251.0 341.1 C1251.3 340.7 1252.2 339.5 1253.1 338.7 C1254.0 338.0 1255.8 337.0 1256.4 336.6" fill="none" stroke="#f2f2f2" stroke-width="2.0" stroke-linecap="round" stroke-linejoin="round"/><path d="M1249.3 341.0 C1249.5 340.7 1249.8 339.7 1250.3 339.2 C1250.8 338.8 1252.1 338.5 1252.4 338.3" fill="none" stroke="#f2f2f2" stroke-width="2.0" stroke-linecap="round" stroke-linejoin="round"/><path d="M1258.6 332.3 C1260.3 334.1 1266.9 340.1 1269.0 342.7 C1271.0 345.3 1270.7 347.1 1271.0 347.9" fill="none" stroke="#f2f2f2" stroke-width="4.0" stroke-linecap="round" stroke-linejoin="round"/><path d="M1263.1 336.8 C1264.0 337.0 1266.8 337.7 1268.6 337.9 C1270.4 338.1 1273.0 338.0 1273.8 338.0" fill="none" stroke="#f2f2f2" stroke-width="2.7" stroke-linecap="round" stroke-linejoin="round"/><path d="M1267.0 337.6 C1267.6 337.4 1269.4 336.9 1270.7 336.6 C1272.1 336.2 1274.4 335.7 1275.2 335.6" fill="none" stroke="#f2f2f2" stroke-width="1.9" stroke-linecap="round" stroke-linejoin="round"/><path d="M1270.4 346.4 C1271.2 346.6 1273.7 346.7 1275.0 347.5 C1276.3 348.3 1277.7 350.7 1278.3 351.3" fill="none" stroke="#f2f2f2" stroke-width="2.7" stroke-linecap="round" stroke-linejoin="round"/><path d="M1272.5 346.9 C1272.8 346.7 1273.4 346.3 1274.0 345.8 C1274.7 345.2 1276.2 344.1 1276.6 343.8" fill="none" stroke="#f2f2f2" stroke-width="1.9" stroke-linecap="round" stroke-linejoin="round"/><path d="M1281.4 338.6 C1283.2 339.6 1289.0 343.2 1291.8 344.8 C1294.6 346.4 1297.0 347.4 1298.1 347.9" fill="none" stroke="#f2f2f2" stroke-width="3.7" stroke-linecap="round" stroke-linejoin="round"/><path d="M1290.3 343.9 C1290.9 344.7 1293.0 346.7 1294.3 348.7 C1295.6 350.7 1297.5 354.6 1298.1 355.7" fill="none" stroke="#f2f2f2" stroke-width="2.5" stroke-linecap="round" stroke-linejoin="round"/><path d="M1293.8 348.1 C1293.7 348.5 1293.7 350.0 1293.6 350.7 C1293.5 351.5 1293.1 352.2 1293.1 352.5" fill="none" stroke="#f2f2f2" stroke-width="1.9" stroke-linecap="round" stroke-linejoin="round"/><path d="M1212.9 282.5 C1215.6 283.9 1223.9 286.6 1229.5 290.8 C1235.0 294.9 1243.3 304.6 1246.1 307.4" fill="none" stroke="#f2f2f2" stroke-width="5.0" stroke-linecap="round" stroke-linejoin="round"/><path d="M1241.9 303.2 C1242.8 303.5 1245.5 304.2 1247.1 304.7 C1248.8 305.2 1251.0 306.0 1251.8 306.2" fill="none" stroke="#f2f2f2" stroke-width="3.3" stroke-linecap="round" stroke-linejoin="round"/><path d="M1249.4 305.4 C1249.9 305.2 1251.7 304.4 1252.8 304.2 C1253.8 303.9 1255.1 304.1 1255.6 304.0" fill="none" stroke="#f2f2f2" stroke-width="2.2" stroke-linecap="round" stroke-linejoin="round"/><path d="M1243.0 303.6 C1243.5 303.4 1244.8 302.9 1245.5 302.6 C1246.3 302.4 1247.4 302.3 1247.8 302.2" fill="none" stroke="#f2f2f2" stroke-width="2.2" stroke-linecap="round" stroke-linejoin="round"/><path d="M1225.2 288.6 C1226.2 288.3 1229.7 287.2 1231.5 286.5 C1233.3 285.9 1235.2 285.1 1235.9 284.8" fill="none" stroke="#f2f2f2" stroke-width="3.3" stroke-linecap="round" stroke-linejoin="round"/><path d="M1232.4 286.2 C1232.5 285.8 1232.7 284.6 1232.9 283.9 C1233.1 283.2 1233.4 282.5 1233.5 282.2" fill="none" stroke="#f2f2f2" stroke-width="2.2" stroke-linecap="round" stroke-linejoin="round"/><path d="M1235.1 285.1 C1235.2 284.8 1235.5 283.5 1236.0 282.9 C1236.4 282.3 1237.4 281.8 1237.7 281.6" fill="none" stroke="#f2f2f2" stroke-width="2.2" stroke-linecap="round" stroke-linejoin="round"/><path d="M1217.0 299.1 C1219.8 301.2 1228.8 307.4 1233.6 311.6 C1238.5 315.7 1244.0 321.9 1246.1 324.0" fill="none" stroke="#f2f2f2" stroke-width="5.0" stroke-linecap="round" stroke-linejoin="round"/><path d="M1240.4 318.4 C1240.5 319.0 1240.6 320.9 1241.0 322.1 C1241.4 323.2 1242.4 324.7 1242.7 325.2" fill="none" stroke="#f2f2f2" stroke-width="3.3" stroke-linecap="round" stroke-linejoin="round"/><path d="M1241.4 322.9 C1241.3 323.3 1240.7 324.9 1240.7 325.6 C1240.6 326.4 1241.1 327.0 1241.1 327.2" fill="none" stroke="#f2f2f2" stroke-width="2.2" stroke-linecap="round" stroke-linejoin="round"/><path d="M1229.5 278.3 C1232.6 279.0 1242.6 279.7 1248.2 282.5 C1253.7 285.2 1260.3 292.9 1262.7 294.9" fill="none" stroke="#f2f2f2" stroke-width="6.0" stroke-linecap="round" stroke-linejoin="round"/><path d="M1237.8 294.9 C1240.6 296.3 1250.3 299.8 1254.4 303.2 C1258.6 306.7 1261.3 313.6 1262.7 315.7" fill="none" stroke="#f2f2f2" stroke-width="5.0" stroke-linecap="round" stroke-linejoin="round"/><path d="M1246.9 299.5 C1247.3 300.4 1248.6 303.4 1249.2 304.7 C1249.7 306.0 1250.1 307.1 1250.3 307.6" fill="none" stroke="#f2f2f2" stroke-width="3.3" stroke-linecap="round" stroke-linejoin="round"/><path d="M1249.7 306.0 C1250.1 306.3 1251.3 306.9 1252.2 307.7 C1253.1 308.6 1254.4 310.4 1254.9 311.0" fill="none" stroke="#f2f2f2" stroke-width="2.2" stroke-linecap="round" stroke-linejoin="round"/><path d="M1252.7 302.4 C1253.6 302.3 1255.9 302.4 1257.7 301.9 C1259.5 301.5 1262.6 300.1 1263.6 299.7" fill="none" stroke="#f2f2f2" stroke-width="3.3" stroke-linecap="round" stroke-linejoin="round"/><path d="M1256.7 302.0 C1257.1 301.8 1258.6 301.5 1259.1 300.9 C1259.7 300.4 1259.8 299.0 1259.9 298.6" fill="none" stroke="#f2f2f2" stroke-width="2.2" stroke-linecap="round" stroke-linejoin="round"/><path d="M1260.3 301.0 C1260.4 300.3 1260.6 298.4 1261.3 297.1 C1262.0 295.8 1263.8 293.9 1264.3 293.2" fill="none" stroke="#f2f2f2" stroke-width="2.2" stroke-linecap="round" stroke-linejoin="round"/><path d="M1107.9 235.1 C1107.6 231.9 1106.3 222.3 1105.8 216.4 C1105.4 210.5 1105.3 202.5 1105.2 199.7" fill="none" stroke="#f2f2f2" stroke-width="7.0" stroke-linecap="round" stroke-linejoin="round"/><path d="M1092.3 257.9 C1093.4 255.2 1096.8 246.8 1098.6 241.3 C1100.3 235.8 1102.0 227.4 1102.7 224.7" fill="none" stroke="#f2f2f2" stroke-width="6.0" stroke-linecap="round" stroke-linejoin="round"/><path d="M1077.8 278.3 C1076.1 281.1 1071.2 289.7 1067.4 294.9 C1063.6 300.1 1057.0 307.1 1054.9 309.5" fill="none" stroke="#f2f2f2" stroke-width="6.0" stroke-linecap="round" stroke-linejoin="round"/><path d="M1079.9 301.2 C1077.8 305.0 1071.9 317.4 1067.4 324.0 C1062.9 330.6 1055.3 337.9 1052.9 340.6" fill="none" stroke="#f2f2f2" stroke-width="6.5" stroke-linecap="round" stroke-linejoin="round"/><path d="M1081.9 321.9 C1080.2 325.8 1075.4 338.9 1071.6 344.8 C1067.7 350.7 1061.2 355.2 1059.1 357.3" fill="none" stroke="#f2f2f2" stroke-width="5.5" stroke-linecap="round" stroke-linejoin="round"/><path d="M1067.6 348.7 C1067.5 349.4 1067.3 351.6 1066.8 352.6 C1066.4 353.6 1065.4 354.4 1065.1 354.7" fill="none" stroke="#f2f2f2" stroke-width="3.6" stroke-linecap="round" stroke-linejoin="round"/><path d="M1065.3 354.5 C1065.2 354.9 1064.9 356.4 1064.7 357.3 C1064.6 358.2 1064.5 359.3 1064.4 359.7" fill="none" stroke="#f2f2f2" stroke-width="2.4" stroke-linecap="round" stroke-linejoin="round"/><path d="M1067.0 352.0 C1067.1 352.4 1067.4 353.9 1067.7 354.5 C1067.9 355.2 1068.3 355.5 1068.4 355.7" fill="none" stroke="#f2f2f2" stroke-width="2.4" stroke-linecap="round" stroke-linejoin="round"/><path d="M1076.5 333.8 C1075.8 334.2 1073.6 334.8 1072.0 335.8 C1070.4 336.8 1067.8 339.1 1066.9 339.7" fill="none" stroke="#f2f2f2" stroke-width="3.6" stroke-linecap="round" stroke-linejoin="round"/><path d="M1075.2 334.4 C1074.8 334.9 1073.5 336.3 1072.7 337.4 C1071.8 338.5 1070.6 340.3 1070.2 340.8" fill="none" stroke="#f2f2f2" stroke-width="2.4" stroke-linecap="round" stroke-linejoin="round"/><path d="M1054.9 309.5 C1053.2 310.9 1048.0 315.7 1044.5 317.8 C1041.1 319.9 1035.9 321.3 1034.2 321.9" fill="none" stroke="#f2f2f2" stroke-width="5.6" stroke-linecap="round" stroke-linejoin="round"/><path d="M1052.9 340.6 C1050.8 342.4 1044.2 348.3 1040.4 351.0 C1036.6 353.8 1031.7 356.2 1030.0 357.3" fill="none" stroke="#f2f2f2" stroke-width="5.6" stroke-linecap="round" stroke-linejoin="round"/><path d="M1225.3 235.1 C1227.7 234.7 1235.0 231.3 1239.9 233.0 C1244.7 234.7 1250.6 239.9 1254.4 245.5 C1258.2 251.0 1261.3 262.8 1262.7 266.2" fill="none" stroke="#f2f2f2" stroke-width="14.0" stroke-linecap="round" stroke-linejoin="round"/><path d="M1254.4 245.5 C1255.5 251.6 1258.9 271.5 1260.6 282.5 C1262.4 293.5 1264.8 302.2 1264.8 311.6 C1264.8 320.9 1261.3 334.1 1260.6 338.6" fill="none" stroke="#f2f2f2" stroke-width="8.0" stroke-linecap="round" stroke-linejoin="round"/><path d="M1237.8 224.7 C1239.9 225.0 1246.8 225.4 1250.3 226.8 C1253.7 228.1 1257.2 231.9 1258.6 233.0" fill="none" stroke="#f2f2f2" stroke-width="6.0" stroke-linecap="round" stroke-linejoin="round"/><path d="M1237.8 301.2 C1239.9 304.6 1247.1 314.0 1250.3 321.9 C1253.4 329.9 1255.5 344.5 1256.5 349.0" fill="none" stroke="#f2f2f2" stroke-width="6.0" stroke-linecap="round" stroke-linejoin="round"/></g><g filter="url(#hbody)"><rect x="804" y="100.4" width="758.6" height="361.4" fill="none"/><path d="M1099.6 197.7 C1101.3 195.2 1107.7 194.1 1110.0 197.2 C1112.3 200.4 1111.7 210.4 1113.1 216.4 C1114.5 222.3 1118.0 226.1 1118.3 233.0 C1118.7 239.9 1116.1 249.7 1115.2 257.9 C1114.3 266.2 1115.9 273.5 1113.1 282.5 C1110.3 291.4 1103.8 304.6 1098.6 311.6 C1093.4 318.5 1086.8 324.0 1081.9 324.0 C1077.1 324.0 1072.3 317.8 1069.5 311.6 C1066.7 305.3 1064.8 294.2 1065.3 286.6 C1065.8 279.1 1070.0 273.1 1072.6 266.2 C1075.2 259.4 1077.6 251.7 1080.9 245.5 C1084.2 239.2 1089.2 234.4 1092.3 228.8 C1095.5 223.3 1098.4 217.4 1099.6 212.2 C1100.8 207.0 1097.9 200.2 1099.6 197.7 Z" fill="url(#hg)"/><path d="M1175.5 176.9 C1182.4 176.4 1195.9 177.2 1202.5 179.0 C1209.0 180.7 1211.7 183.1 1214.9 187.3 C1218.1 191.4 1220.4 197.7 1221.6 203.9 C1222.8 210.1 1221.8 217.7 1222.2 224.7 C1222.7 231.6 1224.3 236.9 1224.3 245.5 C1224.3 254.0 1222.0 267.8 1222.2 276.2 C1222.4 284.7 1223.6 289.2 1225.3 296.0 C1227.1 302.7 1230.3 311.0 1232.6 316.8 C1234.8 322.5 1236.6 326.1 1238.8 330.3 C1241.1 334.4 1243.6 337.5 1246.1 341.7 C1248.6 345.8 1252.3 349.1 1254.0 355.2 C1255.7 361.3 1256.8 370.3 1256.5 378.1 C1256.2 385.8 1255.5 399.2 1252.3 401.9 C1249.2 404.7 1241.9 395.0 1237.8 394.7 C1233.6 394.3 1231.2 398.1 1227.4 399.9 C1223.6 401.6 1218.4 402.5 1214.9 405.1 C1211.5 407.7 1207.3 411.6 1206.6 415.5 C1205.9 419.3 1208.9 424.6 1210.8 427.9 C1212.7 431.2 1218.6 433.6 1218.1 435.2 C1217.5 436.8 1211.3 435.2 1207.7 437.3 C1204.0 439.4 1199.4 445.8 1196.2 447.7 C1193.1 449.5 1191.0 450.2 1189.0 448.3 C1186.9 446.4 1185.5 441.0 1183.8 436.2 C1182.0 431.5 1180.3 424.6 1178.6 419.6 C1176.8 414.6 1177.4 409.2 1173.4 406.1 C1169.4 403.1 1160.6 402.9 1154.7 401.3 C1148.8 399.8 1143.6 397.9 1138.1 396.8 C1132.5 395.6 1128.0 396.9 1121.4 394.7 C1114.8 392.4 1104.7 388.4 1098.6 383.2 C1092.4 378.1 1087.8 369.2 1084.4 363.5 C1081.0 357.8 1079.0 353.5 1078.2 349.0 C1077.4 344.5 1079.1 342.7 1079.9 336.5 C1080.7 330.3 1081.3 320.6 1083.0 311.6 C1084.7 302.6 1087.1 290.0 1090.3 282.5 C1093.4 274.9 1098.4 272.4 1101.7 266.2 C1105.0 260.1 1107.9 251.7 1110.0 245.5 C1112.1 239.2 1112.3 234.0 1114.2 228.8 C1116.1 223.6 1118.1 219.1 1121.4 214.3 C1124.7 209.4 1129.7 203.9 1133.9 199.7 C1138.1 195.6 1141.9 192.3 1146.4 189.4 C1150.9 186.4 1156.1 184.2 1160.9 182.1 C1165.8 180.0 1168.5 177.4 1175.5 176.9 Z" fill="url(#hg)"/><ellipse cx="1225.3" cy="367.7" rx="30" ry="34" fill="#a8a8a8"/><ellipse cx="1194.2" cy="423.8" rx="12" ry="22" fill="#adadad"/><ellipse cx="1146.4" cy="353.1" rx="34" ry="28" fill="#f7f7f7"/><ellipse cx="1119.4" cy="307.4" rx="18" ry="30" fill="#e6e6e6"/><path d="M1121.4 216.4 C1120.0 220.5 1115.2 233.0 1113.1 241.3 C1111.0 249.6 1111.4 257.3 1109.0 266.2 C1106.5 275.2 1101.3 285.3 1098.6 294.9 C1095.8 304.6 1093.4 319.2 1092.3 324.0" fill="none" stroke="#808080" stroke-width="3.5" stroke-linecap="round" stroke-linejoin="round"/><path d="M1179.6 197.7 C1182.7 191.1 1190.7 193.5 1196.2 193.5 C1201.8 193.5 1208.5 193.9 1212.9 197.7 C1217.2 201.5 1220.1 209.1 1222.2 216.4 C1224.3 223.6 1226.2 233.0 1225.3 241.3 C1224.5 249.6 1220.8 259.4 1217.0 266.2 C1213.2 273.1 1209.4 279.8 1202.5 282.5 C1195.5 285.2 1180.0 285.9 1175.5 282.5 C1171.0 279.1 1175.1 270.3 1175.5 262.1 C1175.8 253.8 1176.8 243.7 1177.5 233.0 C1178.2 222.3 1176.5 204.2 1179.6 197.7 Z" fill="#bdbdbd"/><path d="M1123.5 266.2 C1124.5 262.4 1127.0 250.6 1129.7 243.4 C1132.5 236.1 1136.0 229.2 1140.1 222.6 C1144.3 216.0 1148.8 209.1 1154.7 203.9 C1160.6 198.7 1168.5 193.9 1175.5 191.4 C1182.4 189.0 1190.3 188.3 1196.2 189.4 C1202.1 190.4 1208.4 196.3 1210.8 197.7" fill="none" stroke="#bdbdbd" stroke-width="44.0" stroke-linecap="round" stroke-linejoin="round"/><path d="M1123.5 266.2 C1124.5 262.4 1127.0 250.6 1129.7 243.4 C1132.5 236.1 1136.0 229.2 1140.1 222.6 C1144.3 216.0 1148.8 209.1 1154.7 203.9 C1160.6 198.7 1168.5 193.9 1175.5 191.4 C1182.4 189.0 1190.3 188.3 1196.2 189.4 C1202.1 190.4 1208.4 196.3 1210.8 197.7" fill="none" stroke="#d9d9d9" stroke-width="30.0" stroke-linecap="round" stroke-linejoin="round"/><path d="M1123.5 266.2 C1124.5 262.4 1127.0 250.6 1129.7 243.4 C1132.5 236.1 1136.0 229.2 1140.1 222.6 C1144.3 216.0 1148.8 209.1 1154.7 203.9 C1160.6 198.7 1168.5 193.9 1175.5 191.4 C1182.4 189.0 1190.3 188.3 1196.2 189.4 C1202.1 190.4 1208.4 196.3 1210.8 197.7" fill="none" stroke="#f5f5f5" stroke-width="14.0" stroke-linecap="round" stroke-linejoin="round"/><path d="M1154.7 257.9 C1155.0 254.5 1155.0 243.4 1156.8 237.1 C1158.5 230.9 1161.3 224.5 1165.1 220.5 C1168.9 216.5 1174.8 213.9 1179.6 213.2 C1184.5 212.6 1191.7 215.8 1194.2 216.4" fill="none" stroke="#6b6b6b" stroke-width="4.0" stroke-linecap="round" stroke-linejoin="round"/><path d="M1194.2 131.2 C1196.9 128.0 1201.8 122.0 1205.6 121.6 C1209.4 121.3 1215.6 125.8 1217.0 129.1 C1218.4 132.4 1215.2 137.1 1213.9 141.6 C1212.6 146.1 1210.1 151.6 1209.1 156.1 C1208.2 160.6 1209.0 164.1 1208.3 168.6 C1207.5 173.1 1209.7 180.7 1204.5 183.1 C1199.4 185.5 1182.0 185.2 1177.5 183.1 C1173.1 181.0 1177.1 174.5 1177.9 170.6 C1178.8 166.8 1181.6 163.7 1182.7 160.3 C1183.9 156.8 1183.8 153.2 1184.8 149.9 C1185.8 146.6 1187.4 143.6 1189.0 140.5 C1190.5 137.4 1191.4 134.3 1194.2 131.2 Z" fill="#e6e6e6"/><path d="M1187.9 162.3 C1189.3 163.0 1193.5 166.1 1196.2 166.1 C1199.0 166.1 1203.2 163.0 1204.5 162.3" fill="none" stroke="#999999" stroke-width="2.5" stroke-linecap="round" stroke-linejoin="round"/></g><path d="M1163.0 226.8 C1165.1 223.6 1171.3 221.6 1173.4 222.6 C1175.5 223.6 1175.6 228.5 1175.5 233.0 C1175.3 237.5 1174.1 245.8 1172.3 249.6 C1170.6 253.4 1167.1 255.0 1165.1 255.8 C1163.0 256.7 1160.6 257.2 1159.9 254.8 C1159.2 252.4 1160.4 246.0 1160.9 241.3 C1161.4 236.6 1160.9 229.9 1163.0 226.8 Z" fill="#000"/><path d="M1093.4 250.0 C1094.9 248.7 1100.0 247.2 1101.7 247.9 C1103.4 248.7 1104.5 253.0 1103.8 254.8 C1103.1 256.6 1099.4 258.8 1097.5 259.0 C1095.6 259.1 1093.0 257.3 1092.3 255.8 C1091.6 254.4 1091.8 251.3 1093.4 250.0 Z" fill="#000"/><path d="M1210.4 274.2 C1211.6 273.6 1217.3 276.6 1220.1 279.4 C1223.0 282.1 1227.4 289.0 1227.4 290.8 C1227.4 292.5 1222.6 291.1 1220.1 289.7 C1217.7 288.4 1214.5 285.1 1212.9 282.5 C1211.2 279.9 1209.2 274.7 1210.4 274.2 Z" fill="#000"/><ellipse cx="1200.4" cy="175.2" rx="2.2" ry="3.6" fill="#d8d8d8"/><ellipse cx="1206.2" cy="211.2" rx="4.6" ry="3" transform="rotate(-35 1206.2 211.2)" fill="#d4d4d4"/><path d="M1159.6 112.6 h6.4" stroke="#bbb" stroke-width="1"/><circle cx="1159.4" cy="112.6" r="1.4" fill="none" stroke="#bbb" stroke-width="0.7"/><path d="M1178.6 116.4 l3.6 -7.6 l3.6 7.6 z" fill="#8a8a8a"/><path d="M1200 111.6 l3.4 -2.6 l3.4 2.6 v1 h-6.8z M1201.2 113.4 h4.4 v2.6 h-4.4z" fill="#9a9a9a"/><rect x="1514.2" y="347.8" width="47.6" height="31.4" fill="#000" stroke="#8a8a12" stroke-width="0.9"/><rect x="1517.6" y="341.8" width="1.2" height="1" fill="#a60"/><path d="M1532 355 l3 3 l1.5 -5 l2.5 4 l3 -3 l0.5 5 l4 1.5 l-2.5 3.5 l3 4 l-4.5 1 l-1 5 l-3.5 -2.5 l-2 3.5 l-2 -4.5 l-4.5 -0.5 l2 -4.5 l-3 -4.5 z" fill="#c9792a" filter="url(#mb)"/></svg>
<svg class="a c" style="left:804px;top:480.6px" width="758.6" height="359.4" viewBox="804 480.6 758.6 359.4"><defs><clipPath id="ctc"><rect x="936.2" y="480.8" width="449.4" height="357.2"/></clipPath>
<filter id="cb" x="-5%" y="-5%" width="110%" height="110%"><feGaussianBlur stdDeviation="0.9"/></filter>
<filter id="cb2" x="-5%" y="-5%" width="110%" height="110%"><feGaussianBlur stdDeviation="2.5"/></filter>
<filter id="cn" x="0" y="0" width="100%" height="100%"><feTurbulence type="fractalNoise" baseFrequency="0.8" numOctaves="1" seed="2"/><feColorMatrix type="matrix" values="0 0 0 0 0.5  0 0 0 0 0.5  0 0 0 0 0.5  0.35 0 0 0 -0.1"/><feComposite in2="SourceGraphic" operator="in"/></filter>
</defs><g clip-path="url(#ctc)"><g filter="url(#cb)"><path d="M936.2 480.8 L1385.6 480.8 L1385.7 546.6 L1375.3 561.1 L1360.8 586.1 L1350.8 602.7 L1356.6 623.5 L1367.0 644.2 L1374.3 660.0 L1378.4 680.8 L1375.3 705.7 L1367.0 720.3 L1359.5 726.9 L1361.8 753.5 L1363.9 784.7 L1364.5 838.7 L972.6 838.7 L968.4 784.7 L967.4 743.1 L969.5 701.6 L974.7 660.0 L976.8 594.4 L974.7 565.3 L967.4 546.6 L950.8 535.1 L936.2 534.0 Z" fill="#808080" stroke-linejoin="round"/><path d="M979.9 594.4 C979.6 605.3 979.4 642.1 978.2 660.0 C977.0 677.9 973.8 687.7 972.6 701.6 C971.4 715.4 970.9 729.3 970.7 743.1 C970.6 757.0 970.7 768.7 971.6 784.7 C972.4 800.6 975.0 829.7 975.7 838.7" fill="none" stroke="#6b6b6b" stroke-width="9.0" stroke-linecap="round" stroke-linejoin="round"/><path d="M1353.5 604.8 C1355.1 609.9 1359.7 624.6 1362.9 635.9 C1366.0 647.2 1371.0 660.5 1372.2 672.5 C1373.4 684.4 1372.4 698.4 1370.1 707.8 C1367.9 717.1 1360.3 715.8 1358.7 728.6 C1357.1 741.4 1359.9 766.3 1360.4 784.7 C1360.8 803.0 1361.1 829.7 1361.2 838.7" fill="none" stroke="#6b6b6b" stroke-width="7.0" stroke-linecap="round" stroke-linejoin="round"/><path d="M1325.5 660.0 C1328.9 653.1 1358.7 656.5 1367.0 660.0 C1375.3 663.5 1374.5 673.2 1375.3 680.8 C1376.2 688.4 1375.0 698.8 1372.2 705.7 C1369.4 712.6 1362.3 718.5 1358.7 722.3 C1355.1 726.1 1352.5 732.0 1350.4 728.6 C1348.3 725.1 1350.4 713.0 1346.2 701.6 C1342.1 690.1 1322.0 666.9 1325.5 660.0 Z" fill="#757575" /><path d="M971.6 509.2 C977.4 501.2 1004.8 504.0 1017.3 513.3 C1029.7 522.7 1042.9 546.9 1046.4 565.3 C1049.8 583.6 1042.9 608.2 1038.1 623.5 C1033.2 638.7 1023.9 651.2 1017.3 656.7 C1010.7 662.2 1002.7 665.7 998.6 656.7 C994.4 647.7 995.1 618.6 992.3 602.7 C989.6 586.7 985.4 576.7 981.9 561.1 C978.5 545.5 965.7 517.1 971.6 509.2 Z" fill="#878787" /><path d="M1283.9 569.4 C1289.4 562.2 1324.1 569.4 1337.9 567.4 C1351.8 565.3 1364.9 552.5 1367.0 557.0 C1369.1 561.5 1353.9 583.3 1350.4 594.4 C1346.9 605.4 1344.8 613.1 1346.2 623.5 C1347.6 633.8 1362.2 651.2 1358.7 656.7 C1355.2 662.2 1334.5 664.3 1325.5 656.7 C1316.5 649.1 1311.6 625.5 1304.7 611.0 C1297.7 596.4 1278.4 576.7 1283.9 569.4 Z" fill="#858585" /><path d="M1117.0 502.9 C1130.5 496.7 1196.7 496.7 1210.5 502.9 C1224.4 509.2 1205.3 529.9 1200.1 540.3 C1194.9 550.7 1186.3 559.0 1179.4 565.3 C1172.4 571.5 1165.5 577.7 1158.6 577.7 C1151.6 577.7 1142.6 571.5 1137.8 565.3 C1132.9 559.0 1132.9 550.7 1129.5 540.3 C1126.0 529.9 1103.5 509.2 1117.0 502.9 Z" fill="#808080" /><path d="M936.2 480.8 C1011.1 477.6 1310.7 472.6 1385.6 480.8 C1460.5 489.0 1395.7 520.0 1385.7 529.9 C1375.7 539.9 1345.2 542.8 1325.5 540.3 C1305.7 537.9 1284.6 523.7 1267.3 515.4 C1250.0 507.1 1243.1 495.3 1221.6 490.5 C1200.0 485.6 1158.7 484.2 1137.8 486.3 C1116.9 488.4 1110.1 495.3 1096.2 502.9 C1082.4 510.6 1072.0 531.3 1054.7 532.0 C1037.4 532.7 1011.0 511.9 992.3 507.1 C973.6 502.2 951.8 504.1 942.5 502.9 C933.1 501.8 937.2 503.7 936.2 500.0 C935.2 496.3 861.3 484.0 936.2 480.8 Z" fill="#6b6b6b" filter="url(#cb2)"/><path d="M1019.4 749.4 C1032.2 740.3 1055.7 731.7 1075.5 730.6 C1095.2 729.6 1117.0 738.6 1137.8 743.1 C1158.6 747.6 1184.4 753.9 1200.1 757.7 C1215.8 761.5 1214.5 763.9 1231.9 766.0 C1249.4 768.1 1288.4 767.7 1304.7 770.1 C1321.0 772.6 1324.8 769.1 1329.6 780.5 C1334.5 791.9 1390.0 829.0 1333.8 838.7 C1277.6 848.4 1048.2 847.7 992.3 838.7 C936.5 829.7 994.1 799.6 998.6 784.7 C1003.1 769.8 1006.5 758.4 1019.4 749.4 Z" fill="#717171" filter="url(#cb2)"/><path d="M1271.4 772.2 C1279.0 767.4 1299.1 772.9 1308.8 776.4 C1318.5 779.8 1325.8 782.6 1329.6 793.0 C1333.4 803.4 1342.1 831.1 1331.7 838.7 C1321.3 846.3 1278.7 844.2 1267.3 838.7 C1255.8 833.2 1262.4 816.5 1263.1 805.5 C1263.8 794.4 1263.8 777.1 1271.4 772.2 Z" fill="#666666" filter="url(#cb2)"/><path d="M1112.9 521.6 C1107.3 521.6 1102.5 523.7 1096.2 527.9 C1090.0 532.0 1081.0 540.3 1075.5 546.6 C1069.9 552.8 1066.8 558.7 1063.0 565.3 C1059.2 571.9 1056.1 578.4 1052.6 586.1 C1049.1 593.7 1045.3 602.7 1042.2 611.0 C1039.1 619.3 1036.3 628.1 1033.9 635.9 C1031.5 643.7 1029.4 652.5 1027.7 657.9 C1025.9 663.3 1023.8 664.2 1023.5 668.3 C1023.2 672.5 1024.3 677.7 1026.0 682.9 C1027.7 688.1 1030.5 696.4 1033.9 699.5 C1037.3 702.6 1042.2 702.9 1046.4 701.6 C1050.5 700.2 1057.4 698.1 1058.8 691.2 C1060.2 684.2 1054.0 665.5 1054.7 660.0 C1055.4 654.5 1059.5 660.9 1063.0 657.9 C1066.5 655.0 1071.3 647.9 1075.5 642.2 C1079.6 636.4 1083.4 628.6 1087.9 623.5 C1092.4 618.3 1098.3 615.8 1102.5 611.0 C1106.6 606.1 1110.4 599.9 1112.9 594.4 C1115.3 588.8 1115.1 582.6 1117.0 577.7 C1118.9 572.9 1121.3 569.4 1124.3 565.3 C1127.2 561.1 1132.8 557.0 1134.7 552.8 C1136.6 548.6 1136.6 544.5 1135.7 540.3 C1134.8 536.2 1133.3 531.0 1129.5 527.9 C1125.7 524.8 1118.4 521.6 1112.9 521.6 Z" fill="#050505" /><path d="M1206.4 522.7 C1199.0 524.1 1194.6 530.5 1189.7 536.2 C1184.9 541.9 1179.7 551.4 1177.3 557.0 C1174.8 562.5 1173.5 564.6 1175.2 569.4 C1176.9 574.3 1184.5 579.8 1187.7 586.1 C1190.8 592.3 1192.2 600.6 1193.9 606.8 C1195.6 613.1 1198.3 617.2 1198.1 623.5 C1197.8 629.7 1195.5 637.1 1192.5 644.2 C1189.5 651.4 1179.3 658.8 1180.0 666.2 C1180.7 673.7 1191.4 681.5 1196.6 689.1 C1201.8 696.7 1208.2 704.3 1211.2 711.9 C1214.1 719.6 1213.6 728.2 1214.3 734.8 C1215.0 741.4 1213.1 746.2 1215.3 751.4 C1217.6 756.7 1218.1 764.0 1227.8 766.4 C1237.5 768.8 1260.7 765.4 1273.5 766.0 C1286.3 766.6 1295.4 768.0 1304.7 770.1 C1314.0 772.3 1326.4 785.1 1329.2 778.9 C1332.0 772.6 1324.0 747.3 1321.3 732.7 C1318.6 718.1 1315.8 703.3 1313.0 691.2 C1310.2 679.0 1307.1 669.2 1304.7 660.0 C1302.3 650.8 1300.9 644.8 1298.4 635.9 C1296.0 627.1 1293.2 615.8 1290.1 606.8 C1287.0 597.8 1283.5 588.8 1279.7 581.9 C1275.9 575.0 1272.5 571.5 1267.3 565.3 C1262.1 559.0 1254.1 550.7 1248.6 544.5 C1243.0 538.3 1241.1 531.5 1234.0 527.9 C1227.0 524.2 1213.7 521.3 1206.4 522.7 Z" fill="#050505" /><path d="M1126.4 587.1 C1129.3 585.0 1137.3 585.9 1139.9 588.1 C1142.4 590.4 1142.2 596.4 1141.5 600.6 C1140.8 604.8 1138.6 611.3 1135.7 613.1 C1132.8 614.8 1126.5 613.1 1124.3 611.0 C1122.0 608.9 1121.9 604.6 1122.2 600.6 C1122.6 596.6 1123.4 589.2 1126.4 587.1 Z" fill="#050505" /><path d="M1027.7 742.1 C1029.4 740.9 1033.5 736.4 1038.1 735.2 C1042.6 734.0 1050.2 735.2 1054.7 734.8 C1059.2 734.4 1063.3 733.1 1065.1 732.7" fill="none" stroke="#080808" stroke-width="3.0" stroke-linecap="round" stroke-linejoin="round"/><path d="M1102.5 668.3 C1097.1 677.7 1104.2 702.1 1105.6 714.0 C1107.0 726.0 1105.4 735.1 1110.8 740.0 C1116.1 744.9 1124.6 742.1 1137.8 743.5 C1151.0 744.9 1177.8 748.3 1189.7 748.3 C1201.7 748.3 1205.3 747.9 1209.5 743.5 C1213.7 739.2 1215.6 730.0 1215.1 722.3 C1214.6 714.6 1210.2 705.0 1206.4 697.4 C1202.5 689.8 1196.3 682.5 1191.8 676.6 C1187.3 670.7 1178.3 666.1 1179.4 662.1 C1180.4 658.1 1201.5 654.5 1198.1 652.5 C1194.6 650.6 1168.6 649.6 1158.6 650.5 C1148.5 651.4 1147.1 655.0 1137.8 657.9 C1128.4 660.9 1107.8 659.0 1102.5 668.3 Z" fill="#a8a8a8" /><path d="M1137.8 672.5 C1146.1 670.0 1169.7 671.8 1179.4 676.6 C1189.0 681.5 1194.6 692.9 1196.0 701.6 C1197.4 710.2 1193.9 722.7 1187.7 728.6 C1181.4 734.5 1167.6 738.6 1158.6 736.9 C1149.6 735.2 1138.5 725.8 1133.6 718.2 C1128.8 710.6 1128.8 698.8 1129.5 691.2 C1130.2 683.5 1129.5 674.9 1137.8 672.5 Z" fill="#b5b5b5" filter="url(#cb2)"/><path d="M1065.1 695.3 C1070.6 691.2 1089.7 682.5 1096.2 687.0 C1102.8 691.5 1103.9 713.7 1104.5 722.3 C1105.2 731.0 1105.2 737.6 1100.4 739.0 C1095.5 740.3 1081.7 735.2 1075.5 730.6 C1069.2 726.1 1064.7 717.8 1063.0 711.9 C1061.3 706.1 1059.5 699.5 1065.1 695.3 Z" fill="#757575" /><path d="M1075.5 635.9 C1078.9 632.6 1085.2 630.0 1092.1 628.6 C1099.0 627.3 1109.4 626.8 1117.0 628.0 C1124.6 629.2 1132.9 632.5 1137.8 635.9 C1142.6 639.3 1145.4 643.7 1146.1 648.4 C1146.8 653.1 1146.8 660.1 1141.9 664.2 C1137.1 668.2 1126.0 671.4 1117.0 672.5 C1108.0 673.5 1095.2 672.5 1087.9 670.4 C1080.6 668.3 1076.1 663.7 1073.4 660.0 C1070.6 656.3 1071.0 652.4 1071.3 648.4 C1071.6 644.4 1072.0 639.2 1075.5 635.9 Z" fill="#c2c2c2" /><path d="M1153.4 623.5 C1156.3 620.7 1162.9 619.6 1169.0 619.3 C1175.0 619.0 1184.7 619.3 1189.7 621.4 C1194.8 623.5 1197.7 628.0 1199.1 631.8 C1200.5 635.6 1201.3 640.9 1198.1 644.2 C1194.8 647.5 1185.9 651.0 1179.4 651.5 C1172.8 652.0 1163.2 649.9 1158.6 647.4 C1153.9 644.8 1152.2 639.9 1151.3 635.9 C1150.4 631.9 1150.4 626.2 1153.4 623.5 Z" fill="#c2c2c2" /><path d="M1154.4 586.1 C1157.4 582.4 1165.5 580.5 1171.0 580.9 C1176.6 581.2 1184.1 584.5 1187.7 588.1 C1191.2 591.8 1192.9 598.5 1192.2 602.7 C1191.5 606.8 1188.1 611.4 1183.5 613.1 C1178.9 614.7 1169.8 614.4 1164.8 612.6 C1159.8 610.9 1155.1 607.1 1153.4 602.7 C1151.6 598.2 1151.5 589.7 1154.4 586.1 Z" fill="#a3a3a3" /><path d="M1169.0 614.1 C1170.7 613.9 1177.6 613.2 1179.4 613.1" fill="none" stroke="#f7f7f7" stroke-width="1.6" stroke-linecap="round" stroke-linejoin="round"/><path d="M1160.6 561.1 C1163.8 557.7 1170.3 557.7 1173.1 561.1 C1175.9 564.6 1180.4 578.4 1177.3 581.9 C1174.2 585.4 1157.2 585.4 1154.4 581.9 C1151.6 578.4 1157.5 564.6 1160.6 561.1 Z" fill="#8f8f8f" /><path d="M1087.9 631.8 C1089.0 628.3 1092.8 616.2 1094.2 611.0 C1095.5 605.8 1095.9 602.3 1096.2 600.6" fill="none" stroke="#bdbdbd" stroke-width="7.0" stroke-linecap="round" stroke-linejoin="round"/><path d="M1096.2 602.7 C1098.0 600.6 1103.9 593.7 1106.6 590.2 C1109.4 586.7 1111.8 583.3 1112.9 581.9" fill="none" stroke="#b8b8b8" stroke-width="3.5" stroke-linecap="round" stroke-linejoin="round"/><path d="M1094.2 602.7 C1093.1 599.9 1087.6 591.6 1087.9 586.1 C1088.3 580.5 1094.5 576.0 1096.2 569.4 C1098.0 562.8 1098.0 550.4 1098.3 546.6" fill="none" stroke="#adadad" stroke-width="2.2" stroke-linecap="round" stroke-linejoin="round"/><path d="M1096.2 569.4 C1098.0 568.7 1103.2 569.1 1106.6 565.3 C1110.1 561.5 1115.1 551.1 1117.0 546.6 C1118.9 542.1 1117.9 539.6 1118.1 538.3" fill="none" stroke="#a8a8a8" stroke-width="2.0" stroke-linecap="round" stroke-linejoin="round"/><path d="M1090.0 594.4 C1087.6 592.3 1080.0 584.3 1075.5 581.9 C1071.0 579.5 1065.1 580.2 1063.0 579.8" fill="none" stroke="#a8a8a8" stroke-width="2.0" stroke-linecap="round" stroke-linejoin="round"/><path d="M1087.9 611.0 C1085.5 610.6 1078.2 609.9 1073.4 608.9 C1068.5 607.9 1061.3 605.4 1058.8 604.8" fill="none" stroke="#a3a3a3" stroke-width="2.0" stroke-linecap="round" stroke-linejoin="round"/><path d="M1083.8 631.8 C1081.0 632.5 1072.3 633.8 1067.1 635.9 C1061.9 638.0 1055.0 642.8 1052.6 644.2" fill="none" stroke="#adadad" stroke-width="2.6" stroke-linecap="round" stroke-linejoin="round"/><path d="M1075.5 640.1 C1074.4 642.2 1071.3 647.8 1069.2 652.5 C1067.1 657.3 1066.8 660.8 1063.0 668.3 C1059.2 675.8 1049.1 692.6 1046.4 697.4" fill="none" stroke="#b2b2b2" stroke-width="4.0" stroke-linecap="round" stroke-linejoin="round"/><path d="M1071.3 672.5 C1069.9 675.9 1066.5 684.9 1063.0 693.2 C1059.5 701.6 1052.6 717.5 1050.5 722.3" fill="none" stroke="#9e9e9e" stroke-width="3.4" stroke-linecap="round" stroke-linejoin="round"/><path d="M1108.7 571.5 C1110.1 569.8 1113.9 563.5 1117.0 561.1 C1120.1 558.7 1125.7 557.7 1127.4 557.0" fill="none" stroke="#999999" stroke-width="1.6" stroke-linecap="round" stroke-linejoin="round"/><path d="M1206.4 650.5 C1206.7 646.0 1208.4 631.4 1208.4 623.5 C1208.4 615.5 1206.7 606.1 1206.4 602.7" fill="none" stroke="#bdbdbd" stroke-width="6.5" stroke-linecap="round" stroke-linejoin="round"/><path d="M1207.4 613.1 C1205.8 608.6 1200.6 594.7 1198.1 586.1 C1195.5 577.4 1192.9 565.3 1191.8 561.1" fill="none" stroke="#b2b2b2" stroke-width="2.4" stroke-linecap="round" stroke-linejoin="round"/><path d="M1207.4 606.8 C1209.0 603.4 1214.5 593.7 1216.8 586.1 C1219.0 578.4 1220.4 568.7 1220.9 561.1 C1221.4 553.5 1220.0 543.8 1219.9 540.3" fill="none" stroke="#b8b8b8" stroke-width="2.6" stroke-linecap="round" stroke-linejoin="round"/><path d="M1218.8 577.7 C1221.6 575.0 1230.6 566.3 1235.5 561.1 C1240.3 555.9 1245.8 549.0 1247.9 546.6" fill="none" stroke="#adadad" stroke-width="2.0" stroke-linecap="round" stroke-linejoin="round"/><path d="M1209.5 623.5 C1212.1 620.0 1219.7 610.3 1225.1 602.7 C1230.4 595.1 1237.5 584.7 1241.7 577.7 C1245.8 570.8 1248.6 563.9 1250.0 561.1" fill="none" stroke="#b8b8b8" stroke-width="3.0" stroke-linecap="round" stroke-linejoin="round"/><path d="M1212.6 635.9 C1215.4 633.5 1223.0 626.2 1229.2 621.4 C1235.5 616.5 1246.5 609.3 1250.0 606.8" fill="none" stroke="#b8b8b8" stroke-width="3.0" stroke-linecap="round" stroke-linejoin="round"/><path d="M1210.5 642.2 C1214.0 642.2 1225.0 641.8 1231.3 642.2 C1237.6 642.5 1241.9 643.5 1248.6 644.2 C1255.3 644.9 1267.6 646.0 1271.4 646.3" fill="none" stroke="#b2b2b2" stroke-width="2.6" stroke-linecap="round" stroke-linejoin="round"/><path d="M1223.6 602.7 C1226.8 601.3 1236.5 597.1 1242.3 594.4 C1248.2 591.6 1256.2 587.4 1259.0 586.1" fill="none" stroke="#a8a8a8" stroke-width="2.0" stroke-linecap="round" stroke-linejoin="round"/><path d="M1225.7 594.4 C1227.1 591.2 1231.3 581.2 1234.0 575.7 C1236.8 570.1 1241.0 563.5 1242.3 561.1" fill="none" stroke="#a3a3a3" stroke-width="1.8" stroke-linecap="round" stroke-linejoin="round"/><path d="M1217.4 577.7 C1218.1 574.3 1221.2 563.2 1221.6 557.0 C1221.9 550.7 1219.8 543.1 1219.5 540.3" fill="none" stroke="#a3a3a3" stroke-width="1.8" stroke-linecap="round" stroke-linejoin="round"/><path d="M1240.3 627.6 C1242.3 626.6 1248.9 622.8 1252.7 621.4 C1256.5 620.0 1261.4 619.6 1263.1 619.3" fill="none" stroke="#b8b8b8" stroke-width="2.4" stroke-linecap="round" stroke-linejoin="round"/><path d="M1217.4 691.2 C1219.1 691.9 1224.8 693.9 1227.8 695.3 C1230.7 696.7 1233.9 698.8 1235.1 699.5" fill="none" stroke="#b8b8b8" stroke-width="2.6" stroke-linecap="round" stroke-linejoin="round"/><path d="M1256.9 695.3 C1259.3 696.7 1267.3 700.5 1271.4 703.6 C1275.6 706.8 1279.2 711.1 1281.8 714.0 C1284.4 717.0 1286.1 720.1 1287.0 721.3" fill="none" stroke="#bdbdbd" stroke-width="3.0" stroke-linecap="round" stroke-linejoin="round"/><path d="M1277.7 707.8 C1279.4 707.3 1285.3 705.5 1288.1 704.7 C1290.8 703.8 1293.2 702.9 1294.3 702.6" fill="none" stroke="#a8a8a8" stroke-width="1.8" stroke-linecap="round" stroke-linejoin="round"/><path d="M1213.2 714.0 C1216.7 715.1 1227.1 717.5 1234.0 720.3 C1241.0 723.0 1247.5 726.8 1254.8 730.6 C1262.1 734.5 1273.9 741.0 1277.7 743.1" fill="none" stroke="#a8a8a8" stroke-width="3.0" stroke-linecap="round" stroke-linejoin="round"/><path d="M1265.2 720.3 C1266.2 721.3 1269.4 724.2 1271.4 726.5 C1273.5 728.7 1276.6 732.6 1277.7 733.8" fill="none" stroke="#adadad" stroke-width="2.6" stroke-linecap="round" stroke-linejoin="round"/><path d="M1267.3 743.1 C1270.0 744.5 1279.0 748.8 1283.9 751.4 C1288.7 754.0 1294.3 757.5 1296.4 758.7" fill="none" stroke="#808080" stroke-width="1.4" stroke-linecap="round" stroke-linejoin="round"/><path d="M1125.3 490.5 C1127.4 486.1 1134.7 484.2 1141.9 483.2 C1149.2 482.2 1159.6 483.4 1169.0 484.2 C1178.3 485.1 1191.5 486.0 1198.1 488.4 C1204.6 490.8 1208.4 493.6 1208.4 498.8 C1208.4 504.0 1200.5 513.3 1198.1 519.6 C1195.6 525.8 1197.0 529.6 1193.9 536.2 C1190.8 542.8 1184.2 554.9 1179.4 559.0 C1174.5 563.2 1168.6 564.2 1164.8 561.1 C1161.0 558.0 1159.3 546.6 1156.5 540.3 C1153.7 534.1 1152.7 528.9 1148.2 523.7 C1143.7 518.5 1133.3 514.7 1129.5 509.2 C1125.7 503.6 1123.2 494.8 1125.3 490.5 Z" fill="#ededed" /><path d="M1158.6 491.5 C1160.5 488.7 1166.4 487.2 1171.0 487.4 C1175.7 487.5 1184.2 489.8 1186.6 492.5 C1189.0 495.3 1188.2 501.2 1185.6 504.0 C1183.0 506.7 1175.4 509.2 1171.0 509.2 C1166.7 509.2 1161.7 506.9 1159.6 504.0 C1157.5 501.0 1156.7 494.3 1158.6 491.5 Z" fill="#292929" /><path d="M1153.4 522.7 C1156.3 523.4 1165.0 526.8 1171.0 526.8 C1177.1 526.8 1186.6 523.4 1189.7 522.7" fill="none" stroke="#999999" stroke-width="2.0" stroke-linecap="round" stroke-linejoin="round"/><path d="M1156.5 533.1 C1159.1 533.8 1166.9 537.2 1172.1 537.2 C1177.3 537.2 1185.1 533.8 1187.7 533.1" fill="none" stroke="#999999" stroke-width="2.0" stroke-linecap="round" stroke-linejoin="round"/><path d="M1075.5 542.4 C1078.6 538.6 1087.9 525.8 1094.2 519.6 C1100.4 513.3 1107.0 508.3 1112.9 505.0 C1118.7 501.7 1126.7 500.7 1129.5 499.8" fill="none" stroke="#f5f5f5" stroke-width="9.5" stroke-linecap="round" stroke-linejoin="round"/><path d="M1207.0 509.2 C1210.5 510.6 1220.9 512.6 1227.8 517.5 C1234.7 522.3 1242.3 531.0 1248.6 538.3 C1254.8 545.5 1262.4 557.3 1265.2 561.1" fill="none" stroke="#f2f2f2" stroke-width="9.5" stroke-linecap="round" stroke-linejoin="round"/><circle cx="1024.5" cy="484.2" r="24" fill="#999999" stroke="#f2f2f2" stroke-width="5"/><ellipse cx="1326.5" cy="502.9" rx="26" ry="25" fill="#858585" stroke="#f5f5f5" stroke-width="5"/><ellipse cx="1068.8" cy="491.5" rx="5.5" ry="9.0" fill="#f2f2f2" transform="rotate(-20 1068.8 491.5)"/><ellipse cx="1068.8" cy="491.5" rx="3.7" ry="6.2" fill="#c7c7c7" transform="rotate(-20 1068.8 491.5)"/><ellipse cx="1086.9" cy="489.4" rx="6.0" ry="14.0" fill="#f2f2f2" transform="rotate(-35 1086.9 489.4)"/><ellipse cx="1257.9" cy="500.9" rx="7.0" ry="15.0" fill="#f2f2f2" transform="rotate(25 1257.9 500.9)"/><ellipse cx="1276.6" cy="509.2" rx="8.0" ry="9.5" fill="#f2f2f2" transform="rotate(20 1276.6 509.2)"/><ellipse cx="1276.6" cy="509.2" rx="6.2" ry="6.7" fill="#c7c7c7" transform="rotate(20 1276.6 509.2)"/><ellipse cx="1252.7" cy="522.7" rx="4.5" ry="12.0" fill="#ededed" transform="rotate(-35 1252.7 522.7)"/><ellipse cx="1241.7" cy="490.9" rx="3.0" ry="3.0" fill="#f7f7f7" transform="rotate(0 1241.7 490.9)"/><path d="M1325.5 549.7 C1328.9 547.3 1339.3 540.2 1346.2 535.1 C1353.2 530.1 1360.4 524.4 1367.0 519.6 C1373.6 514.7 1382.6 508.3 1385.7 506.1" fill="none" stroke="#f7f7f7" stroke-width="6.5" stroke-linecap="round" stroke-linejoin="round"/><path d="M1344.2 540.3 C1346.2 537.4 1353.5 531.7 1356.6 522.7 C1359.7 513.7 1361.8 492.4 1362.9 486.3" fill="none" stroke="#ededed" stroke-width="3.6" stroke-linecap="round" stroke-linejoin="round"/><path d="M1375.3 482.2 C1377.1 481.5 1384.0 478.7 1385.7 478.0" fill="none" stroke="#f2f2f2" stroke-width="4.0" stroke-linecap="round" stroke-linejoin="round"/><path d="M1293.2 550.7 C1294.6 548.0 1299.7 545.7 1304.7 544.5 C1309.7 543.3 1319.9 542.1 1323.4 543.5 C1326.8 544.8 1325.5 549.9 1325.5 552.8 C1325.5 555.7 1325.5 559.0 1323.4 561.1 C1321.3 563.2 1316.1 563.9 1313.0 565.3 C1309.9 566.7 1307.4 570.1 1304.7 569.4 C1301.9 568.7 1298.3 564.2 1296.4 561.1 C1294.5 558.0 1291.9 553.5 1293.2 550.7 Z" fill="#ffffff" /><path d="M1277.7 543.5 C1280.1 542.9 1289.8 540.9 1292.2 540.3" fill="none" stroke="#f2f2f2" stroke-width="1.6" stroke-linecap="round" stroke-linejoin="round"/><ellipse cx="1273.5" cy="536.6" rx="2.0" ry="2.0" fill="#f7f7f7" transform="rotate(0 1273.5 536.6)"/><g filter="url(#cb2)"><path d="M1326.5 559.5 C1328.7 559.2 1335.7 558.9 1340.0 558.0 C1344.3 557.1 1350.4 554.5 1352.5 553.8" fill="none" stroke="#1a1a1a" stroke-width="7.0" stroke-linecap="round" stroke-linejoin="round"/></g><path d="M1269.4 557.0 C1272.5 553.2 1291.9 544.8 1296.4 546.6 C1300.9 548.3 1299.5 563.5 1296.4 567.4 C1293.2 571.2 1282.2 571.2 1277.7 569.4 C1273.2 567.7 1266.2 560.8 1269.4 557.0 Z" fill="#b8b8b8" filter="url(#cb2)"/><ellipse cx="1054.3" cy="571.5" rx="6.5" ry="14.5" fill="#f2f2f2" transform="rotate(14 1054.3 571.5)"/><ellipse cx="1054.3" cy="571.5" rx="4.7" ry="11.7" fill="#c7c7c7" transform="rotate(14 1054.3 571.5)"/><ellipse cx="1030.6" cy="625.5" rx="4.6" ry="12.5" fill="#f2f2f2" transform="rotate(10 1030.6 625.5)"/><ellipse cx="1030.6" cy="625.5" rx="2.8" ry="9.7" fill="#c7c7c7" transform="rotate(10 1030.6 625.5)"/><ellipse cx="1017.7" cy="670.4" rx="4.6" ry="11.0" fill="#f2f2f2" transform="rotate(8 1017.7 670.4)"/><ellipse cx="1017.7" cy="670.4" rx="2.8" ry="8.2" fill="#c7c7c7" transform="rotate(8 1017.7 670.4)"/><ellipse cx="1007.9" cy="708.2" rx="5.0" ry="11.5" fill="#f2f2f2" transform="rotate(6 1007.9 708.2)"/><ellipse cx="1007.9" cy="708.2" rx="3.2" ry="8.7" fill="#c7c7c7" transform="rotate(6 1007.9 708.2)"/><ellipse cx="1001.7" cy="739.0" rx="5.4" ry="12.5" fill="#f2f2f2" transform="rotate(8 1001.7 739.0)"/><ellipse cx="1001.7" cy="739.0" rx="3.6" ry="9.7" fill="#c7c7c7" transform="rotate(8 1001.7 739.0)"/><ellipse cx="996.1" cy="772.6" rx="5.8" ry="15.5" fill="#f2f2f2" transform="rotate(7 996.1 772.6)"/><ellipse cx="996.1" cy="772.6" rx="4.0" ry="12.7" fill="#c7c7c7" transform="rotate(7 996.1 772.6)"/><ellipse cx="993.4" cy="811.3" rx="5.4" ry="15.0" fill="#f2f2f2" transform="rotate(5 993.4 811.3)"/><ellipse cx="993.4" cy="811.3" rx="3.6" ry="12.2" fill="#c7c7c7" transform="rotate(5 993.4 811.3)"/><ellipse cx="1285.6" cy="587.7" rx="5.6" ry="12.5" fill="#f2f2f2" transform="rotate(-16 1285.6 587.7)"/><ellipse cx="1285.6" cy="587.7" rx="3.8" ry="9.7" fill="#c7c7c7" transform="rotate(-16 1285.6 587.7)"/><ellipse cx="1301.6" cy="633.4" rx="4.0" ry="11.5" fill="#f2f2f2" transform="rotate(-8 1301.6 633.4)"/><ellipse cx="1301.6" cy="633.4" rx="2.2" ry="8.7" fill="#c7c7c7" transform="rotate(-8 1301.6 633.4)"/><ellipse cx="1309.2" cy="672.5" rx="3.6" ry="10.5" fill="#f2f2f2" transform="rotate(-6 1309.2 672.5)"/><ellipse cx="1309.2" cy="672.5" rx="1.8" ry="7.7" fill="#c7c7c7" transform="rotate(-6 1309.2 672.5)"/><ellipse cx="1318.8" cy="713.0" rx="4.2" ry="10.5" fill="#f2f2f2" transform="rotate(-6 1318.8 713.0)"/><ellipse cx="1318.8" cy="713.0" rx="2.4" ry="7.7" fill="#c7c7c7" transform="rotate(-6 1318.8 713.0)"/><ellipse cx="1325.9" cy="742.7" rx="4.8" ry="12.0" fill="#f2f2f2" transform="rotate(-6 1325.9 742.7)"/><ellipse cx="1325.9" cy="742.7" rx="3.0" ry="9.2" fill="#c7c7c7" transform="rotate(-6 1325.9 742.7)"/><ellipse cx="1337.3" cy="776.8" rx="6.4" ry="15.5" fill="#f2f2f2" transform="rotate(-8 1337.3 776.8)"/><ellipse cx="1337.3" cy="776.8" rx="4.6" ry="12.7" fill="#c7c7c7" transform="rotate(-8 1337.3 776.8)"/><ellipse cx="1340.4" cy="812.7" rx="5.4" ry="18.0" fill="#f2f2f2" transform="rotate(-6 1340.4 812.7)"/><ellipse cx="1340.4" cy="812.7" rx="3.6" ry="15.2" fill="#c7c7c7" transform="rotate(-6 1340.4 812.7)"/><ellipse cx="1342.1" cy="835.6" rx="3.0" ry="3.0" fill="#e6e6e6" transform="rotate(0 1342.1 835.6)"/><ellipse cx="1216.3" cy="832.9" rx="2.2" ry="2.6" fill="#f7f7f7" transform="rotate(0 1216.3 832.9)"/></g></g><g filter="url(#cb)"><rect x="1515" y="723" width="46.4" height="38.6" fill="#808080"/><path d="M1523 753 Q1522 734 1534 727 Q1539 733 1538 744 L1532 754 Z" fill="#0a0a0a"/><path d="M1542 728 Q1551 726 1554 738 L1555 757 L1544 754 Q1547 744 1542 740 Z" fill="#0a0a0a"/><path d="M1531 746 L1541 738 L1546 746 L1543 754 L1532 755 Z" fill="#d4d4d4"/><path d="M1515 723 h4 v12 h-4z M1557 733 h4.4 v28.6 h-4.4z" fill="#000"/><path d="M1521 757 Q1519 740 1530 726 M1558 757 Q1558 740 1549 727" stroke="#e8e8e8" stroke-width="0.9" stroke-dasharray="1.6 1.2" fill="none"/><path d="M1538 724 L1558 726 L1556 731 L1545 729 Z" fill="#e0e0e0"/></g><rect x="1514.2" y="722.6" width="47.6" height="39.4" fill="none" stroke="#8a8a12" stroke-width="0.9"/></svg>
<span class="t" style="left:807.30px;top:102.89px;font-size:14.9px;color:#f4f400;">Image compressed 7.5:1</span>
<span class="t" style="left:807.30px;top:120.55px;font-size:17.9px;color:#1b9c9e;">Study Date: 5/2/2016</span>
<span class="t" style="left:807.30px;top:140.79px;font-size:17.85px;color:#1b9c9e;">CT CHEST ANGIO W/WO CONTRAST</span>
<span class="t" style="right:39.00px;top:102.72px;font-size:15.1px;color:#f4f400;">Image is partially visible</span>
<span class="t" style="right:39.00px;top:120.55px;font-size:17.9px;color:#27d3d6;">DOB: 1/1/1980</span>
<span class="t" style="right:39.00px;top:140.75px;font-size:17.9px;color:#27d3d6;">M</span>
<span class="t" style="left:807.30px;top:274.43px;font-size:14.5px;color:#27d3d6;">RAI</span>
<span class="t" style="right:39.00px;top:274.43px;font-size:14.5px;color:#27d3d6;">LPS</span>
<span class="t" style="left:1169.20px;top:103.03px;font-size:14.5px;color:#27d3d6;">SRA</span>
<span class="t" style="left:1172.60px;top:447.23px;font-size:14.5px;color:#27d3d6;">ILP</span>
<span class="t" style="left:807.30px;top:394.32px;font-size:15.1px;color:#1b9c9e;">SL:</span>
<span class="t" style="left:807.30px;top:411.67px;font-size:15.1px;color:#1b9c9e;">SSp:</span>
<span class="t" style="left:807.30px;top:429.02px;font-size:15.1px;color:#1b9c9e;">ST:</span>
<span class="t" style="left:807.30px;top:446.37px;font-size:15.1px;color:#1b9c9e;">SE: 80428 IM: 1</span>
<span class="t" style="right:39.00px;top:388.52px;font-size:15.1px;color:#1b9c9e;">W=256 L=128</span>
<span class="t" style="right:39.00px;top:406.15px;font-size:17.9px;color:#1b9c9e;">FOV: 326.0</span>
<span class="t" style="right:39.00px;top:426.15px;font-size:17.9px;color:#1b9c9e;">C: </span>
<span class="t" style="right:39.00px;top:446.32px;font-size:15.1px;color:#1b9c9e;">Mag = 2.56</span>
<span class="t" style="left:807.30px;top:482.89px;font-size:14.9px;color:#f4f400;">Image compressed 7.5:1</span>
<span class="t" style="left:807.30px;top:500.55px;font-size:17.9px;color:#1b9c9e;">Study Date: 5/2/2016</span>
<span class="t" style="left:807.30px;top:520.79px;font-size:17.85px;color:#1b9c9e;">CT CHEST ANGIO W/WO CONTRAST</span>
<span class="t" style="right:39.00px;top:482.72px;font-size:15.1px;color:#f4f400;">Image is partially visible</span>
<span class="t" style="right:39.00px;top:500.55px;font-size:17.9px;color:#27d3d6;">DOB: 1/1/1980</span>
<span class="t" style="right:39.00px;top:520.75px;font-size:17.9px;color:#27d3d6;">M</span>
<span class="t" style="left:807.30px;top:654.83px;font-size:14.5px;color:#27d3d6;">R</span>
<span class="t" style="right:39.00px;top:654.83px;font-size:14.5px;color:#27d3d6;">L</span>
<span class="t" style="left:1179.30px;top:483.43px;font-size:14.5px;color:#27d3d6;">S</span>
<div class="a" style="left:1183.30px;top:827.60px;width:1.40px;height:9.40px;background:#27d3d6"></div>
<span class="t" style="left:807.30px;top:774.52px;font-size:15.1px;color:#1b9c9e;">SL: 114.0 mm</span>
<span class="t" style="left:807.30px;top:791.62px;font-size:15.1px;color:#1b9c9e;">SSp:</span>
<span class="t" style="left:807.30px;top:808.72px;font-size:15.1px;color:#1b9c9e;">ST: 10.0 mm</span>
<span class="t" style="left:807.30px;top:825.82px;font-size:15.1px;color:#1b9c9e;">SE: 80480 IM: 58</span>
<span class="t" style="right:39.00px;top:768.72px;font-size:15.1px;color:#1b9c9e;">W=1088 L=196</span>
<span class="t" style="right:39.00px;top:786.35px;font-size:17.9px;color:#1b9c9e;">FOV: 326.0</span>
<span class="t" style="right:39.00px;top:806.35px;font-size:17.9px;color:#1b9c9e;">C: </span>
<span class="t" style="right:39.00px;top:826.72px;font-size:15.1px;color:#1b9c9e;">Mag = 2.13</span>
<div class="a" style="left:803.80px;top:840.00px;width:760.00px;height:12.00px;background:#555"></div>
<div class="a" style="left:1562.40px;top:27.00px;width:1.00px;height:813.00px;background:#5a5a5a"></div>
</body></html>
